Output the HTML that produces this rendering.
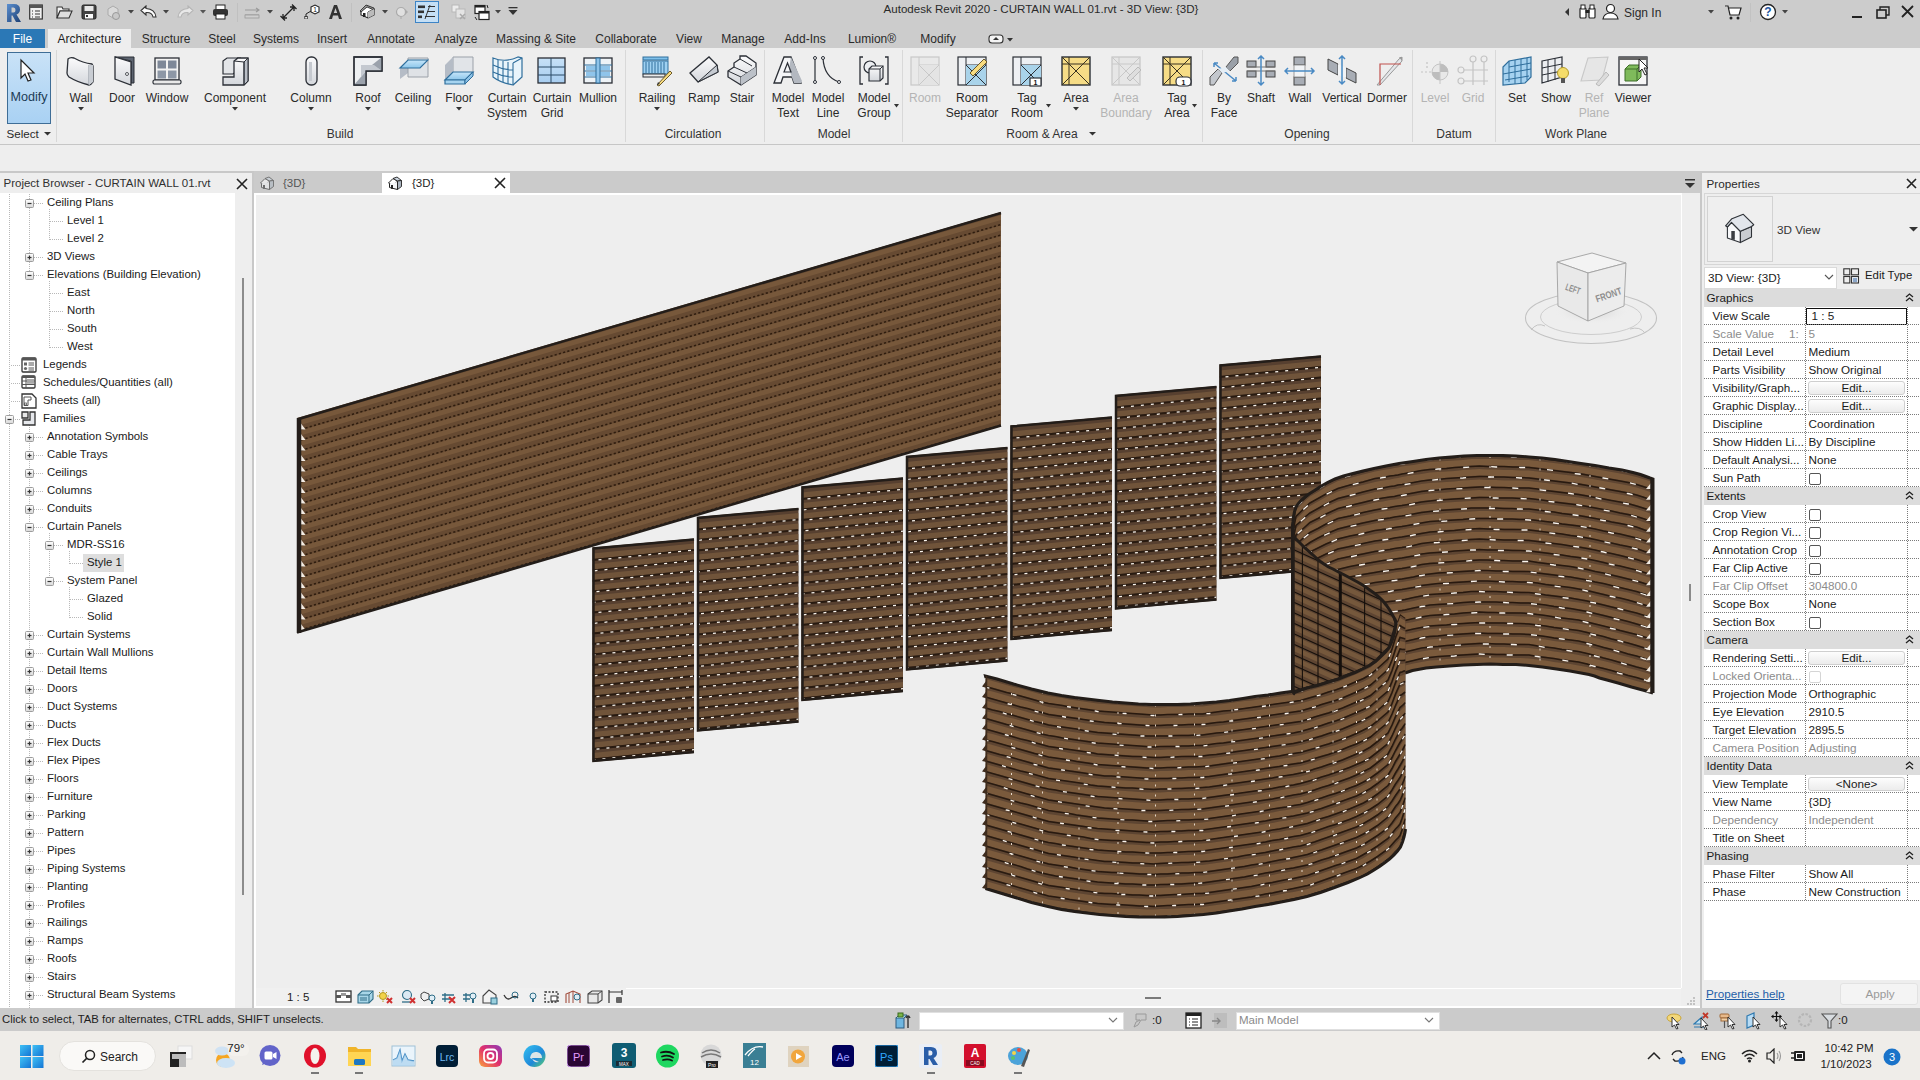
<!DOCTYPE html>
<html><head><meta charset="utf-8"><style>
*{margin:0;padding:0;box-sizing:border-box}
html,body{width:1920px;height:1080px;overflow:hidden;background:#eeeeee;font-family:"Liberation Sans",sans-serif;font-size:12px;color:#1e1e1e}
.a{position:absolute;display:block}
.t{position:absolute;white-space:nowrap}
</style></head><body>
<div class="a" style="left:0px;top:0px;width:1920px;height:28px;background:#cccccc;"></div>
<svg class="a" style="left:4px;top:2px;" width="18" height="20" viewBox="0 0 18 20"><defs><linearGradient id="rg" x1="0" y1="0" x2="1" y2="1"><stop offset="0" stop-color="#5b8fd0"/><stop offset="1" stop-color="#1d3f73"/></linearGradient></defs><path d="M3,2 L10,2 Q16,2 16,7.5 Q16,11 12.5,12.5 L17,20 L12,20 L8.5,13.5 L7.5,13.5 L7.5,20 L3,20 Z M7.5,5.5 L7.5,10.5 L9.5,10.5 Q11.5,10.5 11.5,8 Q11.5,5.5 9.5,5.5Z" fill="url(#rg)"/></svg>
<svg class="a" style="left:29px;top:4px;" width="14" height="16" viewBox="0 0 14 16"><rect x="0.7" y="1" width="12.6" height="14" fill="#f0f0f0" stroke="#333" stroke-width="1.2"/><rect x="0.7" y="1" width="12.6" height="3" fill="#555"/><path d="M3,7 L4,7 M6,7 L11,7 M3,10 L4,10 M6,10 L11,10 M3,13 L4,13 M6,13 L11,13" stroke="#333" stroke-width="1.2"/></svg>
<svg class="a" style="left:56px;top:5px;" width="17" height="14" viewBox="0 0 17 14"><path d="M1,2 L6,2 L7,4 L13,4 L13,6 L4,6 L1,13Z" fill="#f4f4f4" stroke="#333" stroke-width="1.1"/><path d="M1,13 L4,6 L16,6 L13,13Z" fill="#dedede" stroke="#333" stroke-width="1.1"/></svg>
<svg class="a" style="left:81px;top:4px;" width="16" height="16" viewBox="0 0 16 16"><rect x="1" y="1" width="14" height="14" rx="1.5" fill="#444" stroke="#222"/><rect x="3.5" y="2" width="9" height="5" fill="#e8e8e8"/><rect x="4" y="10" width="8" height="4.5" fill="#fafafa"/><rect x="5" y="11" width="2" height="2" fill="#333"/></svg>
<svg class="a" style="left:105px;top:4px;" width="16" height="16" viewBox="0 0 16 16"><path d="M3,5 L8,2 L13,5 L13,11 L8,14 L3,11Z" fill="#dadada" stroke="#aaa"/><circle cx="11" cy="12" r="3.5" fill="#c8c8c8" stroke="#999"/></svg>
<svg class="a" style="left:127.5px;top:10px;" width="6" height="4" viewBox="0 0 6 4"><path d="M0,0 L6,0 L3.0,3.5Z" fill="#444"/></svg>
<svg class="a" style="left:140px;top:5px;" width="17" height="13" viewBox="0 0 17 13"><path d="M6,1 L1,5.5 L6,10 L6,7.5 Q12,7 13,12 L16,12 Q15,4 6,3.5Z" fill="#fbfbfb" stroke="#333" stroke-width="1.1"/></svg>
<svg class="a" style="left:163.0px;top:10px;" width="6" height="4" viewBox="0 0 6 4"><path d="M0,0 L6,0 L3.0,3.5Z" fill="#444"/></svg>
<svg class="a" style="left:177px;top:5px;" width="17" height="13" viewBox="0 0 17 13"><path d="M11,1 L16,5.5 L11,10 L11,7.5 Q5,7 4,12 L1,12 Q2,4 11,3.5Z" fill="#e8e8e8" stroke="#b5b5b5" stroke-width="1.1"/></svg>
<svg class="a" style="left:199.5px;top:10px;" width="6" height="4" viewBox="0 0 6 4"><path d="M0,0 L6,0 L3.0,3.5Z" fill="#555"/></svg>
<svg class="a" style="left:212px;top:4px;" width="17" height="16" viewBox="0 0 17 16"><rect x="4" y="1" width="9" height="5" fill="#fff" stroke="#222"/><rect x="1" y="5" width="15" height="7" rx="2" fill="#333"/><rect x="4" y="10" width="9" height="5" fill="#fff" stroke="#222"/></svg>
<div class="a" style="left:237px;top:3px;width:1px;height:19px;background:#c0c0c0;"></div>
<svg class="a" style="left:244px;top:7px;" width="16" height="12" viewBox="0 0 16 12"><path d="M1,3 L15,3 M12,1 L15,3 L12,5 M1,8 L15,8" stroke="#9a9a9a" stroke-width="1.2" fill="none"/><rect x="1" y="8" width="14" height="3" fill="#cfcfcf" stroke="#9a9a9a" stroke-width="0.8"/></svg>
<svg class="a" style="left:266.5px;top:10px;" width="6" height="4" viewBox="0 0 6 4"><path d="M0,0 L6,0 L3.0,3.5Z" fill="#444"/></svg>
<svg class="a" style="left:280px;top:4px;" width="17" height="17" viewBox="0 0 17 17"><path d="M3,14 L14,3 M3,14 L3,10 M3,14 L7,14 M14,3 L10,3 M14,3 L14,7 M0.5,12 L5,16.5 M12,0.5 L16.5,5" stroke="#222" stroke-width="1.3" fill="none"/></svg>
<svg class="a" style="left:304px;top:4px;" width="16" height="15" viewBox="0 0 16 15"><path d="M7,3 L11,1 L15,3 L15,8 L11,10 L7,8Z" fill="#fff" stroke="#222" stroke-width="1.1"/><text x="11" y="8.3" font-size="6.5" text-anchor="middle" font-family="Liberation Sans" fill="#111">1</text><path d="M7,7 L2,10 L2,13" stroke="#222" fill="none"/><rect x="0.8" y="12.5" width="2.5" height="2.5" fill="#fff" stroke="#222" stroke-width="0.8"/></svg>
<svg class="a" style="left:328px;top:4px;" width="15" height="16" viewBox="0 0 15 16"><path d="M1,15 L6,1 L9,1 L14,15 L11,15 L10,11.5 L5,11.5 L4,15Z M5.8,9 L9.2,9 L7.5,4Z" fill="#333"/></svg>
<div class="a" style="left:351px;top:3px;width:1px;height:19px;background:#c0c0c0;"></div>
<svg class="a" style="left:359px;top:4px;" width="16" height="15" viewBox="0 0 16 15"><path d="M2,7 L8,2 L15,5 L15,11 L9,14 L2,11Z" fill="#fff" stroke="#222" stroke-width="1.1"/><path d="M1,7 L7,1 L15,4 L15,6 L8,3 L2,8Z" fill="#999" stroke="#222" stroke-width="0.8"/><rect x="4" y="9" width="2.5" height="4" fill="#222"/><path d="M9,14 L9,8 L15,5" stroke="#222" fill="none"/><path d="M9,8 L15,5 L15,11 L9,14Z" fill="#bbb"/></svg>
<svg class="a" style="left:382.0px;top:10px;" width="6" height="4" viewBox="0 0 6 4"><path d="M0,0 L6,0 L3.0,3.5Z" fill="#444"/></svg>
<svg class="a" style="left:395px;top:5px;" width="14" height="14" viewBox="0 0 14 14"><circle cx="6" cy="7" r="4.5" fill="#e0e0e0" stroke="#aaa" stroke-width="1.2"/><path d="M10,4 L13,7 L10,10Z" fill="#aaa"/><path d="M6,11.5 L6,14" stroke="#aaa"/></svg>
<div class="a" style="left:415px;top:1px;width:24px;height:22px;background:#c5dff5;border:1px solid #3d84c6"></div>
<svg class="a" style="left:417px;top:4px;" width="20" height="16" viewBox="0 0 20 16"><rect x="1" y="1.5" width="7" height="2.6" fill="#333"/><rect x="1" y="6.5" width="6" height="2.6" fill="#333"/><rect x="1" y="11.5" width="4" height="2.6" fill="#333"/><path d="M8,15 L13,1 M11,2.5 L18,2.5 M10,7.5 L18,7.5 M8,12.5 L18,12.5" stroke="#333" stroke-width="1"/></svg>
<svg class="a" style="left:451px;top:4px;" width="16" height="16" viewBox="0 0 16 16"><rect x="1" y="1" width="7" height="7" fill="#ececec" stroke="#b8b8b8"/><rect x="5" y="5" width="9" height="9" fill="#e4e4e4" stroke="#b8b8b8"/><path d="M9,10 L14,15 M14,10 L9,15" stroke="#aaa" stroke-width="1.5"/></svg>
<svg class="a" style="left:474px;top:4px;" width="17" height="17" viewBox="0 0 17 17"><rect x="1" y="1.5" width="10" height="8" fill="#fff" stroke="#222" stroke-width="1.2"/><rect x="1" y="1.5" width="10" height="2" fill="#222"/><rect x="5" y="7.5" width="10" height="8" fill="#fff" stroke="#222" stroke-width="1.2"/><rect x="5" y="7.5" width="10" height="2" fill="#222"/><path d="M13,1 L14,4 M1,13 L3,16" stroke="#222"/></svg>
<svg class="a" style="left:495.0px;top:10px;" width="6" height="4" viewBox="0 0 6 4"><path d="M0,0 L6,0 L3.0,3.5Z" fill="#444"/></svg>
<svg class="a" style="left:508px;top:6px;" width="10" height="10" viewBox="0 0 10 10"><rect x="0.5" y="1" width="9" height="1.3" fill="#333"/><path d="M0.5,4 L9.5,4 L5,9Z" fill="#333"/></svg>
<div class="t" style="left:841.0px;width:400px;text-align:center;top:4.2px;font-size:11.55px;line-height:11.55px;color:#2a2a2a;">Autodesk Revit 2020 - CURTAIN WALL 01.rvt - 3D View: {3D}</div>
<svg class="a" style="left:1564px;top:7px;" width="6" height="10" viewBox="0 0 6 10"><path d="M5,1 L1,5 L5,9Z" fill="#333"/></svg>
<svg class="a" style="left:1579px;top:4px;" width="17" height="15" viewBox="0 0 17 15"><rect x="1" y="4" width="6" height="10" rx="1" fill="#fff" stroke="#222" stroke-width="1.2"/><rect x="10" y="4" width="6" height="10" rx="1" fill="#fff" stroke="#222" stroke-width="1.2"/><rect x="2" y="1" width="4" height="4" fill="#fff" stroke="#222"/><rect x="11" y="1" width="4" height="4" fill="#fff" stroke="#222"/><rect x="6.5" y="6" width="4" height="3" fill="#222"/></svg>
<svg class="a" style="left:1602px;top:3px;" width="17" height="17" viewBox="0 0 17 17"><circle cx="8.5" cy="5.5" r="4" fill="#fff" stroke="#222" stroke-width="1.2"/><path d="M1,16 Q2,10 8.5,10 Q15,10 16,16Z" fill="#fff" stroke="#222" stroke-width="1.2"/></svg>
<div class="t" style="left:1624.0px;top:6.8px;font-size:12.00px;line-height:12.00px;color:#2a2a2a;">Sign In</div>
<svg class="a" style="left:1708px;top:10px;" width="6" height="4" viewBox="0 0 6 4"><path d="M0,0 L6,0 L3,3.5Z" fill="#444"/></svg>
<svg class="a" style="left:1724px;top:4px;" width="18" height="16" viewBox="0 0 18 16"><path d="M1,2 L4,2 L6,11 L15,11 L17,4 L5,4" fill="#fff" stroke="#222" stroke-width="1.2"/><circle cx="7" cy="14" r="1.5" fill="#222"/><circle cx="14" cy="14" r="1.5" fill="#222"/></svg>
<div class="a" style="left:1750px;top:3px;width:1px;height:19px;background:#c2c2c2;"></div>
<svg class="a" style="left:1759px;top:3px;" width="18" height="18" viewBox="0 0 18 18"><circle cx="9" cy="9" r="7.5" fill="#fff" stroke="#222" stroke-width="1.3"/><text x="9" y="13.3" font-size="12" font-weight="bold" font-family="Liberation Sans" text-anchor="middle" fill="#1e56a0">?</text></svg>
<svg class="a" style="left:1782px;top:10px;" width="6" height="4" viewBox="0 0 6 4"><path d="M0,0 L6,0 L3,3.5Z" fill="#444"/></svg>
<div class="a" style="left:1852px;top:16px;width:10px;height:2px;background:#222;"></div>
<svg class="a" style="left:1876px;top:6px;" width="14" height="13" viewBox="0 0 14 13"><rect x="1" y="4" width="9" height="8" fill="none" stroke="#222" stroke-width="1.6"/><path d="M4,4 L4,1 L13,1 L13,9 L10,9" fill="none" stroke="#222" stroke-width="1.4"/></svg>
<svg class="a" style="left:1901px;top:5px;" width="13" height="13" viewBox="0 0 13 13"><path d="M1,1 L12,12 M12,1 L1,12" stroke="#222" stroke-width="1.8"/></svg>
<div class="a" style="left:0px;top:28px;width:1920px;height:20px;background:#cccccc;"></div>
<div class="a" style="left:0px;top:29px;width:45px;height:20px;background:#2b78b6;"></div>
<div class="t" style="left:-177.5px;width:400px;text-align:center;top:32.8px;font-size:12.00px;line-height:12.00px;color:#ffffff;">File</div>
<div class="a" style="left:48px;top:29px;width:83px;height:20px;background:#eeeeee;"></div>
<div class="t" style="left:-110.5px;width:400px;text-align:center;top:32.8px;font-size:12.00px;line-height:12.00px;color:#1e1e1e;">Architecture</div>
<div class="t" style="left:-34.0px;width:400px;text-align:center;top:32.8px;font-size:12.00px;line-height:12.00px;color:#2a2a2a;">Structure</div>
<div class="t" style="left:22.0px;width:400px;text-align:center;top:32.8px;font-size:12.00px;line-height:12.00px;color:#2a2a2a;">Steel</div>
<div class="t" style="left:76.0px;width:400px;text-align:center;top:32.8px;font-size:12.00px;line-height:12.00px;color:#2a2a2a;">Systems</div>
<div class="t" style="left:132.0px;width:400px;text-align:center;top:32.8px;font-size:12.00px;line-height:12.00px;color:#2a2a2a;">Insert</div>
<div class="t" style="left:191.0px;width:400px;text-align:center;top:32.8px;font-size:12.00px;line-height:12.00px;color:#2a2a2a;">Annotate</div>
<div class="t" style="left:256.0px;width:400px;text-align:center;top:32.8px;font-size:12.00px;line-height:12.00px;color:#2a2a2a;">Analyze</div>
<div class="t" style="left:336.0px;width:400px;text-align:center;top:32.8px;font-size:12.00px;line-height:12.00px;color:#2a2a2a;">Massing &amp; Site</div>
<div class="t" style="left:426.0px;width:400px;text-align:center;top:32.8px;font-size:12.00px;line-height:12.00px;color:#2a2a2a;">Collaborate</div>
<div class="t" style="left:489.0px;width:400px;text-align:center;top:32.8px;font-size:12.00px;line-height:12.00px;color:#2a2a2a;">View</div>
<div class="t" style="left:543.0px;width:400px;text-align:center;top:32.8px;font-size:12.00px;line-height:12.00px;color:#2a2a2a;">Manage</div>
<div class="t" style="left:605.0px;width:400px;text-align:center;top:32.8px;font-size:12.00px;line-height:12.00px;color:#2a2a2a;">Add-Ins</div>
<div class="t" style="left:672.0px;width:400px;text-align:center;top:32.8px;font-size:12.00px;line-height:12.00px;color:#2a2a2a;">Lumion®</div>
<div class="t" style="left:738.0px;width:400px;text-align:center;top:32.8px;font-size:12.00px;line-height:12.00px;color:#2a2a2a;">Modify</div>
<svg class="a" style="left:988px;top:34px;" width="16" height="10" viewBox="0 0 16 10"><rect x="1" y="1" width="14" height="8" rx="3" fill="#f4f4f4" stroke="#333" stroke-width="1.1"/><path d="M5,6 L8,3 L11,6Z" fill="#333"/></svg>
<svg class="a" style="left:1007px;top:38px;" width="6" height="4" viewBox="0 0 6 4"><path d="M0,0 L6,0 L3,3.5Z" fill="#333"/></svg>
<div class="a" style="left:0px;top:48px;width:1920px;height:96px;background:#eeeeee;"></div>
<div class="a" style="left:0px;top:144px;width:1920px;height:1px;background:#c6c6c6;"></div>
<svg class="a" style="left:0px;top:0px;" width="1" height="1" viewBox="0 0 1 1"><defs><linearGradient id="gw" x1="0" y1="0" x2="0" y2="1"><stop offset="0" stop-color="#fbfbfc"/><stop offset="1" stop-color="#d4d7dc"/></linearGradient><linearGradient id="gb" x1="0" y1="0" x2="0" y2="1"><stop offset="0" stop-color="#c7e6fa"/><stop offset="1" stop-color="#8cc6ea"/></linearGradient><linearGradient id="gm" x1="0" y1="0" x2="0" y2="1"><stop offset="0" stop-color="#c7e1f7"/><stop offset="1" stop-color="#a7cdf0"/></linearGradient></defs></svg>
<div class="a" style="left:7px;top:52px;width:44px;height:72px;background:linear-gradient(#c9e2f7,#a9d1f3);border:1px solid #3e6d96"></div>
<svg class="a" style="left:17px;top:58px;" width="20" height="26" viewBox="0 0 20 26"><path d="M4,2 L4,20 L8,16 L11,23 L14,22 L11,15 L17,15 Z" fill="#fff" stroke="#222" stroke-width="1.2"/></svg>
<div class="t" style="left:-171.0px;width:400px;text-align:center;top:91.3px;font-size:12.60px;line-height:12.60px;color:#1d3b56;">Modify</div>
<div class="t" style="left:6.5px;top:128.2px;font-size:11.60px;line-height:11.60px;color:#2a2a2a;">Select</div>
<svg class="a" style="left:43.5px;top:132px;" width="7" height="4" viewBox="0 0 7 4"><path d="M0,0 L7,0 L3.5,3.5Z" fill="#333"/></svg>
<svg class="a" style="left:65px;top:55px;" width="32" height="32" viewBox="0 0 32 32"><path d="M3,4 Q5,2 9,3 Q18,8 27,9 L28,11 L28,27 Q26,30 24,30 Q12,27 4,22 Q2,20 2,18 Z" fill="url(#gw)" stroke="#2b2f36" stroke-width="1.3"/><path d="M24,10 L24,30" stroke="#9aa0a8" stroke-width="1.2"/><path d="M24,10 L28,10 L28,27 L24,30Z" fill="#c9cdd3"/></svg>
<div class="t" style="left:-119.0px;width:400px;text-align:center;top:91.8px;font-size:12.00px;line-height:12.00px;color:#2a2a2a;">Wall</div>
<svg class="a" style="left:78.0px;top:107px;" width="6" height="4" viewBox="0 0 6 4"><path d="M0,0 L6,0 L3.0,3.5Z" fill="#333"/></svg>
<svg class="a" style="left:106px;top:55px;" width="32" height="32" viewBox="0 0 32 32"><path d="M9,2 L28,2 L28,28 L25,28 L25,6 Z" fill="#5d6470" stroke="#2b2f36" stroke-width="1"/><path d="M9,2 L25,7 L25,30 L9,24 Z" fill="url(#gw)" stroke="#2b2f36" stroke-width="1.3"/><circle cx="21" cy="19" r="1.5" fill="#fff" stroke="#2b2f36" stroke-width="0.8"/></svg>
<div class="t" style="left:-78.0px;width:400px;text-align:center;top:91.8px;font-size:12.00px;line-height:12.00px;color:#2a2a2a;">Door</div>
<svg class="a" style="left:151px;top:55px;" width="32" height="32" viewBox="0 0 32 32"><rect x="4" y="3" width="24" height="22" fill="#f2f2f2" stroke="#2b2f36" stroke-width="1.3"/><rect x="6.5" y="5.5" width="8.5" height="8" fill="#7e8898"/><rect x="17" y="5.5" width="8.5" height="8" fill="#7e8898"/><rect x="6.5" y="15.5" width="8.5" height="8" fill="#8d97a6"/><rect x="17" y="15.5" width="8.5" height="8" fill="#8d97a6"/><rect x="2" y="25" width="28" height="4" rx="1.5" fill="#e9e9e9" stroke="#2b2f36" stroke-width="1.2"/></svg>
<div class="t" style="left:-33.0px;width:400px;text-align:center;top:91.8px;font-size:12.00px;line-height:12.00px;color:#2a2a2a;">Window</div>
<svg class="a" style="left:219px;top:55px;" width="32" height="32" viewBox="0 0 32 32"><path d="M4,6 L8,3 L18,3 L18,16 L14,19 L4,19 Z" fill="#e3e5e8" stroke="#2b2f36" stroke-width="1.2"/><path d="M14,19 L18,16 L18,3 L22,3 L22,6 L18,9" fill="none" stroke="#2b2f36" stroke-width="1"/><path d="M4,22 L15,22 L15,6 L19,3 L29,3 L29,26 L25,30 L4,30 Z" fill="url(#gw)" stroke="#2b2f36" stroke-width="1.3"/><path d="M25,7 L29,3 L29,26 L25,30Z" fill="#b9bec6" stroke="#2b2f36" stroke-width="1"/><path d="M15,6 L25,7 L25,30" fill="none" stroke="#2b2f36" stroke-width="1"/></svg>
<div class="t" style="left:35.0px;width:400px;text-align:center;top:91.8px;font-size:12.00px;line-height:12.00px;color:#2a2a2a;">Component</div>
<svg class="a" style="left:232.0px;top:107px;" width="6" height="4" viewBox="0 0 6 4"><path d="M0,0 L6,0 L3.0,3.5Z" fill="#333"/></svg>
<svg class="a" style="left:295px;top:55px;" width="32" height="32" viewBox="0 0 32 32"><rect x="11" y="2" width="11" height="28" rx="5" fill="url(#gw)" stroke="#2b2f36" stroke-width="1.3"/><rect x="14" y="7" width="3" height="19" fill="#c5c9cf"/></svg>
<div class="t" style="left:111.0px;width:400px;text-align:center;top:91.8px;font-size:12.00px;line-height:12.00px;color:#2a2a2a;">Column</div>
<svg class="a" style="left:308.0px;top:107px;" width="6" height="4" viewBox="0 0 6 4"><path d="M0,0 L6,0 L3.0,3.5Z" fill="#333"/></svg>
<svg class="a" style="left:352px;top:55px;" width="32" height="32" viewBox="0 0 32 32"><path d="M2,2 L30,2 L30,16 L14,16 L14,30 L2,30 Z" fill="#eef0f2" stroke="#2b2f36" stroke-width="1.3"/><path d="M2,30 L14,16 L14,30Z" fill="#9ba2ac"/><path d="M30,2 L30,16 L20,10Z" fill="#9ba2ac"/><path d="M14,16 L30,16 L22,10 L9,10 L9,22Z" fill="#c4c9d0"/><path d="M2,2 L30,2 L30,16 L14,16 L14,30 L2,30 Z" fill="none" stroke="#2b2f36" stroke-width="1.3"/></svg>
<div class="t" style="left:168.0px;width:400px;text-align:center;top:91.8px;font-size:12.00px;line-height:12.00px;color:#2a2a2a;">Roof</div>
<svg class="a" style="left:365.0px;top:107px;" width="6" height="4" viewBox="0 0 6 4"><path d="M0,0 L6,0 L3.0,3.5Z" fill="#333"/></svg>
<svg class="a" style="left:397px;top:55px;" width="32" height="32" viewBox="0 0 32 32"><path d="M3,24 L3,13 L11,6 L11,18 Z" fill="#b5bcc6"/><path d="M11,3 L31,3 L31,22 L11,22 Z" fill="#dfe2e6" stroke="#9ba1a9" stroke-width="1"/><path d="M3,13 L11,5 L31,5 L23,13 Z" fill="url(#gb)" stroke="#2f6e9c" stroke-width="1.2"/></svg>
<div class="t" style="left:213.0px;width:400px;text-align:center;top:91.8px;font-size:12.00px;line-height:12.00px;color:#2a2a2a;">Ceiling</div>
<svg class="a" style="left:443px;top:55px;" width="32" height="32" viewBox="0 0 32 32"><path d="M10,2 L30,2 L30,20 L10,20 Z" fill="#e1e4e8" stroke="#9ba1a9" stroke-width="1"/><path d="M2,10 L10,2 L10,20 L2,28Z" fill="#b5bcc6"/><path d="M2,25 L10,17 L30,17 L22,25 Z" fill="url(#gb)" stroke="#2f6e9c" stroke-width="1.2"/><path d="M2,25 L22,25 L22,29 L2,29Z" fill="#a6d4f0" stroke="#2f6e9c" stroke-width="1.2"/><path d="M22,25 L30,17 L30,21 L22,29Z" fill="#8cc2e6" stroke="#2f6e9c" stroke-width="1"/></svg>
<div class="t" style="left:259.0px;width:400px;text-align:center;top:91.8px;font-size:12.00px;line-height:12.00px;color:#2a2a2a;">Floor</div>
<svg class="a" style="left:456.0px;top:107px;" width="6" height="4" viewBox="0 0 6 4"><path d="M0,0 L6,0 L3.0,3.5Z" fill="#333"/></svg>
<svg class="a" style="left:491px;top:55px;" width="32" height="32" viewBox="0 0 32 32"><path d="M2,3 Q14,8 27,2 L31,3 L31,22 L22,30 Q10,28 2,22 Z" fill="#e8f4fb" stroke="#2f6e9c" stroke-width="1.2"/><path d="M22,8 L22,30 M31,3 L22,8 M2,10 Q12,15 22,15 M2,17 Q12,22 22,22 M7,5 L7,25 M12,6 L12,27 M17,7 L17,29" stroke="#2f6e9c" stroke-width="1.1" fill="none"/></svg>
<div class="t" style="left:307.0px;width:400px;text-align:center;top:91.8px;font-size:12.00px;line-height:12.00px;color:#2a2a2a;">Curtain</div>
<div class="t" style="left:307.0px;width:400px;text-align:center;top:106.8px;font-size:12.00px;line-height:12.00px;color:#2a2a2a;">System</div>
<svg class="a" style="left:536px;top:55px;" width="32" height="32" viewBox="0 0 32 32"><rect x="2" y="3" width="27" height="25" fill="url(#gm)" stroke="#2b2f36" stroke-width="1.3"/><path d="M15,3 L15,28 M2,12 L29,12 M2,20 L29,20" stroke="#2b4b66" stroke-width="1"/></svg>
<div class="t" style="left:352.0px;width:400px;text-align:center;top:91.8px;font-size:12.00px;line-height:12.00px;color:#2a2a2a;">Curtain</div>
<div class="t" style="left:352.0px;width:400px;text-align:center;top:106.8px;font-size:12.00px;line-height:12.00px;color:#2a2a2a;">Grid</div>
<svg class="a" style="left:582px;top:55px;" width="32" height="32" viewBox="0 0 32 32"><rect x="2" y="3" width="28" height="25" fill="#eef3f7" stroke="#2b2f36" stroke-width="1.3"/><path d="M2,10 L30,10 M2,16 L30,16 M2,22 L30,22" stroke="#2f6e9c" stroke-width="1.1"/><rect x="4" y="11" width="24" height="4" fill="#8fc4ea"/><rect x="4" y="17" width="24" height="4" fill="#8fc4ea"/><rect x="14" y="3" width="4" height="25" fill="#8fc4ea" stroke="#2f6e9c" stroke-width="1"/></svg>
<div class="t" style="left:398.0px;width:400px;text-align:center;top:91.8px;font-size:12.00px;line-height:12.00px;color:#2a2a2a;">Mullion</div>
<svg class="a" style="left:641px;top:55px;" width="32" height="32" viewBox="0 0 32 32"><rect x="2" y="2" width="25" height="3" fill="#7fc0ea" stroke="#2f6e9c" stroke-width="1"/><rect x="2" y="6" width="25" height="13" fill="#9fd1f2" stroke="#2f6e9c" stroke-width="1"/><path d="M5,7 L5,18 M8,7 L8,18 M11,7 L11,18 M14,7 L14,18 M17,7 L17,18 M20,7 L20,18 M23,7 L23,18" stroke="#2f6e9c" stroke-width="1"/><rect x="2" y="19" width="22" height="3" fill="#eaeaea" stroke="#2b2f36" stroke-width="1"/><path d="M16,30 L29,16 L31,18 L18,31 Z" fill="#f7db80" stroke="#6b5a2a" stroke-width="1"/><path d="M16,30 L17,27 L19,29Z" fill="#333"/></svg>
<div class="t" style="left:457.0px;width:400px;text-align:center;top:91.8px;font-size:12.00px;line-height:12.00px;color:#2a2a2a;">Railing</div>
<svg class="a" style="left:654.0px;top:107px;" width="6" height="4" viewBox="0 0 6 4"><path d="M0,0 L6,0 L3.0,3.5Z" fill="#333"/></svg>
<svg class="a" style="left:688px;top:55px;" width="32" height="32" viewBox="0 0 32 32"><path d="M2,18 L21,2 L29,10 L30,17 L10,27 Z" fill="url(#gw)" stroke="#2b2f36" stroke-width="1.3"/><path d="M10,27 L30,17 L29,10 Z" fill="#c5cad1" stroke="#2b2f36" stroke-width="1"/></svg>
<div class="t" style="left:504.0px;width:400px;text-align:center;top:91.8px;font-size:12.00px;line-height:12.00px;color:#2a2a2a;">Ramp</div>
<svg class="a" style="left:726px;top:55px;" width="32" height="32" viewBox="0 0 32 32"><path d="M2,16 L8,12 L8,8 L14,4 L14,1 L20,1 L30,8 L30,20 L15,30 L2,22 Z" fill="url(#gw)" stroke="#2b2f36" stroke-width="1.3"/><path d="M2,16 L15,22 L15,30 M8,12 L21,18 M14,4 L26,11 M15,22 L30,12" stroke="#2b2f36" stroke-width="1" fill="none"/><path d="M15,22 L30,12 L30,20 L15,30Z" fill="#bcc1c8"/></svg>
<div class="t" style="left:542.0px;width:400px;text-align:center;top:91.8px;font-size:12.00px;line-height:12.00px;color:#2a2a2a;">Stair</div>
<svg class="a" style="left:772px;top:55px;" width="32" height="32" viewBox="0 0 32 32"><path d="M2,28 L12,2 L19,2 L29,28 L22,28 L20,22 L11,22 L9,28 Z" fill="#f4f5f7" stroke="#2b2f36" stroke-width="1.3"/><path d="M19,2 L30,26 L29,28 L22,28 L17,14Z" fill="#b3b8c0"/><path d="M12,17 L15.5,8 L19,17Z" fill="none" stroke="#2b2f36" stroke-width="1.2"/></svg>
<div class="t" style="left:588.0px;width:400px;text-align:center;top:91.8px;font-size:12.00px;line-height:12.00px;color:#2a2a2a;">Model</div>
<div class="t" style="left:588.0px;width:400px;text-align:center;top:106.8px;font-size:12.00px;line-height:12.00px;color:#2a2a2a;">Text</div>
<svg class="a" style="left:812px;top:55px;" width="32" height="32" viewBox="0 0 32 32"><path d="M3,3 L3,27" stroke="#2b2f36" stroke-width="1.2"/><circle cx="3" cy="3" r="1.5" fill="#fff" stroke="#2b2f36"/><circle cx="3" cy="27" r="1.5" fill="#fff" stroke="#2b2f36"/><path d="M11,3 Q12,22 27,27" fill="none" stroke="#2b2f36" stroke-width="1.2"/><circle cx="11" cy="3" r="1.5" fill="#fff" stroke="#2b2f36"/><circle cx="27" cy="27" r="1.5" fill="#fff" stroke="#2b2f36"/></svg>
<div class="t" style="left:628.0px;width:400px;text-align:center;top:91.8px;font-size:12.00px;line-height:12.00px;color:#2a2a2a;">Model</div>
<div class="t" style="left:628.0px;width:400px;text-align:center;top:106.8px;font-size:12.00px;line-height:12.00px;color:#2a2a2a;">Line</div>
<svg class="a" style="left:858px;top:55px;" width="32" height="32" viewBox="0 0 32 32"><path d="M5,2 L2,2 L2,29 L5,29 M27,2 L30,2 L30,29 L27,29" fill="none" stroke="#2b2f36" stroke-width="1.3"/><circle cx="12" cy="12" r="6" fill="#eceef1" stroke="#2b2f36" stroke-width="1.2"/><path d="M11,14 L14,11 L25,11 L25,23 L22,26 L11,26Z" fill="url(#gw)" stroke="#2b2f36" stroke-width="1.2"/><path d="M22,14 L25,11 M11,14 L22,14 L22,26" fill="none" stroke="#2b2f36" stroke-width="1"/></svg>
<div class="t" style="left:674.0px;width:400px;text-align:center;top:91.8px;font-size:12.00px;line-height:12.00px;color:#2a2a2a;">Model</div>
<div class="t" style="left:674.0px;width:400px;text-align:center;top:106.8px;font-size:12.00px;line-height:12.00px;color:#2a2a2a;">Group</div>
<svg class="a" style="left:909px;top:55px;" width="32" height="32" viewBox="0 0 32 32"><rect x="2" y="2" width="28" height="28" fill="#e9e9e9" stroke="#c8c8c8" stroke-width="1.2"/><path d="M10,2 L10,30 M10,10 L30,10" stroke="#c8c8c8" stroke-width="1"/><rect x="10" y="10" width="20" height="20" fill="#e4e4e4"/><path d="M10,10 L30,30 M30,10 L10,30" stroke="#c8c8c8" stroke-width="1"/></svg>
<div class="t" style="left:725.0px;width:400px;text-align:center;top:91.8px;font-size:12.00px;line-height:12.00px;color:#b4b4b4;">Room</div>
<svg class="a" style="left:956px;top:55px;" width="32" height="32" viewBox="0 0 32 32"><rect x="2" y="2" width="28" height="28" fill="#eef0f3" stroke="#2b2f36" stroke-width="1.2"/><path d="M10,2 L10,30 M10,10 L30,10" stroke="#2b2f36" stroke-width="1"/><rect x="10" y="10" width="20" height="20" fill="#a9d3ea"/><path d="M10,10 L30,30 M30,10 L10,30" stroke="#2b2f36" stroke-width="1"/><path d="M14,18 L28,4 L31,7 L17,21Z" fill="#f7db80" stroke="#6b5a2a" stroke-width="1"/></svg>
<div class="t" style="left:772.0px;width:400px;text-align:center;top:91.8px;font-size:12.00px;line-height:12.00px;color:#2a2a2a;">Room</div>
<div class="t" style="left:772.0px;width:400px;text-align:center;top:106.8px;font-size:12.00px;line-height:12.00px;color:#2a2a2a;">Separator</div>
<svg class="a" style="left:1011px;top:55px;" width="32" height="32" viewBox="0 0 32 32"><rect x="2" y="2" width="28" height="28" fill="#eef0f3" stroke="#2b2f36" stroke-width="1.2"/><path d="M10,2 L10,30 M10,10 L30,10" stroke="#2b2f36" stroke-width="1"/><rect x="10" y="10" width="20" height="20" fill="#a9d3ea"/><path d="M10,10 L30,30 M30,10 L10,30" stroke="#2b2f36" stroke-width="1"/><rect x="19" y="23" width="11" height="8" fill="#fff" stroke="#2b2f36" stroke-width="1.2"/><text x="24.5" y="30" font-size="7" font-family="Liberation Sans" text-anchor="middle" font-weight="bold" fill="#111">1</text></svg>
<div class="t" style="left:827.0px;width:400px;text-align:center;top:91.8px;font-size:12.00px;line-height:12.00px;color:#2a2a2a;">Tag</div>
<div class="t" style="left:827.0px;width:400px;text-align:center;top:106.8px;font-size:12.00px;line-height:12.00px;color:#2a2a2a;">Room</div>
<svg class="a" style="left:1060px;top:55px;" width="32" height="32" viewBox="0 0 32 32"><rect x="2" y="2" width="28" height="28" fill="#f6dc86" stroke="#2b2f36" stroke-width="1.4"/><path d="M2,2 L30,30 M30,2 L2,30 M9,2 L9,30 M2,9 L30,9" stroke="#3a3320" stroke-width="1"/></svg>
<div class="t" style="left:876.0px;width:400px;text-align:center;top:91.8px;font-size:12.00px;line-height:12.00px;color:#2a2a2a;">Area</div>
<svg class="a" style="left:1073.0px;top:107px;" width="6" height="4" viewBox="0 0 6 4"><path d="M0,0 L6,0 L3.0,3.5Z" fill="#333"/></svg>
<svg class="a" style="left:1110px;top:55px;" width="32" height="32" viewBox="0 0 32 32"><rect x="2" y="2" width="28" height="28" fill="#e6e6e6" stroke="#c5c5c5" stroke-width="1.2"/><path d="M2,2 L30,30 M30,2 L2,30 M9,2 L9,30 M2,9 L30,9" stroke="#c8c8c8" stroke-width="1"/><path d="M17,23 L28,12 L31,15 L20,26Z" fill="#dedede" stroke="#bbb"/></svg>
<div class="t" style="left:926.0px;width:400px;text-align:center;top:91.8px;font-size:12.00px;line-height:12.00px;color:#b4b4b4;">Area</div>
<div class="t" style="left:926.0px;width:400px;text-align:center;top:106.8px;font-size:12.00px;line-height:12.00px;color:#b4b4b4;">Boundary</div>
<svg class="a" style="left:1161px;top:55px;" width="32" height="32" viewBox="0 0 32 32"><rect x="2" y="2" width="28" height="28" fill="#f6dc86" stroke="#2b2f36" stroke-width="1.4"/><path d="M2,2 L30,30 M30,2 L2,30 M9,2 L9,30 M2,9 L30,9" stroke="#3a3320" stroke-width="1"/><rect x="15" y="22" width="15" height="9" rx="4" fill="#fff" stroke="#2b2f36" stroke-width="1.2"/><text x="22.5" y="29.5" font-size="7" font-family="Liberation Sans" text-anchor="middle" font-weight="bold" fill="#111">1</text></svg>
<div class="t" style="left:977.0px;width:400px;text-align:center;top:91.8px;font-size:12.00px;line-height:12.00px;color:#2a2a2a;">Tag</div>
<div class="t" style="left:977.0px;width:400px;text-align:center;top:106.8px;font-size:12.00px;line-height:12.00px;color:#2a2a2a;">Area</div>
<svg class="a" style="left:1208px;top:55px;" width="32" height="32" viewBox="0 0 32 32"><path d="M2,22 L10,14 L14,18 L6,30 L2,30Z" fill="#c3c7cd" stroke="#555" stroke-width="1"/><path d="M18,12 L26,2 L30,2 L30,8 L22,16Z" fill="#9aa0a8" stroke="#555" stroke-width="1"/><path d="M6,8 L28,26 M6,8 L6,12 M6,8 L10,8 M28,26 L24,26 M28,26 L28,22" stroke="#4a8ac4" stroke-width="1.5" fill="none"/><path d="M10,14 L18,12 L22,16 L14,18Z" fill="#e5eef6"/></svg>
<div class="t" style="left:1024.0px;width:400px;text-align:center;top:91.8px;font-size:12.00px;line-height:12.00px;color:#2a2a2a;">By</div>
<div class="t" style="left:1024.0px;width:400px;text-align:center;top:106.8px;font-size:12.00px;line-height:12.00px;color:#2a2a2a;">Face</div>
<svg class="a" style="left:1245px;top:55px;" width="32" height="32" viewBox="0 0 32 32"><rect x="2" y="6" width="9" height="6" fill="#a8adb5" stroke="#444"/><rect x="21" y="6" width="9" height="6" fill="#a8adb5" stroke="#444"/><rect x="2" y="16" width="9" height="6" fill="#a8adb5" stroke="#444"/><rect x="21" y="16" width="9" height="6" fill="#a8adb5" stroke="#444"/><path d="M2,12 L30,12 M2,16 L30,16" stroke="#777" stroke-width="1"/><path d="M16,1 L16,30 M13,4 L16,1 L19,4 M13,27 L16,30 L19,27" stroke="#4a8ac4" stroke-width="1.5" fill="none"/></svg>
<div class="t" style="left:1061.0px;width:400px;text-align:center;top:91.8px;font-size:12.00px;line-height:12.00px;color:#2a2a2a;">Shaft</div>
<svg class="a" style="left:1284px;top:55px;" width="32" height="32" viewBox="0 0 32 32"><rect x="10" y="2" width="11" height="8" fill="#a8adb5" stroke="#444"/><rect x="10" y="22" width="11" height="8" fill="#a8adb5" stroke="#444"/><rect x="10" y="10" width="11" height="12" fill="#f2f4f6" stroke="#888" stroke-width="0.8"/><path d="M1,16 L30,16 M4,13 L1,16 L4,19 M27,13 L30,16 L27,19" stroke="#4a8ac4" stroke-width="1.5" fill="none"/></svg>
<div class="t" style="left:1100.0px;width:400px;text-align:center;top:91.8px;font-size:12.00px;line-height:12.00px;color:#2a2a2a;">Wall</div>
<svg class="a" style="left:1326px;top:55px;" width="32" height="32" viewBox="0 0 32 32"><path d="M2,4 L12,9 L12,20 L2,15Z" fill="#a8adb5" stroke="#444"/><path d="M20,13 L30,18 L30,28 L20,23Z" fill="#a8adb5" stroke="#444"/><path d="M12,9 L20,13 L20,23 L12,20Z" fill="#f2f4f6"/><path d="M16,1 L16,29 M13,4 L16,1 L19,4 M13,26 L16,29 L19,26" stroke="#4a8ac4" stroke-width="1.5" fill="none"/></svg>
<div class="t" style="left:1142.0px;width:400px;text-align:center;top:91.8px;font-size:12.00px;line-height:12.00px;color:#2a2a2a;">Vertical</div>
<svg class="a" style="left:1371px;top:55px;" width="32" height="32" viewBox="0 0 32 32"><path d="M6,30 L28,4 L31,2 L31,6 L9,30Z" fill="#e4e6e9" stroke="#999" stroke-width="1"/><path d="M9,30 L9,9 L30,9" stroke="#c0504d" stroke-width="1.2" fill="none"/><path d="M28,2 L31,2 L31,6Z" fill="#999"/></svg>
<div class="t" style="left:1187.0px;width:400px;text-align:center;top:91.8px;font-size:12.00px;line-height:12.00px;color:#2a2a2a;">Dormer</div>
<svg class="a" style="left:1419px;top:55px;" width="32" height="32" viewBox="0 0 32 32"><path d="M2,17 L12,17 M8,7 L8,14" stroke="#c4c4c4" stroke-width="1.2" stroke-dasharray="2,2"/><circle cx="21" cy="17" r="8" fill="#e8e8e8" stroke="#c4c4c4"/><path d="M21,9 L21,17 L29,17 A8,8 0 0 0 21,9Z M21,17 L13,17 A8,8 0 0 0 21,25Z" fill="#bdbdbd"/><path d="M21,6 L21,29" stroke="#c4c4c4"/></svg>
<div class="t" style="left:1235.0px;width:400px;text-align:center;top:91.8px;font-size:12.00px;line-height:12.00px;color:#b4b4b4;">Level</div>
<svg class="a" style="left:1457px;top:55px;" width="32" height="32" viewBox="0 0 32 32"><circle cx="16" cy="4" r="3" fill="#eee" stroke="#c4c4c4" stroke-width="1.2"/><circle cx="27" cy="4" r="3" fill="#eee" stroke="#c4c4c4" stroke-width="1.2"/><circle cx="4" cy="15" r="3" fill="#eee" stroke="#c4c4c4" stroke-width="1.2"/><circle cx="4" cy="26" r="3" fill="#eee" stroke="#c4c4c4" stroke-width="1.2"/><path d="M16,7 L16,30 M27,7 L27,30 M7,15 L31,15 M7,26 L31,26" stroke="#c4c4c4" stroke-width="1.2"/></svg>
<div class="t" style="left:1273.0px;width:400px;text-align:center;top:91.8px;font-size:12.00px;line-height:12.00px;color:#b4b4b4;">Grid</div>
<svg class="a" style="left:1501px;top:55px;" width="32" height="32" viewBox="0 0 32 32"><path d="M2,12 L8,6 L30,2 L30,22 L24,28 L2,30Z" fill="#a6d2f0" stroke="#2f6e9c" stroke-width="1.2"/><path d="M8,6 L8,27 M14,5 L14,29 M20,4 L20,29 M26,3 L26,25 M2,19 L30,14 M4,25 L28,21 M8,12 L30,8" stroke="#2f6e9c" stroke-width="1" fill="none"/></svg>
<div class="t" style="left:1317.0px;width:400px;text-align:center;top:91.8px;font-size:12.00px;line-height:12.00px;color:#2a2a2a;">Set</div>
<svg class="a" style="left:1540px;top:55px;" width="32" height="32" viewBox="0 0 32 32"><path d="M2,6 L22,2 L22,22 L2,28Z" fill="#eceef1" stroke="#2b2f36" stroke-width="1.2"/><path d="M8,5 L8,27 M15,3.5 L15,25 M2,13 L22,9 M2,20 L22,16" stroke="#2b2f36" stroke-width="1"/><circle cx="23" cy="18" r="5.5" fill="#f5dc6a" stroke="#b29a2a" stroke-width="1"/><rect x="21" y="23" width="4" height="5" fill="#555"/></svg>
<div class="t" style="left:1356.0px;width:400px;text-align:center;top:91.8px;font-size:12.00px;line-height:12.00px;color:#2a2a2a;">Show</div>
<svg class="a" style="left:1578px;top:55px;" width="32" height="32" viewBox="0 0 32 32"><path d="M3,26 L10,3 L30,2 L24,25Z" fill="#e6e6e6" stroke="#c8c8c8" stroke-width="1.1"/><path d="M18,29 L28,17 L31,20 L21,31Z" fill="#dcdcdc" stroke="#bbb"/></svg>
<div class="t" style="left:1394.0px;width:400px;text-align:center;top:91.8px;font-size:12.00px;line-height:12.00px;color:#b4b4b4;">Ref</div>
<div class="t" style="left:1394.0px;width:400px;text-align:center;top:106.8px;font-size:12.00px;line-height:12.00px;color:#b4b4b4;">Plane</div>
<svg class="a" style="left:1617px;top:55px;" width="32" height="32" viewBox="0 0 32 32"><rect x="2" y="2" width="28" height="28" fill="#f6f6f6" stroke="#2b2f36" stroke-width="1.3"/><rect x="2" y="2" width="28" height="3" fill="#666"/><path d="M8,14 L12,10 L24,10 L24,22 L20,26 L8,26Z" fill="#7fba5b" stroke="#3f6f2b" stroke-width="1"/><path d="M8,14 L20,14 L20,26 M20,14 L24,10" stroke="#3f6f2b" fill="none"/><path d="M22,4 L22,17 L25,14 L28,20 L30,19 L27,13 L31,13 Z" fill="#fff" stroke="#222" stroke-width="1"/></svg>
<div class="t" style="left:1433.0px;width:400px;text-align:center;top:91.8px;font-size:12.00px;line-height:12.00px;color:#2a2a2a;">Viewer</div>
<svg class="a" style="left:893.5px;top:104px;" width="5" height="4" viewBox="0 0 5 4"><path d="M0,0 L5,0 L2.5,3.5Z" fill="#333"/></svg>
<svg class="a" style="left:1045.5px;top:104px;" width="5" height="4" viewBox="0 0 5 4"><path d="M0,0 L5,0 L2.5,3.5Z" fill="#333"/></svg>
<svg class="a" style="left:1191.5px;top:104px;" width="5" height="4" viewBox="0 0 5 4"><path d="M0,0 L5,0 L2.5,3.5Z" fill="#333"/></svg>
<div class="t" style="left:140.0px;width:400px;text-align:center;top:127.8px;font-size:12.00px;line-height:12.00px;color:#333;">Build</div>
<div class="t" style="left:493.0px;width:400px;text-align:center;top:127.8px;font-size:12.00px;line-height:12.00px;color:#333;">Circulation</div>
<div class="t" style="left:634.0px;width:400px;text-align:center;top:127.8px;font-size:12.00px;line-height:12.00px;color:#333;">Model</div>
<div class="t" style="left:842.0px;width:400px;text-align:center;top:127.8px;font-size:12.00px;line-height:12.00px;color:#333;">Room &amp; Area</div>
<div class="t" style="left:1107.0px;width:400px;text-align:center;top:127.8px;font-size:12.00px;line-height:12.00px;color:#333;">Opening</div>
<div class="t" style="left:1254.0px;width:400px;text-align:center;top:127.8px;font-size:12.00px;line-height:12.00px;color:#333;">Datum</div>
<div class="t" style="left:1376.0px;width:400px;text-align:center;top:127.8px;font-size:12.00px;line-height:12.00px;color:#333;">Work Plane</div>
<svg class="a" style="left:1088.5px;top:132px;" width="7" height="4" viewBox="0 0 7 4"><path d="M0,0 L7,0 L3.5,3.5Z" fill="#333"/></svg>
<div class="a" style="left:56px;top:50px;width:1px;height:92px;background:#d8d8d8;"></div>
<div class="a" style="left:625px;top:50px;width:1px;height:92px;background:#d8d8d8;"></div>
<div class="a" style="left:764px;top:50px;width:1px;height:92px;background:#d8d8d8;"></div>
<div class="a" style="left:902px;top:50px;width:1px;height:92px;background:#d8d8d8;"></div>
<div class="a" style="left:1202px;top:50px;width:1px;height:92px;background:#d8d8d8;"></div>
<div class="a" style="left:1412px;top:50px;width:1px;height:92px;background:#d8d8d8;"></div>
<div class="a" style="left:1495px;top:50px;width:1px;height:92px;background:#d8d8d8;"></div>
<div class="a" style="left:0px;top:145px;width:1920px;height:26px;background:#eeeeee;"></div>
<div class="a" style="left:0px;top:171px;width:252px;height:2px;background:#c8c8c8;"></div>
<div class="a" style="left:0px;top:173px;width:252px;height:20px;background:#eeeeee;"></div>
<div class="t" style="left:3.5px;top:178.3px;font-size:11.50px;line-height:11.50px;color:#303030;">Project Browser - CURTAIN WALL 01.rvt</div>
<svg class="a" style="left:236px;top:177.5px;" width="12" height="12" viewBox="0 0 12 12"><path d="M1,1 L11,11 M11,1 L1,11" stroke="#222" stroke-width="1.6" fill="none"/></svg>
<div class="a" style="left:252px;top:171px;width:1448px;height:22px;background:#cbcbcb;"></div>
<div class="a" style="left:382px;top:173px;width:128px;height:20px;background:#ffffff;"></div>
<svg class="a" style="left:259px;top:176px;" width="16" height="15" viewBox="0 0 16 15"><g opacity="0.55"><path d="M1.5,7 L6,2.5 L10.5,5 L6,9.5Z" fill="#fff" stroke="#222" stroke-width="1"/><path d="M6,2.5 L10,1 L14.5,4.5 L10.5,5Z" fill="#c9d3de" stroke="#222" stroke-width="0.9"/><path d="M10.5,5 L14.5,4.5 L14.5,10.5 L10.5,13.5Z" fill="#aab4bf" stroke="#222" stroke-width="0.9"/><path d="M2.5,7.5 L2.5,11.5 L10.5,13.5 L10.5,6" fill="#f4f6f8" stroke="#222" stroke-width="1"/><rect x="4" y="9" width="2" height="3.8" fill="#222"/></g></svg>
<div class="t" style="left:283.0px;top:178.3px;font-size:11.50px;line-height:11.50px;color:#555555;">{3D}</div>
<svg class="a" style="left:387px;top:176px;" width="16" height="15" viewBox="0 0 16 15"><g opacity="1"><path d="M1.5,7 L6,2.5 L10.5,5 L6,9.5Z" fill="#fff" stroke="#222" stroke-width="1"/><path d="M6,2.5 L10,1 L14.5,4.5 L10.5,5Z" fill="#c9d3de" stroke="#222" stroke-width="0.9"/><path d="M10.5,5 L14.5,4.5 L14.5,10.5 L10.5,13.5Z" fill="#aab4bf" stroke="#222" stroke-width="0.9"/><path d="M2.5,7.5 L2.5,11.5 L10.5,13.5 L10.5,6" fill="#f4f6f8" stroke="#222" stroke-width="1"/><rect x="4" y="9" width="2" height="3.8" fill="#222"/></g></svg>
<div class="t" style="left:412.0px;top:178.3px;font-size:11.50px;line-height:11.50px;color:#1e1e1e;">{3D}</div>
<svg class="a" style="left:494px;top:177px;" width="12" height="12" viewBox="0 0 12 12"><path d="M1,1 L11,11 M11,1 L1,11" stroke="#222" stroke-width="1.6" fill="none"/></svg>
<svg class="a" style="left:1684px;top:177px;" width="12" height="12" viewBox="0 0 12 12"><rect x="1" y="2" width="10" height="1.5" fill="#333"/><path d="M1,6 L11,6 L6,11Z" fill="#333"/></svg>
<div class="a" style="left:0px;top:193px;width:235px;height:815px;background:#ffffff;"></div>
<div class="a" style="left:235px;top:193px;width:17px;height:815px;background:#eeeeee;"></div>
<div class="a" style="left:242px;top:278px;width:2px;height:617px;background:#8c8c8c;"></div>
<svg class="a" style="left:0px;top:0px;" width="1" height="1" viewBox="0 0 1 1"><defs><linearGradient id="bx" x1="0" y1="0" x2="0" y2="1"><stop offset="0" stop-color="#ffffff"/><stop offset="1" stop-color="#d8d8d8"/></linearGradient></defs></svg>
<div class="a" style="left:9px;top:194px;width:1px;height:814px;background:repeating-linear-gradient(180deg,#b8b8b8 0 1px,transparent 1px 2px)"></div>
<div class="a" style="left:29px;top:194px;width:1px;height:82px;background:repeating-linear-gradient(180deg,#b8b8b8 0 1px,transparent 1px 2px)"></div>
<div class="a" style="left:49px;top:209px;width:1px;height:31px;background:repeating-linear-gradient(180deg,#b8b8b8 0 1px,transparent 1px 2px)"></div>
<div class="a" style="left:49px;top:281px;width:1px;height:67px;background:repeating-linear-gradient(180deg,#b8b8b8 0 1px,transparent 1px 2px)"></div>
<div class="a" style="left:29px;top:425px;width:1px;height:583px;background:repeating-linear-gradient(180deg,#b8b8b8 0 1px,transparent 1px 2px)"></div>
<div class="a" style="left:49px;top:533px;width:1px;height:49px;background:repeating-linear-gradient(180deg,#b8b8b8 0 1px,transparent 1px 2px)"></div>
<div class="a" style="left:69px;top:551px;width:1px;height:13px;background:repeating-linear-gradient(180deg,#b8b8b8 0 1px,transparent 1px 2px)"></div>
<div class="a" style="left:69px;top:587px;width:1px;height:31px;background:repeating-linear-gradient(180deg,#b8b8b8 0 1px,transparent 1px 2px)"></div>
<div class="a" style="left:34px;top:203px;width:10px;height:1px;background:repeating-linear-gradient(90deg,#b8b8b8 0 1px,transparent 1px 2px)"></div>
<div class="t" style="left:47.0px;top:196.5px;font-size:11.40px;line-height:11.40px;color:#1a1a1a;">Ceiling Plans</div>
<svg class="a" style="left:25.0px;top:199.0px;" width="9" height="9" viewBox="0 0 9 9"><rect x="0.5" y="0.5" width="8" height="8" rx="1" fill="url(#bx)" stroke="#9c9c9c" stroke-width="1"/><path d="M2.5,4.5 L6.5,4.5" stroke="#333" stroke-width="1.2"/></svg>
<div class="a" style="left:50px;top:221px;width:14px;height:1px;background:repeating-linear-gradient(90deg,#b8b8b8 0 1px,transparent 1px 2px)"></div>
<div class="t" style="left:67.0px;top:214.5px;font-size:11.40px;line-height:11.40px;color:#1a1a1a;">Level 1</div>
<div class="a" style="left:50px;top:239px;width:14px;height:1px;background:repeating-linear-gradient(90deg,#b8b8b8 0 1px,transparent 1px 2px)"></div>
<div class="t" style="left:67.0px;top:232.5px;font-size:11.40px;line-height:11.40px;color:#1a1a1a;">Level 2</div>
<div class="a" style="left:34px;top:257px;width:10px;height:1px;background:repeating-linear-gradient(90deg,#b8b8b8 0 1px,transparent 1px 2px)"></div>
<div class="t" style="left:47.0px;top:250.5px;font-size:11.40px;line-height:11.40px;color:#1a1a1a;">3D Views</div>
<svg class="a" style="left:25.0px;top:253.0px;" width="9" height="9" viewBox="0 0 9 9"><rect x="0.5" y="0.5" width="8" height="8" rx="1" fill="url(#bx)" stroke="#9c9c9c" stroke-width="1"/><path d="M2.5,4.5 L6.5,4.5" stroke="#333" stroke-width="1.2"/><path d="M4.5,2.5 L4.5,6.5" stroke="#333" stroke-width="1.2"/></svg>
<div class="a" style="left:34px;top:275px;width:10px;height:1px;background:repeating-linear-gradient(90deg,#b8b8b8 0 1px,transparent 1px 2px)"></div>
<div class="t" style="left:47.0px;top:268.5px;font-size:11.40px;line-height:11.40px;color:#1a1a1a;">Elevations (Building Elevation)</div>
<svg class="a" style="left:25.0px;top:271.0px;" width="9" height="9" viewBox="0 0 9 9"><rect x="0.5" y="0.5" width="8" height="8" rx="1" fill="url(#bx)" stroke="#9c9c9c" stroke-width="1"/><path d="M2.5,4.5 L6.5,4.5" stroke="#333" stroke-width="1.2"/></svg>
<div class="a" style="left:50px;top:293px;width:14px;height:1px;background:repeating-linear-gradient(90deg,#b8b8b8 0 1px,transparent 1px 2px)"></div>
<div class="t" style="left:67.0px;top:286.5px;font-size:11.40px;line-height:11.40px;color:#1a1a1a;">East</div>
<div class="a" style="left:50px;top:311px;width:14px;height:1px;background:repeating-linear-gradient(90deg,#b8b8b8 0 1px,transparent 1px 2px)"></div>
<div class="t" style="left:67.0px;top:304.5px;font-size:11.40px;line-height:11.40px;color:#1a1a1a;">North</div>
<div class="a" style="left:50px;top:329px;width:14px;height:1px;background:repeating-linear-gradient(90deg,#b8b8b8 0 1px,transparent 1px 2px)"></div>
<div class="t" style="left:67.0px;top:322.5px;font-size:11.40px;line-height:11.40px;color:#1a1a1a;">South</div>
<div class="a" style="left:50px;top:347px;width:14px;height:1px;background:repeating-linear-gradient(90deg,#b8b8b8 0 1px,transparent 1px 2px)"></div>
<div class="t" style="left:67.0px;top:340.5px;font-size:11.40px;line-height:11.40px;color:#1a1a1a;">West</div>
<div class="a" style="left:11px;top:365px;width:9px;height:1px;background:repeating-linear-gradient(90deg,#b8b8b8 0 1px,transparent 1px 2px)"></div>
<svg class="a" style="left:21px;top:357px;" width="16" height="16" viewBox="0 0 16 16"><rect x="1" y="1" width="14" height="14" rx="1" fill="#fff" stroke="#333" stroke-width="1.3"/><rect x="1" y="1" width="14" height="2.5" fill="#555"/><rect x="3" y="5.5" width="3" height="3" fill="#666"/><circle cx="4.5" cy="11.5" r="1.6" fill="#666"/><path d="M7.5,6 L13,6 M7.5,8 L13,8 M7.5,11 L13,11 M7.5,13 L13,13" stroke="#555" stroke-width="1"/></svg>
<div class="t" style="left:43.0px;top:358.5px;font-size:11.40px;line-height:11.40px;color:#1a1a1a;">Legends</div>
<div class="a" style="left:11px;top:383px;width:9px;height:1px;background:repeating-linear-gradient(90deg,#b8b8b8 0 1px,transparent 1px 2px)"></div>
<svg class="a" style="left:21px;top:375px;" width="16" height="14" viewBox="0 0 16 14"><rect x="1" y="1" width="13" height="12" rx="1" fill="#fff" stroke="#333" stroke-width="1.3"/><rect x="1" y="1" width="13" height="2" fill="#555"/><path d="M1,6 L14,6 M1,9.5 L14,9.5 M5,3 L5,13" stroke="#555" stroke-width="1"/><rect x="6" y="4" width="7" height="1.8" fill="#aaa"/><rect x="6" y="7" width="7" height="1.8" fill="#aaa"/></svg>
<div class="t" style="left:43.0px;top:376.5px;font-size:11.40px;line-height:11.40px;color:#1a1a1a;">Schedules/Quantities (all)</div>
<div class="a" style="left:11px;top:401px;width:9px;height:1px;background:repeating-linear-gradient(90deg,#b8b8b8 0 1px,transparent 1px 2px)"></div>
<svg class="a" style="left:21px;top:393px;" width="16" height="16" viewBox="0 0 16 16"><path d="M1,1 L11,1 L15,5 L15,15 L1,15Z" fill="#fff" stroke="#333" stroke-width="1.3"/><path d="M3,12.5 L3,4 L10,4 L10,7 L7,7 L7,12.5Z" fill="none" stroke="#555" stroke-width="1"/><rect x="3.5" y="10" width="2" height="2" fill="none" stroke="#555" stroke-width="0.8"/></svg>
<div class="t" style="left:43.0px;top:394.5px;font-size:11.40px;line-height:11.40px;color:#1a1a1a;">Sheets (all)</div>
<div class="a" style="left:11px;top:419px;width:9px;height:1px;background:repeating-linear-gradient(90deg,#b8b8b8 0 1px,transparent 1px 2px)"></div>
<svg class="a" style="left:21px;top:411px;" width="16" height="16" viewBox="0 0 16 16"><path d="M1,1 L7,1 L7,7 L1,7Z" fill="#e8e8e8" stroke="#333" stroke-width="1.3"/><path d="M9,1 L14,1 L14,14 L2,14 L2,9 L9,9Z" fill="#e6e8ec" stroke="#333" stroke-width="1.3"/></svg>
<div class="t" style="left:43.0px;top:412.5px;font-size:11.40px;line-height:11.40px;color:#1a1a1a;">Families</div>
<svg class="a" style="left:5.0px;top:415.0px;" width="9" height="9" viewBox="0 0 9 9"><rect x="0.5" y="0.5" width="8" height="8" rx="1" fill="url(#bx)" stroke="#9c9c9c" stroke-width="1"/><path d="M2.5,4.5 L6.5,4.5" stroke="#333" stroke-width="1.2"/></svg>
<div class="a" style="left:34px;top:437px;width:10px;height:1px;background:repeating-linear-gradient(90deg,#b8b8b8 0 1px,transparent 1px 2px)"></div>
<div class="t" style="left:47.0px;top:430.5px;font-size:11.40px;line-height:11.40px;color:#1a1a1a;">Annotation Symbols</div>
<svg class="a" style="left:25.0px;top:433.0px;" width="9" height="9" viewBox="0 0 9 9"><rect x="0.5" y="0.5" width="8" height="8" rx="1" fill="url(#bx)" stroke="#9c9c9c" stroke-width="1"/><path d="M2.5,4.5 L6.5,4.5" stroke="#333" stroke-width="1.2"/><path d="M4.5,2.5 L4.5,6.5" stroke="#333" stroke-width="1.2"/></svg>
<div class="a" style="left:34px;top:455px;width:10px;height:1px;background:repeating-linear-gradient(90deg,#b8b8b8 0 1px,transparent 1px 2px)"></div>
<div class="t" style="left:47.0px;top:448.5px;font-size:11.40px;line-height:11.40px;color:#1a1a1a;">Cable Trays</div>
<svg class="a" style="left:25.0px;top:451.0px;" width="9" height="9" viewBox="0 0 9 9"><rect x="0.5" y="0.5" width="8" height="8" rx="1" fill="url(#bx)" stroke="#9c9c9c" stroke-width="1"/><path d="M2.5,4.5 L6.5,4.5" stroke="#333" stroke-width="1.2"/><path d="M4.5,2.5 L4.5,6.5" stroke="#333" stroke-width="1.2"/></svg>
<div class="a" style="left:34px;top:473px;width:10px;height:1px;background:repeating-linear-gradient(90deg,#b8b8b8 0 1px,transparent 1px 2px)"></div>
<div class="t" style="left:47.0px;top:466.5px;font-size:11.40px;line-height:11.40px;color:#1a1a1a;">Ceilings</div>
<svg class="a" style="left:25.0px;top:469.0px;" width="9" height="9" viewBox="0 0 9 9"><rect x="0.5" y="0.5" width="8" height="8" rx="1" fill="url(#bx)" stroke="#9c9c9c" stroke-width="1"/><path d="M2.5,4.5 L6.5,4.5" stroke="#333" stroke-width="1.2"/><path d="M4.5,2.5 L4.5,6.5" stroke="#333" stroke-width="1.2"/></svg>
<div class="a" style="left:34px;top:491px;width:10px;height:1px;background:repeating-linear-gradient(90deg,#b8b8b8 0 1px,transparent 1px 2px)"></div>
<div class="t" style="left:47.0px;top:484.5px;font-size:11.40px;line-height:11.40px;color:#1a1a1a;">Columns</div>
<svg class="a" style="left:25.0px;top:487.0px;" width="9" height="9" viewBox="0 0 9 9"><rect x="0.5" y="0.5" width="8" height="8" rx="1" fill="url(#bx)" stroke="#9c9c9c" stroke-width="1"/><path d="M2.5,4.5 L6.5,4.5" stroke="#333" stroke-width="1.2"/><path d="M4.5,2.5 L4.5,6.5" stroke="#333" stroke-width="1.2"/></svg>
<div class="a" style="left:34px;top:509px;width:10px;height:1px;background:repeating-linear-gradient(90deg,#b8b8b8 0 1px,transparent 1px 2px)"></div>
<div class="t" style="left:47.0px;top:502.5px;font-size:11.40px;line-height:11.40px;color:#1a1a1a;">Conduits</div>
<svg class="a" style="left:25.0px;top:505.0px;" width="9" height="9" viewBox="0 0 9 9"><rect x="0.5" y="0.5" width="8" height="8" rx="1" fill="url(#bx)" stroke="#9c9c9c" stroke-width="1"/><path d="M2.5,4.5 L6.5,4.5" stroke="#333" stroke-width="1.2"/><path d="M4.5,2.5 L4.5,6.5" stroke="#333" stroke-width="1.2"/></svg>
<div class="a" style="left:34px;top:527px;width:10px;height:1px;background:repeating-linear-gradient(90deg,#b8b8b8 0 1px,transparent 1px 2px)"></div>
<div class="t" style="left:47.0px;top:520.5px;font-size:11.40px;line-height:11.40px;color:#1a1a1a;">Curtain Panels</div>
<svg class="a" style="left:25.0px;top:523.0px;" width="9" height="9" viewBox="0 0 9 9"><rect x="0.5" y="0.5" width="8" height="8" rx="1" fill="url(#bx)" stroke="#9c9c9c" stroke-width="1"/><path d="M2.5,4.5 L6.5,4.5" stroke="#333" stroke-width="1.2"/></svg>
<div class="a" style="left:54px;top:545px;width:10px;height:1px;background:repeating-linear-gradient(90deg,#b8b8b8 0 1px,transparent 1px 2px)"></div>
<div class="t" style="left:67.0px;top:538.5px;font-size:11.40px;line-height:11.40px;color:#1a1a1a;">MDR-SS16</div>
<svg class="a" style="left:45.0px;top:541.0px;" width="9" height="9" viewBox="0 0 9 9"><rect x="0.5" y="0.5" width="8" height="8" rx="1" fill="url(#bx)" stroke="#9c9c9c" stroke-width="1"/><path d="M2.5,4.5 L6.5,4.5" stroke="#333" stroke-width="1.2"/></svg>
<div class="a" style="left:70px;top:563px;width:14px;height:1px;background:repeating-linear-gradient(90deg,#b8b8b8 0 1px,transparent 1px 2px)"></div>
<div class="a" style="left:83px;top:554px;width:41px;height:18px;background:#dedede;"></div>
<div class="t" style="left:87.0px;top:556.5px;font-size:11.40px;line-height:11.40px;color:#1a1a1a;">Style 1</div>
<div class="a" style="left:54px;top:581px;width:10px;height:1px;background:repeating-linear-gradient(90deg,#b8b8b8 0 1px,transparent 1px 2px)"></div>
<div class="t" style="left:67.0px;top:574.5px;font-size:11.40px;line-height:11.40px;color:#1a1a1a;">System Panel</div>
<svg class="a" style="left:45.0px;top:577.0px;" width="9" height="9" viewBox="0 0 9 9"><rect x="0.5" y="0.5" width="8" height="8" rx="1" fill="url(#bx)" stroke="#9c9c9c" stroke-width="1"/><path d="M2.5,4.5 L6.5,4.5" stroke="#333" stroke-width="1.2"/></svg>
<div class="a" style="left:70px;top:599px;width:14px;height:1px;background:repeating-linear-gradient(90deg,#b8b8b8 0 1px,transparent 1px 2px)"></div>
<div class="t" style="left:87.0px;top:592.5px;font-size:11.40px;line-height:11.40px;color:#1a1a1a;">Glazed</div>
<div class="a" style="left:70px;top:617px;width:14px;height:1px;background:repeating-linear-gradient(90deg,#b8b8b8 0 1px,transparent 1px 2px)"></div>
<div class="t" style="left:87.0px;top:610.5px;font-size:11.40px;line-height:11.40px;color:#1a1a1a;">Solid</div>
<div class="a" style="left:34px;top:635px;width:10px;height:1px;background:repeating-linear-gradient(90deg,#b8b8b8 0 1px,transparent 1px 2px)"></div>
<div class="t" style="left:47.0px;top:628.5px;font-size:11.40px;line-height:11.40px;color:#1a1a1a;">Curtain Systems</div>
<svg class="a" style="left:25.0px;top:631.0px;" width="9" height="9" viewBox="0 0 9 9"><rect x="0.5" y="0.5" width="8" height="8" rx="1" fill="url(#bx)" stroke="#9c9c9c" stroke-width="1"/><path d="M2.5,4.5 L6.5,4.5" stroke="#333" stroke-width="1.2"/><path d="M4.5,2.5 L4.5,6.5" stroke="#333" stroke-width="1.2"/></svg>
<div class="a" style="left:34px;top:653px;width:10px;height:1px;background:repeating-linear-gradient(90deg,#b8b8b8 0 1px,transparent 1px 2px)"></div>
<div class="t" style="left:47.0px;top:646.5px;font-size:11.40px;line-height:11.40px;color:#1a1a1a;">Curtain Wall Mullions</div>
<svg class="a" style="left:25.0px;top:649.0px;" width="9" height="9" viewBox="0 0 9 9"><rect x="0.5" y="0.5" width="8" height="8" rx="1" fill="url(#bx)" stroke="#9c9c9c" stroke-width="1"/><path d="M2.5,4.5 L6.5,4.5" stroke="#333" stroke-width="1.2"/><path d="M4.5,2.5 L4.5,6.5" stroke="#333" stroke-width="1.2"/></svg>
<div class="a" style="left:34px;top:671px;width:10px;height:1px;background:repeating-linear-gradient(90deg,#b8b8b8 0 1px,transparent 1px 2px)"></div>
<div class="t" style="left:47.0px;top:664.5px;font-size:11.40px;line-height:11.40px;color:#1a1a1a;">Detail Items</div>
<svg class="a" style="left:25.0px;top:667.0px;" width="9" height="9" viewBox="0 0 9 9"><rect x="0.5" y="0.5" width="8" height="8" rx="1" fill="url(#bx)" stroke="#9c9c9c" stroke-width="1"/><path d="M2.5,4.5 L6.5,4.5" stroke="#333" stroke-width="1.2"/><path d="M4.5,2.5 L4.5,6.5" stroke="#333" stroke-width="1.2"/></svg>
<div class="a" style="left:34px;top:689px;width:10px;height:1px;background:repeating-linear-gradient(90deg,#b8b8b8 0 1px,transparent 1px 2px)"></div>
<div class="t" style="left:47.0px;top:682.5px;font-size:11.40px;line-height:11.40px;color:#1a1a1a;">Doors</div>
<svg class="a" style="left:25.0px;top:685.0px;" width="9" height="9" viewBox="0 0 9 9"><rect x="0.5" y="0.5" width="8" height="8" rx="1" fill="url(#bx)" stroke="#9c9c9c" stroke-width="1"/><path d="M2.5,4.5 L6.5,4.5" stroke="#333" stroke-width="1.2"/><path d="M4.5,2.5 L4.5,6.5" stroke="#333" stroke-width="1.2"/></svg>
<div class="a" style="left:34px;top:707px;width:10px;height:1px;background:repeating-linear-gradient(90deg,#b8b8b8 0 1px,transparent 1px 2px)"></div>
<div class="t" style="left:47.0px;top:700.5px;font-size:11.40px;line-height:11.40px;color:#1a1a1a;">Duct Systems</div>
<svg class="a" style="left:25.0px;top:703.0px;" width="9" height="9" viewBox="0 0 9 9"><rect x="0.5" y="0.5" width="8" height="8" rx="1" fill="url(#bx)" stroke="#9c9c9c" stroke-width="1"/><path d="M2.5,4.5 L6.5,4.5" stroke="#333" stroke-width="1.2"/><path d="M4.5,2.5 L4.5,6.5" stroke="#333" stroke-width="1.2"/></svg>
<div class="a" style="left:34px;top:725px;width:10px;height:1px;background:repeating-linear-gradient(90deg,#b8b8b8 0 1px,transparent 1px 2px)"></div>
<div class="t" style="left:47.0px;top:718.5px;font-size:11.40px;line-height:11.40px;color:#1a1a1a;">Ducts</div>
<svg class="a" style="left:25.0px;top:721.0px;" width="9" height="9" viewBox="0 0 9 9"><rect x="0.5" y="0.5" width="8" height="8" rx="1" fill="url(#bx)" stroke="#9c9c9c" stroke-width="1"/><path d="M2.5,4.5 L6.5,4.5" stroke="#333" stroke-width="1.2"/><path d="M4.5,2.5 L4.5,6.5" stroke="#333" stroke-width="1.2"/></svg>
<div class="a" style="left:34px;top:743px;width:10px;height:1px;background:repeating-linear-gradient(90deg,#b8b8b8 0 1px,transparent 1px 2px)"></div>
<div class="t" style="left:47.0px;top:736.5px;font-size:11.40px;line-height:11.40px;color:#1a1a1a;">Flex Ducts</div>
<svg class="a" style="left:25.0px;top:739.0px;" width="9" height="9" viewBox="0 0 9 9"><rect x="0.5" y="0.5" width="8" height="8" rx="1" fill="url(#bx)" stroke="#9c9c9c" stroke-width="1"/><path d="M2.5,4.5 L6.5,4.5" stroke="#333" stroke-width="1.2"/><path d="M4.5,2.5 L4.5,6.5" stroke="#333" stroke-width="1.2"/></svg>
<div class="a" style="left:34px;top:761px;width:10px;height:1px;background:repeating-linear-gradient(90deg,#b8b8b8 0 1px,transparent 1px 2px)"></div>
<div class="t" style="left:47.0px;top:754.5px;font-size:11.40px;line-height:11.40px;color:#1a1a1a;">Flex Pipes</div>
<svg class="a" style="left:25.0px;top:757.0px;" width="9" height="9" viewBox="0 0 9 9"><rect x="0.5" y="0.5" width="8" height="8" rx="1" fill="url(#bx)" stroke="#9c9c9c" stroke-width="1"/><path d="M2.5,4.5 L6.5,4.5" stroke="#333" stroke-width="1.2"/><path d="M4.5,2.5 L4.5,6.5" stroke="#333" stroke-width="1.2"/></svg>
<div class="a" style="left:34px;top:779px;width:10px;height:1px;background:repeating-linear-gradient(90deg,#b8b8b8 0 1px,transparent 1px 2px)"></div>
<div class="t" style="left:47.0px;top:772.5px;font-size:11.40px;line-height:11.40px;color:#1a1a1a;">Floors</div>
<svg class="a" style="left:25.0px;top:775.0px;" width="9" height="9" viewBox="0 0 9 9"><rect x="0.5" y="0.5" width="8" height="8" rx="1" fill="url(#bx)" stroke="#9c9c9c" stroke-width="1"/><path d="M2.5,4.5 L6.5,4.5" stroke="#333" stroke-width="1.2"/><path d="M4.5,2.5 L4.5,6.5" stroke="#333" stroke-width="1.2"/></svg>
<div class="a" style="left:34px;top:797px;width:10px;height:1px;background:repeating-linear-gradient(90deg,#b8b8b8 0 1px,transparent 1px 2px)"></div>
<div class="t" style="left:47.0px;top:790.5px;font-size:11.40px;line-height:11.40px;color:#1a1a1a;">Furniture</div>
<svg class="a" style="left:25.0px;top:793.0px;" width="9" height="9" viewBox="0 0 9 9"><rect x="0.5" y="0.5" width="8" height="8" rx="1" fill="url(#bx)" stroke="#9c9c9c" stroke-width="1"/><path d="M2.5,4.5 L6.5,4.5" stroke="#333" stroke-width="1.2"/><path d="M4.5,2.5 L4.5,6.5" stroke="#333" stroke-width="1.2"/></svg>
<div class="a" style="left:34px;top:815px;width:10px;height:1px;background:repeating-linear-gradient(90deg,#b8b8b8 0 1px,transparent 1px 2px)"></div>
<div class="t" style="left:47.0px;top:808.5px;font-size:11.40px;line-height:11.40px;color:#1a1a1a;">Parking</div>
<svg class="a" style="left:25.0px;top:811.0px;" width="9" height="9" viewBox="0 0 9 9"><rect x="0.5" y="0.5" width="8" height="8" rx="1" fill="url(#bx)" stroke="#9c9c9c" stroke-width="1"/><path d="M2.5,4.5 L6.5,4.5" stroke="#333" stroke-width="1.2"/><path d="M4.5,2.5 L4.5,6.5" stroke="#333" stroke-width="1.2"/></svg>
<div class="a" style="left:34px;top:833px;width:10px;height:1px;background:repeating-linear-gradient(90deg,#b8b8b8 0 1px,transparent 1px 2px)"></div>
<div class="t" style="left:47.0px;top:826.5px;font-size:11.40px;line-height:11.40px;color:#1a1a1a;">Pattern</div>
<svg class="a" style="left:25.0px;top:829.0px;" width="9" height="9" viewBox="0 0 9 9"><rect x="0.5" y="0.5" width="8" height="8" rx="1" fill="url(#bx)" stroke="#9c9c9c" stroke-width="1"/><path d="M2.5,4.5 L6.5,4.5" stroke="#333" stroke-width="1.2"/><path d="M4.5,2.5 L4.5,6.5" stroke="#333" stroke-width="1.2"/></svg>
<div class="a" style="left:34px;top:851px;width:10px;height:1px;background:repeating-linear-gradient(90deg,#b8b8b8 0 1px,transparent 1px 2px)"></div>
<div class="t" style="left:47.0px;top:844.5px;font-size:11.40px;line-height:11.40px;color:#1a1a1a;">Pipes</div>
<svg class="a" style="left:25.0px;top:847.0px;" width="9" height="9" viewBox="0 0 9 9"><rect x="0.5" y="0.5" width="8" height="8" rx="1" fill="url(#bx)" stroke="#9c9c9c" stroke-width="1"/><path d="M2.5,4.5 L6.5,4.5" stroke="#333" stroke-width="1.2"/><path d="M4.5,2.5 L4.5,6.5" stroke="#333" stroke-width="1.2"/></svg>
<div class="a" style="left:34px;top:869px;width:10px;height:1px;background:repeating-linear-gradient(90deg,#b8b8b8 0 1px,transparent 1px 2px)"></div>
<div class="t" style="left:47.0px;top:862.5px;font-size:11.40px;line-height:11.40px;color:#1a1a1a;">Piping Systems</div>
<svg class="a" style="left:25.0px;top:865.0px;" width="9" height="9" viewBox="0 0 9 9"><rect x="0.5" y="0.5" width="8" height="8" rx="1" fill="url(#bx)" stroke="#9c9c9c" stroke-width="1"/><path d="M2.5,4.5 L6.5,4.5" stroke="#333" stroke-width="1.2"/><path d="M4.5,2.5 L4.5,6.5" stroke="#333" stroke-width="1.2"/></svg>
<div class="a" style="left:34px;top:887px;width:10px;height:1px;background:repeating-linear-gradient(90deg,#b8b8b8 0 1px,transparent 1px 2px)"></div>
<div class="t" style="left:47.0px;top:880.5px;font-size:11.40px;line-height:11.40px;color:#1a1a1a;">Planting</div>
<svg class="a" style="left:25.0px;top:883.0px;" width="9" height="9" viewBox="0 0 9 9"><rect x="0.5" y="0.5" width="8" height="8" rx="1" fill="url(#bx)" stroke="#9c9c9c" stroke-width="1"/><path d="M2.5,4.5 L6.5,4.5" stroke="#333" stroke-width="1.2"/><path d="M4.5,2.5 L4.5,6.5" stroke="#333" stroke-width="1.2"/></svg>
<div class="a" style="left:34px;top:905px;width:10px;height:1px;background:repeating-linear-gradient(90deg,#b8b8b8 0 1px,transparent 1px 2px)"></div>
<div class="t" style="left:47.0px;top:898.5px;font-size:11.40px;line-height:11.40px;color:#1a1a1a;">Profiles</div>
<svg class="a" style="left:25.0px;top:901.0px;" width="9" height="9" viewBox="0 0 9 9"><rect x="0.5" y="0.5" width="8" height="8" rx="1" fill="url(#bx)" stroke="#9c9c9c" stroke-width="1"/><path d="M2.5,4.5 L6.5,4.5" stroke="#333" stroke-width="1.2"/><path d="M4.5,2.5 L4.5,6.5" stroke="#333" stroke-width="1.2"/></svg>
<div class="a" style="left:34px;top:923px;width:10px;height:1px;background:repeating-linear-gradient(90deg,#b8b8b8 0 1px,transparent 1px 2px)"></div>
<div class="t" style="left:47.0px;top:916.5px;font-size:11.40px;line-height:11.40px;color:#1a1a1a;">Railings</div>
<svg class="a" style="left:25.0px;top:919.0px;" width="9" height="9" viewBox="0 0 9 9"><rect x="0.5" y="0.5" width="8" height="8" rx="1" fill="url(#bx)" stroke="#9c9c9c" stroke-width="1"/><path d="M2.5,4.5 L6.5,4.5" stroke="#333" stroke-width="1.2"/><path d="M4.5,2.5 L4.5,6.5" stroke="#333" stroke-width="1.2"/></svg>
<div class="a" style="left:34px;top:941px;width:10px;height:1px;background:repeating-linear-gradient(90deg,#b8b8b8 0 1px,transparent 1px 2px)"></div>
<div class="t" style="left:47.0px;top:934.5px;font-size:11.40px;line-height:11.40px;color:#1a1a1a;">Ramps</div>
<svg class="a" style="left:25.0px;top:937.0px;" width="9" height="9" viewBox="0 0 9 9"><rect x="0.5" y="0.5" width="8" height="8" rx="1" fill="url(#bx)" stroke="#9c9c9c" stroke-width="1"/><path d="M2.5,4.5 L6.5,4.5" stroke="#333" stroke-width="1.2"/><path d="M4.5,2.5 L4.5,6.5" stroke="#333" stroke-width="1.2"/></svg>
<div class="a" style="left:34px;top:959px;width:10px;height:1px;background:repeating-linear-gradient(90deg,#b8b8b8 0 1px,transparent 1px 2px)"></div>
<div class="t" style="left:47.0px;top:952.5px;font-size:11.40px;line-height:11.40px;color:#1a1a1a;">Roofs</div>
<svg class="a" style="left:25.0px;top:955.0px;" width="9" height="9" viewBox="0 0 9 9"><rect x="0.5" y="0.5" width="8" height="8" rx="1" fill="url(#bx)" stroke="#9c9c9c" stroke-width="1"/><path d="M2.5,4.5 L6.5,4.5" stroke="#333" stroke-width="1.2"/><path d="M4.5,2.5 L4.5,6.5" stroke="#333" stroke-width="1.2"/></svg>
<div class="a" style="left:34px;top:977px;width:10px;height:1px;background:repeating-linear-gradient(90deg,#b8b8b8 0 1px,transparent 1px 2px)"></div>
<div class="t" style="left:47.0px;top:970.5px;font-size:11.40px;line-height:11.40px;color:#1a1a1a;">Stairs</div>
<svg class="a" style="left:25.0px;top:973.0px;" width="9" height="9" viewBox="0 0 9 9"><rect x="0.5" y="0.5" width="8" height="8" rx="1" fill="url(#bx)" stroke="#9c9c9c" stroke-width="1"/><path d="M2.5,4.5 L6.5,4.5" stroke="#333" stroke-width="1.2"/><path d="M4.5,2.5 L4.5,6.5" stroke="#333" stroke-width="1.2"/></svg>
<div class="a" style="left:34px;top:995px;width:10px;height:1px;background:repeating-linear-gradient(90deg,#b8b8b8 0 1px,transparent 1px 2px)"></div>
<div class="t" style="left:47.0px;top:988.5px;font-size:11.40px;line-height:11.40px;color:#1a1a1a;">Structural Beam Systems</div>
<svg class="a" style="left:25.0px;top:991.0px;" width="9" height="9" viewBox="0 0 9 9"><rect x="0.5" y="0.5" width="8" height="8" rx="1" fill="url(#bx)" stroke="#9c9c9c" stroke-width="1"/><path d="M2.5,4.5 L6.5,4.5" stroke="#333" stroke-width="1.2"/><path d="M4.5,2.5 L4.5,6.5" stroke="#333" stroke-width="1.2"/></svg>
<div class="a" style="left:252px;top:193px;width:1448px;height:815px;background:#eeeeee;"></div>
<div class="a" style="left:252px;top:171px;width:2px;height:837px;background:#c8c8c8;"></div>
<div class="a" style="left:254px;top:193px;width:2px;height:815px;background:#ffffff;"></div>
<div class="a" style="left:254px;top:193px;width:1446px;height:2px;background:#ffffff;"></div>
<svg class="a" style="left:0px;top:0px;left:0;top:0;pointer-events:none" width="1920" height="1080" viewBox="0 0 1920 1080"><polygon points="297,418 1001,212 1001,426 297,632" fill="#664a32"/>
<clipPath id="c297_418"><polygon points="297,418 1001,212 1001,426 297,632"/></clipPath><g clip-path="url(#c297_418)">
<path d="M297,421 L1001,215 L1001,220 L297,426Z M297,431.5 L1001,225.5 L1001,230.5 L297,436.5Z M297,442 L1001,236 L1001,241 L297,447Z M297,452.5 L1001,246.5 L1001,251.5 L297,457.5Z M297,463 L1001,257 L1001,262 L297,468Z M297,473.5 L1001,267.5 L1001,272.5 L297,478.5Z M297,484 L1001,278 L1001,283 L297,489Z M297,495 L1001,289 L1001,293.5 L297,499.5Z M297,505.5 L1001,299.5 L1001,304 L297,510Z M297,516 L1001,310 L1001,314.5 L297,520.5Z M297,526.5 L1001,320.5 L1001,325.5 L297,531.5Z M297,537 L1001,331 L1001,336 L297,542Z M297,547.5 L1001,341.5 L1001,346.5 L297,552.5Z M297,558 L1001,352 L1001,357 L297,563Z M297,568.5 L1001,362.5 L1001,367.5 L297,573.5Z M297,579 L1001,373 L1001,378 L297,584Z M297,590 L1001,384 L1001,388.5 L297,594.5Z M297,600.5 L1001,394.5 L1001,399 L297,605Z M297,611 L1001,405 L1001,409.5 L297,615.5Z M297,621.5 L1001,415.5 L1001,420 L297,626Z M297,632 L1001,426 L1001,431 L297,637Z M297,642.5 L1001,436.5 L1001,441.5 L297,647.5Z" fill="#77583b"/>
<path d="M297,430.5 L1001,224.5 M297,441 L1001,235 M297,451.5 L1001,245.5 M297,462 L1001,256 M297,472.5 L1001,266.5 M297,483 L1001,277 M297,494 L1001,288 M297,504.5 L1001,298.5 M297,515 L1001,309 M297,525.5 L1001,319.5 M297,536 L1001,330 M297,546.5 L1001,340.5 M297,557 L1001,351 M297,567.5 L1001,361.5 M297,578 L1001,372 M297,589 L1001,383 M297,599.5 L1001,393.5 M297,610 L1001,404 M297,620.5 L1001,414.5 M297,631 L1001,425 M297,641.5 L1001,435.5 M297,652 L1001,446" stroke="#2e1c0e" stroke-width="1.5" stroke-dasharray="2.2,2.2" fill="none"/>
<path d="M301,423.5 L305.5,429.5 L301,429.5Z M301,434 L305.5,440 L301,440Z M301,444.5 L305.5,450.5 L301,450.5Z M301,455 L305.5,461 L301,461Z M301,465.5 L305.5,471.5 L301,471.5Z M301,476 L305.5,482 L301,482Z M301,487 L305.5,493 L301,493Z M301,497.5 L305.5,503.5 L301,503.5Z M301,508 L305.5,514 L301,514Z M301,518.5 L305.5,524.5 L301,524.5Z M301,529 L305.5,535 L301,535Z M301,539.5 L305.5,545.5 L301,545.5Z M301,550 L305.5,556 L301,556Z M301,560.5 L305.5,566.5 L301,566.5Z M301,571 L305.5,577 L301,577Z M301,582 L305.5,588 L301,588Z M301,592.5 L305.5,598.5 L301,598.5Z M301,603 L305.5,609 L301,609Z M301,613.5 L305.5,619.5 L301,619.5Z M301,624 L305.5,630 L301,630Z M301,634.5 L305.5,640.5 L301,640.5Z M301,645 L305.5,651 L301,651Z" fill="#f4ede4"/>
</g>
<polyline points="1001,213 298.5,419 298.5,632 1001,425.5" fill="none" stroke="#231d19" stroke-width="2.5" stroke-linejoin="miter"/>
<line x1="299" y1="418" x2="299" y2="633" stroke="#231d19" stroke-width="4.5"/>
<polygon points="592.5,547.5 694,538.5 694,753 592.5,762" fill="#574030"/>
<clipPath id="c592_547"><polygon points="592.5,547.5 694,538.5 694,753 592.5,762"/></clipPath><g clip-path="url(#c592_547)">
<path d="M592.5,553.5 L694,543.5 L694,549 L592.5,559Z M592.5,564 L694,554 L694,559.5 L592.5,569.5Z M592.5,574.5 L694,564.5 L694,570 L592.5,580Z M592.5,585 L694,575 L694,580.5 L592.5,590.5Z M592.5,595.5 L694,585.5 L694,591 L592.5,601Z M592.5,606 L694,596 L694,601.5 L592.5,611.5Z M592.5,616.5 L694,606.5 L694,612 L592.5,622Z M592.5,627 L694,617 L694,622.5 L592.5,632.5Z M592.5,637.5 L694,627.5 L694,633 L592.5,643Z M592.5,648 L694,638 L694,643.5 L592.5,653.5Z M592.5,658.5 L694,648.5 L694,654 L592.5,664Z M592.5,669 L694,659 L694,664.5 L592.5,674.5Z M592.5,679.5 L694,669.5 L694,675 L592.5,685Z M592.5,690 L694,680 L694,685.5 L592.5,695.5Z M592.5,700.5 L694,690.5 L694,696 L592.5,706Z M592.5,711 L694,701 L694,706.5 L592.5,716.5Z M592.5,721.5 L694,711.5 L694,717 L592.5,727Z M592.5,732 L694,722 L694,727.5 L592.5,737.5Z M592.5,742.5 L694,732.5 L694,738 L592.5,748Z M592.5,753 L694,743 L694,748.5 L592.5,758.5Z M592.5,763.5 L694,753.5 L694,759 L592.5,769Z M592.5,774 L694,764 L694,769.5 L592.5,779.5Z" fill="#70543a"/>
<path d="M592.5,560 L694,550 M592.5,570.5 L694,560.5 M592.5,581 L694,571 M592.5,591.5 L694,581.5 M592.5,602 L694,592 M592.5,612.5 L694,602.5 M592.5,623 L694,613 M592.5,633.5 L694,623.5 M592.5,644 L694,634 M592.5,654.5 L694,644.5 M592.5,665 L694,655 M592.5,675.5 L694,665.5 M592.5,686 L694,676 M592.5,696.5 L694,686.5 M592.5,707 L694,697 M592.5,717.5 L694,707.5 M592.5,728 L694,718 M592.5,738.5 L694,728.5 M592.5,749 L694,739 M592.5,759.5 L694,749.5 M592.5,770 L694,760 M592.5,780.5 L694,770.5" stroke="#281a10" stroke-width="1.9" fill="none"/>
<g stroke="#fbf6ef" stroke-width="1.25" stroke-dasharray="3,7"><line x1="594.5" y1="560.3" x2="694.0" y2="550.1" stroke-dashoffset="6"/><line x1="594.5" y1="570.8" x2="694.0" y2="560.6" stroke-dashoffset="0"/><line x1="594.5" y1="581.3" x2="694.0" y2="571.1" stroke-dashoffset="4"/><line x1="594.5" y1="591.8" x2="694.0" y2="581.6" stroke-dashoffset="8"/><line x1="594.5" y1="602.3" x2="694.0" y2="592.1" stroke-dashoffset="2"/><line x1="594.5" y1="612.8" x2="694.0" y2="602.6" stroke-dashoffset="6"/><line x1="594.5" y1="623.3" x2="694.0" y2="613.1" stroke-dashoffset="0"/><line x1="594.5" y1="633.8" x2="694.0" y2="623.6" stroke-dashoffset="4"/><line x1="594.5" y1="644.3" x2="694.0" y2="634.1" stroke-dashoffset="8"/><line x1="594.5" y1="654.8" x2="694.0" y2="644.6" stroke-dashoffset="2"/><line x1="594.5" y1="665.3" x2="694.0" y2="655.1" stroke-dashoffset="6"/><line x1="594.5" y1="675.8" x2="694.0" y2="665.6" stroke-dashoffset="0"/><line x1="594.5" y1="686.3" x2="694.0" y2="676.1" stroke-dashoffset="4"/><line x1="594.5" y1="696.8" x2="694.0" y2="686.6" stroke-dashoffset="8"/><line x1="594.5" y1="707.3" x2="694.0" y2="697.1" stroke-dashoffset="2"/><line x1="594.5" y1="717.8" x2="694.0" y2="707.6" stroke-dashoffset="6"/><line x1="594.5" y1="728.3" x2="694.0" y2="718.1" stroke-dashoffset="0"/><line x1="594.5" y1="738.8" x2="694.0" y2="728.6" stroke-dashoffset="4"/><line x1="594.5" y1="749.3" x2="694.0" y2="739.1" stroke-dashoffset="8"/><line x1="594.5" y1="759.8" x2="694.0" y2="749.6" stroke-dashoffset="2"/><line x1="594.5" y1="770.3" x2="694.0" y2="760.1" stroke-dashoffset="6"/><line x1="594.5" y1="780.8" x2="694.0" y2="770.6" stroke-dashoffset="0"/></g>
</g>
<polyline points="694,539.5 593.5,548.5 593.5,761 694,752" fill="none" stroke="#231d19" stroke-width="2.5"/>
<polygon points="697,517 798.5,508 798.5,722.5 697,731.5" fill="#574030"/>
<clipPath id="c697_517"><polygon points="697,517 798.5,508 798.5,722.5 697,731.5"/></clipPath><g clip-path="url(#c697_517)">
<path d="M697,523 L798.5,513 L798.5,518.5 L697,528.5Z M697,533.5 L798.5,523.5 L798.5,529 L697,539Z M697,544 L798.5,534 L798.5,539.5 L697,549.5Z M697,554.5 L798.5,544.5 L798.5,550 L697,560Z M697,565 L798.5,555 L798.5,560.5 L697,570.5Z M697,575.5 L798.5,565.5 L798.5,571 L697,581Z M697,586 L798.5,576 L798.5,581.5 L697,591.5Z M697,596.5 L798.5,586.5 L798.5,592 L697,602Z M697,607 L798.5,597 L798.5,602.5 L697,612.5Z M697,617.5 L798.5,607.5 L798.5,613 L697,623Z M697,628 L798.5,618 L798.5,623.5 L697,633.5Z M697,638.5 L798.5,628.5 L798.5,634 L697,644Z M697,649 L798.5,639 L798.5,644.5 L697,654.5Z M697,659.5 L798.5,649.5 L798.5,655 L697,665Z M697,670 L798.5,660 L798.5,665.5 L697,675.5Z M697,680.5 L798.5,670.5 L798.5,676 L697,686Z M697,691 L798.5,681 L798.5,686.5 L697,696.5Z M697,701.5 L798.5,691.5 L798.5,697 L697,707Z M697,712 L798.5,702 L798.5,707.5 L697,717.5Z M697,722.5 L798.5,712.5 L798.5,718 L697,728Z M697,733 L798.5,723 L798.5,728.5 L697,738.5Z M697,743.5 L798.5,733.5 L798.5,739 L697,749Z" fill="#70543a"/>
<path d="M697,529.5 L798.5,519.5 M697,540 L798.5,530 M697,550.5 L798.5,540.5 M697,561 L798.5,551 M697,571.5 L798.5,561.5 M697,582 L798.5,572 M697,592.5 L798.5,582.5 M697,603 L798.5,593 M697,613.5 L798.5,603.5 M697,624 L798.5,614 M697,634.5 L798.5,624.5 M697,645 L798.5,635 M697,655.5 L798.5,645.5 M697,666 L798.5,656 M697,676.5 L798.5,666.5 M697,687 L798.5,677 M697,697.5 L798.5,687.5 M697,708 L798.5,698 M697,718.5 L798.5,708.5 M697,729 L798.5,719 M697,739.5 L798.5,729.5 M697,750 L798.5,740" stroke="#281a10" stroke-width="1.9" fill="none"/>
<g stroke="#fbf6ef" stroke-width="1.25" stroke-dasharray="3,7"><line x1="699.0" y1="529.8" x2="798.5" y2="519.6" stroke-dashoffset="6"/><line x1="699.0" y1="540.3" x2="798.5" y2="530.1" stroke-dashoffset="0"/><line x1="699.0" y1="550.8" x2="798.5" y2="540.6" stroke-dashoffset="4"/><line x1="699.0" y1="561.3" x2="798.5" y2="551.1" stroke-dashoffset="8"/><line x1="699.0" y1="571.8" x2="798.5" y2="561.6" stroke-dashoffset="2"/><line x1="699.0" y1="582.3" x2="798.5" y2="572.1" stroke-dashoffset="6"/><line x1="699.0" y1="592.8" x2="798.5" y2="582.6" stroke-dashoffset="0"/><line x1="699.0" y1="603.3" x2="798.5" y2="593.1" stroke-dashoffset="4"/><line x1="699.0" y1="613.8" x2="798.5" y2="603.6" stroke-dashoffset="8"/><line x1="699.0" y1="624.3" x2="798.5" y2="614.1" stroke-dashoffset="2"/><line x1="699.0" y1="634.8" x2="798.5" y2="624.6" stroke-dashoffset="6"/><line x1="699.0" y1="645.3" x2="798.5" y2="635.1" stroke-dashoffset="0"/><line x1="699.0" y1="655.8" x2="798.5" y2="645.6" stroke-dashoffset="4"/><line x1="699.0" y1="666.3" x2="798.5" y2="656.1" stroke-dashoffset="8"/><line x1="699.0" y1="676.8" x2="798.5" y2="666.6" stroke-dashoffset="2"/><line x1="699.0" y1="687.3" x2="798.5" y2="677.1" stroke-dashoffset="6"/><line x1="699.0" y1="697.8" x2="798.5" y2="687.6" stroke-dashoffset="0"/><line x1="699.0" y1="708.3" x2="798.5" y2="698.1" stroke-dashoffset="4"/><line x1="699.0" y1="718.8" x2="798.5" y2="708.6" stroke-dashoffset="8"/><line x1="699.0" y1="729.3" x2="798.5" y2="719.1" stroke-dashoffset="2"/><line x1="699.0" y1="739.8" x2="798.5" y2="729.6" stroke-dashoffset="6"/><line x1="699.0" y1="750.3" x2="798.5" y2="740.1" stroke-dashoffset="0"/></g>
</g>
<polyline points="798.5,509 698,518 698,730.5 798.5,721.5" fill="none" stroke="#231d19" stroke-width="2.5"/>
<polygon points="801.5,486.5 903,477.5 903,692 801.5,701" fill="#574030"/>
<clipPath id="c801_486"><polygon points="801.5,486.5 903,477.5 903,692 801.5,701"/></clipPath><g clip-path="url(#c801_486)">
<path d="M801.5,492.5 L903,482.5 L903,488 L801.5,498Z M801.5,503 L903,493 L903,498.5 L801.5,508.5Z M801.5,513.5 L903,503.5 L903,509 L801.5,519Z M801.5,524 L903,514 L903,519.5 L801.5,529.5Z M801.5,534.5 L903,524.5 L903,530 L801.5,540Z M801.5,545 L903,535 L903,540.5 L801.5,550.5Z M801.5,555.5 L903,545.5 L903,551 L801.5,561Z M801.5,566 L903,556 L903,561.5 L801.5,571.5Z M801.5,576.5 L903,566.5 L903,572 L801.5,582Z M801.5,587 L903,577 L903,582.5 L801.5,592.5Z M801.5,597.5 L903,587.5 L903,593 L801.5,603Z M801.5,608 L903,598 L903,603.5 L801.5,613.5Z M801.5,618.5 L903,608.5 L903,614 L801.5,624Z M801.5,629 L903,619 L903,624.5 L801.5,634.5Z M801.5,639.5 L903,629.5 L903,635 L801.5,645Z M801.5,650 L903,640 L903,645.5 L801.5,655.5Z M801.5,660.5 L903,650.5 L903,656 L801.5,666Z M801.5,671 L903,661 L903,666.5 L801.5,676.5Z M801.5,681.5 L903,671.5 L903,677 L801.5,687Z M801.5,692 L903,682 L903,687.5 L801.5,697.5Z M801.5,702.5 L903,692.5 L903,698 L801.5,708Z M801.5,713 L903,703 L903,708.5 L801.5,718.5Z" fill="#70543a"/>
<path d="M801.5,499 L903,489 M801.5,509.5 L903,499.5 M801.5,520 L903,510 M801.5,530.5 L903,520.5 M801.5,541 L903,531 M801.5,551.5 L903,541.5 M801.5,562 L903,552 M801.5,572.5 L903,562.5 M801.5,583 L903,573 M801.5,593.5 L903,583.5 M801.5,604 L903,594 M801.5,614.5 L903,604.5 M801.5,625 L903,615 M801.5,635.5 L903,625.5 M801.5,646 L903,636 M801.5,656.5 L903,646.5 M801.5,667 L903,657 M801.5,677.5 L903,667.5 M801.5,688 L903,678 M801.5,698.5 L903,688.5 M801.5,709 L903,699 M801.5,719.5 L903,709.5" stroke="#281a10" stroke-width="1.9" fill="none"/>
<g stroke="#fbf6ef" stroke-width="1.25" stroke-dasharray="3,7"><line x1="803.5" y1="499.3" x2="903.0" y2="489.2" stroke-dashoffset="6"/><line x1="803.5" y1="509.8" x2="903.0" y2="499.7" stroke-dashoffset="0"/><line x1="803.5" y1="520.3" x2="903.0" y2="510.2" stroke-dashoffset="4"/><line x1="803.5" y1="530.8" x2="903.0" y2="520.6" stroke-dashoffset="8"/><line x1="803.5" y1="541.3" x2="903.0" y2="531.1" stroke-dashoffset="2"/><line x1="803.5" y1="551.8" x2="903.0" y2="541.6" stroke-dashoffset="6"/><line x1="803.5" y1="562.3" x2="903.0" y2="552.1" stroke-dashoffset="0"/><line x1="803.5" y1="572.8" x2="903.0" y2="562.6" stroke-dashoffset="4"/><line x1="803.5" y1="583.3" x2="903.0" y2="573.1" stroke-dashoffset="8"/><line x1="803.5" y1="593.8" x2="903.0" y2="583.6" stroke-dashoffset="2"/><line x1="803.5" y1="604.3" x2="903.0" y2="594.1" stroke-dashoffset="6"/><line x1="803.5" y1="614.8" x2="903.0" y2="604.6" stroke-dashoffset="0"/><line x1="803.5" y1="625.3" x2="903.0" y2="615.1" stroke-dashoffset="4"/><line x1="803.5" y1="635.8" x2="903.0" y2="625.6" stroke-dashoffset="8"/><line x1="803.5" y1="646.3" x2="903.0" y2="636.1" stroke-dashoffset="2"/><line x1="803.5" y1="656.8" x2="903.0" y2="646.6" stroke-dashoffset="6"/><line x1="803.5" y1="667.3" x2="903.0" y2="657.1" stroke-dashoffset="0"/><line x1="803.5" y1="677.8" x2="903.0" y2="667.6" stroke-dashoffset="4"/><line x1="803.5" y1="688.3" x2="903.0" y2="678.1" stroke-dashoffset="8"/><line x1="803.5" y1="698.8" x2="903.0" y2="688.6" stroke-dashoffset="2"/><line x1="803.5" y1="709.3" x2="903.0" y2="699.1" stroke-dashoffset="6"/><line x1="803.5" y1="719.8" x2="903.0" y2="709.6" stroke-dashoffset="0"/></g>
</g>
<polyline points="903,478.5 802.5,487.5 802.5,700 903,691" fill="none" stroke="#231d19" stroke-width="2.5"/>
<polygon points="906,456 1007.5,447 1007.5,661.5 906,670.5" fill="#574030"/>
<clipPath id="c906_456"><polygon points="906,456 1007.5,447 1007.5,661.5 906,670.5"/></clipPath><g clip-path="url(#c906_456)">
<path d="M906,462 L1007.5,452 L1007.5,457.5 L906,467.5Z M906,472.5 L1007.5,462.5 L1007.5,468 L906,478Z M906,483 L1007.5,473 L1007.5,478.5 L906,488.5Z M906,493.5 L1007.5,483.5 L1007.5,489 L906,499Z M906,504 L1007.5,494 L1007.5,499.5 L906,509.5Z M906,514.5 L1007.5,504.5 L1007.5,510 L906,520Z M906,525 L1007.5,515 L1007.5,520.5 L906,530.5Z M906,535.5 L1007.5,525.5 L1007.5,531 L906,541Z M906,546 L1007.5,536 L1007.5,541.5 L906,551.5Z M906,556.5 L1007.5,546.5 L1007.5,552 L906,562Z M906,567 L1007.5,557 L1007.5,562.5 L906,572.5Z M906,577.5 L1007.5,567.5 L1007.5,573 L906,583Z M906,588 L1007.5,578 L1007.5,583.5 L906,593.5Z M906,598.5 L1007.5,588.5 L1007.5,594 L906,604Z M906,609 L1007.5,599 L1007.5,604.5 L906,614.5Z M906,619.5 L1007.5,609.5 L1007.5,615 L906,625Z M906,630 L1007.5,620 L1007.5,625.5 L906,635.5Z M906,640.5 L1007.5,630.5 L1007.5,636 L906,646Z M906,651 L1007.5,641 L1007.5,646.5 L906,656.5Z M906,661.5 L1007.5,651.5 L1007.5,657 L906,667Z M906,672 L1007.5,662 L1007.5,667.5 L906,677.5Z M906,682.5 L1007.5,672.5 L1007.5,678 L906,688Z" fill="#70543a"/>
<path d="M906,468.5 L1007.5,458.5 M906,479 L1007.5,469 M906,489.5 L1007.5,479.5 M906,500 L1007.5,490 M906,510.5 L1007.5,500.5 M906,521 L1007.5,511 M906,531.5 L1007.5,521.5 M906,542 L1007.5,532 M906,552.5 L1007.5,542.5 M906,563 L1007.5,553 M906,573.5 L1007.5,563.5 M906,584 L1007.5,574 M906,594.5 L1007.5,584.5 M906,605 L1007.5,595 M906,615.5 L1007.5,605.5 M906,626 L1007.5,616 M906,636.5 L1007.5,626.5 M906,647 L1007.5,637 M906,657.5 L1007.5,647.5 M906,668 L1007.5,658 M906,678.5 L1007.5,668.5 M906,689 L1007.5,679" stroke="#281a10" stroke-width="1.9" fill="none"/>
<g stroke="#fbf6ef" stroke-width="1.25" stroke-dasharray="3,7"><line x1="908.0" y1="468.8" x2="1007.5" y2="458.7" stroke-dashoffset="6"/><line x1="908.0" y1="479.3" x2="1007.5" y2="469.2" stroke-dashoffset="0"/><line x1="908.0" y1="489.8" x2="1007.5" y2="479.7" stroke-dashoffset="4"/><line x1="908.0" y1="500.3" x2="1007.5" y2="490.2" stroke-dashoffset="8"/><line x1="908.0" y1="510.8" x2="1007.5" y2="500.7" stroke-dashoffset="2"/><line x1="908.0" y1="521.3" x2="1007.5" y2="511.2" stroke-dashoffset="6"/><line x1="908.0" y1="531.8" x2="1007.5" y2="521.6" stroke-dashoffset="0"/><line x1="908.0" y1="542.3" x2="1007.5" y2="532.1" stroke-dashoffset="4"/><line x1="908.0" y1="552.8" x2="1007.5" y2="542.6" stroke-dashoffset="8"/><line x1="908.0" y1="563.3" x2="1007.5" y2="553.1" stroke-dashoffset="2"/><line x1="908.0" y1="573.8" x2="1007.5" y2="563.6" stroke-dashoffset="6"/><line x1="908.0" y1="584.3" x2="1007.5" y2="574.1" stroke-dashoffset="0"/><line x1="908.0" y1="594.8" x2="1007.5" y2="584.6" stroke-dashoffset="4"/><line x1="908.0" y1="605.3" x2="1007.5" y2="595.1" stroke-dashoffset="8"/><line x1="908.0" y1="615.8" x2="1007.5" y2="605.6" stroke-dashoffset="2"/><line x1="908.0" y1="626.3" x2="1007.5" y2="616.1" stroke-dashoffset="6"/><line x1="908.0" y1="636.8" x2="1007.5" y2="626.6" stroke-dashoffset="0"/><line x1="908.0" y1="647.3" x2="1007.5" y2="637.1" stroke-dashoffset="4"/><line x1="908.0" y1="657.8" x2="1007.5" y2="647.6" stroke-dashoffset="8"/><line x1="908.0" y1="668.3" x2="1007.5" y2="658.1" stroke-dashoffset="2"/><line x1="908.0" y1="678.8" x2="1007.5" y2="668.6" stroke-dashoffset="6"/><line x1="908.0" y1="689.3" x2="1007.5" y2="679.1" stroke-dashoffset="0"/></g>
</g>
<polyline points="1007.5,448 907,457 907,669.5 1007.5,660.5" fill="none" stroke="#231d19" stroke-width="2.5"/>
<polygon points="1010.5,425.5 1112,416.5 1112,631 1010.5,640" fill="#574030"/>
<clipPath id="c1010_425"><polygon points="1010.5,425.5 1112,416.5 1112,631 1010.5,640"/></clipPath><g clip-path="url(#c1010_425)">
<path d="M1010.5,431.5 L1112,421.5 L1112,427 L1010.5,437Z M1010.5,442 L1112,432 L1112,437.5 L1010.5,447.5Z M1010.5,452.5 L1112,442.5 L1112,448 L1010.5,458Z M1010.5,463 L1112,453 L1112,458.5 L1010.5,468.5Z M1010.5,473.5 L1112,463.5 L1112,469 L1010.5,479Z M1010.5,484 L1112,474 L1112,479.5 L1010.5,489.5Z M1010.5,494.5 L1112,484.5 L1112,490 L1010.5,500Z M1010.5,505 L1112,495 L1112,500.5 L1010.5,510.5Z M1010.5,515.5 L1112,505.5 L1112,511 L1010.5,521Z M1010.5,526 L1112,516 L1112,521.5 L1010.5,531.5Z M1010.5,536.5 L1112,526.5 L1112,532 L1010.5,542Z M1010.5,547 L1112,537 L1112,542.5 L1010.5,552.5Z M1010.5,557.5 L1112,547.5 L1112,553 L1010.5,563Z M1010.5,568 L1112,558 L1112,563.5 L1010.5,573.5Z M1010.5,578.5 L1112,568.5 L1112,574 L1010.5,584Z M1010.5,589 L1112,579 L1112,584.5 L1010.5,594.5Z M1010.5,599.5 L1112,589.5 L1112,595 L1010.5,605Z M1010.5,610 L1112,600 L1112,605.5 L1010.5,615.5Z M1010.5,620.5 L1112,610.5 L1112,616 L1010.5,626Z M1010.5,631 L1112,621 L1112,626.5 L1010.5,636.5Z M1010.5,641.5 L1112,631.5 L1112,637 L1010.5,647Z M1010.5,652 L1112,642 L1112,647.5 L1010.5,657.5Z" fill="#70543a"/>
<path d="M1010.5,438 L1112,428 M1010.5,448.5 L1112,438.5 M1010.5,459 L1112,449 M1010.5,469.5 L1112,459.5 M1010.5,480 L1112,470 M1010.5,490.5 L1112,480.5 M1010.5,501 L1112,491 M1010.5,511.5 L1112,501.5 M1010.5,522 L1112,512 M1010.5,532.5 L1112,522.5 M1010.5,543 L1112,533 M1010.5,553.5 L1112,543.5 M1010.5,564 L1112,554 M1010.5,574.5 L1112,564.5 M1010.5,585 L1112,575 M1010.5,595.5 L1112,585.5 M1010.5,606 L1112,596 M1010.5,616.5 L1112,606.5 M1010.5,627 L1112,617 M1010.5,637.5 L1112,627.5 M1010.5,648 L1112,638 M1010.5,658.5 L1112,648.5" stroke="#281a10" stroke-width="1.9" fill="none"/>
<g stroke="#fbf6ef" stroke-width="1.25" stroke-dasharray="3,7"><line x1="1012.5" y1="438.3" x2="1112.0" y2="428.2" stroke-dashoffset="6"/><line x1="1012.5" y1="448.8" x2="1112.0" y2="438.7" stroke-dashoffset="0"/><line x1="1012.5" y1="459.3" x2="1112.0" y2="449.2" stroke-dashoffset="4"/><line x1="1012.5" y1="469.8" x2="1112.0" y2="459.7" stroke-dashoffset="8"/><line x1="1012.5" y1="480.3" x2="1112.0" y2="470.2" stroke-dashoffset="2"/><line x1="1012.5" y1="490.8" x2="1112.0" y2="480.7" stroke-dashoffset="6"/><line x1="1012.5" y1="501.3" x2="1112.0" y2="491.2" stroke-dashoffset="0"/><line x1="1012.5" y1="511.8" x2="1112.0" y2="501.7" stroke-dashoffset="4"/><line x1="1012.5" y1="522.3" x2="1112.0" y2="512.1" stroke-dashoffset="8"/><line x1="1012.5" y1="532.8" x2="1112.0" y2="522.6" stroke-dashoffset="2"/><line x1="1012.5" y1="543.3" x2="1112.0" y2="533.1" stroke-dashoffset="6"/><line x1="1012.5" y1="553.8" x2="1112.0" y2="543.6" stroke-dashoffset="0"/><line x1="1012.5" y1="564.3" x2="1112.0" y2="554.1" stroke-dashoffset="4"/><line x1="1012.5" y1="574.8" x2="1112.0" y2="564.6" stroke-dashoffset="8"/><line x1="1012.5" y1="585.3" x2="1112.0" y2="575.1" stroke-dashoffset="2"/><line x1="1012.5" y1="595.8" x2="1112.0" y2="585.6" stroke-dashoffset="6"/><line x1="1012.5" y1="606.3" x2="1112.0" y2="596.1" stroke-dashoffset="0"/><line x1="1012.5" y1="616.8" x2="1112.0" y2="606.6" stroke-dashoffset="4"/><line x1="1012.5" y1="627.3" x2="1112.0" y2="617.1" stroke-dashoffset="8"/><line x1="1012.5" y1="637.8" x2="1112.0" y2="627.6" stroke-dashoffset="2"/><line x1="1012.5" y1="648.3" x2="1112.0" y2="638.1" stroke-dashoffset="6"/><line x1="1012.5" y1="658.8" x2="1112.0" y2="648.6" stroke-dashoffset="0"/></g>
</g>
<polyline points="1112,417.5 1011.5,426.5 1011.5,639 1112,630" fill="none" stroke="#231d19" stroke-width="2.5"/>
<polygon points="1115,395 1216.5,386 1216.5,600.5 1115,609.5" fill="#574030"/>
<clipPath id="c1115_395"><polygon points="1115,395 1216.5,386 1216.5,600.5 1115,609.5"/></clipPath><g clip-path="url(#c1115_395)">
<path d="M1115,401 L1216.5,391 L1216.5,396.5 L1115,406.5Z M1115,411.5 L1216.5,401.5 L1216.5,407 L1115,417Z M1115,422 L1216.5,412 L1216.5,417.5 L1115,427.5Z M1115,432.5 L1216.5,422.5 L1216.5,428 L1115,438Z M1115,443 L1216.5,433 L1216.5,438.5 L1115,448.5Z M1115,453.5 L1216.5,443.5 L1216.5,449 L1115,459Z M1115,464 L1216.5,454 L1216.5,459.5 L1115,469.5Z M1115,474.5 L1216.5,464.5 L1216.5,470 L1115,480Z M1115,485 L1216.5,475 L1216.5,480.5 L1115,490.5Z M1115,495.5 L1216.5,485.5 L1216.5,491 L1115,501Z M1115,506 L1216.5,496 L1216.5,501.5 L1115,511.5Z M1115,516.5 L1216.5,506.5 L1216.5,512 L1115,522Z M1115,527 L1216.5,517 L1216.5,522.5 L1115,532.5Z M1115,537.5 L1216.5,527.5 L1216.5,533 L1115,543Z M1115,548 L1216.5,538 L1216.5,543.5 L1115,553.5Z M1115,558.5 L1216.5,548.5 L1216.5,554 L1115,564Z M1115,569 L1216.5,559 L1216.5,564.5 L1115,574.5Z M1115,579.5 L1216.5,569.5 L1216.5,575 L1115,585Z M1115,590 L1216.5,580 L1216.5,585.5 L1115,595.5Z M1115,600.5 L1216.5,590.5 L1216.5,596 L1115,606Z M1115,611 L1216.5,601 L1216.5,606.5 L1115,616.5Z M1115,621.5 L1216.5,611.5 L1216.5,617 L1115,627Z" fill="#70543a"/>
<path d="M1115,407.5 L1216.5,397.5 M1115,418 L1216.5,408 M1115,428.5 L1216.5,418.5 M1115,439 L1216.5,429 M1115,449.5 L1216.5,439.5 M1115,460 L1216.5,450 M1115,470.5 L1216.5,460.5 M1115,481 L1216.5,471 M1115,491.5 L1216.5,481.5 M1115,502 L1216.5,492 M1115,512.5 L1216.5,502.5 M1115,523 L1216.5,513 M1115,533.5 L1216.5,523.5 M1115,544 L1216.5,534 M1115,554.5 L1216.5,544.5 M1115,565 L1216.5,555 M1115,575.5 L1216.5,565.5 M1115,586 L1216.5,576 M1115,596.5 L1216.5,586.5 M1115,607 L1216.5,597 M1115,617.5 L1216.5,607.5 M1115,628 L1216.5,618" stroke="#281a10" stroke-width="1.9" fill="none"/>
<g stroke="#fbf6ef" stroke-width="1.25" stroke-dasharray="3,7"><line x1="1117.0" y1="407.8" x2="1216.5" y2="397.7" stroke-dashoffset="6"/><line x1="1117.0" y1="418.3" x2="1216.5" y2="408.2" stroke-dashoffset="0"/><line x1="1117.0" y1="428.8" x2="1216.5" y2="418.7" stroke-dashoffset="4"/><line x1="1117.0" y1="439.3" x2="1216.5" y2="429.2" stroke-dashoffset="8"/><line x1="1117.0" y1="449.8" x2="1216.5" y2="439.7" stroke-dashoffset="2"/><line x1="1117.0" y1="460.3" x2="1216.5" y2="450.2" stroke-dashoffset="6"/><line x1="1117.0" y1="470.8" x2="1216.5" y2="460.7" stroke-dashoffset="0"/><line x1="1117.0" y1="481.3" x2="1216.5" y2="471.2" stroke-dashoffset="4"/><line x1="1117.0" y1="491.8" x2="1216.5" y2="481.7" stroke-dashoffset="8"/><line x1="1117.0" y1="502.3" x2="1216.5" y2="492.2" stroke-dashoffset="2"/><line x1="1117.0" y1="512.8" x2="1216.5" y2="502.7" stroke-dashoffset="6"/><line x1="1117.0" y1="523.3" x2="1216.5" y2="513.1" stroke-dashoffset="0"/><line x1="1117.0" y1="533.8" x2="1216.5" y2="523.6" stroke-dashoffset="4"/><line x1="1117.0" y1="544.3" x2="1216.5" y2="534.1" stroke-dashoffset="8"/><line x1="1117.0" y1="554.8" x2="1216.5" y2="544.6" stroke-dashoffset="2"/><line x1="1117.0" y1="565.3" x2="1216.5" y2="555.1" stroke-dashoffset="6"/><line x1="1117.0" y1="575.8" x2="1216.5" y2="565.6" stroke-dashoffset="0"/><line x1="1117.0" y1="586.3" x2="1216.5" y2="576.1" stroke-dashoffset="4"/><line x1="1117.0" y1="596.8" x2="1216.5" y2="586.6" stroke-dashoffset="8"/><line x1="1117.0" y1="607.3" x2="1216.5" y2="597.1" stroke-dashoffset="2"/><line x1="1117.0" y1="617.8" x2="1216.5" y2="607.6" stroke-dashoffset="6"/><line x1="1117.0" y1="628.3" x2="1216.5" y2="618.1" stroke-dashoffset="0"/></g>
</g>
<polyline points="1216.5,387 1116,396 1116,608.5 1216.5,599.5" fill="none" stroke="#231d19" stroke-width="2.5"/>
<polygon points="1219.5,364.5 1321,355.5 1321,570 1219.5,579" fill="#574030"/>
<clipPath id="c1219_364"><polygon points="1219.5,364.5 1321,355.5 1321,570 1219.5,579"/></clipPath><g clip-path="url(#c1219_364)">
<path d="M1219.5,370.5 L1321,360.5 L1321,366 L1219.5,376Z M1219.5,381 L1321,371 L1321,376.5 L1219.5,386.5Z M1219.5,391.5 L1321,381.5 L1321,387 L1219.5,397Z M1219.5,402 L1321,392 L1321,397.5 L1219.5,407.5Z M1219.5,412.5 L1321,402.5 L1321,408 L1219.5,418Z M1219.5,423 L1321,413 L1321,418.5 L1219.5,428.5Z M1219.5,433.5 L1321,423.5 L1321,429 L1219.5,439Z M1219.5,444 L1321,434 L1321,439.5 L1219.5,449.5Z M1219.5,454.5 L1321,444.5 L1321,450 L1219.5,460Z M1219.5,465 L1321,455 L1321,460.5 L1219.5,470.5Z M1219.5,475.5 L1321,465.5 L1321,471 L1219.5,481Z M1219.5,486 L1321,476 L1321,481.5 L1219.5,491.5Z M1219.5,496.5 L1321,486.5 L1321,492 L1219.5,502Z M1219.5,507 L1321,497 L1321,502.5 L1219.5,512.5Z M1219.5,517.5 L1321,507.5 L1321,513 L1219.5,523Z M1219.5,528 L1321,518 L1321,523.5 L1219.5,533.5Z M1219.5,538.5 L1321,528.5 L1321,534 L1219.5,544Z M1219.5,549 L1321,539 L1321,544.5 L1219.5,554.5Z M1219.5,559.5 L1321,549.5 L1321,555 L1219.5,565Z M1219.5,570 L1321,560 L1321,565.5 L1219.5,575.5Z M1219.5,580.5 L1321,570.5 L1321,576 L1219.5,586Z M1219.5,591 L1321,581 L1321,586.5 L1219.5,596.5Z" fill="#70543a"/>
<path d="M1219.5,377 L1321,367 M1219.5,387.5 L1321,377.5 M1219.5,398 L1321,388 M1219.5,408.5 L1321,398.5 M1219.5,419 L1321,409 M1219.5,429.5 L1321,419.5 M1219.5,440 L1321,430 M1219.5,450.5 L1321,440.5 M1219.5,461 L1321,451 M1219.5,471.5 L1321,461.5 M1219.5,482 L1321,472 M1219.5,492.5 L1321,482.5 M1219.5,503 L1321,493 M1219.5,513.5 L1321,503.5 M1219.5,524 L1321,514 M1219.5,534.5 L1321,524.5 M1219.5,545 L1321,535 M1219.5,555.5 L1321,545.5 M1219.5,566 L1321,556 M1219.5,576.5 L1321,566.5 M1219.5,587 L1321,577 M1219.5,597.5 L1321,587.5" stroke="#281a10" stroke-width="1.9" fill="none"/>
<g stroke="#fbf6ef" stroke-width="1.25" stroke-dasharray="3,7"><line x1="1221.5" y1="377.3" x2="1321.0" y2="367.2" stroke-dashoffset="6"/><line x1="1221.5" y1="387.8" x2="1321.0" y2="377.7" stroke-dashoffset="0"/><line x1="1221.5" y1="398.3" x2="1321.0" y2="388.2" stroke-dashoffset="4"/><line x1="1221.5" y1="408.8" x2="1321.0" y2="398.7" stroke-dashoffset="8"/><line x1="1221.5" y1="419.3" x2="1321.0" y2="409.2" stroke-dashoffset="2"/><line x1="1221.5" y1="429.8" x2="1321.0" y2="419.7" stroke-dashoffset="6"/><line x1="1221.5" y1="440.3" x2="1321.0" y2="430.2" stroke-dashoffset="0"/><line x1="1221.5" y1="450.8" x2="1321.0" y2="440.7" stroke-dashoffset="4"/><line x1="1221.5" y1="461.3" x2="1321.0" y2="451.2" stroke-dashoffset="8"/><line x1="1221.5" y1="471.8" x2="1321.0" y2="461.7" stroke-dashoffset="2"/><line x1="1221.5" y1="482.3" x2="1321.0" y2="472.2" stroke-dashoffset="6"/><line x1="1221.5" y1="492.8" x2="1321.0" y2="482.7" stroke-dashoffset="0"/><line x1="1221.5" y1="503.3" x2="1321.0" y2="493.2" stroke-dashoffset="4"/><line x1="1221.5" y1="513.8" x2="1321.0" y2="503.7" stroke-dashoffset="8"/><line x1="1221.5" y1="524.3" x2="1321.0" y2="514.1" stroke-dashoffset="2"/><line x1="1221.5" y1="534.8" x2="1321.0" y2="524.6" stroke-dashoffset="6"/><line x1="1221.5" y1="545.3" x2="1321.0" y2="535.1" stroke-dashoffset="0"/><line x1="1221.5" y1="555.8" x2="1321.0" y2="545.6" stroke-dashoffset="4"/><line x1="1221.5" y1="566.3" x2="1321.0" y2="556.1" stroke-dashoffset="8"/><line x1="1221.5" y1="576.8" x2="1321.0" y2="566.6" stroke-dashoffset="2"/><line x1="1221.5" y1="587.3" x2="1321.0" y2="577.1" stroke-dashoffset="6"/><line x1="1221.5" y1="597.8" x2="1321.0" y2="587.6" stroke-dashoffset="0"/></g>
</g>
<polyline points="1321,356.5 1220.5,365.5 1220.5,578 1321,569" fill="none" stroke="#231d19" stroke-width="2.5"/>
<polygon points="1292.5,525 1296,507 1300,503 1305,498 1310,493.5 1318,489 1326,484 1338,478 1350,475 1363,471.5 1375,468.5 1383,467 1390,465.5 1394.5,465 1398,464.5 1402,463.5 1405,463 1413.5,461.5 1421.5,460 1430,459 1438,458.5 1446.5,458 1454.5,457.5 1463,456.5 1471,456 1479.5,455.5 1487.5,456 1496,456 1504,456.5 1512.5,456.5 1520.5,456.5 1529,457 1537.5,458 1545.5,459 1554,460 1562,461 1570.5,462 1578.5,463 1587,464.5 1595,466 1603.5,467 1611.5,468.5 1620,470 1628,471.5 1636.5,473.5 1644.5,476.5 1653,479 1653,693 1644.5,690.5 1636.5,688.5 1628,686 1620,683.5 1611.5,681.5 1603.5,679 1595,677 1587,674.5 1578.5,672.5 1570.5,671.5 1562,670.5 1554,669 1545.5,668 1537.5,667 1529,665.5 1520.5,665.5 1512.5,665 1504,665 1496,665 1487.5,664.5 1479.5,664.5 1471,664.5 1463,665.5 1454.5,666 1446.5,666.5 1438,667 1430,667.5 1421.5,669 1413.5,671 1405,673 1402,673.5 1398,674 1394.5,674 1390,674.5 1383,675.5 1375,676 1363,677.5 1350,679 1338,680.5 1326,684 1318,686.5 1310,689 1305,690.5 1300,692 1296,693 1292.5,694" fill="#5e4532"/>
<clipPath id="cw1292_525"><polygon points="1292.5,525 1296,507 1300,503 1305,498 1310,493.5 1318,489 1326,484 1338,478 1350,475 1363,471.5 1375,468.5 1383,467 1390,465.5 1394.5,465 1398,464.5 1402,463.5 1405,463 1413.5,461.5 1421.5,460 1430,459 1438,458.5 1446.5,458 1454.5,457.5 1463,456.5 1471,456 1479.5,455.5 1487.5,456 1496,456 1504,456.5 1512.5,456.5 1520.5,456.5 1529,457 1537.5,458 1545.5,459 1554,460 1562,461 1570.5,462 1578.5,463 1587,464.5 1595,466 1603.5,467 1611.5,468.5 1620,470 1628,471.5 1636.5,473.5 1644.5,476.5 1653,479 1653,693 1644.5,690.5 1636.5,688.5 1628,686 1620,683.5 1611.5,681.5 1603.5,679 1595,677 1587,674.5 1578.5,672.5 1570.5,671.5 1562,670.5 1554,669 1545.5,668 1537.5,667 1529,665.5 1520.5,665.5 1512.5,665 1504,665 1496,665 1487.5,664.5 1479.5,664.5 1471,664.5 1463,665.5 1454.5,666 1446.5,666.5 1438,667 1430,667.5 1421.5,669 1413.5,671 1405,673 1402,673.5 1398,674 1394.5,674 1390,674.5 1383,675.5 1375,676 1363,677.5 1350,679 1338,680.5 1326,684 1318,686.5 1310,689 1305,690.5 1300,692 1296,693 1292.5,694"/></clipPath><g clip-path="url(#cw1292_525)">
<path d="M1292.5,519 L1296,500.5 L1300,496.5 L1305,491.5 L1310,486.5 L1318,482 L1326,477 L1338,471 L1350,468 L1363,464 L1375,461 L1383,459.5 L1390,458.5 L1394.5,457.5 L1398,457 L1402,456.5 L1405,455.5 L1413.5,454.5 L1421.5,453 L1430,452 L1438,451 L1446.5,450.5 L1454.5,450 L1463,449.5 L1471,448.5 L1479.5,448.5 L1487.5,448.5 L1496,449 L1504,449 L1512.5,449 L1520.5,449.5 L1529,449.5 L1537.5,450.5 L1545.5,451.5 L1554,452.5 L1562,453.5 L1570.5,454.5 L1578.5,455.5 L1587,457 L1595,458.5 L1603.5,460 L1611.5,461 L1620,462.5 L1628,464 L1636.5,466 L1644.5,469 L1653,471.5 L1653,478 L1644.5,475.5 L1636.5,472.5 L1628,471 L1620,469.5 L1611.5,468 L1603.5,466.5 L1595,465 L1587,463.5 L1578.5,462 L1570.5,461 L1562,460 L1554,459 L1545.5,458 L1537.5,457 L1529,456 L1520.5,456 L1512.5,455.5 L1504,455.5 L1496,455.5 L1487.5,455 L1479.5,455 L1471,455 L1463,456 L1454.5,456.5 L1446.5,457 L1438,457.5 L1430,458.5 L1421.5,459.5 L1413.5,461 L1405,462.5 L1402,463 L1398,463.5 L1394.5,464 L1390,465 L1383,466 L1375,467.5 L1363,470.5 L1350,474 L1338,477.5 L1326,483.5 L1318,488 L1310,492.5 L1305,497 L1300,502 L1296,506 L1292.5,524Z M1292.5,527.5 L1296,510 L1300,506 L1305,501 L1310,496.5 L1318,492 L1326,487 L1338,481 L1350,478 L1363,474.5 L1375,471.5 L1383,470 L1390,469 L1394.5,468 L1398,467.5 L1402,466.5 L1405,466 L1413.5,465 L1421.5,463.5 L1430,462 L1438,461.5 L1446.5,461 L1454.5,460.5 L1463,460 L1471,459 L1479.5,459 L1487.5,459 L1496,459 L1504,459.5 L1512.5,459.5 L1520.5,460 L1529,460 L1537.5,461 L1545.5,462 L1554,463 L1562,464 L1570.5,465 L1578.5,466 L1587,467.5 L1595,469 L1603.5,470.5 L1611.5,472 L1620,473.5 L1628,475 L1636.5,477 L1644.5,479.5 L1653,482 L1653,489 L1644.5,486 L1636.5,483.5 L1628,481.5 L1620,480 L1611.5,478.5 L1603.5,477 L1595,475.5 L1587,474 L1578.5,472.5 L1570.5,471.5 L1562,470.5 L1554,469.5 L1545.5,468.5 L1537.5,467.5 L1529,466.5 L1520.5,466.5 L1512.5,466 L1504,466 L1496,465.5 L1487.5,465.5 L1479.5,465.5 L1471,465.5 L1463,466.5 L1454.5,467 L1446.5,467.5 L1438,468 L1430,468.5 L1421.5,470 L1413.5,471.5 L1405,473 L1402,473.5 L1398,474 L1394.5,474.5 L1390,475.5 L1383,476.5 L1375,478 L1363,481 L1350,484.5 L1338,487.5 L1326,493.5 L1318,498 L1310,502.5 L1305,507 L1300,511.5 L1296,515.5 L1292.5,532.5Z M1292.5,536 L1296,519 L1300,515.5 L1305,510.5 L1310,506 L1318,501.5 L1326,497 L1338,491.5 L1350,488 L1363,485 L1375,482 L1383,480.5 L1390,479.5 L1394.5,478.5 L1398,478 L1402,477 L1405,476.5 L1413.5,475 L1421.5,474 L1430,472.5 L1438,472 L1446.5,471.5 L1454.5,471 L1463,470 L1471,469.5 L1479.5,469 L1487.5,469.5 L1496,469.5 L1504,470 L1512.5,470 L1520.5,470.5 L1529,470.5 L1537.5,471.5 L1545.5,472.5 L1554,473.5 L1562,474.5 L1570.5,475.5 L1578.5,476.5 L1587,478 L1595,479.5 L1603.5,481 L1611.5,482.5 L1620,484 L1628,485.5 L1636.5,487.5 L1644.5,490 L1653,493 L1653,499.5 L1644.5,497 L1636.5,494 L1628,492 L1620,490.5 L1611.5,489 L1603.5,487.5 L1595,486 L1587,484.5 L1578.5,483 L1570.5,482 L1562,481 L1554,480 L1545.5,479 L1537.5,478 L1529,477 L1520.5,477 L1512.5,476.5 L1504,476.5 L1496,476 L1487.5,476 L1479.5,475.5 L1471,476 L1463,476.5 L1454.5,477.5 L1446.5,478 L1438,478.5 L1430,479 L1421.5,480.5 L1413.5,482 L1405,483.5 L1402,484 L1398,484.5 L1394.5,485 L1390,486 L1383,487 L1375,488.5 L1363,491.5 L1350,494.5 L1338,497.5 L1326,503.5 L1318,508 L1310,512 L1305,516.5 L1300,521 L1296,525 L1292.5,541Z M1292.5,544.5 L1296,528.5 L1300,524.5 L1305,520 L1310,516 L1318,511.5 L1326,507 L1338,501.5 L1350,498.5 L1363,495 L1375,492 L1383,491 L1390,489.5 L1394.5,489 L1398,488.5 L1402,487.5 L1405,487 L1413.5,485.5 L1421.5,484 L1430,483 L1438,482.5 L1446.5,482 L1454.5,481.5 L1463,480.5 L1471,480 L1479.5,479.5 L1487.5,480 L1496,480 L1504,480.5 L1512.5,480.5 L1520.5,480.5 L1529,481 L1537.5,482 L1545.5,483 L1554,484 L1562,485 L1570.5,486 L1578.5,487 L1587,488.5 L1595,490 L1603.5,491.5 L1611.5,493 L1620,494.5 L1628,496 L1636.5,498 L1644.5,501 L1653,503.5 L1653,510.5 L1644.5,507.5 L1636.5,505 L1628,503 L1620,501.5 L1611.5,500 L1603.5,498 L1595,496.5 L1587,495 L1578.5,493.5 L1570.5,492.5 L1562,491.5 L1554,490.5 L1545.5,489.5 L1537.5,488.5 L1529,487.5 L1520.5,487 L1512.5,487 L1504,487 L1496,486.5 L1487.5,486.5 L1479.5,486 L1471,486.5 L1463,487 L1454.5,488 L1446.5,488.5 L1438,489 L1430,489.5 L1421.5,490.5 L1413.5,492 L1405,494 L1402,494.5 L1398,495 L1394.5,495.5 L1390,496 L1383,497.5 L1375,498.5 L1363,501.5 L1350,505 L1338,508 L1326,513.5 L1318,517.5 L1310,522 L1305,526 L1300,530.5 L1296,534 L1292.5,549.5Z M1292.5,553 L1296,537.5 L1300,534 L1305,529.5 L1310,525.5 L1318,521.5 L1326,517 L1338,511.5 L1350,508.5 L1363,505.5 L1375,502.5 L1383,501.5 L1390,500 L1394.5,499.5 L1398,499 L1402,498 L1405,497.5 L1413.5,496 L1421.5,494.5 L1430,493.5 L1438,493 L1446.5,492.5 L1454.5,491.5 L1463,491 L1471,490.5 L1479.5,490 L1487.5,490.5 L1496,490.5 L1504,490.5 L1512.5,491 L1520.5,491 L1529,491.5 L1537.5,492.5 L1545.5,493.5 L1554,494.5 L1562,495.5 L1570.5,496.5 L1578.5,497.5 L1587,499 L1595,500.5 L1603.5,502 L1611.5,504 L1620,505.5 L1628,507 L1636.5,509 L1644.5,511.5 L1653,514.5 L1653,521 L1644.5,518.5 L1636.5,515.5 L1628,513.5 L1620,512 L1611.5,510.5 L1603.5,509 L1595,507 L1587,505.5 L1578.5,504 L1570.5,503 L1562,502 L1554,501 L1545.5,500 L1537.5,499 L1529,498 L1520.5,497.5 L1512.5,497.5 L1504,497 L1496,497 L1487.5,497 L1479.5,496.5 L1471,497 L1463,497.5 L1454.5,498 L1446.5,499 L1438,499.5 L1430,500 L1421.5,501 L1413.5,502.5 L1405,504.5 L1402,504.5 L1398,505.5 L1394.5,506 L1390,506.5 L1383,508 L1375,509 L1363,512 L1350,515 L1338,518 L1326,523.5 L1318,527.5 L1310,531.5 L1305,535.5 L1300,540 L1296,543.5 L1292.5,558Z M1292.5,561.5 L1296,547 L1300,543.5 L1305,539.5 L1310,535.5 L1318,531.5 L1326,527 L1338,521.5 L1350,519 L1363,516 L1375,513 L1383,511.5 L1390,510.5 L1394.5,510 L1398,509.5 L1402,508.5 L1405,508 L1413.5,506.5 L1421.5,505 L1430,504 L1438,503.5 L1446.5,502.5 L1454.5,502 L1463,501.5 L1471,501 L1479.5,500.5 L1487.5,500.5 L1496,501 L1504,501 L1512.5,501.5 L1520.5,501.5 L1529,502 L1537.5,503 L1545.5,504 L1554,505 L1562,506 L1570.5,507 L1578.5,508 L1587,509.5 L1595,511 L1603.5,513 L1611.5,514.5 L1620,516 L1628,517.5 L1636.5,519.5 L1644.5,522.5 L1653,525 L1653,531.5 L1644.5,529 L1636.5,526.5 L1628,524.5 L1620,522.5 L1611.5,521 L1603.5,519.5 L1595,517.5 L1587,516 L1578.5,514.5 L1570.5,513.5 L1562,512.5 L1554,511.5 L1545.5,510.5 L1537.5,509.5 L1529,508.5 L1520.5,508 L1512.5,508 L1504,507.5 L1496,507.5 L1487.5,507 L1479.5,507 L1471,507.5 L1463,508 L1454.5,508.5 L1446.5,509 L1438,510 L1430,510.5 L1421.5,511.5 L1413.5,513 L1405,515 L1402,515 L1398,516 L1394.5,516.5 L1390,517 L1383,518 L1375,519.5 L1363,522 L1350,525 L1338,528 L1326,533.5 L1318,537.5 L1310,541.5 L1305,545.5 L1300,549.5 L1296,552.5 L1292.5,566.5Z M1292.5,570 L1296,556.5 L1300,553 L1305,549 L1310,545 L1318,541 L1326,537 L1338,532 L1350,529 L1363,526 L1375,523.5 L1383,522 L1390,521 L1394.5,520.5 L1398,520 L1402,519 L1405,518.5 L1413.5,517 L1421.5,515.5 L1430,514.5 L1438,514 L1446.5,513 L1454.5,512.5 L1463,512 L1471,511.5 L1479.5,511 L1487.5,511 L1496,511.5 L1504,511.5 L1512.5,512 L1520.5,512 L1529,512 L1537.5,513.5 L1545.5,514.5 L1554,515.5 L1562,516.5 L1570.5,517.5 L1578.5,518.5 L1587,520 L1595,521.5 L1603.5,523.5 L1611.5,525 L1620,526.5 L1628,528.5 L1636.5,530.5 L1644.5,533 L1653,535.5 L1653,542.5 L1644.5,540 L1636.5,537 L1628,535 L1620,533.5 L1611.5,531.5 L1603.5,530 L1595,528.5 L1587,526.5 L1578.5,525 L1570.5,524 L1562,523 L1554,522 L1545.5,521 L1537.5,520 L1529,518.5 L1520.5,518.5 L1512.5,518.5 L1504,518 L1496,518 L1487.5,517.5 L1479.5,517.5 L1471,518 L1463,518.5 L1454.5,519 L1446.5,519.5 L1438,520.5 L1430,521 L1421.5,522 L1413.5,523.5 L1405,525.5 L1402,525.5 L1398,526.5 L1394.5,527 L1390,527.5 L1383,528.5 L1375,530 L1363,532.5 L1350,535.5 L1338,538 L1326,543.5 L1318,547.5 L1310,551.5 L1305,555 L1300,559 L1296,562 L1292.5,575Z M1292.5,578 L1296,565.5 L1300,562.5 L1305,558.5 L1310,555 L1318,551 L1326,547 L1338,542 L1350,539 L1363,536.5 L1375,534 L1383,532.5 L1390,531.5 L1394.5,531 L1398,530.5 L1402,529.5 L1405,529 L1413.5,527.5 L1421.5,526 L1430,525 L1438,524 L1446.5,523.5 L1454.5,523 L1463,522.5 L1471,522 L1479.5,521.5 L1487.5,521.5 L1496,522 L1504,522 L1512.5,522 L1520.5,522.5 L1529,522.5 L1537.5,523.5 L1545.5,525 L1554,526 L1562,527 L1570.5,528 L1578.5,529 L1587,530.5 L1595,532 L1603.5,534 L1611.5,535.5 L1620,537.5 L1628,539 L1636.5,541 L1644.5,544 L1653,546.5 L1653,553 L1644.5,550.5 L1636.5,548 L1628,546 L1620,544 L1611.5,542.5 L1603.5,540.5 L1595,539 L1587,537 L1578.5,535.5 L1570.5,534.5 L1562,533.5 L1554,532.5 L1545.5,531.5 L1537.5,530 L1529,529 L1520.5,529 L1512.5,528.5 L1504,528.5 L1496,528.5 L1487.5,528 L1479.5,528 L1471,528.5 L1463,529 L1454.5,529.5 L1446.5,530 L1438,530.5 L1430,531.5 L1421.5,532.5 L1413.5,534 L1405,535.5 L1402,536 L1398,537 L1394.5,537.5 L1390,538 L1383,539 L1375,540.5 L1363,543 L1350,545.5 L1338,548 L1326,553.5 L1318,557 L1310,561 L1305,564.5 L1300,568.5 L1296,571.5 L1292.5,583.5Z M1292.5,586.5 L1296,575 L1300,572 L1305,568 L1310,565 L1318,561 L1326,557 L1338,552 L1350,549.5 L1363,546.5 L1375,544 L1383,543 L1390,542 L1394.5,541 L1398,541 L1402,540 L1405,539.5 L1413.5,538 L1421.5,536.5 L1430,535.5 L1438,534.5 L1446.5,534 L1454.5,533.5 L1463,533 L1471,532 L1479.5,532 L1487.5,532 L1496,532 L1504,532.5 L1512.5,532.5 L1520.5,533 L1529,533 L1537.5,534 L1545.5,535 L1554,536.5 L1562,537.5 L1570.5,538.5 L1578.5,539.5 L1587,541 L1595,543 L1603.5,544.5 L1611.5,546.5 L1620,548 L1628,550 L1636.5,552 L1644.5,554.5 L1653,557 L1653,564 L1644.5,561 L1636.5,558.5 L1628,556.5 L1620,554.5 L1611.5,553 L1603.5,551 L1595,549.5 L1587,547.5 L1578.5,546 L1570.5,545 L1562,544 L1554,543 L1545.5,541.5 L1537.5,540.5 L1529,539.5 L1520.5,539.5 L1512.5,539 L1504,539 L1496,539 L1487.5,538.5 L1479.5,538.5 L1471,538.5 L1463,539.5 L1454.5,540 L1446.5,540.5 L1438,541 L1430,542 L1421.5,543 L1413.5,544.5 L1405,546 L1402,546.5 L1398,547.5 L1394.5,548 L1390,548.5 L1383,549.5 L1375,550.5 L1363,553 L1350,555.5 L1338,558.5 L1326,563.5 L1318,567 L1310,571 L1305,574 L1300,577.5 L1296,580.5 L1292.5,592Z M1292.5,595 L1296,584 L1300,581.5 L1305,578 L1310,574.5 L1318,571 L1326,567 L1338,562 L1350,559.5 L1363,557 L1375,554.5 L1383,553.5 L1390,552.5 L1394.5,551.5 L1398,551 L1402,550.5 L1405,550 L1413.5,548.5 L1421.5,547 L1430,545.5 L1438,545 L1446.5,544.5 L1454.5,544 L1463,543.5 L1471,542.5 L1479.5,542.5 L1487.5,542.5 L1496,542.5 L1504,543 L1512.5,543 L1520.5,543.5 L1529,543.5 L1537.5,544.5 L1545.5,545.5 L1554,547 L1562,548 L1570.5,549 L1578.5,550 L1587,551.5 L1595,553.5 L1603.5,555 L1611.5,557 L1620,558.5 L1628,560.5 L1636.5,562.5 L1644.5,565 L1653,568 L1653,574.5 L1644.5,572 L1636.5,569.5 L1628,567.5 L1620,565.5 L1611.5,563.5 L1603.5,561.5 L1595,560 L1587,558 L1578.5,556.5 L1570.5,555.5 L1562,554.5 L1554,553.5 L1545.5,552 L1537.5,551 L1529,550 L1520.5,550 L1512.5,549.5 L1504,549.5 L1496,549 L1487.5,549 L1479.5,549 L1471,549 L1463,550 L1454.5,550.5 L1446.5,551 L1438,551.5 L1430,552 L1421.5,553.5 L1413.5,555 L1405,556.5 L1402,557 L1398,558 L1394.5,558 L1390,559 L1383,560 L1375,561 L1363,563.5 L1350,566 L1338,568.5 L1326,573.5 L1318,577 L1310,580.5 L1305,584 L1300,587 L1296,590 L1292.5,600Z M1292.5,603.5 L1296,593.5 L1300,591 L1305,587.5 L1310,584.5 L1318,580.5 L1326,577 L1338,572.5 L1350,570 L1363,567.5 L1375,565 L1383,564 L1390,563 L1394.5,562 L1398,561.5 L1402,561 L1405,560.5 L1413.5,559 L1421.5,557.5 L1430,556 L1438,555.5 L1446.5,555 L1454.5,554.5 L1463,553.5 L1471,553 L1479.5,552.5 L1487.5,553 L1496,553 L1504,553.5 L1512.5,553.5 L1520.5,553.5 L1529,554 L1537.5,555 L1545.5,556 L1554,557 L1562,558.5 L1570.5,559.5 L1578.5,560.5 L1587,562 L1595,564 L1603.5,565.5 L1611.5,567.5 L1620,569.5 L1628,571.5 L1636.5,573.5 L1644.5,576 L1653,578.5 L1653,585 L1644.5,582.5 L1636.5,580 L1628,578 L1620,576 L1611.5,574 L1603.5,572.5 L1595,570.5 L1587,568.5 L1578.5,567 L1570.5,566 L1562,565 L1554,563.5 L1545.5,562.5 L1537.5,561.5 L1529,560.5 L1520.5,560 L1512.5,560 L1504,560 L1496,559.5 L1487.5,559.5 L1479.5,559 L1471,559.5 L1463,560 L1454.5,561 L1446.5,561.5 L1438,562 L1430,562.5 L1421.5,564 L1413.5,565.5 L1405,567 L1402,567.5 L1398,568 L1394.5,568.5 L1390,569.5 L1383,570.5 L1375,571.5 L1363,573.5 L1350,576 L1338,578.5 L1326,583.5 L1318,587 L1310,590.5 L1305,593.5 L1300,596.5 L1296,599 L1292.5,608.5Z M1292.5,612 L1296,603 L1300,600 L1305,597 L1310,594 L1318,590.5 L1326,587 L1338,582.5 L1350,580 L1363,577.5 L1375,575.5 L1383,574.5 L1390,573.5 L1394.5,572.5 L1398,572 L1402,571.5 L1405,571 L1413.5,569.5 L1421.5,568 L1430,566.5 L1438,566 L1446.5,565.5 L1454.5,564.5 L1463,564 L1471,563.5 L1479.5,563 L1487.5,563.5 L1496,563.5 L1504,564 L1512.5,564 L1520.5,564 L1529,564.5 L1537.5,565.5 L1545.5,566.5 L1554,567.5 L1562,569 L1570.5,570 L1578.5,571 L1587,572.5 L1595,574.5 L1603.5,576.5 L1611.5,578 L1620,580 L1628,582 L1636.5,584 L1644.5,586.5 L1653,589 L1653,596 L1644.5,593.5 L1636.5,591 L1628,588.5 L1620,587 L1611.5,585 L1603.5,583 L1595,581 L1587,579 L1578.5,577.5 L1570.5,576.5 L1562,575.5 L1554,574 L1545.5,573 L1537.5,572 L1529,571 L1520.5,570.5 L1512.5,570.5 L1504,570.5 L1496,570 L1487.5,570 L1479.5,569.5 L1471,570 L1463,570.5 L1454.5,571 L1446.5,572 L1438,572.5 L1430,573 L1421.5,574.5 L1413.5,576 L1405,577.5 L1402,578 L1398,578.5 L1394.5,579 L1390,580 L1383,581 L1375,582 L1363,584 L1350,586.5 L1338,588.5 L1326,593.5 L1318,596.5 L1310,600 L1305,603 L1300,606 L1296,608.5 L1292.5,617Z M1292.5,620.5 L1296,612 L1300,609.5 L1305,606.5 L1310,604 L1318,600.5 L1326,597 L1338,592.5 L1350,590 L1363,588 L1375,586 L1383,584.5 L1390,583.5 L1394.5,583 L1398,582.5 L1402,582 L1405,581.5 L1413.5,580 L1421.5,578 L1430,577 L1438,576.5 L1446.5,576 L1454.5,575 L1463,574.5 L1471,574 L1479.5,573.5 L1487.5,574 L1496,574 L1504,574 L1512.5,574.5 L1520.5,574.5 L1529,575 L1537.5,576 L1545.5,577 L1554,578 L1562,579 L1570.5,580.5 L1578.5,581.5 L1587,583 L1595,585 L1603.5,587 L1611.5,589 L1620,591 L1628,592.5 L1636.5,595 L1644.5,597.5 L1653,600 L1653,606.5 L1644.5,604 L1636.5,601.5 L1628,599.5 L1620,597.5 L1611.5,595.5 L1603.5,593.5 L1595,591.5 L1587,589.5 L1578.5,588 L1570.5,587 L1562,586 L1554,584.5 L1545.5,583.5 L1537.5,582.5 L1529,581.5 L1520.5,581 L1512.5,581 L1504,580.5 L1496,580.5 L1487.5,580.5 L1479.5,580 L1471,580.5 L1463,581 L1454.5,581.5 L1446.5,582.5 L1438,583 L1430,583.5 L1421.5,584.5 L1413.5,586.5 L1405,588 L1402,588.5 L1398,589 L1394.5,589.5 L1390,590 L1383,591 L1375,592.5 L1363,594.5 L1350,596.5 L1338,599 L1326,603.5 L1318,606.5 L1310,610 L1305,612.5 L1300,615.5 L1296,618 L1292.5,625.5Z M1292.5,629 L1296,621.5 L1300,619 L1305,616.5 L1310,613.5 L1318,610.5 L1326,607 L1338,602.5 L1350,600.5 L1363,598 L1375,596 L1383,595 L1390,594 L1394.5,593.5 L1398,593 L1402,592.5 L1405,592 L1413.5,590.5 L1421.5,588.5 L1430,587.5 L1438,587 L1446.5,586 L1454.5,585.5 L1463,585 L1471,584.5 L1479.5,584 L1487.5,584 L1496,584.5 L1504,584.5 L1512.5,585 L1520.5,585 L1529,585.5 L1537.5,586.5 L1545.5,587.5 L1554,588.5 L1562,589.5 L1570.5,591 L1578.5,592 L1587,593.5 L1595,595.5 L1603.5,597.5 L1611.5,599.5 L1620,601.5 L1628,603.5 L1636.5,605.5 L1644.5,608 L1653,610.5 L1653,617.5 L1644.5,615 L1636.5,612.5 L1628,610 L1620,608 L1611.5,606 L1603.5,604 L1595,602 L1587,600 L1578.5,598.5 L1570.5,597.5 L1562,596 L1554,595 L1545.5,594 L1537.5,593 L1529,592 L1520.5,591.5 L1512.5,591.5 L1504,591 L1496,591 L1487.5,590.5 L1479.5,590.5 L1471,591 L1463,591.5 L1454.5,592 L1446.5,592.5 L1438,593.5 L1430,594 L1421.5,595 L1413.5,597 L1405,598.5 L1402,599 L1398,599.5 L1394.5,600 L1390,600.5 L1383,601.5 L1375,602.5 L1363,604.5 L1350,606.5 L1338,609 L1326,613.5 L1318,616.5 L1310,619.5 L1305,622 L1300,625 L1296,627 L1292.5,634Z M1292.5,637.5 L1296,630.5 L1300,628.5 L1305,626 L1310,623.5 L1318,620.5 L1326,617 L1338,613 L1350,610.5 L1363,608.5 L1375,606.5 L1383,605.5 L1390,604.5 L1394.5,604 L1398,603.5 L1402,603 L1405,602.5 L1413.5,601 L1421.5,599 L1430,598 L1438,597 L1446.5,596.5 L1454.5,596 L1463,595.5 L1471,595 L1479.5,594.5 L1487.5,594.5 L1496,595 L1504,595 L1512.5,595.5 L1520.5,595.5 L1529,595.5 L1537.5,597 L1545.5,598 L1554,599 L1562,600 L1570.5,601.5 L1578.5,602.5 L1587,604 L1595,606 L1603.5,608 L1611.5,610 L1620,612 L1628,614 L1636.5,616.5 L1644.5,619 L1653,621.5 L1653,628 L1644.5,625.5 L1636.5,623 L1628,621 L1620,619 L1611.5,616.5 L1603.5,614.5 L1595,612.5 L1587,610.5 L1578.5,609 L1570.5,608 L1562,606.5 L1554,605.5 L1545.5,604.5 L1537.5,603.5 L1529,602 L1520.5,602 L1512.5,602 L1504,601.5 L1496,601.5 L1487.5,601 L1479.5,601 L1471,601.5 L1463,602 L1454.5,602.5 L1446.5,603 L1438,603.5 L1430,604.5 L1421.5,605.5 L1413.5,607.5 L1405,609 L1402,609.5 L1398,610 L1394.5,610.5 L1390,611 L1383,612 L1375,613 L1363,615 L1350,617 L1338,619 L1326,623.5 L1318,626.5 L1310,629.5 L1305,632 L1300,634.5 L1296,636.5 L1292.5,642.5Z M1292.5,646 L1296,640 L1300,638 L1305,635.5 L1310,633 L1318,630 L1326,627 L1338,623 L1350,621 L1363,619 L1375,617 L1383,616 L1390,615 L1394.5,614.5 L1398,614 L1402,613.5 L1405,613 L1413.5,611.5 L1421.5,609.5 L1430,608.5 L1438,607.5 L1446.5,607 L1454.5,606.5 L1463,606 L1471,605 L1479.5,605 L1487.5,605 L1496,605.5 L1504,605.5 L1512.5,605.5 L1520.5,606 L1529,606 L1537.5,607.5 L1545.5,608.5 L1554,609.5 L1562,610.5 L1570.5,612 L1578.5,613 L1587,614.5 L1595,616.5 L1603.5,618.5 L1611.5,620.5 L1620,623 L1628,625 L1636.5,627 L1644.5,629.5 L1653,632 L1653,638.5 L1644.5,636.5 L1636.5,634 L1628,631.5 L1620,629.5 L1611.5,627.5 L1603.5,625.5 L1595,623 L1587,621 L1578.5,619.5 L1570.5,618.5 L1562,617 L1554,616 L1545.5,615 L1537.5,614 L1529,612.5 L1520.5,612.5 L1512.5,612 L1504,612 L1496,612 L1487.5,611.5 L1479.5,611.5 L1471,612 L1463,612.5 L1454.5,613 L1446.5,613.5 L1438,614 L1430,615 L1421.5,616 L1413.5,618 L1405,619.5 L1402,620 L1398,620.5 L1394.5,621 L1390,621.5 L1383,622.5 L1375,623.5 L1363,625 L1350,627 L1338,629 L1326,633.5 L1318,636.5 L1310,639 L1305,641.5 L1300,644 L1296,645.5 L1292.5,651Z M1292.5,654.5 L1296,649.5 L1300,647.5 L1305,645 L1310,643 L1318,640 L1326,637 L1338,633 L1350,631 L1363,629 L1375,627.5 L1383,626.5 L1390,625.5 L1394.5,625 L1398,624.5 L1402,624 L1405,623.5 L1413.5,622 L1421.5,620 L1430,618.5 L1438,618 L1446.5,617.5 L1454.5,617 L1463,616.5 L1471,615.5 L1479.5,615.5 L1487.5,615.5 L1496,615.5 L1504,616 L1512.5,616 L1520.5,616.5 L1529,616.5 L1537.5,617.5 L1545.5,619 L1554,620 L1562,621 L1570.5,622.5 L1578.5,623.5 L1587,625 L1595,627 L1603.5,629.5 L1611.5,631.5 L1620,633.5 L1628,635.5 L1636.5,638 L1644.5,640.5 L1653,642.5 L1653,649.5 L1644.5,647 L1636.5,644.5 L1628,642.5 L1620,640 L1611.5,638 L1603.5,636 L1595,634 L1587,631.5 L1578.5,630 L1570.5,629 L1562,627.5 L1554,626.5 L1545.5,625.5 L1537.5,624 L1529,623 L1520.5,623 L1512.5,622.5 L1504,622.5 L1496,622 L1487.5,622 L1479.5,622 L1471,622 L1463,623 L1454.5,623.5 L1446.5,624 L1438,624.5 L1430,625 L1421.5,626.5 L1413.5,628.5 L1405,630 L1402,630.5 L1398,631 L1394.5,631.5 L1390,632 L1383,633 L1375,634 L1363,635.5 L1350,637.5 L1338,639.5 L1326,643.5 L1318,646 L1310,649 L1305,651 L1300,653.5 L1296,655 L1292.5,659.5Z M1292.5,662.5 L1296,658.5 L1300,657 L1305,655 L1310,652.5 L1318,650 L1326,647 L1338,643 L1350,641 L1363,639.5 L1375,638 L1383,637 L1390,636 L1394.5,635.5 L1398,635 L1402,634.5 L1405,634 L1413.5,632.5 L1421.5,630.5 L1430,629 L1438,628.5 L1446.5,628 L1454.5,627.5 L1463,626.5 L1471,626 L1479.5,626 L1487.5,626 L1496,626 L1504,626.5 L1512.5,626.5 L1520.5,627 L1529,627 L1537.5,628 L1545.5,629.5 L1554,630.5 L1562,631.5 L1570.5,632.5 L1578.5,634 L1587,635.5 L1595,638 L1603.5,640 L1611.5,642 L1620,644 L1628,646.5 L1636.5,648.5 L1644.5,651 L1653,653.5 L1653,660 L1644.5,657.5 L1636.5,655.5 L1628,653 L1620,651 L1611.5,648.5 L1603.5,646.5 L1595,644.5 L1587,642 L1578.5,640.5 L1570.5,639.5 L1562,638 L1554,637 L1545.5,636 L1537.5,634.5 L1529,633.5 L1520.5,633.5 L1512.5,633 L1504,633 L1496,632.5 L1487.5,632.5 L1479.5,632.5 L1471,632.5 L1463,633 L1454.5,634 L1446.5,634.5 L1438,635 L1430,635.5 L1421.5,637 L1413.5,639 L1405,640.5 L1402,641 L1398,641.5 L1394.5,642 L1390,642.5 L1383,643.5 L1375,644 L1363,646 L1350,647.5 L1338,649.5 L1326,653.5 L1318,656 L1310,658.5 L1305,660.5 L1300,662.5 L1296,664.5 L1292.5,668Z M1292.5,671 L1296,668 L1300,666.5 L1305,664.5 L1310,662.5 L1318,660 L1326,657 L1338,653.5 L1350,651.5 L1363,649.5 L1375,648 L1383,647 L1390,646.5 L1394.5,646 L1398,645.5 L1402,645 L1405,644.5 L1413.5,643 L1421.5,641 L1430,639.5 L1438,639 L1446.5,638.5 L1454.5,638 L1463,637 L1471,636.5 L1479.5,636 L1487.5,636.5 L1496,636.5 L1504,637 L1512.5,637 L1520.5,637 L1529,637.5 L1537.5,638.5 L1545.5,639.5 L1554,641 L1562,642 L1570.5,643 L1578.5,644.5 L1587,646 L1595,648.5 L1603.5,650.5 L1611.5,652.5 L1620,655 L1628,657 L1636.5,659.5 L1644.5,661.5 L1653,664 L1653,671 L1644.5,668.5 L1636.5,666 L1628,663.5 L1620,661.5 L1611.5,659.5 L1603.5,657 L1595,655 L1587,653 L1578.5,651 L1570.5,649.5 L1562,648.5 L1554,647.5 L1545.5,646.5 L1537.5,645 L1529,644 L1520.5,643.5 L1512.5,643.5 L1504,643.5 L1496,643 L1487.5,643 L1479.5,642.5 L1471,643 L1463,643.5 L1454.5,644.5 L1446.5,645 L1438,645.5 L1430,646 L1421.5,647.5 L1413.5,649.5 L1405,651 L1402,651.5 L1398,652 L1394.5,652.5 L1390,653 L1383,653.5 L1375,654.5 L1363,656 L1350,657.5 L1338,659.5 L1326,663.5 L1318,666 L1310,668.5 L1305,670.5 L1300,672 L1296,673.5 L1292.5,676.5Z M1292.5,679.5 L1296,677 L1300,676 L1305,674 L1310,672 L1318,669.5 L1326,667 L1338,663.5 L1350,661.5 L1363,660 L1375,658.5 L1383,657.5 L1390,657 L1394.5,656.5 L1398,656 L1402,655.5 L1405,655 L1413.5,653 L1421.5,651.5 L1430,650 L1438,649.5 L1446.5,649 L1454.5,648 L1463,647.5 L1471,647 L1479.5,646.5 L1487.5,647 L1496,647 L1504,647 L1512.5,647.5 L1520.5,647.5 L1529,648 L1537.5,649 L1545.5,650 L1554,651.5 L1562,652.5 L1570.5,653.5 L1578.5,655 L1587,656.5 L1595,659 L1603.5,661 L1611.5,663 L1620,665.5 L1628,668 L1636.5,670 L1644.5,672.5 L1653,675 L1653,681.5 L1644.5,679 L1636.5,677 L1628,674.5 L1620,672 L1611.5,670 L1603.5,667.5 L1595,665.5 L1587,663.5 L1578.5,661.5 L1570.5,660 L1562,659 L1554,658 L1545.5,656.5 L1537.5,655.5 L1529,654.5 L1520.5,654 L1512.5,654 L1504,653.5 L1496,653.5 L1487.5,653.5 L1479.5,653 L1471,653.5 L1463,654 L1454.5,654.5 L1446.5,655.5 L1438,656 L1430,656.5 L1421.5,658 L1413.5,660 L1405,661.5 L1402,662 L1398,662.5 L1394.5,663 L1390,663.5 L1383,664 L1375,665 L1363,666.5 L1350,668 L1338,669.5 L1326,673.5 L1318,676 L1310,678.5 L1305,680 L1300,681.5 L1296,683 L1292.5,685Z M1292.5,688 L1296,686.5 L1300,685 L1305,683.5 L1310,682 L1318,679.5 L1326,677 L1338,673.5 L1350,672 L1363,670.5 L1375,669 L1383,668 L1390,667.5 L1394.5,667 L1398,666.5 L1402,666 L1405,665.5 L1413.5,663.5 L1421.5,662 L1430,660.5 L1438,660 L1446.5,659 L1454.5,658.5 L1463,658 L1471,657.5 L1479.5,657 L1487.5,657.5 L1496,657.5 L1504,657.5 L1512.5,658 L1520.5,658 L1529,658.5 L1537.5,659.5 L1545.5,660.5 L1554,662 L1562,663 L1570.5,664 L1578.5,665.5 L1587,667 L1595,669.5 L1603.5,671.5 L1611.5,674 L1620,676 L1628,678.5 L1636.5,681 L1644.5,683 L1653,685.5 L1653,692 L1644.5,690 L1636.5,687.5 L1628,685 L1620,683 L1611.5,680.5 L1603.5,678 L1595,676 L1587,674 L1578.5,672 L1570.5,670.5 L1562,669.5 L1554,668.5 L1545.5,667 L1537.5,666 L1529,665 L1520.5,664.5 L1512.5,664.5 L1504,664 L1496,664 L1487.5,664 L1479.5,663.5 L1471,664 L1463,664.5 L1454.5,665 L1446.5,665.5 L1438,666.5 L1430,667 L1421.5,668.5 L1413.5,670 L1405,672 L1402,672.5 L1398,673 L1394.5,673.5 L1390,674 L1383,674.5 L1375,675.5 L1363,676.5 L1350,678 L1338,680 L1326,683.5 L1318,685.5 L1310,688 L1305,689.5 L1300,691 L1296,692 L1292.5,693Z M1292.5,696.5 L1296,696 L1300,694.5 L1305,693 L1310,692 L1318,689.5 L1326,687 L1338,683.5 L1350,682 L1363,680.5 L1375,679.5 L1383,678.5 L1390,677.5 L1394.5,677 L1398,677 L1402,676.5 L1405,676 L1413.5,674 L1421.5,672 L1430,671 L1438,670.5 L1446.5,669.5 L1454.5,669 L1463,668.5 L1471,668 L1479.5,667.5 L1487.5,667.5 L1496,668 L1504,668 L1512.5,668.5 L1520.5,668.5 L1529,668.5 L1537.5,670 L1545.5,671 L1554,672.5 L1562,673.5 L1570.5,674.5 L1578.5,676 L1587,677.5 L1595,680 L1603.5,682 L1611.5,684.5 L1620,687 L1628,689 L1636.5,691.5 L1644.5,694 L1653,696 L1653,703 L1644.5,700.5 L1636.5,698.5 L1628,696 L1620,693.5 L1611.5,691 L1603.5,689 L1595,686.5 L1587,684.5 L1578.5,682.5 L1570.5,681 L1562,680 L1554,679 L1545.5,677.5 L1537.5,676.5 L1529,675 L1520.5,675 L1512.5,675 L1504,674.5 L1496,674.5 L1487.5,674 L1479.5,674 L1471,674.5 L1463,675 L1454.5,675.5 L1446.5,676 L1438,677 L1430,677.5 L1421.5,678.5 L1413.5,680.5 L1405,682.5 L1402,683 L1398,683.5 L1394.5,684 L1390,684.5 L1383,685 L1375,686 L1363,687 L1350,688.5 L1338,690 L1326,693.5 L1318,695.5 L1310,698 L1305,699 L1300,700.5 L1296,701.5 L1292.5,701.5Z" fill="#7a5a3c"/>
<path d="M1292.5,525 L1296,507 L1300,503 L1305,498 L1310,493.5 L1318,489 L1326,484 L1338,478 L1350,475 L1363,471.5 L1375,468.5 L1383,467 L1390,465.5 L1394.5,465 L1398,464.5 L1402,463.5 L1405,463 L1413.5,461.5 L1421.5,460 L1430,459 L1438,458.5 L1446.5,458 L1454.5,457.5 L1463,456.5 L1471,456 L1479.5,455.5 L1487.5,456 L1496,456 L1504,456.5 L1512.5,456.5 L1520.5,456.5 L1529,457 L1537.5,458 L1545.5,459 L1554,460 L1562,461 L1570.5,462 L1578.5,463 L1587,464.5 L1595,466 L1603.5,467 L1611.5,468.5 L1620,470 L1628,471.5 L1636.5,473.5 L1644.5,476.5 L1653,479 M1292.5,533.5 L1296,516.5 L1300,512.5 L1305,507.5 L1310,503 L1318,498.5 L1326,494 L1338,488.5 L1350,485 L1363,482 L1375,478.5 L1383,477.5 L1390,476 L1394.5,475.5 L1398,475 L1402,474 L1405,473.5 L1413.5,472 L1421.5,470.5 L1430,469.5 L1438,469 L1446.5,468.5 L1454.5,467.5 L1463,467 L1471,466.5 L1479.5,466 L1487.5,466.5 L1496,466.5 L1504,466.5 L1512.5,467 L1520.5,467 L1529,467.5 L1537.5,468.5 L1545.5,469.5 L1554,470.5 L1562,471.5 L1570.5,472.5 L1578.5,473.5 L1587,475 L1595,476.5 L1603.5,478 L1611.5,479.5 L1620,481 L1628,482.5 L1636.5,484.5 L1644.5,487 L1653,489.5 M1292.5,542 L1296,525.5 L1300,522 L1305,517 L1310,513 L1318,508.5 L1326,504 L1338,498.5 L1350,495.5 L1363,492 L1375,489 L1383,488 L1390,486.5 L1394.5,486 L1398,485 L1402,484.5 L1405,484 L1413.5,482.5 L1421.5,481 L1430,480 L1438,479.5 L1446.5,478.5 L1454.5,478 L1463,477.5 L1471,477 L1479.5,476.5 L1487.5,476.5 L1496,477 L1504,477 L1512.5,477.5 L1520.5,477.5 L1529,478 L1537.5,479 L1545.5,480 L1554,481 L1562,482 L1570.5,483 L1578.5,484 L1587,485.5 L1595,487 L1603.5,488.5 L1611.5,490 L1620,491.5 L1628,493 L1636.5,495 L1644.5,497.5 L1653,500.5 M1292.5,550.5 L1296,535 L1300,531.5 L1305,527 L1310,522.5 L1318,518.5 L1326,514 L1338,508.5 L1350,505.5 L1363,502.5 L1375,499.5 L1383,498 L1390,497 L1394.5,496.5 L1398,495.5 L1402,495 L1405,494.5 L1413.5,493 L1421.5,491.5 L1430,490.5 L1438,490 L1446.5,489 L1454.5,488.5 L1463,488 L1471,487.5 L1479.5,487 L1487.5,487 L1496,487.5 L1504,487.5 L1512.5,488 L1520.5,488 L1529,488 L1537.5,489 L1545.5,490.5 L1554,491.5 L1562,492.5 L1570.5,493.5 L1578.5,494.5 L1587,496 L1595,497.5 L1603.5,499 L1611.5,500.5 L1620,502 L1628,503.5 L1636.5,506 L1644.5,508.5 L1653,511 M1292.5,559 L1296,544 L1300,541 L1305,536.5 L1310,532.5 L1318,528.5 L1326,524 L1338,518.5 L1350,516 L1363,512.5 L1375,510 L1383,508.5 L1390,507.5 L1394.5,506.5 L1398,506 L1402,505.5 L1405,505 L1413.5,503.5 L1421.5,502 L1430,501 L1438,500 L1446.5,499.5 L1454.5,499 L1463,498.5 L1471,498 L1479.5,497.5 L1487.5,497.5 L1496,498 L1504,498 L1512.5,498 L1520.5,498.5 L1529,498.5 L1537.5,499.5 L1545.5,500.5 L1554,502 L1562,503 L1570.5,504 L1578.5,505 L1587,506.5 L1595,508 L1603.5,509.5 L1611.5,511 L1620,513 L1628,514.5 L1636.5,516.5 L1644.5,519 L1653,522 M1292.5,567 L1296,553.5 L1300,550 L1305,546 L1310,542.5 L1318,538 L1326,534 L1338,529 L1350,526 L1363,523 L1375,520.5 L1383,519 L1390,518 L1394.5,517 L1398,516.5 L1402,516 L1405,515.5 L1413.5,514 L1421.5,512.5 L1430,511.5 L1438,510.5 L1446.5,510 L1454.5,509.5 L1463,509 L1471,508 L1479.5,508 L1487.5,508 L1496,508 L1504,508.5 L1512.5,508.5 L1520.5,509 L1529,509 L1537.5,510 L1545.5,511 L1554,512 L1562,513.5 L1570.5,514.5 L1578.5,515.5 L1587,517 L1595,518.5 L1603.5,520 L1611.5,522 L1620,523.5 L1628,525 L1636.5,527 L1644.5,530 L1653,532.5 M1292.5,575.5 L1296,563 L1300,559.5 L1305,555.5 L1310,552 L1318,548 L1326,544 L1338,539 L1350,536 L1363,533.5 L1375,530.5 L1383,529.5 L1390,528.5 L1394.5,527.5 L1398,527 L1402,526.5 L1405,526 L1413.5,524.5 L1421.5,523 L1430,521.5 L1438,521 L1446.5,520.5 L1454.5,520 L1463,519.5 L1471,518.5 L1479.5,518.5 L1487.5,518.5 L1496,518.5 L1504,519 L1512.5,519 L1520.5,519.5 L1529,519.5 L1537.5,520.5 L1545.5,521.5 L1554,522.5 L1562,524 L1570.5,525 L1578.5,526 L1587,527.5 L1595,529 L1603.5,531 L1611.5,532.5 L1620,534 L1628,536 L1636.5,538 L1644.5,540.5 L1653,543 M1292.5,584 L1296,572 L1300,569 L1305,565.5 L1310,562 L1318,558 L1326,554 L1338,549 L1350,546.5 L1363,543.5 L1375,541 L1383,540 L1390,539 L1394.5,538 L1398,537.5 L1402,537 L1405,536.5 L1413.5,535 L1421.5,533.5 L1430,532 L1438,531.5 L1446.5,531 L1454.5,530.5 L1463,529.5 L1471,529 L1479.5,528.5 L1487.5,529 L1496,529 L1504,529.5 L1512.5,529.5 L1520.5,529.5 L1529,530 L1537.5,531 L1545.5,532 L1554,533 L1562,534 L1570.5,535.5 L1578.5,536.5 L1587,538 L1595,539.5 L1603.5,541.5 L1611.5,543 L1620,545 L1628,546.5 L1636.5,548.5 L1644.5,551.5 L1653,554 M1292.5,592.5 L1296,581.5 L1300,578.5 L1305,575 L1310,571.5 L1318,568 L1326,564 L1338,559 L1350,556.5 L1363,554 L1375,551.5 L1383,550.5 L1390,549.5 L1394.5,548.5 L1398,548 L1402,547.5 L1405,547 L1413.5,545.5 L1421.5,543.5 L1430,542.5 L1438,542 L1446.5,541.5 L1454.5,540.5 L1463,540 L1471,539.5 L1479.5,539 L1487.5,539.5 L1496,539.5 L1504,540 L1512.5,540 L1520.5,540 L1529,540.5 L1537.5,541.5 L1545.5,542.5 L1554,543.5 L1562,544.5 L1570.5,546 L1578.5,547 L1587,548.5 L1595,550 L1603.5,552 L1611.5,553.5 L1620,555.5 L1628,557.5 L1636.5,559.5 L1644.5,562 L1653,564.5 M1292.5,601 L1296,590.5 L1300,588 L1305,584.5 L1310,581.5 L1318,578 L1326,574 L1338,569.5 L1350,566.5 L1363,564 L1375,562 L1383,560.5 L1390,559.5 L1394.5,559 L1398,558.5 L1402,558 L1405,557.5 L1413.5,556 L1421.5,554 L1430,553 L1438,552.5 L1446.5,552 L1454.5,551 L1463,550.5 L1471,550 L1479.5,549.5 L1487.5,550 L1496,550 L1504,550 L1512.5,550.5 L1520.5,550.5 L1529,551 L1537.5,552 L1545.5,553 L1554,554 L1562,555 L1570.5,556.5 L1578.5,557.5 L1587,559 L1595,560.5 L1603.5,562.5 L1611.5,564.5 L1620,566 L1628,568 L1636.5,570 L1644.5,572.5 L1653,575.5 M1292.5,609.5 L1296,600 L1300,597.5 L1305,594 L1310,591 L1318,587.5 L1326,584 L1338,579.5 L1350,577 L1363,574.5 L1375,572.5 L1383,571 L1390,570 L1394.5,569.5 L1398,569 L1402,568.5 L1405,568 L1413.5,566.5 L1421.5,564.5 L1430,563.5 L1438,563 L1446.5,562 L1454.5,561.5 L1463,561 L1471,560.5 L1479.5,560 L1487.5,560 L1496,560.5 L1504,560.5 L1512.5,561 L1520.5,561 L1529,561 L1537.5,562.5 L1545.5,563.5 L1554,564.5 L1562,565.5 L1570.5,566.5 L1578.5,568 L1587,569.5 L1595,571.5 L1603.5,573 L1611.5,575 L1620,577 L1628,579 L1636.5,581 L1644.5,583.5 L1653,586 M1292.5,618 L1296,609.5 L1300,607 L1305,604 L1310,601 L1318,597.5 L1326,594 L1338,589.5 L1350,587 L1363,585 L1375,582.5 L1383,581.5 L1390,580.5 L1394.5,580 L1398,579.5 L1402,579 L1405,578.5 L1413.5,577 L1421.5,575 L1430,574 L1438,573 L1446.5,572.5 L1454.5,572 L1463,571.5 L1471,571 L1479.5,570.5 L1487.5,570.5 L1496,571 L1504,571 L1512.5,571.5 L1520.5,571.5 L1529,571.5 L1537.5,573 L1545.5,574 L1554,575 L1562,576 L1570.5,577 L1578.5,578.5 L1587,580 L1595,582 L1603.5,583.5 L1611.5,585.5 L1620,587.5 L1628,589.5 L1636.5,591.5 L1644.5,594 L1653,596.5 M1292.5,626.5 L1296,618.5 L1300,616.5 L1305,613.5 L1310,610.5 L1318,607.5 L1326,604 L1338,599.5 L1350,597.5 L1363,595 L1375,593 L1383,592 L1390,591 L1394.5,590.5 L1398,590 L1402,589.5 L1405,589 L1413.5,587.5 L1421.5,585.5 L1430,584.5 L1438,583.5 L1446.5,583 L1454.5,582.5 L1463,582 L1471,581.5 L1479.5,581 L1487.5,581 L1496,581.5 L1504,581.5 L1512.5,581.5 L1520.5,582 L1529,582 L1537.5,583 L1545.5,584.5 L1554,585.5 L1562,586.5 L1570.5,587.5 L1578.5,589 L1587,590.5 L1595,592.5 L1603.5,594.5 L1611.5,596.5 L1620,598 L1628,600 L1636.5,602.5 L1644.5,605 L1653,607.5 M1292.5,635 L1296,628 L1300,625.5 L1305,623 L1310,620.5 L1318,617.5 L1326,614 L1338,610 L1350,607.5 L1363,605.5 L1375,603.5 L1383,602.5 L1390,601.5 L1394.5,601 L1398,600.5 L1402,600 L1405,599.5 L1413.5,597.5 L1421.5,596 L1430,594.5 L1438,594 L1446.5,593.5 L1454.5,593 L1463,592.5 L1471,591.5 L1479.5,591.5 L1487.5,591.5 L1496,591.5 L1504,592 L1512.5,592 L1520.5,592.5 L1529,592.5 L1537.5,593.5 L1545.5,595 L1554,596 L1562,597 L1570.5,598 L1578.5,599.5 L1587,601 L1595,603 L1603.5,605 L1611.5,607 L1620,609 L1628,611 L1636.5,613 L1644.5,615.5 L1653,618 M1292.5,643.5 L1296,637 L1300,635 L1305,632.5 L1310,630 L1318,627 L1326,624 L1338,620 L1350,617.5 L1363,615.5 L1375,614 L1383,613 L1390,612 L1394.5,611.5 L1398,611 L1402,610.5 L1405,610 L1413.5,608 L1421.5,606.5 L1430,605 L1438,604.5 L1446.5,604 L1454.5,603.5 L1463,602.5 L1471,602 L1479.5,602 L1487.5,602 L1496,602 L1504,602.5 L1512.5,602.5 L1520.5,603 L1529,603 L1537.5,604 L1545.5,605 L1554,606.5 L1562,607.5 L1570.5,608.5 L1578.5,610 L1587,611.5 L1595,613.5 L1603.5,615.5 L1611.5,617.5 L1620,619.5 L1628,621.5 L1636.5,624 L1644.5,626.5 L1653,629 M1292.5,652 L1296,646.5 L1300,644.5 L1305,642.5 L1310,640 L1318,637 L1326,634 L1338,630 L1350,628 L1363,626 L1375,624.5 L1383,623.5 L1390,622.5 L1394.5,622 L1398,621.5 L1402,621 L1405,620.5 L1413.5,618.5 L1421.5,617 L1430,615.5 L1438,615 L1446.5,614.5 L1454.5,614 L1463,613 L1471,612.5 L1479.5,612 L1487.5,612.5 L1496,612.5 L1504,613 L1512.5,613 L1520.5,613 L1529,613.5 L1537.5,614.5 L1545.5,615.5 L1554,617 L1562,618 L1570.5,619 L1578.5,620 L1587,622 L1595,624 L1603.5,626 L1611.5,628 L1620,630.5 L1628,632.5 L1636.5,634.5 L1644.5,637 L1653,639.5 M1292.5,660 L1296,656 L1300,654 L1305,652 L1310,650 L1318,647 L1326,644 L1338,640 L1350,638 L1363,636.5 L1375,634.5 L1383,633.5 L1390,633 L1394.5,632.5 L1398,632 L1402,631.5 L1405,631 L1413.5,629 L1421.5,627.5 L1430,626 L1438,625.5 L1446.5,625 L1454.5,624 L1463,623.5 L1471,623 L1479.5,622.5 L1487.5,623 L1496,623 L1504,623 L1512.5,623.5 L1520.5,623.5 L1529,624 L1537.5,625 L1545.5,626 L1554,627.5 L1562,628.5 L1570.5,629.5 L1578.5,630.5 L1587,632.5 L1595,634.5 L1603.5,636.5 L1611.5,639 L1620,641 L1628,643 L1636.5,645.5 L1644.5,648 L1653,650 M1292.5,668.5 L1296,665 L1300,663.5 L1305,661.5 L1310,659.5 L1318,657 L1326,654 L1338,650 L1350,648.5 L1363,646.5 L1375,645 L1383,644 L1390,643.5 L1394.5,642.5 L1398,642.5 L1402,642 L1405,641.5 L1413.5,639.5 L1421.5,637.5 L1430,636.5 L1438,636 L1446.5,635 L1454.5,634.5 L1463,634 L1471,633.5 L1479.5,633 L1487.5,633.5 L1496,633.5 L1504,633.5 L1512.5,634 L1520.5,634 L1529,634.5 L1537.5,635.5 L1545.5,636.5 L1554,638 L1562,639 L1570.5,640 L1578.5,641 L1587,643 L1595,645 L1603.5,647.5 L1611.5,649.5 L1620,651.5 L1628,654 L1636.5,656 L1644.5,658.5 L1653,661 M1292.5,677 L1296,674.5 L1300,673 L1305,671 L1310,669.5 L1318,666.5 L1326,664 L1338,660.5 L1350,658.5 L1363,657 L1375,655.5 L1383,654.5 L1390,653.5 L1394.5,653 L1398,653 L1402,652.5 L1405,652 L1413.5,650 L1421.5,648 L1430,647 L1438,646.5 L1446.5,645.5 L1454.5,645 L1463,644.5 L1471,644 L1479.5,643.5 L1487.5,643.5 L1496,644 L1504,644 L1512.5,644.5 L1520.5,644.5 L1529,644.5 L1537.5,646 L1545.5,647 L1554,648 L1562,649.5 L1570.5,650.5 L1578.5,651.5 L1587,653.5 L1595,655.5 L1603.5,658 L1611.5,660 L1620,662.5 L1628,664.5 L1636.5,667 L1644.5,669 L1653,671.5 M1292.5,685.5 L1296,683.5 L1300,682.5 L1305,680.5 L1310,679 L1318,676.5 L1326,674 L1338,670.5 L1350,668.5 L1363,667 L1375,666 L1383,665 L1390,664 L1394.5,663.5 L1398,663.5 L1402,663 L1405,662.5 L1413.5,660.5 L1421.5,658.5 L1430,657.5 L1438,656.5 L1446.5,656 L1454.5,655.5 L1463,655 L1471,654.5 L1479.5,654 L1487.5,654 L1496,654.5 L1504,654.5 L1512.5,655 L1520.5,655 L1529,655 L1537.5,656.5 L1545.5,657.5 L1554,658.5 L1562,660 L1570.5,661 L1578.5,662 L1587,664 L1595,666.5 L1603.5,668.5 L1611.5,670.5 L1620,673 L1628,675.5 L1636.5,677.5 L1644.5,680 L1653,682.5 M1292.5,694 L1296,693 L1300,692 L1305,690.5 L1310,689 L1318,686.5 L1326,684 L1338,680.5 L1350,679 L1363,677.5 L1375,676 L1383,675.5 L1390,674.5 L1394.5,674 L1398,674 L1402,673.5 L1405,673 L1413.5,671 L1421.5,669 L1430,667.5 L1438,667 L1446.5,666.5 L1454.5,666 L1463,665.5 L1471,664.5 L1479.5,664.5 L1487.5,664.5 L1496,665 L1504,665 L1512.5,665 L1520.5,665.5 L1529,665.5 L1537.5,667 L1545.5,668 L1554,669 L1562,670.5 L1570.5,671.5 L1578.5,672.5 L1587,674.5 L1595,677 L1603.5,679 L1611.5,681.5 L1620,683.5 L1628,686 L1636.5,688.5 L1644.5,690.5 L1653,693 M1292.5,702.5 L1296,702.5 L1300,701.5 L1305,700 L1310,698.5 L1318,696.5 L1326,694 L1338,690.5 L1350,689 L1363,688 L1375,686.5 L1383,686 L1390,685 L1394.5,684.5 L1398,684 L1402,684 L1405,683.5 L1413.5,681.5 L1421.5,679.5 L1430,678 L1438,677.5 L1446.5,677 L1454.5,676.5 L1463,676 L1471,675 L1479.5,675 L1487.5,675 L1496,675 L1504,675.5 L1512.5,675.5 L1520.5,676 L1529,676 L1537.5,677 L1545.5,678.5 L1554,679.5 L1562,681 L1570.5,682 L1578.5,683 L1587,685 L1595,687.5 L1603.5,689.5 L1611.5,692 L1620,694.5 L1628,696.5 L1636.5,699 L1644.5,701.5 L1653,703.5" fill="none" stroke="#281a10" stroke-width="1.6"/>
<g fill="none" stroke="#fbf6ef" stroke-width="1.3" stroke-dasharray="6,22" opacity="1.0"><path d="M1292.5,525.5 L1296,507.5 L1300,503.5 L1305,498.5 L1310,493.5 L1318,489 L1326,484.5 L1338,478.5 L1350,475.5 L1363,472 L1375,468.5 L1383,467 L1390,466 L1394.5,465 L1398,464.5 L1402,464 L1405,463.5 L1413.5,462 L1421.5,460.5 L1430,459.5 L1438,459 L1446.5,458 L1454.5,457.5 L1463,457 L1471,456.5 L1479.5,456 L1487.5,456 L1496,456.5 L1504,456.5 L1512.5,457 L1520.5,457 L1529,457 L1537.5,458 L1545.5,459 L1554,460.5 L1562,461.5 L1570.5,462.5 L1578.5,463.5 L1587,464.5 L1595,466 L1603.5,467.5 L1611.5,469 L1620,470.5 L1628,472 L1636.5,474 L1644.5,476.5 L1653,479.5" stroke-dashoffset="7"/><path d="M1292.5,534 L1296,516.5 L1300,512.5 L1305,508 L1310,503.5 L1318,499 L1326,494.5 L1338,488.5 L1350,485.5 L1363,482 L1375,479 L1383,477.5 L1390,476.5 L1394.5,475.5 L1398,475 L1402,474.5 L1405,474 L1413.5,472.5 L1421.5,471 L1430,470 L1438,469 L1446.5,468.5 L1454.5,468 L1463,467.5 L1471,467 L1479.5,466.5 L1487.5,466.5 L1496,467 L1504,467 L1512.5,467 L1520.5,467.5 L1529,467.5 L1537.5,468.5 L1545.5,469.5 L1554,470.5 L1562,471.5 L1570.5,473 L1578.5,474 L1587,475 L1595,476.5 L1603.5,478 L1611.5,479.5 L1620,481 L1628,482.5 L1636.5,484.5 L1644.5,487.5 L1653,490" stroke-dashoffset="0"/><path d="M1292.5,542 L1296,526 L1300,522 L1305,517.5 L1310,513.5 L1318,509 L1326,504.5 L1338,498.5 L1350,495.5 L1363,492.5 L1375,489.5 L1383,488 L1390,487 L1394.5,486 L1398,485.5 L1402,485 L1405,484.5 L1413.5,483 L1421.5,481.5 L1430,480.5 L1438,479.5 L1446.5,479 L1454.5,478.5 L1463,478 L1471,477 L1479.5,477 L1487.5,477 L1496,477 L1504,477.5 L1512.5,477.5 L1520.5,478 L1529,478 L1537.5,479 L1545.5,480 L1554,481 L1562,482 L1570.5,483 L1578.5,484.5 L1587,485.5 L1595,487 L1603.5,488.5 L1611.5,490 L1620,492 L1628,493.5 L1636.5,495.5 L1644.5,498 L1653,500.5" stroke-dashoffset="5"/><path d="M1292.5,550.5 L1296,535 L1300,531.5 L1305,527 L1310,523 L1318,519 L1326,514.5 L1338,509 L1350,506 L1363,502.5 L1375,500 L1383,498.5 L1390,497.5 L1394.5,496.5 L1398,496 L1402,495.5 L1405,495 L1413.5,493.5 L1421.5,492 L1430,490.5 L1438,490 L1446.5,489.5 L1454.5,489 L1463,488.5 L1471,487.5 L1479.5,487.5 L1487.5,487.5 L1496,487.5 L1504,488 L1512.5,488 L1520.5,488.5 L1529,488.5 L1537.5,489.5 L1545.5,490.5 L1554,491.5 L1562,492.5 L1570.5,493.5 L1578.5,495 L1587,496 L1595,497.5 L1603.5,499.5 L1611.5,501 L1620,502.5 L1628,504 L1636.5,506 L1644.5,508.5 L1653,511.5" stroke-dashoffset="10"/><path d="M1292.5,559 L1296,544.5 L1300,541 L1305,537 L1310,533 L1318,528.5 L1326,524.5 L1338,519 L1350,516 L1363,513 L1375,510 L1383,509 L1390,508 L1394.5,507 L1398,506.5 L1402,506 L1405,505.5 L1413.5,504 L1421.5,502.5 L1430,501 L1438,500.5 L1446.5,500 L1454.5,499.5 L1463,498.5 L1471,498 L1479.5,497.5 L1487.5,498 L1496,498 L1504,498.5 L1512.5,498.5 L1520.5,498.5 L1529,499 L1537.5,500 L1545.5,501 L1554,502 L1562,503 L1570.5,504 L1578.5,505 L1587,506.5 L1595,508.5 L1603.5,510 L1611.5,511.5 L1620,513 L1628,514.5 L1636.5,517 L1644.5,519.5 L1653,522" stroke-dashoffset="3"/><path d="M1292.5,567.5 L1296,554 L1300,550.5 L1305,546.5 L1310,542.5 L1318,538.5 L1326,534.5 L1338,529 L1350,526.5 L1363,523.5 L1375,520.5 L1383,519.5 L1390,518 L1394.5,517.5 L1398,517 L1402,516.5 L1405,516 L1413.5,514.5 L1421.5,512.5 L1430,511.5 L1438,511 L1446.5,510.5 L1454.5,509.5 L1463,509 L1471,508.5 L1479.5,508 L1487.5,508.5 L1496,508.5 L1504,509 L1512.5,509 L1520.5,509 L1529,509.5 L1537.5,510.5 L1545.5,511.5 L1554,512.5 L1562,513.5 L1570.5,514.5 L1578.5,515.5 L1587,517 L1595,519 L1603.5,520.5 L1611.5,522 L1620,524 L1628,525.5 L1636.5,527.5 L1644.5,530 L1653,533" stroke-dashoffset="8"/><path d="M1292.5,576 L1296,563 L1300,560 L1305,556 L1310,552.5 L1318,548.5 L1326,544.5 L1338,539 L1350,536.5 L1363,533.5 L1375,531 L1383,530 L1390,528.5 L1394.5,528 L1398,527.5 L1402,527 L1405,526.5 L1413.5,524.5 L1421.5,523 L1430,522 L1438,521.5 L1446.5,521 L1454.5,520 L1463,519.5 L1471,519 L1479.5,518.5 L1487.5,519 L1496,519 L1504,519 L1512.5,519.5 L1520.5,519.5 L1529,520 L1537.5,521 L1545.5,522 L1554,523 L1562,524 L1570.5,525 L1578.5,526 L1587,527.5 L1595,529.5 L1603.5,531 L1611.5,533 L1620,534.5 L1628,536 L1636.5,538.5 L1644.5,541 L1653,543.5" stroke-dashoffset="1"/><path d="M1292.5,584.5 L1296,572.5 L1300,569.5 L1305,565.5 L1310,562 L1318,558.5 L1326,554.5 L1338,549.5 L1350,546.5 L1363,544 L1375,541.5 L1383,540 L1390,539 L1394.5,538.5 L1398,538 L1402,537.5 L1405,537 L1413.5,535 L1421.5,533.5 L1430,532.5 L1438,532 L1446.5,531 L1454.5,530.5 L1463,530 L1471,529.5 L1479.5,529 L1487.5,529 L1496,529.5 L1504,529.5 L1512.5,530 L1520.5,530 L1529,530 L1537.5,531.5 L1545.5,532.5 L1554,533.5 L1562,534.5 L1570.5,535.5 L1578.5,536.5 L1587,538 L1595,540 L1603.5,541.5 L1611.5,543.5 L1620,545 L1628,547 L1636.5,549 L1644.5,551.5 L1653,554" stroke-dashoffset="6"/><path d="M1292.5,593 L1296,581.5 L1300,579 L1305,575 L1310,572 L1318,568 L1326,564.5 L1338,559.5 L1350,557 L1363,554 L1375,552 L1383,550.5 L1390,549.5 L1394.5,549 L1398,548.5 L1402,548 L1405,547.5 L1413.5,545.5 L1421.5,544 L1430,543 L1438,542.5 L1446.5,541.5 L1454.5,541 L1463,540.5 L1471,540 L1479.5,539.5 L1487.5,539.5 L1496,540 L1504,540 L1512.5,540.5 L1520.5,540.5 L1529,540.5 L1537.5,542 L1545.5,543 L1554,544 L1562,545 L1570.5,546 L1578.5,547 L1587,548.5 L1595,550.5 L1603.5,552 L1611.5,554 L1620,556 L1628,557.5 L1636.5,560 L1644.5,562.5 L1653,565" stroke-dashoffset="11"/><path d="M1292.5,601.5 L1296,591 L1300,588.5 L1305,585 L1310,581.5 L1318,578 L1326,574.5 L1338,569.5 L1350,567 L1363,564.5 L1375,562 L1383,561 L1390,560 L1394.5,559.5 L1398,559 L1402,558.5 L1405,558 L1413.5,556 L1421.5,554.5 L1430,553.5 L1438,552.5 L1446.5,552 L1454.5,551.5 L1463,551 L1471,550 L1479.5,550 L1487.5,550 L1496,550.5 L1504,550.5 L1512.5,550.5 L1520.5,551 L1529,551 L1537.5,552 L1545.5,553.5 L1554,554.5 L1562,555.5 L1570.5,556.5 L1578.5,557.5 L1587,559 L1595,561 L1603.5,563 L1611.5,564.5 L1620,566.5 L1628,568.5 L1636.5,570.5 L1644.5,573 L1653,575.5" stroke-dashoffset="4"/><path d="M1292.5,610 L1296,600.5 L1300,597.5 L1305,594.5 L1310,591.5 L1318,588 L1326,584.5 L1338,579.5 L1350,577 L1363,575 L1375,572.5 L1383,571.5 L1390,570.5 L1394.5,570 L1398,569.5 L1402,569 L1405,568.5 L1413.5,566.5 L1421.5,565 L1430,563.5 L1438,563 L1446.5,562.5 L1454.5,562 L1463,561.5 L1471,560.5 L1479.5,560.5 L1487.5,560.5 L1496,560.5 L1504,561 L1512.5,561 L1520.5,561.5 L1529,561.5 L1537.5,562.5 L1545.5,563.5 L1554,565 L1562,566 L1570.5,567 L1578.5,568 L1587,570 L1595,571.5 L1603.5,573.5 L1611.5,575.5 L1620,577 L1628,579 L1636.5,581 L1644.5,584 L1653,586.5" stroke-dashoffset="9"/><path d="M1292.5,618 L1296,609.5 L1300,607 L1305,604 L1310,601 L1318,598 L1326,594.5 L1338,590 L1350,587.5 L1363,585 L1375,583 L1383,582 L1390,581 L1394.5,580.5 L1398,580 L1402,579 L1405,579 L1413.5,577 L1421.5,575.5 L1430,574 L1438,573.5 L1446.5,573 L1454.5,572.5 L1463,571.5 L1471,571 L1479.5,570.5 L1487.5,571 L1496,571 L1504,571.5 L1512.5,571.5 L1520.5,572 L1529,572 L1537.5,573 L1545.5,574 L1554,575.5 L1562,576.5 L1570.5,577.5 L1578.5,578.5 L1587,580.5 L1595,582 L1603.5,584 L1611.5,586 L1620,588 L1628,590 L1636.5,592 L1644.5,594.5 L1653,597" stroke-dashoffset="2"/><path d="M1292.5,626.5 L1296,619 L1300,616.5 L1305,613.5 L1310,611 L1318,607.5 L1326,604.5 L1338,600 L1350,597.5 L1363,595.5 L1375,593.5 L1383,592.5 L1390,591.5 L1394.5,590.5 L1398,590.5 L1402,589.5 L1405,589.5 L1413.5,587.5 L1421.5,586 L1430,584.5 L1438,584 L1446.5,583.5 L1454.5,583 L1463,582 L1471,581.5 L1479.5,581 L1487.5,581.5 L1496,581.5 L1504,582 L1512.5,582 L1520.5,582 L1529,582.5 L1537.5,583.5 L1545.5,584.5 L1554,586 L1562,587 L1570.5,588 L1578.5,589 L1587,591 L1595,592.5 L1603.5,594.5 L1611.5,596.5 L1620,598.5 L1628,600.5 L1636.5,602.5 L1644.5,605 L1653,607.5" stroke-dashoffset="7"/><path d="M1292.5,635 L1296,628 L1300,626 L1305,623.5 L1310,621 L1318,617.5 L1326,614.5 L1338,610 L1350,608 L1363,605.5 L1375,604 L1383,602.5 L1390,602 L1394.5,601 L1398,600.5 L1402,600 L1405,600 L1413.5,598 L1421.5,596.5 L1430,595 L1438,594.5 L1446.5,594 L1454.5,593 L1463,592.5 L1471,592 L1479.5,591.5 L1487.5,592 L1496,592 L1504,592 L1512.5,592.5 L1520.5,592.5 L1529,593 L1537.5,594 L1545.5,595 L1554,596 L1562,597.5 L1570.5,598.5 L1578.5,599.5 L1587,601.5 L1595,603 L1603.5,605 L1611.5,607 L1620,609 L1628,611 L1636.5,613.5 L1644.5,616 L1653,618.5" stroke-dashoffset="0"/><path d="M1292.5,643.5 L1296,637.5 L1300,635.5 L1305,633 L1310,630.5 L1318,627.5 L1326,624.5 L1338,620 L1350,618 L1363,616 L1375,614 L1383,613 L1390,612 L1394.5,611.5 L1398,611 L1402,610.5 L1405,610.5 L1413.5,608.5 L1421.5,606.5 L1430,605.5 L1438,605 L1446.5,604 L1454.5,603.5 L1463,603 L1471,602.5 L1479.5,602 L1487.5,602.5 L1496,602.5 L1504,602.5 L1512.5,603 L1520.5,603 L1529,603.5 L1537.5,604.5 L1545.5,605.5 L1554,606.5 L1562,608 L1570.5,609 L1578.5,610 L1587,612 L1595,614 L1603.5,616 L1611.5,618 L1620,620 L1628,622 L1636.5,624 L1644.5,626.5 L1653,629" stroke-dashoffset="5"/><path d="M1292.5,652 L1296,647 L1300,645 L1305,642.5 L1310,640.5 L1318,637.5 L1326,634.5 L1338,630.5 L1350,628 L1363,626.5 L1375,624.5 L1383,623.5 L1390,622.5 L1394.5,622 L1398,621.5 L1402,621 L1405,621 L1413.5,619 L1421.5,617 L1430,616 L1438,615.5 L1446.5,614.5 L1454.5,614 L1463,613.5 L1471,613 L1479.5,612.5 L1487.5,612.5 L1496,613 L1504,613 L1512.5,613.5 L1520.5,613.5 L1529,613.5 L1537.5,615 L1545.5,616 L1554,617 L1562,618.5 L1570.5,619.5 L1578.5,620.5 L1587,622.5 L1595,624.5 L1603.5,626.5 L1611.5,628.5 L1620,630.5 L1628,632.5 L1636.5,635 L1644.5,637.5 L1653,640" stroke-dashoffset="10"/><path d="M1292.5,660.5 L1296,656 L1300,654.5 L1305,652 L1310,650 L1318,647.5 L1326,644.5 L1338,640.5 L1350,638.5 L1363,636.5 L1375,635 L1383,634 L1390,633 L1394.5,632.5 L1398,632 L1402,631.5 L1405,631.5 L1413.5,629.5 L1421.5,627.5 L1430,626.5 L1438,625.5 L1446.5,625 L1454.5,624.5 L1463,624 L1471,623.5 L1479.5,623 L1487.5,623 L1496,623.5 L1504,623.5 L1512.5,623.5 L1520.5,624 L1529,624 L1537.5,625.5 L1545.5,626.5 L1554,627.5 L1562,628.5 L1570.5,630 L1578.5,631 L1587,633 L1595,635 L1603.5,637 L1611.5,639 L1620,641 L1628,643.5 L1636.5,645.5 L1644.5,648 L1653,650.5" stroke-dashoffset="3"/><path d="M1292.5,669 L1296,665.5 L1300,664 L1305,662 L1310,660 L1318,657 L1326,654.5 L1338,650.5 L1350,648.5 L1363,647 L1375,645.5 L1383,644.5 L1390,643.5 L1394.5,643 L1398,642.5 L1402,642 L1405,642 L1413.5,640 L1421.5,638 L1430,636.5 L1438,636 L1446.5,635.5 L1454.5,635 L1463,634.5 L1471,633.5 L1479.5,633.5 L1487.5,633.5 L1496,634 L1504,634 L1512.5,634 L1520.5,634.5 L1529,634.5 L1537.5,635.5 L1545.5,637 L1554,638 L1562,639 L1570.5,640.5 L1578.5,641.5 L1587,643.5 L1595,645.5 L1603.5,647.5 L1611.5,649.5 L1620,652 L1628,654 L1636.5,656.5 L1644.5,659 L1653,661" stroke-dashoffset="8"/><path d="M1292.5,677.5 L1296,674.5 L1300,673 L1305,671.5 L1310,669.5 L1318,667 L1326,664.5 L1338,660.5 L1350,659 L1363,657 L1375,655.5 L1383,655 L1390,654 L1394.5,653.5 L1398,653 L1402,652.5 L1405,652.5 L1413.5,650.5 L1421.5,648.5 L1430,647 L1438,646.5 L1446.5,646 L1454.5,645.5 L1463,645 L1471,644 L1479.5,644 L1487.5,644 L1496,644 L1504,644.5 L1512.5,644.5 L1520.5,645 L1529,645 L1537.5,646 L1545.5,647.5 L1554,648.5 L1562,649.5 L1570.5,651 L1578.5,652 L1587,654 L1595,656 L1603.5,658 L1611.5,660.5 L1620,662.5 L1628,665 L1636.5,667 L1644.5,669.5 L1653,672" stroke-dashoffset="1"/><path d="M1292.5,686 L1296,684 L1300,682.5 L1305,681 L1310,679.5 L1318,677 L1326,674.5 L1338,671 L1350,669 L1363,667.5 L1375,666 L1383,665 L1390,664.5 L1394.5,664 L1398,663.5 L1402,663 L1405,663 L1413.5,661 L1421.5,659 L1430,657.5 L1438,657 L1446.5,656.5 L1454.5,656 L1463,655 L1471,654.5 L1479.5,654 L1487.5,654.5 L1496,654.5 L1504,655 L1512.5,655 L1520.5,655.5 L1529,655.5 L1537.5,656.5 L1545.5,658 L1554,659 L1562,660 L1570.5,661.5 L1578.5,662.5 L1587,664.5 L1595,666.5 L1603.5,668.5 L1611.5,671 L1620,673.5 L1628,675.5 L1636.5,678 L1644.5,680 L1653,682.5" stroke-dashoffset="6"/><path d="M1292.5,694.5 L1296,693.5 L1300,692 L1305,690.5 L1310,689 L1318,687 L1326,684.5 L1338,681 L1350,679 L1363,678 L1375,676.5 L1383,675.5 L1390,675 L1394.5,674.5 L1398,674 L1402,673.5 L1405,673.5 L1413.5,671.5 L1421.5,669.5 L1430,668 L1438,667.5 L1446.5,667 L1454.5,666 L1463,665.5 L1471,665 L1479.5,664.5 L1487.5,665 L1496,665 L1504,665.5 L1512.5,665.5 L1520.5,665.5 L1529,666 L1537.5,667 L1545.5,668.5 L1554,669.5 L1562,670.5 L1570.5,672 L1578.5,673 L1587,675 L1595,677 L1603.5,679.5 L1611.5,681.5 L1620,684 L1628,686.5 L1636.5,688.5 L1644.5,691 L1653,693.5" stroke-dashoffset="11"/><path d="M1292.5,703 L1296,702.5 L1300,701.5 L1305,700.5 L1310,699 L1318,696.5 L1326,694.5 L1338,691 L1350,689.5 L1363,688 L1375,687 L1383,686 L1390,685.5 L1394.5,685 L1398,684.5 L1402,684 L1405,684 L1413.5,682 L1421.5,680 L1430,678.5 L1438,678 L1446.5,677.5 L1454.5,676.5 L1463,676 L1471,675.5 L1479.5,675 L1487.5,675.5 L1496,675.5 L1504,675.5 L1512.5,676 L1520.5,676 L1529,676.5 L1537.5,677.5 L1545.5,678.5 L1554,680 L1562,681 L1570.5,682.5 L1578.5,683.5 L1587,685.5 L1595,687.5 L1603.5,690 L1611.5,692.5 L1620,694.5 L1628,697 L1636.5,699.5 L1644.5,701.5 L1653,704" stroke-dashoffset="4"/></g>
<path d="M1440,458.5 L1440,667 M1490,456 L1490,664.5 M1540,458.5 L1540,667 M1590,465 L1590,675.5" stroke="#f0e6da" stroke-width="1" stroke-dasharray="2,8" opacity="0.9"/>
</g>
<polyline points="1292.5,694 1292.5,525 1293,521.5 1293.5,517 1294.5,511.5 1296,507 1298.5,503.5 1301,500.5 1304.5,497.5 1309,494 1314.5,490.5 1320.5,486.5 1327.5,482.5 1335,479 1343.5,476 1353,473.5 1363,471 1374,468.5 1386,466 1399,463.5 1413,461.5 1426,459.5 1439,458 1451.5,457 1464,456 1477,455.5 1490,455.5 1503,455.5 1516,456 1529,457 1542,458 1555,459.5 1568,461.5 1581,463.5 1595,465.5 1609,468 1622,470 1633,472.5 1640.5,474.5 1646,476.5 1650,478 1653,479 1653,693" fill="none" stroke="#231d19" stroke-width="3"/>
<polyline points="1405,673 1408,672 1412.5,670.5 1418,669.5 1426,668 1436.5,667 1449.5,666 1463.5,665 1477,664.5 1490,664 1503,664.5 1516,664.5 1529,665.5 1542.5,667 1556.5,669 1570,671 1581,673 1589,674.5 1594.5,676 1599.5,678 1607,680 1618,683 1631.5,687 1644.5,690.5 1653,693" fill="none" stroke="#231d19" stroke-width="3"/>
<polygon points="1294,537 1298.5,541.5 1305,548 1312.5,554.5 1319,560.5 1324,564 1328.5,567 1333,569 1338.5,572 1344.5,575 1351,578.5 1357.5,582 1363.5,585.5 1369,589.5 1374,593 1379,597 1383,601 1386.5,605.5 1390,610.5 1392.5,615 1394.5,618.5 1395.5,621.5 1396,623.5 1396,625 1395.5,626.5 1389,648 1385.5,651 1381,655.5 1375.5,661 1369.5,665.5 1362.5,669 1355,672.5 1347,675.5 1338.5,679 1328.5,682 1317.5,685.5 1307,688 1299.5,690.5 1295.5,692 1294,693 1293.5,694 1293,694.5" fill="#5e4532"/>
<clipPath id="gclip"><polygon points="1294,537 1298.5,541.5 1305,548 1312.5,554.5 1319,560.5 1324,564 1328.5,567 1333,569 1338.5,572 1344.5,575 1351,578.5 1357.5,582 1363.5,585.5 1369,589.5 1374,593 1379,597 1383,601 1386.5,605.5 1390,610.5 1392.5,615 1394.5,618.5 1395.5,621.5 1396,623.5 1396,625 1395.5,626.5 1389,648 1385.5,651 1381,655.5 1375.5,661 1369.5,665.5 1362.5,669 1355,672.5 1347,675.5 1338.5,679 1328.5,682 1317.5,685.5 1307,688 1299.5,690.5 1295.5,692 1294,693 1293.5,694 1293,694.5"/></clipPath>
<g clip-path="url(#gclip)">
<path d="M1290,466 L1400,516 L1400,521 L1290,471Z" fill="#7a5c3e" opacity="0.8"/>
<line x1="1290" y1="464.0" x2="1400" y2="514.0" stroke="#16100c" stroke-width="1.1"/>
<path d="M1290,476.5 L1400,526.5 L1400,531.5 L1290,481.5Z" fill="#7a5c3e" opacity="0.8"/>
<line x1="1290" y1="474.5" x2="1400" y2="524.5" stroke="#16100c" stroke-width="1.1"/>
<path d="M1290,487 L1400,537 L1400,542 L1290,492Z" fill="#7a5c3e" opacity="0.8"/>
<line x1="1290" y1="485.0" x2="1400" y2="535.0" stroke="#16100c" stroke-width="1.1"/>
<path d="M1290,497.5 L1400,547.5 L1400,552.5 L1290,502.5Z" fill="#7a5c3e" opacity="0.8"/>
<line x1="1290" y1="495.5" x2="1400" y2="545.5" stroke="#16100c" stroke-width="1.1"/>
<path d="M1290,508 L1400,558 L1400,563 L1290,513Z" fill="#7a5c3e" opacity="0.8"/>
<line x1="1290" y1="506.0" x2="1400" y2="556.0" stroke="#16100c" stroke-width="1.1"/>
<path d="M1290,518.5 L1400,568.5 L1400,573.5 L1290,523.5Z" fill="#7a5c3e" opacity="0.8"/>
<line x1="1290" y1="516.5" x2="1400" y2="566.5" stroke="#16100c" stroke-width="1.1"/>
<path d="M1290,529 L1400,579 L1400,584 L1290,534Z" fill="#7a5c3e" opacity="0.8"/>
<line x1="1290" y1="527.0" x2="1400" y2="577.0" stroke="#16100c" stroke-width="1.1"/>
<path d="M1290,539.5 L1400,589.5 L1400,594.5 L1290,544.5Z" fill="#7a5c3e" opacity="0.8"/>
<line x1="1290" y1="537.5" x2="1400" y2="587.5" stroke="#16100c" stroke-width="1.1"/>
<path d="M1290,550 L1400,600 L1400,605 L1290,555Z" fill="#7a5c3e" opacity="0.8"/>
<line x1="1290" y1="548.0" x2="1400" y2="598.0" stroke="#16100c" stroke-width="1.1"/>
<path d="M1290,560.5 L1400,610.5 L1400,615.5 L1290,565.5Z" fill="#7a5c3e" opacity="0.8"/>
<line x1="1290" y1="558.5" x2="1400" y2="608.5" stroke="#16100c" stroke-width="1.1"/>
<path d="M1290,571 L1400,621 L1400,626 L1290,576Z" fill="#7a5c3e" opacity="0.8"/>
<line x1="1290" y1="569.0" x2="1400" y2="619.0" stroke="#16100c" stroke-width="1.1"/>
<path d="M1290,581.5 L1400,631.5 L1400,636.5 L1290,586.5Z" fill="#7a5c3e" opacity="0.8"/>
<line x1="1290" y1="579.5" x2="1400" y2="629.5" stroke="#16100c" stroke-width="1.1"/>
<path d="M1290,592 L1400,642 L1400,647 L1290,597Z" fill="#7a5c3e" opacity="0.8"/>
<line x1="1290" y1="590.0" x2="1400" y2="640.0" stroke="#16100c" stroke-width="1.1"/>
<path d="M1290,602.5 L1400,652.5 L1400,657.5 L1290,607.5Z" fill="#7a5c3e" opacity="0.8"/>
<line x1="1290" y1="600.5" x2="1400" y2="650.5" stroke="#16100c" stroke-width="1.1"/>
<path d="M1290,613 L1400,663 L1400,668 L1290,618Z" fill="#7a5c3e" opacity="0.8"/>
<line x1="1290" y1="611.0" x2="1400" y2="661.0" stroke="#16100c" stroke-width="1.1"/>
<path d="M1290,623.5 L1400,673.5 L1400,678.5 L1290,628.5Z" fill="#7a5c3e" opacity="0.8"/>
<line x1="1290" y1="621.5" x2="1400" y2="671.5" stroke="#16100c" stroke-width="1.1"/>
<path d="M1290,634 L1400,684 L1400,689 L1290,639Z" fill="#7a5c3e" opacity="0.8"/>
<line x1="1290" y1="632.0" x2="1400" y2="682.0" stroke="#16100c" stroke-width="1.1"/>
<path d="M1290,644.5 L1400,694.5 L1400,699.5 L1290,649.5Z" fill="#7a5c3e" opacity="0.8"/>
<line x1="1290" y1="642.5" x2="1400" y2="692.5" stroke="#16100c" stroke-width="1.1"/>
<path d="M1290,655 L1400,705 L1400,710 L1290,660Z" fill="#7a5c3e" opacity="0.8"/>
<line x1="1290" y1="653.0" x2="1400" y2="703.0" stroke="#16100c" stroke-width="1.1"/>
<path d="M1290,665.5 L1400,715.5 L1400,720.5 L1290,670.5Z" fill="#7a5c3e" opacity="0.8"/>
<line x1="1290" y1="663.5" x2="1400" y2="713.5" stroke="#16100c" stroke-width="1.1"/>
<path d="M1290,676 L1400,726 L1400,731 L1290,681Z" fill="#7a5c3e" opacity="0.8"/>
<line x1="1290" y1="674.0" x2="1400" y2="724.0" stroke="#16100c" stroke-width="1.1"/>
<path d="M1290,686.5 L1400,736.5 L1400,741.5 L1290,691.5Z" fill="#7a5c3e" opacity="0.8"/>
<line x1="1290" y1="684.5" x2="1400" y2="734.5" stroke="#16100c" stroke-width="1.1"/>
<path d="M1290,697 L1400,747 L1400,752 L1290,702Z" fill="#7a5c3e" opacity="0.8"/>
<line x1="1290" y1="695.0" x2="1400" y2="745.0" stroke="#16100c" stroke-width="1.1"/>
<path d="M1290,707.5 L1400,757.5 L1400,762.5 L1290,712.5Z" fill="#7a5c3e" opacity="0.8"/>
<line x1="1290" y1="705.5" x2="1400" y2="755.5" stroke="#16100c" stroke-width="1.1"/>
<path d="M1290,718 L1400,768 L1400,773 L1290,723Z" fill="#7a5c3e" opacity="0.8"/>
<line x1="1290" y1="716.0" x2="1400" y2="766.0" stroke="#16100c" stroke-width="1.1"/>
<path d="M1290,728.5 L1400,778.5 L1400,783.5 L1290,733.5Z" fill="#7a5c3e" opacity="0.8"/>
<line x1="1290" y1="726.5" x2="1400" y2="776.5" stroke="#16100c" stroke-width="1.1"/>
<path d="M1290,739 L1400,789 L1400,794 L1290,744Z" fill="#7a5c3e" opacity="0.8"/>
<line x1="1290" y1="737.0" x2="1400" y2="787.0" stroke="#16100c" stroke-width="1.1"/>
<path d="M1290,749.5 L1400,799.5 L1400,804.5 L1290,754.5Z" fill="#7a5c3e" opacity="0.8"/>
<line x1="1290" y1="747.5" x2="1400" y2="797.5" stroke="#16100c" stroke-width="1.1"/>
<line x1="1302.4" y1="520" x2="1302.4" y2="700" stroke="#16100c" stroke-width="1.1"/>
<line x1="1318.0" y1="520" x2="1318.0" y2="700" stroke="#16100c" stroke-width="1.1"/>
<line x1="1364.6" y1="520" x2="1364.6" y2="700" stroke="#16100c" stroke-width="1.1"/>
<line x1="1381.0" y1="520" x2="1381.0" y2="700" stroke="#16100c" stroke-width="1.1"/>
</g>
<line x1="1340.3" y1="572" x2="1340.3" y2="679" stroke="#140f0c" stroke-width="3"/>
<polyline points="1294,537 1298.5,541.5 1305,548 1312.5,554.5 1319,560.5 1324,564 1328.5,567 1333,569 1338.5,572 1344.5,575 1351,578.5 1357.5,582 1363.5,585.5 1369,589.5 1374,593 1379,597 1383,601 1386.5,605.5 1390,610.5 1392.5,615 1394.5,618.5 1395.5,621.5 1396,623.5 1396,625 1395.5,626.5 1389,648 1385.5,651 1381,655.5 1375.5,661 1369.5,665.5 1362.5,669 1355,672.5 1347,675.5 1338.5,679 1328.5,682 1317.5,685.5 1307,688 1299.5,690.5 1295.5,692 1294,693 1293.5,694 1293,694.5" fill="none" stroke="#231d19" stroke-width="3"/>
<line x1="1293.5" y1="525" x2="1293.5" y2="694" stroke="#231d19" stroke-width="2.5"/>
<polygon points="985.5,676 992.5,678 999.5,680 1006.5,681.5 1013.5,683.5 1020.5,685.5 1027.5,687.5 1034.5,689 1041.5,691 1048.5,693 1055.5,694 1062.5,695 1069.5,696 1076.5,697 1083.5,698 1090.5,699 1097.5,700.5 1104.5,701 1111.5,701.5 1118.5,702 1125.5,702.5 1132.5,703 1139.5,703.5 1146.5,704 1153.5,704.5 1160.5,704 1167.5,704 1174.5,704 1181.5,703.5 1188.5,703.5 1195.5,703.5 1202.5,703 1209.5,702.5 1216.5,701.5 1223.5,700.5 1230.5,700 1237.5,699 1244.5,698 1251.5,697 1258.5,696 1265.5,695.5 1272.5,694.5 1279.5,693.5 1286.5,692.5 1293.5,691.5 1300.5,690 1307.5,688 1314.5,686 1321.5,684 1328.5,682 1335.5,680 1342.5,677 1349.5,674 1356.5,671 1363.5,668 1370.5,664.5 1377.5,658 1388,648.5 1392,638 1395.5,626.5 1398,620 1400,614 1402,615.5 1404,617 1405.5,618 1405.5,829 1404,834 1402,841 1400,847.5 1398,849.5 1395.5,851.5 1392,855.5 1388,859.5 1377.5,867 1370.5,871.5 1363.5,875.5 1356.5,879 1349.5,881.5 1342.5,884 1335.5,886.5 1328.5,889 1321.5,891.5 1314.5,893.5 1307.5,896 1300.5,897.5 1293.5,899 1286.5,900.5 1279.5,902 1272.5,903 1265.5,904.5 1258.5,906 1251.5,907.5 1244.5,908.5 1237.5,909.5 1230.5,910.5 1223.5,911.5 1216.5,912.5 1209.5,913.5 1202.5,914.5 1195.5,915 1188.5,915 1181.5,915.5 1174.5,916 1167.5,916 1160.5,916.5 1153.5,917 1146.5,917 1139.5,916.5 1132.5,916 1125.5,915.5 1118.5,915.5 1111.5,915 1104.5,914.5 1097.5,914 1090.5,913 1083.5,912 1076.5,911 1069.5,910 1062.5,909 1055.5,908 1048.5,907 1041.5,905 1034.5,903 1027.5,901 1020.5,898.5 1013.5,896.5 1006.5,894.5 999.5,892.5 992.5,890.5 985.5,888.5" fill="#5e4532"/>
<clipPath id="cw985_676"><polygon points="985.5,676 992.5,678 999.5,680 1006.5,681.5 1013.5,683.5 1020.5,685.5 1027.5,687.5 1034.5,689 1041.5,691 1048.5,693 1055.5,694 1062.5,695 1069.5,696 1076.5,697 1083.5,698 1090.5,699 1097.5,700.5 1104.5,701 1111.5,701.5 1118.5,702 1125.5,702.5 1132.5,703 1139.5,703.5 1146.5,704 1153.5,704.5 1160.5,704 1167.5,704 1174.5,704 1181.5,703.5 1188.5,703.5 1195.5,703.5 1202.5,703 1209.5,702.5 1216.5,701.5 1223.5,700.5 1230.5,700 1237.5,699 1244.5,698 1251.5,697 1258.5,696 1265.5,695.5 1272.5,694.5 1279.5,693.5 1286.5,692.5 1293.5,691.5 1300.5,690 1307.5,688 1314.5,686 1321.5,684 1328.5,682 1335.5,680 1342.5,677 1349.5,674 1356.5,671 1363.5,668 1370.5,664.5 1377.5,658 1388,648.5 1392,638 1395.5,626.5 1398,620 1400,614 1402,615.5 1404,617 1405.5,618 1405.5,829 1404,834 1402,841 1400,847.5 1398,849.5 1395.5,851.5 1392,855.5 1388,859.5 1377.5,867 1370.5,871.5 1363.5,875.5 1356.5,879 1349.5,881.5 1342.5,884 1335.5,886.5 1328.5,889 1321.5,891.5 1314.5,893.5 1307.5,896 1300.5,897.5 1293.5,899 1286.5,900.5 1279.5,902 1272.5,903 1265.5,904.5 1258.5,906 1251.5,907.5 1244.5,908.5 1237.5,909.5 1230.5,910.5 1223.5,911.5 1216.5,912.5 1209.5,913.5 1202.5,914.5 1195.5,915 1188.5,915 1181.5,915.5 1174.5,916 1167.5,916 1160.5,916.5 1153.5,917 1146.5,917 1139.5,916.5 1132.5,916 1125.5,915.5 1118.5,915.5 1111.5,915 1104.5,914.5 1097.5,914 1090.5,913 1083.5,912 1076.5,911 1069.5,910 1062.5,909 1055.5,908 1048.5,907 1041.5,905 1034.5,903 1027.5,901 1020.5,898.5 1013.5,896.5 1006.5,894.5 999.5,892.5 992.5,890.5 985.5,888.5"/></clipPath><g clip-path="url(#cw985_676)">
<path d="M985.5,668.5 L992.5,670.5 L999.5,672.5 L1006.5,674 L1013.5,676 L1020.5,678 L1027.5,680 L1034.5,682 L1041.5,683.5 L1048.5,685.5 L1055.5,686.5 L1062.5,687.5 L1069.5,688.5 L1076.5,689.5 L1083.5,690.5 L1090.5,692 L1097.5,693 L1104.5,693.5 L1111.5,694 L1118.5,694.5 L1125.5,695 L1132.5,695.5 L1139.5,696 L1146.5,696.5 L1153.5,697 L1160.5,697 L1167.5,696.5 L1174.5,696.5 L1181.5,696.5 L1188.5,696 L1195.5,696 L1202.5,696 L1209.5,695 L1216.5,694 L1223.5,693.5 L1230.5,692.5 L1237.5,691.5 L1244.5,690.5 L1251.5,690 L1258.5,689 L1265.5,688 L1272.5,687 L1279.5,686 L1286.5,685 L1293.5,684 L1300.5,683 L1307.5,681 L1314.5,678.5 L1321.5,676.5 L1328.5,674.5 L1335.5,672.5 L1342.5,670 L1349.5,667 L1356.5,663.5 L1363.5,660.5 L1370.5,657 L1377.5,651 L1388,641 L1392,630.5 L1395.5,618.5 L1398,611.5 L1400,606 L1402,607.5 L1404,609.5 L1405.5,610.5 L1405.5,617 L1404,616 L1402,614.5 L1400,613 L1398,619 L1395.5,625.5 L1392,637 L1388,648 L1377.5,657.5 L1370.5,663.5 L1363.5,667 L1356.5,670 L1349.5,673 L1342.5,676.5 L1335.5,679 L1328.5,681 L1321.5,683 L1314.5,685 L1307.5,687.5 L1300.5,689.5 L1293.5,690.5 L1286.5,691.5 L1279.5,692.5 L1272.5,693.5 L1265.5,694.5 L1258.5,695.5 L1251.5,696.5 L1244.5,697 L1237.5,698 L1230.5,699 L1223.5,700 L1216.5,700.5 L1209.5,701.5 L1202.5,702.5 L1195.5,702.5 L1188.5,702.5 L1181.5,703 L1174.5,703 L1167.5,703 L1160.5,703.5 L1153.5,703.5 L1146.5,703 L1139.5,702.5 L1132.5,702 L1125.5,701.5 L1118.5,701 L1111.5,700.5 L1104.5,700 L1097.5,699.5 L1090.5,698.5 L1083.5,697.5 L1076.5,696.5 L1069.5,695.5 L1062.5,694 L1055.5,693 L1048.5,692 L1041.5,690.5 L1034.5,688.5 L1027.5,686.5 L1020.5,684.5 L1013.5,683 L1006.5,681 L999.5,679 L992.5,677 L985.5,675Z M985.5,679 L992.5,681 L999.5,683 L1006.5,685 L1013.5,687 L1020.5,688.5 L1027.5,690.5 L1034.5,692.5 L1041.5,694.5 L1048.5,696 L1055.5,697 L1062.5,698 L1069.5,699.5 L1076.5,700.5 L1083.5,701.5 L1090.5,702.5 L1097.5,703.5 L1104.5,704 L1111.5,704.5 L1118.5,705 L1125.5,705.5 L1132.5,706 L1139.5,706.5 L1146.5,707 L1153.5,707.5 L1160.5,707.5 L1167.5,707 L1174.5,707 L1181.5,707 L1188.5,706.5 L1195.5,706.5 L1202.5,706.5 L1209.5,705.5 L1216.5,704.5 L1223.5,704 L1230.5,703 L1237.5,702 L1244.5,701 L1251.5,700.5 L1258.5,699.5 L1265.5,698.5 L1272.5,697.5 L1279.5,696.5 L1286.5,695.5 L1293.5,694.5 L1300.5,693.5 L1307.5,691 L1314.5,689 L1321.5,687 L1328.5,685 L1335.5,683 L1342.5,680 L1349.5,677 L1356.5,674 L1363.5,671 L1370.5,667.5 L1377.5,661 L1388,652 L1392,641.5 L1395.5,630 L1398,623 L1400,617.5 L1402,619 L1404,620 L1405.5,621 L1405.5,628 L1404,627 L1402,626 L1400,625 L1398,630.5 L1395.5,637 L1392,648 L1388,658.5 L1377.5,668 L1370.5,674 L1363.5,677.5 L1356.5,680.5 L1349.5,683.5 L1342.5,686.5 L1335.5,689.5 L1328.5,691.5 L1321.5,693.5 L1314.5,695.5 L1307.5,697.5 L1300.5,700 L1293.5,701 L1286.5,702 L1279.5,703 L1272.5,704 L1265.5,705 L1258.5,706 L1251.5,707 L1244.5,708 L1237.5,708.5 L1230.5,709.5 L1223.5,710.5 L1216.5,711.5 L1209.5,712 L1202.5,713 L1195.5,713 L1188.5,713.5 L1181.5,713.5 L1174.5,713.5 L1167.5,714 L1160.5,714 L1153.5,714 L1146.5,714 L1139.5,713.5 L1132.5,713 L1125.5,712.5 L1118.5,712 L1111.5,711.5 L1104.5,711 L1097.5,710 L1090.5,709 L1083.5,708 L1076.5,707 L1069.5,706 L1062.5,705 L1055.5,704 L1048.5,703 L1041.5,701 L1034.5,699 L1027.5,697 L1020.5,695.5 L1013.5,693.5 L1006.5,691.5 L999.5,689.5 L992.5,687.5 L985.5,686Z M985.5,690 L992.5,691.5 L999.5,693.5 L1006.5,695.5 L1013.5,697.5 L1020.5,699.5 L1027.5,701 L1034.5,703 L1041.5,705 L1048.5,707 L1055.5,708 L1062.5,709 L1069.5,710 L1076.5,711 L1083.5,712 L1090.5,713 L1097.5,714 L1104.5,715 L1111.5,715.5 L1118.5,716 L1125.5,716.5 L1132.5,717 L1139.5,717.5 L1146.5,718 L1153.5,718 L1160.5,718 L1167.5,718 L1174.5,717.5 L1181.5,717.5 L1188.5,717.5 L1195.5,717 L1202.5,717 L1209.5,716 L1216.5,715.5 L1223.5,714.5 L1230.5,713.5 L1237.5,712.5 L1244.5,711.5 L1251.5,711 L1258.5,710 L1265.5,709 L1272.5,708 L1279.5,707 L1286.5,706 L1293.5,705 L1300.5,703.5 L1307.5,701.5 L1314.5,699.5 L1321.5,697.5 L1328.5,695.5 L1335.5,693 L1342.5,690.5 L1349.5,687.5 L1356.5,684.5 L1363.5,681.5 L1370.5,678 L1377.5,671.5 L1388,662.5 L1392,652 L1395.5,641 L1398,634.5 L1400,629 L1402,630 L1404,631 L1405.5,631.5 L1405.5,638.5 L1404,638 L1402,637.5 L1400,636.5 L1398,642 L1395.5,648 L1392,659 L1388,669 L1377.5,678 L1370.5,684.5 L1363.5,688 L1356.5,691 L1349.5,694 L1342.5,697 L1335.5,699.5 L1328.5,701.5 L1321.5,704 L1314.5,706 L1307.5,708 L1300.5,710 L1293.5,711.5 L1286.5,712.5 L1279.5,713.5 L1272.5,714.5 L1265.5,715.5 L1258.5,716.5 L1251.5,717.5 L1244.5,718.5 L1237.5,719 L1230.5,720 L1223.5,721 L1216.5,722 L1209.5,722.5 L1202.5,723.5 L1195.5,723.5 L1188.5,724 L1181.5,724 L1174.5,724.5 L1167.5,724.5 L1160.5,724.5 L1153.5,725 L1146.5,724.5 L1139.5,724 L1132.5,723.5 L1125.5,723 L1118.5,722.5 L1111.5,722 L1104.5,721.5 L1097.5,721 L1090.5,720 L1083.5,719 L1076.5,717.5 L1069.5,716.5 L1062.5,715.5 L1055.5,714.5 L1048.5,713.5 L1041.5,711.5 L1034.5,710 L1027.5,708 L1020.5,706 L1013.5,704 L1006.5,702 L999.5,700.5 L992.5,698.5 L985.5,696.5Z M985.5,700.5 L992.5,702.5 L999.5,704.5 L1006.5,706 L1013.5,708 L1020.5,710 L1027.5,712 L1034.5,714 L1041.5,715.5 L1048.5,717.5 L1055.5,718.5 L1062.5,719.5 L1069.5,720.5 L1076.5,721.5 L1083.5,723 L1090.5,724 L1097.5,725 L1104.5,725.5 L1111.5,726 L1118.5,726.5 L1125.5,727 L1132.5,727.5 L1139.5,728 L1146.5,728.5 L1153.5,729 L1160.5,728.5 L1167.5,728.5 L1174.5,728 L1181.5,728 L1188.5,728 L1195.5,727.5 L1202.5,727.5 L1209.5,726.5 L1216.5,726 L1223.5,725 L1230.5,724 L1237.5,723 L1244.5,722 L1251.5,721.5 L1258.5,720.5 L1265.5,719.5 L1272.5,718.5 L1279.5,717.5 L1286.5,716 L1293.5,715 L1300.5,714 L1307.5,712 L1314.5,710 L1321.5,708 L1328.5,705.5 L1335.5,703.5 L1342.5,701 L1349.5,698 L1356.5,695 L1363.5,692 L1370.5,688 L1377.5,682 L1388,673 L1392,663 L1395.5,652.5 L1398,646 L1400,641 L1402,641.5 L1404,642 L1405.5,642.5 L1405.5,649 L1404,648.5 L1402,648.5 L1400,648 L1398,653.5 L1395.5,659.5 L1392,670 L1388,679.5 L1377.5,688.5 L1370.5,694.5 L1363.5,698 L1356.5,701.5 L1349.5,704.5 L1342.5,707.5 L1335.5,710 L1328.5,712 L1321.5,714 L1314.5,716.5 L1307.5,718.5 L1300.5,720.5 L1293.5,721.5 L1286.5,722.5 L1279.5,724 L1272.5,725 L1265.5,726 L1258.5,727 L1251.5,728 L1244.5,729 L1237.5,729.5 L1230.5,730.5 L1223.5,731.5 L1216.5,732.5 L1209.5,733.5 L1202.5,734 L1195.5,734.5 L1188.5,734.5 L1181.5,734.5 L1174.5,735 L1167.5,735 L1160.5,735 L1153.5,735.5 L1146.5,735 L1139.5,734.5 L1132.5,734 L1125.5,733.5 L1118.5,733 L1111.5,732.5 L1104.5,732 L1097.5,731.5 L1090.5,730.5 L1083.5,729.5 L1076.5,728.5 L1069.5,727.5 L1062.5,726.5 L1055.5,725.5 L1048.5,724 L1041.5,722.5 L1034.5,720.5 L1027.5,718.5 L1020.5,716.5 L1013.5,714.5 L1006.5,713 L999.5,711 L992.5,709 L985.5,707Z M985.5,711 L992.5,713 L999.5,715 L1006.5,717 L1013.5,718.5 L1020.5,720.5 L1027.5,722.5 L1034.5,724.5 L1041.5,726.5 L1048.5,728 L1055.5,729.5 L1062.5,730.5 L1069.5,731.5 L1076.5,732.5 L1083.5,733.5 L1090.5,734.5 L1097.5,735.5 L1104.5,736 L1111.5,736.5 L1118.5,737 L1125.5,737.5 L1132.5,738 L1139.5,738.5 L1146.5,739 L1153.5,739.5 L1160.5,739 L1167.5,739 L1174.5,739 L1181.5,738.5 L1188.5,738.5 L1195.5,738.5 L1202.5,738 L1209.5,737.5 L1216.5,736.5 L1223.5,735.5 L1230.5,734.5 L1237.5,733.5 L1244.5,732.5 L1251.5,732 L1258.5,731 L1265.5,730 L1272.5,729 L1279.5,727.5 L1286.5,726.5 L1293.5,725.5 L1300.5,724.5 L1307.5,722.5 L1314.5,720.5 L1321.5,718 L1328.5,716 L1335.5,714 L1342.5,711 L1349.5,708.5 L1356.5,705.5 L1363.5,702 L1370.5,698.5 L1377.5,692.5 L1388,683.5 L1392,674 L1395.5,663.5 L1398,657.5 L1400,652.5 L1402,652.5 L1404,653 L1405.5,653 L1405.5,659.5 L1404,659.5 L1402,660 L1400,660 L1398,665 L1395.5,670.5 L1392,680.5 L1388,690 L1377.5,699 L1370.5,705 L1363.5,708.5 L1356.5,712 L1349.5,714.5 L1342.5,717.5 L1335.5,720.5 L1328.5,722.5 L1321.5,724.5 L1314.5,727 L1307.5,729 L1300.5,731 L1293.5,732 L1286.5,733 L1279.5,734 L1272.5,735.5 L1265.5,736.5 L1258.5,737.5 L1251.5,738.5 L1244.5,739.5 L1237.5,740 L1230.5,741 L1223.5,742 L1216.5,743 L1209.5,744 L1202.5,744.5 L1195.5,745 L1188.5,745 L1181.5,745.5 L1174.5,745.5 L1167.5,745.5 L1160.5,746 L1153.5,746 L1146.5,746 L1139.5,745.5 L1132.5,745 L1125.5,744.5 L1118.5,744 L1111.5,743.5 L1104.5,743 L1097.5,742.5 L1090.5,741 L1083.5,740 L1076.5,739 L1069.5,738 L1062.5,737 L1055.5,736 L1048.5,735 L1041.5,733 L1034.5,731 L1027.5,729 L1020.5,727.5 L1013.5,725.5 L1006.5,723.5 L999.5,721.5 L992.5,719.5 L985.5,717.5Z M985.5,721.5 L992.5,723.5 L999.5,725.5 L1006.5,727.5 L1013.5,729.5 L1020.5,731.5 L1027.5,733 L1034.5,735 L1041.5,737 L1048.5,739 L1055.5,740 L1062.5,741 L1069.5,742 L1076.5,743 L1083.5,744 L1090.5,745 L1097.5,746.5 L1104.5,747 L1111.5,747.5 L1118.5,748 L1125.5,748.5 L1132.5,749 L1139.5,749.5 L1146.5,750 L1153.5,750 L1160.5,750 L1167.5,749.5 L1174.5,749.5 L1181.5,749.5 L1188.5,749 L1195.5,749 L1202.5,748.5 L1209.5,748 L1216.5,747 L1223.5,746 L1230.5,745 L1237.5,744 L1244.5,743.5 L1251.5,742.5 L1258.5,741.5 L1265.5,740.5 L1272.5,739 L1279.5,738 L1286.5,737 L1293.5,736 L1300.5,735 L1307.5,733 L1314.5,730.5 L1321.5,728.5 L1328.5,726.5 L1335.5,724 L1342.5,721.5 L1349.5,718.5 L1356.5,715.5 L1363.5,712.5 L1370.5,709 L1377.5,703 L1388,694 L1392,685 L1395.5,675 L1398,669 L1400,664 L1402,664 L1404,663.5 L1405.5,663.5 L1405.5,670 L1404,670.5 L1402,671 L1400,671.5 L1398,676.5 L1395.5,682 L1392,691.5 L1388,700.5 L1377.5,709.5 L1370.5,715.5 L1363.5,719 L1356.5,722 L1349.5,725 L1342.5,728 L1335.5,730.5 L1328.5,733 L1321.5,735 L1314.5,737 L1307.5,739.5 L1300.5,741 L1293.5,742.5 L1286.5,743.5 L1279.5,744.5 L1272.5,745.5 L1265.5,747 L1258.5,748 L1251.5,749 L1244.5,750 L1237.5,750.5 L1230.5,751.5 L1223.5,752.5 L1216.5,753.5 L1209.5,754.5 L1202.5,755 L1195.5,755.5 L1188.5,755.5 L1181.5,756 L1174.5,756 L1167.5,756.5 L1160.5,756.5 L1153.5,756.5 L1146.5,756.5 L1139.5,756 L1132.5,755.5 L1125.5,755 L1118.5,754.5 L1111.5,754 L1104.5,753.5 L1097.5,753 L1090.5,752 L1083.5,751 L1076.5,750 L1069.5,749 L1062.5,747.5 L1055.5,746.5 L1048.5,745.5 L1041.5,744 L1034.5,742 L1027.5,740 L1020.5,738 L1013.5,736 L1006.5,734 L999.5,732 L992.5,730.5 L985.5,728.5Z M985.5,732.5 L992.5,734 L999.5,736 L1006.5,738 L1013.5,740 L1020.5,742 L1027.5,744 L1034.5,746 L1041.5,748 L1048.5,749.5 L1055.5,750.5 L1062.5,751.5 L1069.5,753 L1076.5,754 L1083.5,755 L1090.5,756 L1097.5,757 L1104.5,757.5 L1111.5,758 L1118.5,758.5 L1125.5,759 L1132.5,759.5 L1139.5,760 L1146.5,760.5 L1153.5,760.5 L1160.5,760.5 L1167.5,760.5 L1174.5,760 L1181.5,760 L1188.5,759.5 L1195.5,759.5 L1202.5,759 L1209.5,758.5 L1216.5,757.5 L1223.5,756.5 L1230.5,755.5 L1237.5,754.5 L1244.5,754 L1251.5,753 L1258.5,752 L1265.5,750.5 L1272.5,749.5 L1279.5,748.5 L1286.5,747.5 L1293.5,746.5 L1300.5,745 L1307.5,743 L1314.5,741 L1321.5,739 L1328.5,736.5 L1335.5,734.5 L1342.5,732 L1349.5,729 L1356.5,726 L1363.5,723 L1370.5,719 L1377.5,713.5 L1388,704.5 L1392,695.5 L1395.5,686 L1398,680.5 L1400,676 L1402,675.5 L1404,674.5 L1405.5,674 L1405.5,680.5 L1404,681.5 L1402,682.5 L1400,683 L1398,688 L1395.5,693 L1392,702.5 L1388,711 L1377.5,720 L1370.5,725.5 L1363.5,729.5 L1356.5,732.5 L1349.5,735.5 L1342.5,738.5 L1335.5,741 L1328.5,743 L1321.5,745.5 L1314.5,747.5 L1307.5,749.5 L1300.5,751.5 L1293.5,753 L1286.5,754 L1279.5,755 L1272.5,756 L1265.5,757.5 L1258.5,758.5 L1251.5,759.5 L1244.5,760.5 L1237.5,761.5 L1230.5,762 L1223.5,763 L1216.5,764 L1209.5,765 L1202.5,766 L1195.5,766 L1188.5,766 L1181.5,766.5 L1174.5,766.5 L1167.5,767 L1160.5,767 L1153.5,767.5 L1146.5,767 L1139.5,766.5 L1132.5,766 L1125.5,765.5 L1118.5,765 L1111.5,765 L1104.5,764.5 L1097.5,763.5 L1090.5,762.5 L1083.5,761.5 L1076.5,760.5 L1069.5,759.5 L1062.5,758.5 L1055.5,757.5 L1048.5,756.5 L1041.5,754.5 L1034.5,752.5 L1027.5,750.5 L1020.5,748.5 L1013.5,746.5 L1006.5,745 L999.5,743 L992.5,741 L985.5,739Z M985.5,743 L992.5,745 L999.5,747 L1006.5,749 L1013.5,750.5 L1020.5,752.5 L1027.5,754.5 L1034.5,756.5 L1041.5,758.5 L1048.5,760.5 L1055.5,761.5 L1062.5,762.5 L1069.5,763.5 L1076.5,764.5 L1083.5,765.5 L1090.5,766.5 L1097.5,767.5 L1104.5,768.5 L1111.5,769 L1118.5,769 L1125.5,769.5 L1132.5,770 L1139.5,770.5 L1146.5,771 L1153.5,771.5 L1160.5,771 L1167.5,771 L1174.5,770.5 L1181.5,770.5 L1188.5,770 L1195.5,770 L1202.5,770 L1209.5,769 L1216.5,768 L1223.5,767 L1230.5,766 L1237.5,765 L1244.5,764.5 L1251.5,763.5 L1258.5,762.5 L1265.5,761 L1272.5,760 L1279.5,759 L1286.5,758 L1293.5,757 L1300.5,755.5 L1307.5,753.5 L1314.5,751.5 L1321.5,749 L1328.5,747 L1335.5,745 L1342.5,742.5 L1349.5,739.5 L1356.5,736.5 L1363.5,733.5 L1370.5,729.5 L1377.5,724 L1388,715 L1392,706.5 L1395.5,697.5 L1398,692 L1400,687.5 L1402,686.5 L1404,685.5 L1405.5,684.5 L1405.5,691 L1404,692 L1402,693.5 L1400,695 L1398,699.5 L1395.5,704.5 L1392,713.5 L1388,721.5 L1377.5,730.5 L1370.5,736 L1363.5,740 L1356.5,743 L1349.5,746 L1342.5,748.5 L1335.5,751.5 L1328.5,753.5 L1321.5,755.5 L1314.5,758 L1307.5,760 L1300.5,762 L1293.5,763 L1286.5,764.5 L1279.5,765.5 L1272.5,766.5 L1265.5,767.5 L1258.5,769 L1251.5,770 L1244.5,771 L1237.5,772 L1230.5,772.5 L1223.5,773.5 L1216.5,774.5 L1209.5,775.5 L1202.5,776.5 L1195.5,776.5 L1188.5,777 L1181.5,777 L1174.5,777.5 L1167.5,777.5 L1160.5,777.5 L1153.5,778 L1146.5,777.5 L1139.5,777 L1132.5,777 L1125.5,776.5 L1118.5,776 L1111.5,775.5 L1104.5,775 L1097.5,774.5 L1090.5,773.5 L1083.5,772 L1076.5,771 L1069.5,770 L1062.5,769 L1055.5,768 L1048.5,767 L1041.5,765 L1034.5,763 L1027.5,761 L1020.5,759.5 L1013.5,757.5 L1006.5,755.5 L999.5,753.5 L992.5,751.5 L985.5,749.5Z M985.5,753.5 L992.5,755.5 L999.5,757.5 L1006.5,759.5 L1013.5,761.5 L1020.5,763.5 L1027.5,765 L1034.5,767 L1041.5,769 L1048.5,771 L1055.5,772 L1062.5,773 L1069.5,774 L1076.5,775 L1083.5,776.5 L1090.5,777.5 L1097.5,778.5 L1104.5,779 L1111.5,779.5 L1118.5,780 L1125.5,780.5 L1132.5,781 L1139.5,781 L1146.5,781.5 L1153.5,782 L1160.5,781.5 L1167.5,781.5 L1174.5,781.5 L1181.5,781 L1188.5,781 L1195.5,780.5 L1202.5,780.5 L1209.5,779.5 L1216.5,778.5 L1223.5,777.5 L1230.5,776.5 L1237.5,775.5 L1244.5,775 L1251.5,774 L1258.5,773 L1265.5,771.5 L1272.5,770.5 L1279.5,769.5 L1286.5,768.5 L1293.5,767 L1300.5,766 L1307.5,764 L1314.5,762 L1321.5,759.5 L1328.5,757.5 L1335.5,755 L1342.5,752.5 L1349.5,750 L1356.5,747 L1363.5,743.5 L1370.5,740 L1377.5,734.5 L1388,725.5 L1392,717.5 L1395.5,708.5 L1398,703.5 L1400,699 L1402,698 L1404,696 L1405.5,695 L1405.5,701.5 L1404,703 L1402,705 L1400,706.5 L1398,711 L1395.5,715.5 L1392,724 L1388,732 L1377.5,741 L1370.5,746.5 L1363.5,750 L1356.5,753.5 L1349.5,756 L1342.5,759 L1335.5,761.5 L1328.5,764 L1321.5,766 L1314.5,768.5 L1307.5,770.5 L1300.5,772.5 L1293.5,773.5 L1286.5,775 L1279.5,776 L1272.5,777 L1265.5,778 L1258.5,779.5 L1251.5,780.5 L1244.5,781.5 L1237.5,782.5 L1230.5,783 L1223.5,784 L1216.5,785 L1209.5,786 L1202.5,787 L1195.5,787 L1188.5,787.5 L1181.5,787.5 L1174.5,788 L1167.5,788 L1160.5,788.5 L1153.5,788.5 L1146.5,788.5 L1139.5,788 L1132.5,787.5 L1125.5,787 L1118.5,786.5 L1111.5,786 L1104.5,785.5 L1097.5,785 L1090.5,784 L1083.5,783 L1076.5,782 L1069.5,781 L1062.5,780 L1055.5,778.5 L1048.5,777.5 L1041.5,776 L1034.5,774 L1027.5,772 L1020.5,770 L1013.5,768 L1006.5,766 L999.5,764 L992.5,762 L985.5,760Z M985.5,764 L992.5,766 L999.5,768 L1006.5,770 L1013.5,772 L1020.5,774 L1027.5,776 L1034.5,778 L1041.5,780 L1048.5,781.5 L1055.5,782.5 L1062.5,784 L1069.5,785 L1076.5,786 L1083.5,787 L1090.5,788 L1097.5,789 L1104.5,789.5 L1111.5,790 L1118.5,790.5 L1125.5,791 L1132.5,791.5 L1139.5,792 L1146.5,792.5 L1153.5,792.5 L1160.5,792.5 L1167.5,792 L1174.5,792 L1181.5,791.5 L1188.5,791.5 L1195.5,791 L1202.5,791 L1209.5,790 L1216.5,789 L1223.5,788 L1230.5,787 L1237.5,786.5 L1244.5,785.5 L1251.5,784.5 L1258.5,783.5 L1265.5,782 L1272.5,781 L1279.5,780 L1286.5,778.5 L1293.5,777.5 L1300.5,776.5 L1307.5,774.5 L1314.5,772 L1321.5,770 L1328.5,767.5 L1335.5,765.5 L1342.5,763 L1349.5,760 L1356.5,757.5 L1363.5,754 L1370.5,750 L1377.5,745 L1388,736 L1392,728 L1395.5,720 L1398,715 L1400,711 L1402,709 L1404,707 L1405.5,705.5 L1405.5,712 L1404,714 L1402,716.5 L1400,718 L1398,722.5 L1395.5,727 L1392,735 L1388,742.5 L1377.5,751.5 L1370.5,756.5 L1363.5,760.5 L1356.5,764 L1349.5,766.5 L1342.5,769.5 L1335.5,772 L1328.5,774 L1321.5,776.5 L1314.5,778.5 L1307.5,781 L1300.5,782.5 L1293.5,784 L1286.5,785 L1279.5,786.5 L1272.5,787.5 L1265.5,788.5 L1258.5,790 L1251.5,791 L1244.5,792 L1237.5,793 L1230.5,794 L1223.5,794.5 L1216.5,795.5 L1209.5,796.5 L1202.5,797.5 L1195.5,798 L1188.5,798 L1181.5,798 L1174.5,798.5 L1167.5,798.5 L1160.5,799 L1153.5,799 L1146.5,799 L1139.5,798.5 L1132.5,798 L1125.5,797.5 L1118.5,797 L1111.5,797 L1104.5,796.5 L1097.5,795.5 L1090.5,794.5 L1083.5,793.5 L1076.5,792.5 L1069.5,791.5 L1062.5,790.5 L1055.5,789.5 L1048.5,788.5 L1041.5,786.5 L1034.5,784.5 L1027.5,782.5 L1020.5,780.5 L1013.5,778.5 L1006.5,776.5 L999.5,774.5 L992.5,773 L985.5,771Z M985.5,775 L992.5,777 L999.5,778.5 L1006.5,780.5 L1013.5,782.5 L1020.5,784.5 L1027.5,786.5 L1034.5,788.5 L1041.5,790.5 L1048.5,792.5 L1055.5,793.5 L1062.5,794.5 L1069.5,795.5 L1076.5,796.5 L1083.5,797.5 L1090.5,798.5 L1097.5,800 L1104.5,800.5 L1111.5,801 L1118.5,801 L1125.5,801.5 L1132.5,802 L1139.5,802.5 L1146.5,803 L1153.5,803 L1160.5,803 L1167.5,802.5 L1174.5,802.5 L1181.5,802 L1188.5,802 L1195.5,801.5 L1202.5,801.5 L1209.5,800.5 L1216.5,799.5 L1223.5,798.5 L1230.5,797.5 L1237.5,797 L1244.5,796 L1251.5,795 L1258.5,794 L1265.5,792.5 L1272.5,791.5 L1279.5,790.5 L1286.5,789 L1293.5,788 L1300.5,786.5 L1307.5,785 L1314.5,782.5 L1321.5,780.5 L1328.5,778 L1335.5,776 L1342.5,773.5 L1349.5,770.5 L1356.5,767.5 L1363.5,764.5 L1370.5,760.5 L1377.5,755.5 L1388,746.5 L1392,739 L1395.5,731 L1398,726.5 L1400,722.5 L1402,720.5 L1404,718 L1405.5,716 L1405.5,722.5 L1404,724.5 L1402,727.5 L1400,730 L1398,734 L1395.5,738 L1392,746 L1388,753 L1377.5,762 L1370.5,767 L1363.5,771 L1356.5,774 L1349.5,777 L1342.5,779.5 L1335.5,782.5 L1328.5,784.5 L1321.5,787 L1314.5,789 L1307.5,791.5 L1300.5,793 L1293.5,794.5 L1286.5,795.5 L1279.5,797 L1272.5,798 L1265.5,799 L1258.5,800.5 L1251.5,801.5 L1244.5,802.5 L1237.5,803.5 L1230.5,804.5 L1223.5,805.5 L1216.5,806 L1209.5,807 L1202.5,808 L1195.5,808.5 L1188.5,808.5 L1181.5,809 L1174.5,809 L1167.5,809.5 L1160.5,809.5 L1153.5,810 L1146.5,809.5 L1139.5,809 L1132.5,808.5 L1125.5,808.5 L1118.5,808 L1111.5,807.5 L1104.5,807 L1097.5,806.5 L1090.5,805.5 L1083.5,804.5 L1076.5,803.5 L1069.5,802 L1062.5,801 L1055.5,800 L1048.5,799 L1041.5,797 L1034.5,795 L1027.5,793.5 L1020.5,791.5 L1013.5,789.5 L1006.5,787.5 L999.5,785.5 L992.5,783.5 L985.5,781.5Z M985.5,785.5 L992.5,787.5 L999.5,789.5 L1006.5,791.5 L1013.5,793.5 L1020.5,795.5 L1027.5,797.5 L1034.5,799 L1041.5,801 L1048.5,803 L1055.5,804 L1062.5,805 L1069.5,806 L1076.5,807.5 L1083.5,808.5 L1090.5,809.5 L1097.5,810.5 L1104.5,811 L1111.5,811.5 L1118.5,812 L1125.5,812.5 L1132.5,812.5 L1139.5,813 L1146.5,813.5 L1153.5,814 L1160.5,813.5 L1167.5,813.5 L1174.5,813 L1181.5,813 L1188.5,812.5 L1195.5,812.5 L1202.5,812 L1209.5,811 L1216.5,810 L1223.5,809 L1230.5,808.5 L1237.5,807.5 L1244.5,806.5 L1251.5,805.5 L1258.5,804.5 L1265.5,803 L1272.5,802 L1279.5,800.5 L1286.5,799.5 L1293.5,798.5 L1300.5,797 L1307.5,795 L1314.5,793 L1321.5,790.5 L1328.5,788.5 L1335.5,786 L1342.5,783.5 L1349.5,781 L1356.5,778 L1363.5,775 L1370.5,771 L1377.5,765.5 L1388,757 L1392,750 L1395.5,742.5 L1398,738 L1400,734 L1402,731.5 L1404,729 L1405.5,726.5 L1405.5,733 L1404,735.5 L1402,739 L1400,741.5 L1398,745.5 L1395.5,749.5 L1392,757 L1388,763.5 L1377.5,772 L1370.5,777.5 L1363.5,781.5 L1356.5,784.5 L1349.5,787.5 L1342.5,790 L1335.5,792.5 L1328.5,795 L1321.5,797 L1314.5,799.5 L1307.5,801.5 L1300.5,803.5 L1293.5,805 L1286.5,806 L1279.5,807 L1272.5,808.5 L1265.5,809.5 L1258.5,811 L1251.5,812 L1244.5,813 L1237.5,814 L1230.5,815 L1223.5,816 L1216.5,817 L1209.5,818 L1202.5,818.5 L1195.5,819 L1188.5,819 L1181.5,819.5 L1174.5,819.5 L1167.5,820 L1160.5,820 L1153.5,820.5 L1146.5,820 L1139.5,820 L1132.5,819.5 L1125.5,819 L1118.5,818.5 L1111.5,818 L1104.5,817.5 L1097.5,817 L1090.5,816 L1083.5,815 L1076.5,814 L1069.5,813 L1062.5,812 L1055.5,811 L1048.5,810 L1041.5,808 L1034.5,806 L1027.5,804 L1020.5,802 L1013.5,800 L1006.5,798 L999.5,796 L992.5,794 L985.5,792Z M985.5,796 L992.5,798 L999.5,800 L1006.5,802 L1013.5,804 L1020.5,806 L1027.5,808 L1034.5,810 L1041.5,812 L1048.5,814 L1055.5,815 L1062.5,816 L1069.5,817 L1076.5,818 L1083.5,819 L1090.5,820 L1097.5,821 L1104.5,821.5 L1111.5,822 L1118.5,822.5 L1125.5,823 L1132.5,823.5 L1139.5,824 L1146.5,824 L1153.5,824.5 L1160.5,824 L1167.5,824 L1174.5,823.5 L1181.5,823.5 L1188.5,823 L1195.5,823 L1202.5,822.5 L1209.5,821.5 L1216.5,820.5 L1223.5,820 L1230.5,819 L1237.5,818 L1244.5,817 L1251.5,816 L1258.5,815 L1265.5,813.5 L1272.5,812.5 L1279.5,811 L1286.5,810 L1293.5,808.5 L1300.5,807.5 L1307.5,805.5 L1314.5,803.5 L1321.5,801 L1328.5,799 L1335.5,796.5 L1342.5,794 L1349.5,791.5 L1356.5,788.5 L1363.5,785 L1370.5,781.5 L1377.5,776 L1388,767.5 L1392,761 L1395.5,753.5 L1398,749.5 L1400,746 L1402,743 L1404,739.5 L1405.5,737 L1405.5,744 L1404,746.5 L1402,750 L1400,753 L1398,756.5 L1395.5,761 L1392,767.5 L1388,774.5 L1377.5,782.5 L1370.5,787.5 L1363.5,791.5 L1356.5,795 L1349.5,797.5 L1342.5,800.5 L1335.5,803 L1328.5,805 L1321.5,807.5 L1314.5,810 L1307.5,812 L1300.5,814 L1293.5,815 L1286.5,816.5 L1279.5,817.5 L1272.5,819 L1265.5,820 L1258.5,821.5 L1251.5,822.5 L1244.5,823.5 L1237.5,824.5 L1230.5,825.5 L1223.5,826.5 L1216.5,827.5 L1209.5,828.5 L1202.5,829 L1195.5,829.5 L1188.5,829.5 L1181.5,830 L1174.5,830.5 L1167.5,830.5 L1160.5,831 L1153.5,831 L1146.5,831 L1139.5,830.5 L1132.5,830 L1125.5,829.5 L1118.5,829 L1111.5,829 L1104.5,828.5 L1097.5,828 L1090.5,827 L1083.5,825.5 L1076.5,824.5 L1069.5,823.5 L1062.5,822.5 L1055.5,821.5 L1048.5,820.5 L1041.5,818.5 L1034.5,816.5 L1027.5,814.5 L1020.5,812.5 L1013.5,810.5 L1006.5,808.5 L999.5,806.5 L992.5,804.5 L985.5,802.5Z M985.5,806.5 L992.5,808.5 L999.5,810.5 L1006.5,812.5 L1013.5,814.5 L1020.5,816.5 L1027.5,818.5 L1034.5,820.5 L1041.5,822.5 L1048.5,824.5 L1055.5,825.5 L1062.5,826.5 L1069.5,827.5 L1076.5,828.5 L1083.5,829.5 L1090.5,831 L1097.5,832 L1104.5,832.5 L1111.5,833 L1118.5,833 L1125.5,833.5 L1132.5,834 L1139.5,834.5 L1146.5,835 L1153.5,835 L1160.5,835 L1167.5,834.5 L1174.5,834.5 L1181.5,834 L1188.5,833.5 L1195.5,833.5 L1202.5,833 L1209.5,832.5 L1216.5,831.5 L1223.5,830.5 L1230.5,829.5 L1237.5,828.5 L1244.5,827.5 L1251.5,826.5 L1258.5,825.5 L1265.5,824 L1272.5,823 L1279.5,821.5 L1286.5,820.5 L1293.5,819 L1300.5,818 L1307.5,816 L1314.5,813.5 L1321.5,811.5 L1328.5,809 L1335.5,807 L1342.5,804.5 L1349.5,801.5 L1356.5,799 L1363.5,795.5 L1370.5,791.5 L1377.5,786.5 L1388,778 L1392,771.5 L1395.5,765 L1398,761 L1400,757.5 L1402,754.5 L1404,750.5 L1405.5,748 L1405.5,754.5 L1404,757.5 L1402,761.5 L1400,765 L1398,768 L1395.5,772 L1392,778.5 L1388,785 L1377.5,793 L1370.5,798 L1363.5,802 L1356.5,805.5 L1349.5,808 L1342.5,810.5 L1335.5,813.5 L1328.5,815.5 L1321.5,818 L1314.5,820 L1307.5,822.5 L1300.5,824 L1293.5,825.5 L1286.5,827 L1279.5,828 L1272.5,829.5 L1265.5,830.5 L1258.5,832 L1251.5,833 L1244.5,834 L1237.5,835 L1230.5,836 L1223.5,837 L1216.5,838 L1209.5,839 L1202.5,840 L1195.5,840 L1188.5,840.5 L1181.5,840.5 L1174.5,841 L1167.5,841 L1160.5,841.5 L1153.5,841.5 L1146.5,841.5 L1139.5,841 L1132.5,840.5 L1125.5,840.5 L1118.5,840 L1111.5,839.5 L1104.5,839 L1097.5,838.5 L1090.5,837.5 L1083.5,836.5 L1076.5,835.5 L1069.5,834.5 L1062.5,833.5 L1055.5,832 L1048.5,831 L1041.5,829.5 L1034.5,827.5 L1027.5,825.5 L1020.5,823.5 L1013.5,821.5 L1006.5,819.5 L999.5,817.5 L992.5,815.5 L985.5,813.5Z M985.5,817.5 L992.5,819.5 L999.5,821.5 L1006.5,823.5 L1013.5,825.5 L1020.5,827.5 L1027.5,829.5 L1034.5,831.5 L1041.5,833.5 L1048.5,835 L1055.5,836 L1062.5,837.5 L1069.5,838.5 L1076.5,839.5 L1083.5,840.5 L1090.5,841.5 L1097.5,842.5 L1104.5,843 L1111.5,843.5 L1118.5,844 L1125.5,844.5 L1132.5,844.5 L1139.5,845 L1146.5,845.5 L1153.5,845.5 L1160.5,845.5 L1167.5,845 L1174.5,845 L1181.5,844.5 L1188.5,844.5 L1195.5,844 L1202.5,843.5 L1209.5,843 L1216.5,842 L1223.5,841 L1230.5,840 L1237.5,839 L1244.5,838 L1251.5,837 L1258.5,836 L1265.5,834.5 L1272.5,833 L1279.5,832 L1286.5,830.5 L1293.5,829.5 L1300.5,828 L1307.5,826.5 L1314.5,824 L1321.5,822 L1328.5,819.5 L1335.5,817 L1342.5,814.5 L1349.5,812 L1356.5,809.5 L1363.5,806 L1370.5,802 L1377.5,797 L1388,789 L1392,782.5 L1395.5,776 L1398,772.5 L1400,769 L1402,765.5 L1404,761.5 L1405.5,758.5 L1405.5,765 L1404,768 L1402,772.5 L1400,776.5 L1398,779.5 L1395.5,783.5 L1392,789.5 L1388,795.5 L1377.5,803.5 L1370.5,808.5 L1363.5,812.5 L1356.5,816 L1349.5,818.5 L1342.5,821 L1335.5,823.5 L1328.5,826 L1321.5,828.5 L1314.5,830.5 L1307.5,833 L1300.5,834.5 L1293.5,836 L1286.5,837 L1279.5,838.5 L1272.5,839.5 L1265.5,841 L1258.5,842.5 L1251.5,843.5 L1244.5,844.5 L1237.5,845.5 L1230.5,846.5 L1223.5,847.5 L1216.5,848.5 L1209.5,849.5 L1202.5,850.5 L1195.5,850.5 L1188.5,851 L1181.5,851 L1174.5,851.5 L1167.5,852 L1160.5,852 L1153.5,852.5 L1146.5,852 L1139.5,852 L1132.5,851.5 L1125.5,851 L1118.5,850.5 L1111.5,850 L1104.5,850 L1097.5,849 L1090.5,848 L1083.5,847 L1076.5,846 L1069.5,845 L1062.5,844 L1055.5,843 L1048.5,842 L1041.5,840 L1034.5,838 L1027.5,836 L1020.5,834 L1013.5,832 L1006.5,830 L999.5,828 L992.5,826 L985.5,824Z M985.5,828 L992.5,830 L999.5,832 L1006.5,834 L1013.5,836 L1020.5,838 L1027.5,840 L1034.5,842 L1041.5,844 L1048.5,846 L1055.5,847 L1062.5,848 L1069.5,849 L1076.5,850 L1083.5,851 L1090.5,852 L1097.5,853 L1104.5,854 L1111.5,854 L1118.5,854.5 L1125.5,855 L1132.5,855.5 L1139.5,855.5 L1146.5,856 L1153.5,856.5 L1160.5,856 L1167.5,856 L1174.5,855.5 L1181.5,855 L1188.5,855 L1195.5,854.5 L1202.5,854.5 L1209.5,853.5 L1216.5,852.5 L1223.5,851.5 L1230.5,850.5 L1237.5,849.5 L1244.5,848.5 L1251.5,847.5 L1258.5,846 L1265.5,845 L1272.5,843.5 L1279.5,842.5 L1286.5,841 L1293.5,840 L1300.5,838.5 L1307.5,837 L1314.5,834.5 L1321.5,832 L1328.5,830 L1335.5,827.5 L1342.5,825 L1349.5,822.5 L1356.5,820 L1363.5,816.5 L1370.5,812.5 L1377.5,807.5 L1388,799.5 L1392,793.5 L1395.5,787.5 L1398,784 L1400,781 L1402,777 L1404,772 L1405.5,769 L1405.5,775.5 L1404,779 L1402,784 L1400,788.5 L1398,791 L1395.5,794.5 L1392,800.5 L1388,806 L1377.5,814 L1370.5,818.5 L1363.5,823 L1356.5,826 L1349.5,829 L1342.5,831.5 L1335.5,834 L1328.5,836.5 L1321.5,838.5 L1314.5,841 L1307.5,843.5 L1300.5,845 L1293.5,846.5 L1286.5,847.5 L1279.5,849 L1272.5,850 L1265.5,851.5 L1258.5,853 L1251.5,854 L1244.5,855 L1237.5,856 L1230.5,857 L1223.5,858 L1216.5,859 L1209.5,860 L1202.5,861 L1195.5,861 L1188.5,861.5 L1181.5,862 L1174.5,862 L1167.5,862.5 L1160.5,862.5 L1153.5,863 L1146.5,863 L1139.5,862.5 L1132.5,862 L1125.5,861.5 L1118.5,861.5 L1111.5,861 L1104.5,860.5 L1097.5,860 L1090.5,859 L1083.5,858 L1076.5,857 L1069.5,855.5 L1062.5,854.5 L1055.5,853.5 L1048.5,852.5 L1041.5,850.5 L1034.5,848.5 L1027.5,846.5 L1020.5,844.5 L1013.5,842.5 L1006.5,840.5 L999.5,838.5 L992.5,836.5 L985.5,834.5Z M985.5,838.5 L992.5,840.5 L999.5,842.5 L1006.5,844.5 L1013.5,846.5 L1020.5,848.5 L1027.5,850.5 L1034.5,852.5 L1041.5,854.5 L1048.5,856.5 L1055.5,857.5 L1062.5,858.5 L1069.5,859.5 L1076.5,861 L1083.5,862 L1090.5,863 L1097.5,864 L1104.5,864.5 L1111.5,865 L1118.5,865.5 L1125.5,865.5 L1132.5,866 L1139.5,866.5 L1146.5,867 L1153.5,867 L1160.5,866.5 L1167.5,866.5 L1174.5,866 L1181.5,866 L1188.5,865.5 L1195.5,865 L1202.5,865 L1209.5,864 L1216.5,863 L1223.5,862 L1230.5,861 L1237.5,860 L1244.5,859 L1251.5,858 L1258.5,856.5 L1265.5,855.5 L1272.5,854 L1279.5,853 L1286.5,851.5 L1293.5,850 L1300.5,849 L1307.5,847.5 L1314.5,845 L1321.5,842.5 L1328.5,840 L1335.5,838 L1342.5,835.5 L1349.5,832.5 L1356.5,830 L1363.5,826.5 L1370.5,822.5 L1377.5,818 L1388,810 L1392,804.5 L1395.5,799 L1398,795.5 L1400,792.5 L1402,788 L1404,783 L1405.5,779.5 L1405.5,786 L1404,790 L1402,795.5 L1400,800 L1398,802.5 L1395.5,806 L1392,811 L1388,816.5 L1377.5,824.5 L1370.5,829 L1363.5,833 L1356.5,836.5 L1349.5,839 L1342.5,842 L1335.5,844.5 L1328.5,846.5 L1321.5,849 L1314.5,851.5 L1307.5,853.5 L1300.5,855.5 L1293.5,856.5 L1286.5,858 L1279.5,859.5 L1272.5,860.5 L1265.5,862 L1258.5,863.5 L1251.5,864.5 L1244.5,865.5 L1237.5,866.5 L1230.5,867.5 L1223.5,868.5 L1216.5,869.5 L1209.5,870.5 L1202.5,871.5 L1195.5,872 L1188.5,872 L1181.5,872.5 L1174.5,872.5 L1167.5,873 L1160.5,873.5 L1153.5,873.5 L1146.5,873.5 L1139.5,873 L1132.5,872.5 L1125.5,872.5 L1118.5,872 L1111.5,871.5 L1104.5,871 L1097.5,870.5 L1090.5,869.5 L1083.5,868.5 L1076.5,867.5 L1069.5,866.5 L1062.5,865.5 L1055.5,864.5 L1048.5,863 L1041.5,861.5 L1034.5,859.5 L1027.5,857.5 L1020.5,855.5 L1013.5,853.5 L1006.5,851 L999.5,849 L992.5,847 L985.5,845Z M985.5,849 L992.5,851 L999.5,853 L1006.5,855 L1013.5,857.5 L1020.5,859.5 L1027.5,861.5 L1034.5,863.5 L1041.5,865.5 L1048.5,867 L1055.5,868.5 L1062.5,869.5 L1069.5,870.5 L1076.5,871.5 L1083.5,872.5 L1090.5,873.5 L1097.5,874.5 L1104.5,875 L1111.5,875.5 L1118.5,876 L1125.5,876.5 L1132.5,876.5 L1139.5,877 L1146.5,877.5 L1153.5,877.5 L1160.5,877.5 L1167.5,877 L1174.5,876.5 L1181.5,876.5 L1188.5,876 L1195.5,875.5 L1202.5,875.5 L1209.5,874.5 L1216.5,873.5 L1223.5,872.5 L1230.5,871.5 L1237.5,870.5 L1244.5,869.5 L1251.5,868.5 L1258.5,867 L1265.5,866 L1272.5,864.5 L1279.5,863.5 L1286.5,862 L1293.5,860.5 L1300.5,859 L1307.5,857.5 L1314.5,855.5 L1321.5,853 L1328.5,850.5 L1335.5,848 L1342.5,845.5 L1349.5,843 L1356.5,840.5 L1363.5,837 L1370.5,833 L1377.5,828.5 L1388,820.5 L1392,815 L1395.5,810 L1398,807 L1400,804 L1402,799.5 L1404,794 L1405.5,790 L1405.5,796.5 L1404,800.5 L1402,806.5 L1400,811.5 L1398,814 L1395.5,817 L1392,822 L1388,827 L1377.5,835 L1370.5,839.5 L1363.5,843.5 L1356.5,847 L1349.5,849.5 L1342.5,852 L1335.5,854.5 L1328.5,857 L1321.5,859.5 L1314.5,862 L1307.5,864 L1300.5,865.5 L1293.5,867 L1286.5,868.5 L1279.5,869.5 L1272.5,871 L1265.5,872.5 L1258.5,874 L1251.5,875 L1244.5,876 L1237.5,877 L1230.5,878 L1223.5,879 L1216.5,880 L1209.5,881 L1202.5,882 L1195.5,882.5 L1188.5,882.5 L1181.5,883 L1174.5,883.5 L1167.5,883.5 L1160.5,884 L1153.5,884 L1146.5,884 L1139.5,883.5 L1132.5,883.5 L1125.5,883 L1118.5,882.5 L1111.5,882 L1104.5,882 L1097.5,881.5 L1090.5,880.5 L1083.5,879 L1076.5,878 L1069.5,877 L1062.5,876 L1055.5,875 L1048.5,874 L1041.5,872 L1034.5,870 L1027.5,868 L1020.5,866 L1013.5,864 L1006.5,862 L999.5,860 L992.5,858 L985.5,856Z M985.5,860 L992.5,862 L999.5,864 L1006.5,866 L1013.5,868 L1020.5,870 L1027.5,872 L1034.5,874 L1041.5,876 L1048.5,878 L1055.5,879 L1062.5,880 L1069.5,881 L1076.5,882 L1083.5,883 L1090.5,884.5 L1097.5,885.5 L1104.5,886 L1111.5,886 L1118.5,886.5 L1125.5,887 L1132.5,887.5 L1139.5,887.5 L1146.5,888 L1153.5,888 L1160.5,888 L1167.5,887.5 L1174.5,887.5 L1181.5,887 L1188.5,886.5 L1195.5,886.5 L1202.5,886 L1209.5,885 L1216.5,884 L1223.5,883 L1230.5,882 L1237.5,881 L1244.5,880 L1251.5,879 L1258.5,877.5 L1265.5,876.5 L1272.5,875 L1279.5,873.5 L1286.5,872.5 L1293.5,871 L1300.5,869.5 L1307.5,868 L1314.5,865.5 L1321.5,863.5 L1328.5,861 L1335.5,858.5 L1342.5,856 L1349.5,853.5 L1356.5,851 L1363.5,847.5 L1370.5,843.5 L1377.5,839 L1388,831 L1392,826 L1395.5,821.5 L1398,818.5 L1400,816 L1402,811 L1404,804.5 L1405.5,800.5 L1405.5,807 L1404,811.5 L1402,818 L1400,823.5 L1398,825.5 L1395.5,828.5 L1392,833 L1388,837.5 L1377.5,845.5 L1370.5,850 L1363.5,854 L1356.5,857.5 L1349.5,860 L1342.5,862.5 L1335.5,865 L1328.5,867.5 L1321.5,869.5 L1314.5,872 L1307.5,874.5 L1300.5,876 L1293.5,877.5 L1286.5,879 L1279.5,880 L1272.5,881.5 L1265.5,883 L1258.5,884.5 L1251.5,885.5 L1244.5,886.5 L1237.5,887.5 L1230.5,888.5 L1223.5,889.5 L1216.5,890.5 L1209.5,891.5 L1202.5,892.5 L1195.5,893 L1188.5,893 L1181.5,893.5 L1174.5,894 L1167.5,894 L1160.5,894.5 L1153.5,895 L1146.5,894.5 L1139.5,894.5 L1132.5,894 L1125.5,893.5 L1118.5,893.5 L1111.5,893 L1104.5,892.5 L1097.5,892 L1090.5,891 L1083.5,890 L1076.5,889 L1069.5,888 L1062.5,886.5 L1055.5,885.5 L1048.5,884.5 L1041.5,882.5 L1034.5,880.5 L1027.5,878.5 L1020.5,876.5 L1013.5,874.5 L1006.5,872.5 L999.5,870.5 L992.5,868.5 L985.5,866.5Z M985.5,870.5 L992.5,872.5 L999.5,874.5 L1006.5,876.5 L1013.5,878.5 L1020.5,880.5 L1027.5,882.5 L1034.5,884.5 L1041.5,886.5 L1048.5,888.5 L1055.5,889.5 L1062.5,890.5 L1069.5,892 L1076.5,893 L1083.5,894 L1090.5,895 L1097.5,896 L1104.5,896.5 L1111.5,897 L1118.5,897.5 L1125.5,897.5 L1132.5,898 L1139.5,898.5 L1146.5,898.5 L1153.5,899 L1160.5,898.5 L1167.5,898 L1174.5,898 L1181.5,897.5 L1188.5,897 L1195.5,897 L1202.5,896.5 L1209.5,895.5 L1216.5,894.5 L1223.5,893.5 L1230.5,892.5 L1237.5,891.5 L1244.5,890.5 L1251.5,889.5 L1258.5,888 L1265.5,887 L1272.5,885.5 L1279.5,884 L1286.5,882.5 L1293.5,881.5 L1300.5,880 L1307.5,878.5 L1314.5,876 L1321.5,873.5 L1328.5,871 L1335.5,869 L1342.5,866.5 L1349.5,864 L1356.5,861.5 L1363.5,858 L1370.5,853.5 L1377.5,849.5 L1388,841.5 L1392,837 L1395.5,832.5 L1398,830 L1400,827.5 L1402,822 L1404,815.5 L1405.5,811 L1405.5,817.5 L1404,822.5 L1402,829 L1400,835 L1398,837 L1395.5,839.5 L1392,843.5 L1388,848 L1377.5,856 L1370.5,860 L1363.5,864.5 L1356.5,868 L1349.5,870.5 L1342.5,873 L1335.5,875.5 L1328.5,877.5 L1321.5,880 L1314.5,882.5 L1307.5,885 L1300.5,886.5 L1293.5,888 L1286.5,889 L1279.5,890.5 L1272.5,892 L1265.5,893.5 L1258.5,895 L1251.5,896 L1244.5,897 L1237.5,898 L1230.5,899 L1223.5,900 L1216.5,901 L1209.5,902 L1202.5,903 L1195.5,903.5 L1188.5,904 L1181.5,904 L1174.5,904.5 L1167.5,905 L1160.5,905 L1153.5,905.5 L1146.5,905.5 L1139.5,905 L1132.5,904.5 L1125.5,904.5 L1118.5,904 L1111.5,903.5 L1104.5,903 L1097.5,902.5 L1090.5,901.5 L1083.5,900.5 L1076.5,899.5 L1069.5,898.5 L1062.5,897.5 L1055.5,896.5 L1048.5,895.5 L1041.5,893.5 L1034.5,891.5 L1027.5,889.5 L1020.5,887.5 L1013.5,885 L1006.5,883 L999.5,881 L992.5,879 L985.5,877Z M985.5,881 L992.5,883 L999.5,885 L1006.5,887 L1013.5,889 L1020.5,891.5 L1027.5,893.5 L1034.5,895.5 L1041.5,897.5 L1048.5,899.5 L1055.5,900.5 L1062.5,901.5 L1069.5,902.5 L1076.5,903.5 L1083.5,904.5 L1090.5,905.5 L1097.5,906.5 L1104.5,907.5 L1111.5,907.5 L1118.5,908 L1125.5,908.5 L1132.5,908.5 L1139.5,909 L1146.5,909.5 L1153.5,909.5 L1160.5,909 L1167.5,909 L1174.5,908.5 L1181.5,908 L1188.5,908 L1195.5,907.5 L1202.5,907 L1209.5,906 L1216.5,905 L1223.5,904 L1230.5,903 L1237.5,902 L1244.5,901 L1251.5,900 L1258.5,898.5 L1265.5,897.5 L1272.5,896 L1279.5,894.5 L1286.5,893 L1293.5,892 L1300.5,890.5 L1307.5,889 L1314.5,886.5 L1321.5,884 L1328.5,881.5 L1335.5,879 L1342.5,876.5 L1349.5,874 L1356.5,872 L1363.5,868 L1370.5,864 L1377.5,859.5 L1388,852 L1392,848 L1395.5,844 L1398,841.5 L1400,839 L1402,833.5 L1404,826.5 L1405.5,821.5 L1405.5,828 L1404,833 L1402,840.5 L1400,846.5 L1398,848.5 L1395.5,851 L1392,854.5 L1388,858.5 L1377.5,866 L1370.5,870.5 L1363.5,874.5 L1356.5,878.5 L1349.5,880.5 L1342.5,883 L1335.5,885.5 L1328.5,888 L1321.5,890.5 L1314.5,893 L1307.5,895.5 L1300.5,897 L1293.5,898 L1286.5,899.5 L1279.5,901 L1272.5,902.5 L1265.5,904 L1258.5,905 L1251.5,906.5 L1244.5,907.5 L1237.5,908.5 L1230.5,909.5 L1223.5,910.5 L1216.5,911.5 L1209.5,913 L1202.5,913.5 L1195.5,914 L1188.5,914.5 L1181.5,915 L1174.5,915 L1167.5,915.5 L1160.5,916 L1153.5,916 L1146.5,916 L1139.5,915.5 L1132.5,915.5 L1125.5,915 L1118.5,914.5 L1111.5,914.5 L1104.5,914 L1097.5,913.5 L1090.5,912.5 L1083.5,911.5 L1076.5,910 L1069.5,909 L1062.5,908 L1055.5,907 L1048.5,906 L1041.5,904 L1034.5,902 L1027.5,900 L1020.5,898 L1013.5,896 L1006.5,894 L999.5,892 L992.5,889.5 L985.5,887.5Z M985.5,891.5 L992.5,893.5 L999.5,896 L1006.5,898 L1013.5,900 L1020.5,902 L1027.5,904 L1034.5,906 L1041.5,908 L1048.5,910 L1055.5,911 L1062.5,912 L1069.5,913 L1076.5,914 L1083.5,915.5 L1090.5,916.5 L1097.5,917.5 L1104.5,918 L1111.5,918.5 L1118.5,918.5 L1125.5,919 L1132.5,919.5 L1139.5,919.5 L1146.5,920 L1153.5,920 L1160.5,920 L1167.5,919.5 L1174.5,919 L1181.5,918.5 L1188.5,918.5 L1195.5,918 L1202.5,917.5 L1209.5,916.5 L1216.5,915.5 L1223.5,914.5 L1230.5,913.5 L1237.5,912.5 L1244.5,911.5 L1251.5,910.5 L1258.5,909 L1265.5,908 L1272.5,906.5 L1279.5,905 L1286.5,903.5 L1293.5,902 L1300.5,900.5 L1307.5,899.5 L1314.5,897 L1321.5,894.5 L1328.5,892 L1335.5,889.5 L1342.5,887 L1349.5,884.5 L1356.5,882 L1363.5,878.5 L1370.5,874.5 L1377.5,870 L1388,862.5 L1392,858.5 L1395.5,855 L1398,853 L1400,851 L1402,844.5 L1404,837.5 L1405.5,832 L1405.5,839 L1404,844 L1402,851.5 L1400,858.5 L1398,860 L1395.5,862 L1392,865.5 L1388,869 L1377.5,876.5 L1370.5,881 L1363.5,885 L1356.5,888.5 L1349.5,891 L1342.5,893.5 L1335.5,896 L1328.5,898.5 L1321.5,901 L1314.5,903.5 L1307.5,905.5 L1300.5,907 L1293.5,908.5 L1286.5,910 L1279.5,911.5 L1272.5,913 L1265.5,914.5 L1258.5,915.5 L1251.5,917 L1244.5,918 L1237.5,919 L1230.5,920 L1223.5,921 L1216.5,922.5 L1209.5,923.5 L1202.5,924.5 L1195.5,924.5 L1188.5,925 L1181.5,925.5 L1174.5,925.5 L1167.5,926 L1160.5,926.5 L1153.5,926.5 L1146.5,926.5 L1139.5,926.5 L1132.5,926 L1125.5,925.5 L1118.5,925.5 L1111.5,925 L1104.5,924.5 L1097.5,924 L1090.5,923 L1083.5,922 L1076.5,921 L1069.5,920 L1062.5,919 L1055.5,918 L1048.5,916.5 L1041.5,915 L1034.5,912.5 L1027.5,910.5 L1020.5,908.5 L1013.5,906.5 L1006.5,904.5 L999.5,902.5 L992.5,900.5 L985.5,898.5Z" fill="#7a5a3c"/>
<path d="M985.5,676 L992.5,678 L999.5,680 L1006.5,681.5 L1013.5,683.5 L1020.5,685.5 L1027.5,687.5 L1034.5,689 L1041.5,691 L1048.5,693 L1055.5,694 L1062.5,695 L1069.5,696 L1076.5,697 L1083.5,698 L1090.5,699 L1097.5,700.5 L1104.5,701 L1111.5,701.5 L1118.5,702 L1125.5,702.5 L1132.5,703 L1139.5,703.5 L1146.5,704 L1153.5,704.5 L1160.5,704 L1167.5,704 L1174.5,704 L1181.5,703.5 L1188.5,703.5 L1195.5,703.5 L1202.5,703 L1209.5,702.5 L1216.5,701.5 L1223.5,700.5 L1230.5,700 L1237.5,699 L1244.5,698 L1251.5,697 L1258.5,696 L1265.5,695.5 L1272.5,694.5 L1279.5,693.5 L1286.5,692.5 L1293.5,691.5 L1300.5,690 L1307.5,688 L1314.5,686 L1321.5,684 L1328.5,682 L1335.5,680 L1342.5,677 L1349.5,674 L1356.5,671 L1363.5,668 L1370.5,664.5 L1377.5,658 L1388,648.5 L1392,638 L1395.5,626.5 L1398,620 L1400,614 L1402,615.5 L1404,617 L1405.5,618 M985.5,686.5 L992.5,688.5 L999.5,690.5 L1006.5,692.5 L1013.5,694 L1020.5,696 L1027.5,698 L1034.5,700 L1041.5,702 L1048.5,703.5 L1055.5,704.5 L1062.5,705.5 L1069.5,707 L1076.5,708 L1083.5,709 L1090.5,710 L1097.5,711 L1104.5,711.5 L1111.5,712 L1118.5,712.5 L1125.5,713 L1132.5,713.5 L1139.5,714 L1146.5,714.5 L1153.5,715 L1160.5,715 L1167.5,714.5 L1174.5,714.5 L1181.5,714.5 L1188.5,714 L1195.5,714 L1202.5,714 L1209.5,713 L1216.5,712 L1223.5,711 L1230.5,710.5 L1237.5,709.5 L1244.5,708.5 L1251.5,707.5 L1258.5,706.5 L1265.5,705.5 L1272.5,704.5 L1279.5,703.5 L1286.5,702.5 L1293.5,701.5 L1300.5,700.5 L1307.5,698.5 L1314.5,696.5 L1321.5,694.5 L1328.5,692 L1335.5,690 L1342.5,687.5 L1349.5,684.5 L1356.5,681.5 L1363.5,678.5 L1370.5,674.5 L1377.5,668.5 L1388,659 L1392,649 L1395.5,637.5 L1398,631 L1400,625.5 L1402,627 L1404,628 L1405.5,628.5 M985.5,697 L992.5,699 L999.5,701 L1006.5,703 L1013.5,705 L1020.5,707 L1027.5,708.5 L1034.5,710.5 L1041.5,712.5 L1048.5,714.5 L1055.5,715.5 L1062.5,716.5 L1069.5,717.5 L1076.5,718.5 L1083.5,719.5 L1090.5,720.5 L1097.5,721.5 L1104.5,722.5 L1111.5,723 L1118.5,723.5 L1125.5,724 L1132.5,724.5 L1139.5,725 L1146.5,725.5 L1153.5,725.5 L1160.5,725.5 L1167.5,725 L1174.5,725 L1181.5,725 L1188.5,724.5 L1195.5,724.5 L1202.5,724.5 L1209.5,723.5 L1216.5,722.5 L1223.5,722 L1230.5,721 L1237.5,720 L1244.5,719 L1251.5,718 L1258.5,717 L1265.5,716 L1272.5,715 L1279.5,714 L1286.5,713 L1293.5,712 L1300.5,711 L1307.5,709 L1314.5,707 L1321.5,704.5 L1328.5,702.5 L1335.5,700.5 L1342.5,698 L1349.5,695 L1356.5,692 L1363.5,688.5 L1370.5,685 L1377.5,679 L1388,669.5 L1392,660 L1395.5,649 L1398,642.5 L1400,637.5 L1402,638 L1404,638.5 L1405.5,639 M985.5,708 L992.5,710 L999.5,711.5 L1006.5,713.5 L1013.5,715.5 L1020.5,717.5 L1027.5,719.5 L1034.5,721.5 L1041.5,723 L1048.5,725 L1055.5,726 L1062.5,727 L1069.5,728 L1076.5,729 L1083.5,730.5 L1090.5,731.5 L1097.5,732.5 L1104.5,733 L1111.5,733.5 L1118.5,734 L1125.5,734.5 L1132.5,735 L1139.5,735.5 L1146.5,736 L1153.5,736 L1160.5,736 L1167.5,736 L1174.5,735.5 L1181.5,735.5 L1188.5,735.5 L1195.5,735 L1202.5,735 L1209.5,734 L1216.5,733 L1223.5,732.5 L1230.5,731.5 L1237.5,730.5 L1244.5,729.5 L1251.5,728.5 L1258.5,727.5 L1265.5,726.5 L1272.5,725.5 L1279.5,724.5 L1286.5,723.5 L1293.5,722.5 L1300.5,721.5 L1307.5,719.5 L1314.5,717 L1321.5,715 L1328.5,713 L1335.5,710.5 L1342.5,708 L1349.5,705 L1356.5,702 L1363.5,699 L1370.5,695.5 L1377.5,689.5 L1388,680 L1392,670.5 L1395.5,660 L1398,654 L1400,649 L1402,649.5 L1404,649.5 L1405.5,649.5 M985.5,718.5 L992.5,720.5 L999.5,722.5 L1006.5,724.5 L1013.5,726 L1020.5,728 L1027.5,730 L1034.5,732 L1041.5,734 L1048.5,735.5 L1055.5,736.5 L1062.5,738 L1069.5,739 L1076.5,740 L1083.5,741 L1090.5,742 L1097.5,743 L1104.5,743.5 L1111.5,744 L1118.5,744.5 L1125.5,745 L1132.5,745.5 L1139.5,746 L1146.5,746.5 L1153.5,747 L1160.5,746.5 L1167.5,746.5 L1174.5,746.5 L1181.5,746 L1188.5,746 L1195.5,745.5 L1202.5,745.5 L1209.5,744.5 L1216.5,743.5 L1223.5,743 L1230.5,742 L1237.5,741 L1244.5,740 L1251.5,739 L1258.5,738 L1265.5,737 L1272.5,736 L1279.5,735 L1286.5,734 L1293.5,733 L1300.5,731.5 L1307.5,729.5 L1314.5,727.5 L1321.5,725.5 L1328.5,723 L1335.5,721 L1342.5,718.5 L1349.5,715.5 L1356.5,712.5 L1363.5,709.5 L1370.5,706 L1377.5,700 L1388,691 L1392,681.5 L1395.5,671.5 L1398,665.5 L1400,660.5 L1402,660.5 L1404,660.5 L1405.5,660 M985.5,729 L992.5,731 L999.5,733 L1006.5,735 L1013.5,737 L1020.5,739 L1027.5,740.5 L1034.5,742.5 L1041.5,744.5 L1048.5,746.5 L1055.5,747.5 L1062.5,748.5 L1069.5,749.5 L1076.5,750.5 L1083.5,751.5 L1090.5,752.5 L1097.5,754 L1104.5,754.5 L1111.5,755 L1118.5,755.5 L1125.5,756 L1132.5,756.5 L1139.5,756.5 L1146.5,757 L1153.5,757.5 L1160.5,757.5 L1167.5,757 L1174.5,757 L1181.5,756.5 L1188.5,756.5 L1195.5,756.5 L1202.5,756 L1209.5,755 L1216.5,754.5 L1223.5,753.5 L1230.5,752.5 L1237.5,751.5 L1244.5,750.5 L1251.5,749.5 L1258.5,748.5 L1265.5,747.5 L1272.5,746.5 L1279.5,745.5 L1286.5,744.5 L1293.5,743.5 L1300.5,742 L1307.5,740 L1314.5,738 L1321.5,736 L1328.5,733.5 L1335.5,731.5 L1342.5,729 L1349.5,726 L1356.5,723 L1363.5,720 L1370.5,716 L1377.5,710.5 L1388,701.5 L1392,692.5 L1395.5,682.5 L1398,677 L1400,672.5 L1402,672 L1404,671 L1405.5,671 M985.5,740 L992.5,741.5 L999.5,743.5 L1006.5,745.5 L1013.5,747.5 L1020.5,749.5 L1027.5,751.5 L1034.5,753.5 L1041.5,755 L1048.5,757 L1055.5,758 L1062.5,759 L1069.5,760 L1076.5,761.5 L1083.5,762.5 L1090.5,763.5 L1097.5,764.5 L1104.5,765 L1111.5,765.5 L1118.5,766 L1125.5,766.5 L1132.5,767 L1139.5,767.5 L1146.5,768 L1153.5,768 L1160.5,768 L1167.5,767.5 L1174.5,767.5 L1181.5,767.5 L1188.5,767 L1195.5,767 L1202.5,766.5 L1209.5,766 L1216.5,765 L1223.5,764 L1230.5,763 L1237.5,762 L1244.5,761 L1251.5,760 L1258.5,759 L1265.5,758 L1272.5,757 L1279.5,756 L1286.5,754.5 L1293.5,753.5 L1300.5,752.5 L1307.5,750.5 L1314.5,748.5 L1321.5,746 L1328.5,744 L1335.5,741.5 L1342.5,739 L1349.5,736.5 L1356.5,733.5 L1363.5,730 L1370.5,726.5 L1377.5,721 L1388,712 L1392,703.5 L1395.5,694 L1398,688.5 L1400,684 L1402,683 L1404,682 L1405.5,681.5 M985.5,750.5 L992.5,752.5 L999.5,754.5 L1006.5,756 L1013.5,758 L1020.5,760 L1027.5,762 L1034.5,764 L1041.5,766 L1048.5,768 L1055.5,769 L1062.5,770 L1069.5,771 L1076.5,772 L1083.5,773 L1090.5,774 L1097.5,775 L1104.5,776 L1111.5,776 L1118.5,776.5 L1125.5,777 L1132.5,777.5 L1139.5,778 L1146.5,778.5 L1153.5,778.5 L1160.5,778.5 L1167.5,778.5 L1174.5,778 L1181.5,778 L1188.5,777.5 L1195.5,777.5 L1202.5,777 L1209.5,776.5 L1216.5,775.5 L1223.5,774.5 L1230.5,773.5 L1237.5,772.5 L1244.5,771.5 L1251.5,770.5 L1258.5,769.5 L1265.5,768.5 L1272.5,767.5 L1279.5,766.5 L1286.5,765 L1293.5,764 L1300.5,763 L1307.5,761 L1314.5,758.5 L1321.5,756.5 L1328.5,754.5 L1335.5,752 L1342.5,749.5 L1349.5,746.5 L1356.5,744 L1363.5,740.5 L1370.5,737 L1377.5,731 L1388,722.5 L1392,714 L1395.5,705.5 L1398,700 L1400,695.5 L1402,694.5 L1404,693 L1405.5,692 M985.5,761 L992.5,763 L999.5,765 L1006.5,767 L1013.5,769 L1020.5,771 L1027.5,772.5 L1034.5,774.5 L1041.5,776.5 L1048.5,778.5 L1055.5,779.5 L1062.5,780.5 L1069.5,781.5 L1076.5,782.5 L1083.5,783.5 L1090.5,785 L1097.5,786 L1104.5,786.5 L1111.5,787 L1118.5,787.5 L1125.5,788 L1132.5,788 L1139.5,788.5 L1146.5,789 L1153.5,789.5 L1160.5,789 L1167.5,789 L1174.5,788.5 L1181.5,788.5 L1188.5,788 L1195.5,788 L1202.5,787.5 L1209.5,787 L1216.5,786 L1223.5,785 L1230.5,784 L1237.5,783 L1244.5,782 L1251.5,781 L1258.5,780 L1265.5,779 L1272.5,778 L1279.5,776.5 L1286.5,775.5 L1293.5,774.5 L1300.5,773 L1307.5,771.5 L1314.5,769 L1321.5,767 L1328.5,764.5 L1335.5,762.5 L1342.5,760 L1349.5,757 L1356.5,754 L1363.5,751 L1370.5,747 L1377.5,741.5 L1388,733 L1392,725 L1395.5,716.5 L1398,711.5 L1400,707.5 L1402,706 L1404,704 L1405.5,702.5 M985.5,771.5 L992.5,773.5 L999.5,775.5 L1006.5,777.5 L1013.5,779.5 L1020.5,781.5 L1027.5,783.5 L1034.5,785.5 L1041.5,787.5 L1048.5,789 L1055.5,790 L1062.5,791.5 L1069.5,792.5 L1076.5,793.5 L1083.5,794.5 L1090.5,795.5 L1097.5,796.5 L1104.5,797 L1111.5,797.5 L1118.5,798 L1125.5,798.5 L1132.5,799 L1139.5,799.5 L1146.5,800 L1153.5,800 L1160.5,800 L1167.5,799.5 L1174.5,799.5 L1181.5,799 L1188.5,799 L1195.5,798.5 L1202.5,798.5 L1209.5,797.5 L1216.5,796.5 L1223.5,795.5 L1230.5,794.5 L1237.5,793.5 L1244.5,792.5 L1251.5,791.5 L1258.5,790.5 L1265.5,789.5 L1272.5,788.5 L1279.5,787 L1286.5,786 L1293.5,785 L1300.5,783.5 L1307.5,781.5 L1314.5,779.5 L1321.5,777 L1328.5,775 L1335.5,772.5 L1342.5,770 L1349.5,767.5 L1356.5,764.5 L1363.5,761.5 L1370.5,757.5 L1377.5,752 L1388,743.5 L1392,736 L1395.5,728 L1398,723 L1400,719 L1402,717 L1404,714.5 L1405.5,713 M985.5,782 L992.5,784 L999.5,786 L1006.5,788 L1013.5,790 L1020.5,792 L1027.5,794 L1034.5,796 L1041.5,798 L1048.5,800 L1055.5,801 L1062.5,802 L1069.5,803 L1076.5,804 L1083.5,805 L1090.5,806 L1097.5,807 L1104.5,808 L1111.5,808.5 L1118.5,808.5 L1125.5,809 L1132.5,809.5 L1139.5,810 L1146.5,810.5 L1153.5,810.5 L1160.5,810.5 L1167.5,810 L1174.5,810 L1181.5,809.5 L1188.5,809.5 L1195.5,809 L1202.5,809 L1209.5,808 L1216.5,807 L1223.5,806 L1230.5,805 L1237.5,804 L1244.5,803 L1251.5,802 L1258.5,801 L1265.5,800 L1272.5,799 L1279.5,797.5 L1286.5,796.5 L1293.5,795 L1300.5,794 L1307.5,792 L1314.5,790 L1321.5,787.5 L1328.5,785.5 L1335.5,783 L1342.5,780.5 L1349.5,778 L1356.5,775 L1363.5,771.5 L1370.5,768 L1377.5,762.5 L1388,754 L1392,746.5 L1395.5,739 L1398,734.5 L1400,730.5 L1402,728.5 L1404,725.5 L1405.5,723.5 M985.5,793 L992.5,795 L999.5,797 L1006.5,799 L1013.5,801 L1020.5,803 L1027.5,804.5 L1034.5,806.5 L1041.5,808.5 L1048.5,810.5 L1055.5,811.5 L1062.5,812.5 L1069.5,813.5 L1076.5,815 L1083.5,816 L1090.5,817 L1097.5,818 L1104.5,818.5 L1111.5,819 L1118.5,819.5 L1125.5,820 L1132.5,820 L1139.5,820.5 L1146.5,821 L1153.5,821.5 L1160.5,821 L1167.5,820.5 L1174.5,820.5 L1181.5,820 L1188.5,820 L1195.5,819.5 L1202.5,819.5 L1209.5,818.5 L1216.5,817.5 L1223.5,816.5 L1230.5,815.5 L1237.5,814.5 L1244.5,813.5 L1251.5,812.5 L1258.5,811.5 L1265.5,810.5 L1272.5,809 L1279.5,808 L1286.5,807 L1293.5,805.5 L1300.5,804.5 L1307.5,802.5 L1314.5,800 L1321.5,798 L1328.5,795.5 L1335.5,793.5 L1342.5,791 L1349.5,788 L1356.5,785.5 L1363.5,782 L1370.5,778 L1377.5,773 L1388,764.5 L1392,757.5 L1395.5,750.5 L1398,746 L1400,742.5 L1402,739.5 L1404,736.5 L1405.5,734 M985.5,803.5 L992.5,805.5 L999.5,807.5 L1006.5,809.5 L1013.5,811.5 L1020.5,813.5 L1027.5,815.5 L1034.5,817.5 L1041.5,819.5 L1048.5,821.5 L1055.5,822.5 L1062.5,823.5 L1069.5,824.5 L1076.5,825.5 L1083.5,826.5 L1090.5,827.5 L1097.5,828.5 L1104.5,829 L1111.5,829.5 L1118.5,830 L1125.5,830.5 L1132.5,831 L1139.5,831.5 L1146.5,831.5 L1153.5,832 L1160.5,831.5 L1167.5,831.5 L1174.5,831 L1181.5,831 L1188.5,830.5 L1195.5,830.5 L1202.5,830 L1209.5,829 L1216.5,828 L1223.5,827 L1230.5,826 L1237.5,825 L1244.5,824 L1251.5,823 L1258.5,822 L1265.5,821 L1272.5,819.5 L1279.5,818.5 L1286.5,817 L1293.5,816 L1300.5,814.5 L1307.5,813 L1314.5,810.5 L1321.5,808.5 L1328.5,806 L1335.5,803.5 L1342.5,801 L1349.5,798.5 L1356.5,796 L1363.5,792.5 L1370.5,788.5 L1377.5,783.5 L1388,775 L1392,768.5 L1395.5,761.5 L1398,757.5 L1400,754 L1402,751 L1404,747 L1405.5,744.5 M985.5,814 L992.5,816 L999.5,818 L1006.5,820 L1013.5,822 L1020.5,824 L1027.5,826 L1034.5,828 L1041.5,830 L1048.5,832 L1055.5,833 L1062.5,834 L1069.5,835 L1076.5,836 L1083.5,837 L1090.5,838.5 L1097.5,839.5 L1104.5,840 L1111.5,840.5 L1118.5,840.5 L1125.5,841 L1132.5,841.5 L1139.5,842 L1146.5,842.5 L1153.5,842.5 L1160.5,842 L1167.5,842 L1174.5,841.5 L1181.5,841.5 L1188.5,841 L1195.5,841 L1202.5,840.5 L1209.5,839.5 L1216.5,838.5 L1223.5,837.5 L1230.5,836.5 L1237.5,835.5 L1244.5,834.5 L1251.5,833.5 L1258.5,832.5 L1265.5,831.5 L1272.5,830 L1279.5,829 L1286.5,827.5 L1293.5,826.5 L1300.5,825 L1307.5,823.5 L1314.5,821 L1321.5,818.5 L1328.5,816.5 L1335.5,814 L1342.5,811.5 L1349.5,809 L1356.5,806 L1363.5,803 L1370.5,799 L1377.5,794 L1388,785.5 L1392,779.5 L1395.5,773 L1398,769 L1400,765.5 L1402,762 L1404,758 L1405.5,755 M985.5,825 L992.5,827 L999.5,829 L1006.5,831 L1013.5,833 L1020.5,835 L1027.5,837 L1034.5,839 L1041.5,841 L1048.5,842.5 L1055.5,843.5 L1062.5,845 L1069.5,846 L1076.5,847 L1083.5,848 L1090.5,849 L1097.5,850 L1104.5,850.5 L1111.5,851 L1118.5,851.5 L1125.5,852 L1132.5,852 L1139.5,852.5 L1146.5,853 L1153.5,853 L1160.5,853 L1167.5,852.5 L1174.5,852.5 L1181.5,852 L1188.5,851.5 L1195.5,851.5 L1202.5,851 L1209.5,850 L1216.5,849 L1223.5,848 L1230.5,847 L1237.5,846 L1244.5,845 L1251.5,844 L1258.5,843 L1265.5,842 L1272.5,840.5 L1279.5,839.5 L1286.5,838 L1293.5,836.5 L1300.5,835.5 L1307.5,833.5 L1314.5,831.5 L1321.5,829 L1328.5,826.5 L1335.5,824.5 L1342.5,822 L1349.5,819.5 L1356.5,816.5 L1363.5,813 L1370.5,809 L1377.5,804.5 L1388,796 L1392,790 L1395.5,784 L1398,780.5 L1400,777.5 L1402,773.5 L1404,769 L1405.5,765.5 M985.5,835.5 L992.5,837.5 L999.5,839.5 L1006.5,841.5 L1013.5,843.5 L1020.5,845.5 L1027.5,847.5 L1034.5,849.5 L1041.5,851.5 L1048.5,853.5 L1055.5,854.5 L1062.5,855.5 L1069.5,856.5 L1076.5,857.5 L1083.5,858.5 L1090.5,859.5 L1097.5,860.5 L1104.5,861.5 L1111.5,861.5 L1118.5,862 L1125.5,862.5 L1132.5,863 L1139.5,863 L1146.5,863.5 L1153.5,864 L1160.5,863.5 L1167.5,863 L1174.5,863 L1181.5,862.5 L1188.5,862.5 L1195.5,862 L1202.5,861.5 L1209.5,861 L1216.5,860 L1223.5,859 L1230.5,858 L1237.5,857 L1244.5,855.5 L1251.5,854.5 L1258.5,853.5 L1265.5,852.5 L1272.5,851 L1279.5,849.5 L1286.5,848.5 L1293.5,847 L1300.5,846 L1307.5,844 L1314.5,842 L1321.5,839.5 L1328.5,837 L1335.5,834.5 L1342.5,832 L1349.5,829.5 L1356.5,827 L1363.5,823.5 L1370.5,819.5 L1377.5,815 L1388,806.5 L1392,801 L1395.5,795.5 L1398,792 L1400,789 L1402,785 L1404,780 L1405.5,776 M985.5,846 L992.5,848 L999.5,850 L1006.5,852 L1013.5,854 L1020.5,856 L1027.5,858 L1034.5,860 L1041.5,862 L1048.5,864 L1055.5,865 L1062.5,866 L1069.5,867 L1076.5,868.5 L1083.5,869.5 L1090.5,870.5 L1097.5,871.5 L1104.5,872 L1111.5,872.5 L1118.5,872.5 L1125.5,873 L1132.5,873.5 L1139.5,874 L1146.5,874 L1153.5,874.5 L1160.5,874 L1167.5,874 L1174.5,873.5 L1181.5,873 L1188.5,873 L1195.5,872.5 L1202.5,872.5 L1209.5,871.5 L1216.5,870.5 L1223.5,869.5 L1230.5,868.5 L1237.5,867.5 L1244.5,866.5 L1251.5,865 L1258.5,864 L1265.5,863 L1272.5,861.5 L1279.5,860 L1286.5,859 L1293.5,857.5 L1300.5,856 L1307.5,854.5 L1314.5,852 L1321.5,850 L1328.5,847.5 L1335.5,845 L1342.5,842.5 L1349.5,840 L1356.5,837.5 L1363.5,834 L1370.5,830 L1377.5,825.5 L1388,817 L1392,812 L1395.5,806.5 L1398,803.5 L1400,800.5 L1402,796 L1404,790.5 L1405.5,787 M985.5,856.5 L992.5,858.5 L999.5,860.5 L1006.5,862.5 L1013.5,864.5 L1020.5,866.5 L1027.5,869 L1034.5,871 L1041.5,873 L1048.5,874.5 L1055.5,876 L1062.5,877 L1069.5,878 L1076.5,879 L1083.5,880 L1090.5,881 L1097.5,882 L1104.5,882.5 L1111.5,883 L1118.5,883.5 L1125.5,884 L1132.5,884 L1139.5,884.5 L1146.5,885 L1153.5,885 L1160.5,884.5 L1167.5,884.5 L1174.5,884 L1181.5,884 L1188.5,883.5 L1195.5,883 L1202.5,883 L1209.5,882 L1216.5,881 L1223.5,880 L1230.5,879 L1237.5,878 L1244.5,877 L1251.5,875.5 L1258.5,874.5 L1265.5,873 L1272.5,872 L1279.5,870.5 L1286.5,869 L1293.5,868 L1300.5,866.5 L1307.5,865 L1314.5,862.5 L1321.5,860 L1328.5,858 L1335.5,855.5 L1342.5,853 L1349.5,850.5 L1356.5,848 L1363.5,844.5 L1370.5,840 L1377.5,835.5 L1388,828 L1392,823 L1395.5,818 L1398,815 L1400,812.5 L1402,807.5 L1404,801.5 L1405.5,797.5 M985.5,867 L992.5,869.5 L999.5,871.5 L1006.5,873.5 L1013.5,875.5 L1020.5,877.5 L1027.5,879.5 L1034.5,881.5 L1041.5,883.5 L1048.5,885.5 L1055.5,886.5 L1062.5,887.5 L1069.5,888.5 L1076.5,889.5 L1083.5,890.5 L1090.5,891.5 L1097.5,893 L1104.5,893.5 L1111.5,893.5 L1118.5,894 L1125.5,894.5 L1132.5,895 L1139.5,895 L1146.5,895.5 L1153.5,895.5 L1160.5,895.5 L1167.5,895 L1174.5,894.5 L1181.5,894.5 L1188.5,894 L1195.5,893.5 L1202.5,893.5 L1209.5,892.5 L1216.5,891.5 L1223.5,890.5 L1230.5,889.5 L1237.5,888.5 L1244.5,887.5 L1251.5,886.5 L1258.5,885 L1265.5,883.5 L1272.5,882.5 L1279.5,881 L1286.5,879.5 L1293.5,878.5 L1300.5,877 L1307.5,875.5 L1314.5,873 L1321.5,870.5 L1328.5,868 L1335.5,865.5 L1342.5,863.5 L1349.5,861 L1356.5,858.5 L1363.5,854.5 L1370.5,850.5 L1377.5,846 L1388,838.5 L1392,833.5 L1395.5,829 L1398,826.5 L1400,824 L1402,818.5 L1404,812.5 L1405.5,808 M985.5,878 L992.5,880 L999.5,882 L1006.5,884 L1013.5,886 L1020.5,888 L1027.5,890 L1034.5,892 L1041.5,894 L1048.5,896 L1055.5,897 L1062.5,898 L1069.5,899.5 L1076.5,900.5 L1083.5,901.5 L1090.5,902.5 L1097.5,903.5 L1104.5,904 L1111.5,904.5 L1118.5,904.5 L1125.5,905 L1132.5,905.5 L1139.5,906 L1146.5,906 L1153.5,906.5 L1160.5,906 L1167.5,905.5 L1174.5,905.5 L1181.5,905 L1188.5,904.5 L1195.5,904.5 L1202.5,904 L1209.5,903 L1216.5,902 L1223.5,901 L1230.5,900 L1237.5,899 L1244.5,898 L1251.5,897 L1258.5,895.5 L1265.5,894 L1272.5,893 L1279.5,891.5 L1286.5,890 L1293.5,888.5 L1300.5,887 L1307.5,885.5 L1314.5,883.5 L1321.5,881 L1328.5,878.5 L1335.5,876 L1342.5,873.5 L1349.5,871 L1356.5,868.5 L1363.5,865 L1370.5,861 L1377.5,856.5 L1388,849 L1392,844.5 L1395.5,840.5 L1398,838 L1400,835.5 L1402,830 L1404,823 L1405.5,818.5 M985.5,888.5 L992.5,890.5 L999.5,892.5 L1006.5,894.5 L1013.5,896.5 L1020.5,898.5 L1027.5,901 L1034.5,903 L1041.5,905 L1048.5,907 L1055.5,908 L1062.5,909 L1069.5,910 L1076.5,911 L1083.5,912 L1090.5,913 L1097.5,914 L1104.5,914.5 L1111.5,915 L1118.5,915.5 L1125.5,915.5 L1132.5,916 L1139.5,916.5 L1146.5,917 L1153.5,917 L1160.5,916.5 L1167.5,916 L1174.5,916 L1181.5,915.5 L1188.5,915 L1195.5,915 L1202.5,914.5 L1209.5,913.5 L1216.5,912.5 L1223.5,911.5 L1230.5,910.5 L1237.5,909.5 L1244.5,908.5 L1251.5,907.5 L1258.5,906 L1265.5,904.5 L1272.5,903 L1279.5,902 L1286.5,900.5 L1293.5,899 L1300.5,897.5 L1307.5,896 L1314.5,893.5 L1321.5,891.5 L1328.5,889 L1335.5,886.5 L1342.5,884 L1349.5,881.5 L1356.5,879 L1363.5,875.5 L1370.5,871.5 L1377.5,867 L1388,859.5 L1392,855.5 L1395.5,851.5 L1398,849.5 L1400,847.5 L1402,841 L1404,834 L1405.5,829 M985.5,899 L992.5,901 L999.5,903 L1006.5,905.5 L1013.5,907.5 L1020.5,909.5 L1027.5,911.5 L1034.5,913.5 L1041.5,915.5 L1048.5,917.5 L1055.5,918.5 L1062.5,919.5 L1069.5,920.5 L1076.5,921.5 L1083.5,923 L1090.5,924 L1097.5,925 L1104.5,925.5 L1111.5,926 L1118.5,926 L1125.5,926.5 L1132.5,926.5 L1139.5,927 L1146.5,927.5 L1153.5,927.5 L1160.5,927 L1167.5,927 L1174.5,926.5 L1181.5,926 L1188.5,926 L1195.5,925.5 L1202.5,925 L1209.5,924 L1216.5,923 L1223.5,922 L1230.5,921 L1237.5,920 L1244.5,919 L1251.5,918 L1258.5,916.5 L1265.5,915 L1272.5,913.5 L1279.5,912.5 L1286.5,911 L1293.5,909.5 L1300.5,908 L1307.5,906.5 L1314.5,904 L1321.5,901.5 L1328.5,899 L1335.5,896.5 L1342.5,894.5 L1349.5,892 L1356.5,889.5 L1363.5,886 L1370.5,881.5 L1377.5,877.5 L1388,870 L1392,866.5 L1395.5,863 L1398,861 L1400,859 L1402,852.5 L1404,845 L1405.5,839.5" fill="none" stroke="#281a10" stroke-width="1.6"/>
<g fill="none" stroke="#fbf6ef" stroke-width="1.3" stroke-dasharray="4,24" opacity="1.0"><path d="M985.5,676.5 L992.5,678 L999.5,680 L1006.5,682 L1013.5,684 L1020.5,685.5 L1027.5,687.5 L1034.5,689.5 L1041.5,691.5 L1048.5,693 L1055.5,694.5 L1062.5,695.5 L1069.5,696.5 L1076.5,697.5 L1083.5,698.5 L1090.5,699.5 L1097.5,700.5 L1104.5,701.5 L1111.5,702 L1118.5,702.5 L1125.5,703 L1132.5,703.5 L1139.5,704 L1146.5,704.5 L1153.5,704.5 L1160.5,704.5 L1167.5,704.5 L1174.5,704 L1181.5,704 L1188.5,704 L1195.5,703.5 L1202.5,703.5 L1209.5,702.5 L1216.5,702 L1223.5,701 L1230.5,700 L1237.5,699 L1244.5,698.5 L1251.5,697.5 L1258.5,696.5 L1265.5,695.5 L1272.5,694.5 L1279.5,693.5 L1286.5,692.5 L1293.5,691.5 L1300.5,690.5 L1307.5,688.5 L1314.5,686.5 L1321.5,684 L1328.5,682 L1335.5,680 L1342.5,677.5 L1349.5,674.5 L1356.5,671.5 L1363.5,668 L1370.5,664.5 L1377.5,658.5 L1388,649 L1392,638.5 L1395.5,626.5 L1398,620 L1400,614.5 L1402,616 L1404,617.5 L1405.5,618.5" stroke-dashoffset="7"/><path d="M985.5,687 L992.5,689 L999.5,690.5 L1006.5,692.5 L1013.5,694.5 L1020.5,696.5 L1027.5,698.5 L1034.5,700 L1041.5,702 L1048.5,704 L1055.5,705 L1062.5,706 L1069.5,707 L1076.5,708 L1083.5,709 L1090.5,710 L1097.5,711.5 L1104.5,712 L1111.5,712.5 L1118.5,713 L1125.5,713.5 L1132.5,714 L1139.5,714.5 L1146.5,715 L1153.5,715.5 L1160.5,715 L1167.5,715 L1174.5,715 L1181.5,714.5 L1188.5,714.5 L1195.5,714.5 L1202.5,714 L1209.5,713.5 L1216.5,712.5 L1223.5,711.5 L1230.5,710.5 L1237.5,709.5 L1244.5,709 L1251.5,708 L1258.5,707 L1265.5,706 L1272.5,705 L1279.5,704 L1286.5,703 L1293.5,702 L1300.5,701 L1307.5,699 L1314.5,696.5 L1321.5,694.5 L1328.5,692.5 L1335.5,690.5 L1342.5,687.5 L1349.5,684.5 L1356.5,681.5 L1363.5,678.5 L1370.5,675 L1377.5,669 L1388,659.5 L1392,649 L1395.5,638 L1398,631.5 L1400,626 L1402,627 L1404,628 L1405.5,629" stroke-dashoffset="0"/><path d="M985.5,697.5 L992.5,699.5 L999.5,701.5 L1006.5,703.5 L1013.5,705 L1020.5,707 L1027.5,709 L1034.5,711 L1041.5,713 L1048.5,714.5 L1055.5,715.5 L1062.5,716.5 L1069.5,718 L1076.5,719 L1083.5,720 L1090.5,721 L1097.5,722 L1104.5,722.5 L1111.5,723 L1118.5,723.5 L1125.5,724 L1132.5,724.5 L1139.5,725 L1146.5,725.5 L1153.5,726 L1160.5,725.5 L1167.5,725.5 L1174.5,725.5 L1181.5,725 L1188.5,725 L1195.5,725 L1202.5,724.5 L1209.5,724 L1216.5,723 L1223.5,722 L1230.5,721 L1237.5,720.5 L1244.5,719.5 L1251.5,718.5 L1258.5,717.5 L1265.5,716.5 L1272.5,715.5 L1279.5,714.5 L1286.5,713.5 L1293.5,712.5 L1300.5,711 L1307.5,709 L1314.5,707 L1321.5,705 L1328.5,703 L1335.5,700.5 L1342.5,698 L1349.5,695 L1356.5,692 L1363.5,689 L1370.5,685.5 L1377.5,679.5 L1388,670 L1392,660 L1395.5,649 L1398,643 L1400,637.5 L1402,638.5 L1404,639 L1405.5,639.5" stroke-dashoffset="5"/><path d="M985.5,708 L992.5,710 L999.5,712 L1006.5,714 L1013.5,716 L1020.5,717.5 L1027.5,719.5 L1034.5,721.5 L1041.5,723.5 L1048.5,725.5 L1055.5,726.5 L1062.5,727.5 L1069.5,728.5 L1076.5,729.5 L1083.5,730.5 L1090.5,731.5 L1097.5,732.5 L1104.5,733.5 L1111.5,734 L1118.5,734.5 L1125.5,735 L1132.5,735.5 L1139.5,736 L1146.5,736 L1153.5,736.5 L1160.5,736.5 L1167.5,736 L1174.5,736 L1181.5,736 L1188.5,735.5 L1195.5,735.5 L1202.5,735 L1209.5,734.5 L1216.5,733.5 L1223.5,732.5 L1230.5,731.5 L1237.5,731 L1244.5,730 L1251.5,729 L1258.5,728 L1265.5,727 L1272.5,726 L1279.5,725 L1286.5,724 L1293.5,723 L1300.5,721.5 L1307.5,719.5 L1314.5,717.5 L1321.5,715.5 L1328.5,713 L1335.5,711 L1342.5,708.5 L1349.5,705.5 L1356.5,702.5 L1363.5,699.5 L1370.5,695.5 L1377.5,689.5 L1388,680.5 L1392,671 L1395.5,660.5 L1398,654.5 L1400,649.5 L1402,649.5 L1404,650 L1405.5,650" stroke-dashoffset="10"/><path d="M985.5,719 L992.5,720.5 L999.5,722.5 L1006.5,724.5 L1013.5,726.5 L1020.5,728.5 L1027.5,730.5 L1034.5,732 L1041.5,734 L1048.5,736 L1055.5,737 L1062.5,738 L1069.5,739 L1076.5,740 L1083.5,741.5 L1090.5,742.5 L1097.5,743.5 L1104.5,744 L1111.5,744.5 L1118.5,745 L1125.5,745.5 L1132.5,746 L1139.5,746.5 L1146.5,747 L1153.5,747 L1160.5,747 L1167.5,747 L1174.5,746.5 L1181.5,746.5 L1188.5,746 L1195.5,746 L1202.5,746 L1209.5,745 L1216.5,744 L1223.5,743 L1230.5,742 L1237.5,741.5 L1244.5,740.5 L1251.5,739.5 L1258.5,738.5 L1265.5,737.5 L1272.5,736.5 L1279.5,735.5 L1286.5,734 L1293.5,733 L1300.5,732 L1307.5,730 L1314.5,728 L1321.5,725.5 L1328.5,723.5 L1335.5,721.5 L1342.5,719 L1349.5,716 L1356.5,713 L1363.5,709.5 L1370.5,706 L1377.5,700 L1388,691 L1392,682 L1395.5,672 L1398,666 L1400,661 L1402,661 L1404,660.5 L1405.5,660.5" stroke-dashoffset="3"/><path d="M985.5,729.5 L992.5,731.5 L999.5,733.5 L1006.5,735 L1013.5,737 L1020.5,739 L1027.5,741 L1034.5,743 L1041.5,745 L1048.5,746.5 L1055.5,747.5 L1062.5,749 L1069.5,750 L1076.5,751 L1083.5,752 L1090.5,753 L1097.5,754 L1104.5,754.5 L1111.5,755 L1118.5,755.5 L1125.5,756 L1132.5,756.5 L1139.5,757 L1146.5,757.5 L1153.5,758 L1160.5,757.5 L1167.5,757.5 L1174.5,757 L1181.5,757 L1188.5,757 L1195.5,756.5 L1202.5,756.5 L1209.5,755.5 L1216.5,754.5 L1223.5,753.5 L1230.5,753 L1237.5,752 L1244.5,751 L1251.5,750 L1258.5,749 L1265.5,748 L1272.5,747 L1279.5,745.5 L1286.5,744.5 L1293.5,743.5 L1300.5,742.5 L1307.5,740.5 L1314.5,738 L1321.5,736 L1328.5,734 L1335.5,731.5 L1342.5,729 L1349.5,726 L1356.5,723.5 L1363.5,720 L1370.5,716.5 L1377.5,710.5 L1388,701.5 L1392,692.5 L1395.5,683 L1398,677.5 L1400,672.5 L1402,672 L1404,671.5 L1405.5,671" stroke-dashoffset="8"/><path d="M985.5,740 L992.5,742 L999.5,744 L1006.5,746 L1013.5,748 L1020.5,749.5 L1027.5,751.5 L1034.5,753.5 L1041.5,755.5 L1048.5,757.5 L1055.5,758.5 L1062.5,759.5 L1069.5,760.5 L1076.5,761.5 L1083.5,762.5 L1090.5,763.5 L1097.5,765 L1104.5,765.5 L1111.5,766 L1118.5,766.5 L1125.5,767 L1132.5,767 L1139.5,767.5 L1146.5,768 L1153.5,768.5 L1160.5,768 L1167.5,768 L1174.5,768 L1181.5,767.5 L1188.5,767.5 L1195.5,767 L1202.5,767 L1209.5,766 L1216.5,765 L1223.5,764 L1230.5,763.5 L1237.5,762.5 L1244.5,761.5 L1251.5,760.5 L1258.5,759.5 L1265.5,758.5 L1272.5,757.5 L1279.5,756 L1286.5,755 L1293.5,754 L1300.5,752.5 L1307.5,751 L1314.5,748.5 L1321.5,746.5 L1328.5,744 L1335.5,742 L1342.5,739.5 L1349.5,736.5 L1356.5,733.5 L1363.5,730.5 L1370.5,727 L1377.5,721 L1388,712 L1392,703.5 L1395.5,694.5 L1398,689 L1400,684.5 L1402,683.5 L1404,682.5 L1405.5,681.5" stroke-dashoffset="1"/><path d="M985.5,750.5 L992.5,752.5 L999.5,754.5 L1006.5,756.5 L1013.5,758.5 L1020.5,760.5 L1027.5,762.5 L1034.5,764.5 L1041.5,766 L1048.5,768 L1055.5,769 L1062.5,770 L1069.5,771 L1076.5,772.5 L1083.5,773.5 L1090.5,774.5 L1097.5,775.5 L1104.5,776 L1111.5,776.5 L1118.5,777 L1125.5,777.5 L1132.5,778 L1139.5,778.5 L1146.5,779 L1153.5,779 L1160.5,779 L1167.5,778.5 L1174.5,778.5 L1181.5,778 L1188.5,778 L1195.5,777.5 L1202.5,777.5 L1209.5,776.5 L1216.5,775.5 L1223.5,774.5 L1230.5,774 L1237.5,773 L1244.5,772 L1251.5,771 L1258.5,770 L1265.5,769 L1272.5,767.5 L1279.5,766.5 L1286.5,765.5 L1293.5,764.5 L1300.5,763 L1307.5,761 L1314.5,759 L1321.5,757 L1328.5,754.5 L1335.5,752.5 L1342.5,750 L1349.5,747 L1356.5,744 L1363.5,741 L1370.5,737 L1377.5,731.5 L1388,722.5 L1392,714.5 L1395.5,705.5 L1398,700.5 L1400,696 L1402,695 L1404,693 L1405.5,692" stroke-dashoffset="6"/><path d="M985.5,761.5 L992.5,763.5 L999.5,765 L1006.5,767 L1013.5,769 L1020.5,771 L1027.5,773 L1034.5,775 L1041.5,777 L1048.5,779 L1055.5,780 L1062.5,781 L1069.5,782 L1076.5,783 L1083.5,784 L1090.5,785 L1097.5,786 L1104.5,787 L1111.5,787 L1118.5,787.5 L1125.5,788 L1132.5,788.5 L1139.5,789 L1146.5,789.5 L1153.5,789.5 L1160.5,789.5 L1167.5,789 L1174.5,789 L1181.5,788.5 L1188.5,788.5 L1195.5,788.5 L1202.5,788 L1209.5,787 L1216.5,786 L1223.5,785.5 L1230.5,784.5 L1237.5,783.5 L1244.5,782.5 L1251.5,781.5 L1258.5,780.5 L1265.5,779.5 L1272.5,778 L1279.5,777 L1286.5,776 L1293.5,774.5 L1300.5,773.5 L1307.5,771.5 L1314.5,769.5 L1321.5,767 L1328.5,765 L1335.5,762.5 L1342.5,760 L1349.5,757.5 L1356.5,754.5 L1363.5,751 L1370.5,747.5 L1377.5,742 L1388,733 L1392,725.5 L1395.5,717 L1398,712 L1400,707.5 L1402,706 L1404,704 L1405.5,702.5" stroke-dashoffset="11"/><path d="M985.5,772 L992.5,774 L999.5,776 L1006.5,778 L1013.5,780 L1020.5,781.5 L1027.5,783.5 L1034.5,785.5 L1041.5,787.5 L1048.5,789.5 L1055.5,790.5 L1062.5,791.5 L1069.5,792.5 L1076.5,793.5 L1083.5,794.5 L1090.5,796 L1097.5,797 L1104.5,797.5 L1111.5,798 L1118.5,798.5 L1125.5,799 L1132.5,799 L1139.5,799.5 L1146.5,800 L1153.5,800.5 L1160.5,800 L1167.5,800 L1174.5,799.5 L1181.5,799.5 L1188.5,799 L1195.5,799 L1202.5,798.5 L1209.5,797.5 L1216.5,797 L1223.5,796 L1230.5,795 L1237.5,794 L1244.5,793 L1251.5,792 L1258.5,791 L1265.5,790 L1272.5,788.5 L1279.5,787.5 L1286.5,786.5 L1293.5,785 L1300.5,784 L1307.5,782 L1314.5,780 L1321.5,777.5 L1328.5,775.5 L1335.5,773 L1342.5,770.5 L1349.5,767.5 L1356.5,765 L1363.5,761.5 L1370.5,758 L1377.5,752.5 L1388,744 L1392,736 L1395.5,728 L1398,723.5 L1400,719.5 L1402,717.5 L1404,715 L1405.5,713" stroke-dashoffset="4"/><path d="M985.5,782.5 L992.5,784.5 L999.5,786.5 L1006.5,788.5 L1013.5,790.5 L1020.5,792.5 L1027.5,794.5 L1034.5,796.5 L1041.5,798.5 L1048.5,800 L1055.5,801 L1062.5,802.5 L1069.5,803.5 L1076.5,804.5 L1083.5,805.5 L1090.5,806.5 L1097.5,807.5 L1104.5,808 L1111.5,808.5 L1118.5,809 L1125.5,809.5 L1132.5,810 L1139.5,810.5 L1146.5,810.5 L1153.5,811 L1160.5,810.5 L1167.5,810.5 L1174.5,810 L1181.5,810 L1188.5,809.5 L1195.5,809.5 L1202.5,809 L1209.5,808.5 L1216.5,807.5 L1223.5,806.5 L1230.5,805.5 L1237.5,804.5 L1244.5,803.5 L1251.5,802.5 L1258.5,801.5 L1265.5,800 L1272.5,799 L1279.5,798 L1286.5,796.5 L1293.5,795.5 L1300.5,794 L1307.5,792.5 L1314.5,790 L1321.5,788 L1328.5,785.5 L1335.5,783.5 L1342.5,781 L1349.5,778 L1356.5,775.5 L1363.5,772 L1370.5,768 L1377.5,763 L1388,754.5 L1392,747 L1395.5,739.5 L1398,735 L1400,731 L1402,728.5 L1404,726 L1405.5,724" stroke-dashoffset="9"/><path d="M985.5,793 L992.5,795 L999.5,797 L1006.5,799 L1013.5,801 L1020.5,803 L1027.5,805 L1034.5,807 L1041.5,809 L1048.5,811 L1055.5,812 L1062.5,813 L1069.5,814 L1076.5,815 L1083.5,816 L1090.5,817 L1097.5,818 L1104.5,819 L1111.5,819.5 L1118.5,819.5 L1125.5,820 L1132.5,820.5 L1139.5,821 L1146.5,821.5 L1153.5,821.5 L1160.5,821.5 L1167.5,821 L1174.5,821 L1181.5,820.5 L1188.5,820.5 L1195.5,820 L1202.5,819.5 L1209.5,819 L1216.5,818 L1223.5,817 L1230.5,816 L1237.5,815 L1244.5,814 L1251.5,813 L1258.5,812 L1265.5,810.5 L1272.5,809.5 L1279.5,808.5 L1286.5,807 L1293.5,806 L1300.5,804.5 L1307.5,803 L1314.5,800.5 L1321.5,798.5 L1328.5,796 L1335.5,793.5 L1342.5,791 L1349.5,788.5 L1356.5,785.5 L1363.5,782.5 L1370.5,778.5 L1377.5,773.5 L1388,765 L1392,758 L1395.5,750.5 L1398,746.5 L1400,742.5 L1402,740 L1404,736.5 L1405.5,734.5" stroke-dashoffset="2"/><path d="M985.5,804 L992.5,806 L999.5,808 L1006.5,810 L1013.5,811.5 L1020.5,813.5 L1027.5,815.5 L1034.5,817.5 L1041.5,819.5 L1048.5,821.5 L1055.5,822.5 L1062.5,823.5 L1069.5,824.5 L1076.5,826 L1083.5,827 L1090.5,828 L1097.5,829 L1104.5,829.5 L1111.5,830 L1118.5,830.5 L1125.5,830.5 L1132.5,831 L1139.5,831.5 L1146.5,832 L1153.5,832 L1160.5,832 L1167.5,831.5 L1174.5,831.5 L1181.5,831 L1188.5,831 L1195.5,830.5 L1202.5,830.5 L1209.5,829.5 L1216.5,828.5 L1223.5,827.5 L1230.5,826.5 L1237.5,825.5 L1244.5,824.5 L1251.5,823.5 L1258.5,822.5 L1265.5,821 L1272.5,820 L1279.5,818.5 L1286.5,817.5 L1293.5,816 L1300.5,815 L1307.5,813 L1314.5,811 L1321.5,808.5 L1328.5,806.5 L1335.5,804 L1342.5,801.5 L1349.5,799 L1356.5,796 L1363.5,793 L1370.5,789 L1377.5,784 L1388,775.5 L1392,769 L1395.5,762 L1398,758 L1400,754.5 L1402,751 L1404,747.5 L1405.5,745" stroke-dashoffset="7"/><path d="M985.5,814.5 L992.5,816.5 L999.5,818.5 L1006.5,820.5 L1013.5,822.5 L1020.5,824.5 L1027.5,826.5 L1034.5,828.5 L1041.5,830.5 L1048.5,832.5 L1055.5,833.5 L1062.5,834.5 L1069.5,835.5 L1076.5,836.5 L1083.5,837.5 L1090.5,838.5 L1097.5,839.5 L1104.5,840 L1111.5,840.5 L1118.5,841 L1125.5,841.5 L1132.5,842 L1139.5,842 L1146.5,842.5 L1153.5,843 L1160.5,842.5 L1167.5,842.5 L1174.5,842 L1181.5,841.5 L1188.5,841.5 L1195.5,841 L1202.5,841 L1209.5,840 L1216.5,839 L1223.5,838 L1230.5,837 L1237.5,836 L1244.5,835 L1251.5,834 L1258.5,833 L1265.5,831.5 L1272.5,830.5 L1279.5,829 L1286.5,828 L1293.5,826.5 L1300.5,825.5 L1307.5,823.5 L1314.5,821.5 L1321.5,819 L1328.5,816.5 L1335.5,814.5 L1342.5,812 L1349.5,809 L1356.5,806.5 L1363.5,803 L1370.5,799 L1377.5,794 L1388,786 L1392,779.5 L1395.5,773 L1398,769.5 L1400,766 L1402,762.5 L1404,758.5 L1405.5,755.5" stroke-dashoffset="0"/><path d="M985.5,825 L992.5,827 L999.5,829 L1006.5,831 L1013.5,833 L1020.5,835 L1027.5,837 L1034.5,839 L1041.5,841 L1048.5,843 L1055.5,844 L1062.5,845 L1069.5,846 L1076.5,847 L1083.5,848 L1090.5,849.5 L1097.5,850.5 L1104.5,851 L1111.5,851.5 L1118.5,851.5 L1125.5,852 L1132.5,852.5 L1139.5,853 L1146.5,853 L1153.5,853.5 L1160.5,853 L1167.5,853 L1174.5,852.5 L1181.5,852.5 L1188.5,852 L1195.5,851.5 L1202.5,851.5 L1209.5,850.5 L1216.5,849.5 L1223.5,848.5 L1230.5,847.5 L1237.5,846.5 L1244.5,845.5 L1251.5,844.5 L1258.5,843.5 L1265.5,842 L1272.5,841 L1279.5,839.5 L1286.5,838.5 L1293.5,837 L1300.5,835.5 L1307.5,834 L1314.5,831.5 L1321.5,829.5 L1328.5,827 L1335.5,824.5 L1342.5,822 L1349.5,819.5 L1356.5,817 L1363.5,813.5 L1370.5,809.5 L1377.5,804.5 L1388,796.5 L1392,790.5 L1395.5,784.5 L1398,781 L1400,777.5 L1402,774 L1404,769 L1405.5,766" stroke-dashoffset="5"/><path d="M985.5,835.5 L992.5,837.5 L999.5,839.5 L1006.5,841.5 L1013.5,843.5 L1020.5,845.5 L1027.5,847.5 L1034.5,849.5 L1041.5,851.5 L1048.5,853.5 L1055.5,854.5 L1062.5,855.5 L1069.5,857 L1076.5,858 L1083.5,859 L1090.5,860 L1097.5,861 L1104.5,861.5 L1111.5,862 L1118.5,862.5 L1125.5,862.5 L1132.5,863 L1139.5,863.5 L1146.5,864 L1153.5,864 L1160.5,864 L1167.5,863.5 L1174.5,863 L1181.5,863 L1188.5,862.5 L1195.5,862.5 L1202.5,862 L1209.5,861 L1216.5,860 L1223.5,859 L1230.5,858 L1237.5,857 L1244.5,856 L1251.5,855 L1258.5,854 L1265.5,852.5 L1272.5,851.5 L1279.5,850 L1286.5,848.5 L1293.5,847.5 L1300.5,846 L1307.5,844.5 L1314.5,842 L1321.5,839.5 L1328.5,837.5 L1335.5,835 L1342.5,832.5 L1349.5,830 L1356.5,827.5 L1363.5,824 L1370.5,820 L1377.5,815 L1388,807 L1392,801.5 L1395.5,795.5 L1398,792.5 L1400,789.5 L1402,785 L1404,780 L1405.5,776.5" stroke-dashoffset="10"/><path d="M985.5,846.5 L992.5,848.5 L999.5,850.5 L1006.5,852.5 L1013.5,854.5 L1020.5,856.5 L1027.5,858.5 L1034.5,860.5 L1041.5,862.5 L1048.5,864.5 L1055.5,865.5 L1062.5,866.5 L1069.5,867.5 L1076.5,868.5 L1083.5,869.5 L1090.5,870.5 L1097.5,871.5 L1104.5,872.5 L1111.5,872.5 L1118.5,873 L1125.5,873.5 L1132.5,874 L1139.5,874 L1146.5,874.5 L1153.5,874.5 L1160.5,874.5 L1167.5,874 L1174.5,874 L1181.5,873.5 L1188.5,873 L1195.5,873 L1202.5,872.5 L1209.5,871.5 L1216.5,870.5 L1223.5,869.5 L1230.5,868.5 L1237.5,867.5 L1244.5,866.5 L1251.5,865.5 L1258.5,864.5 L1265.5,863 L1272.5,861.5 L1279.5,860.5 L1286.5,859 L1293.5,858 L1300.5,856.5 L1307.5,855 L1314.5,852.5 L1321.5,850 L1328.5,847.5 L1335.5,845.5 L1342.5,843 L1349.5,840.5 L1356.5,837.5 L1363.5,834.5 L1370.5,830 L1377.5,825.5 L1388,817.5 L1392,812 L1395.5,807 L1398,804 L1400,801 L1402,796.5 L1404,791 L1405.5,787" stroke-dashoffset="3"/><path d="M985.5,857 L992.5,859 L999.5,861 L1006.5,863 L1013.5,865 L1020.5,867 L1027.5,869 L1034.5,871 L1041.5,873 L1048.5,875 L1055.5,876 L1062.5,877 L1069.5,878 L1076.5,879 L1083.5,880.5 L1090.5,881.5 L1097.5,882.5 L1104.5,883 L1111.5,883.5 L1118.5,883.5 L1125.5,884 L1132.5,884.5 L1139.5,885 L1146.5,885 L1153.5,885.5 L1160.5,885 L1167.5,884.5 L1174.5,884.5 L1181.5,884 L1188.5,884 L1195.5,883.5 L1202.5,883 L1209.5,882 L1216.5,881 L1223.5,880 L1230.5,879 L1237.5,878 L1244.5,877 L1251.5,876 L1258.5,875 L1265.5,873.5 L1272.5,872 L1279.5,871 L1286.5,869.5 L1293.5,868 L1300.5,867 L1307.5,865 L1314.5,863 L1321.5,860.5 L1328.5,858 L1335.5,855.5 L1342.5,853 L1349.5,850.5 L1356.5,848 L1363.5,844.5 L1370.5,840.5 L1377.5,836 L1388,828 L1392,823 L1395.5,818 L1398,815.5 L1400,812.5 L1402,807.5 L1404,802 L1405.5,797.5" stroke-dashoffset="8"/><path d="M985.5,867.5 L992.5,869.5 L999.5,871.5 L1006.5,873.5 L1013.5,875.5 L1020.5,877.5 L1027.5,879.5 L1034.5,882 L1041.5,884 L1048.5,885.5 L1055.5,887 L1062.5,888 L1069.5,889 L1076.5,890 L1083.5,891 L1090.5,892 L1097.5,893 L1104.5,893.5 L1111.5,894 L1118.5,894.5 L1125.5,894.5 L1132.5,895 L1139.5,895.5 L1146.5,896 L1153.5,896 L1160.5,895.5 L1167.5,895.5 L1174.5,895 L1181.5,894.5 L1188.5,894.5 L1195.5,894 L1202.5,893.5 L1209.5,893 L1216.5,891.5 L1223.5,890.5 L1230.5,889.5 L1237.5,888.5 L1244.5,887.5 L1251.5,886.5 L1258.5,885.5 L1265.5,884 L1272.5,882.5 L1279.5,881.5 L1286.5,880 L1293.5,878.5 L1300.5,877 L1307.5,875.5 L1314.5,873 L1321.5,871 L1328.5,868.5 L1335.5,866 L1342.5,863.5 L1349.5,861 L1356.5,858.5 L1363.5,855 L1370.5,851 L1377.5,846.5 L1388,838.5 L1392,834 L1395.5,829.5 L1398,826.5 L1400,824.5 L1402,819 L1404,812.5 L1405.5,808" stroke-dashoffset="1"/><path d="M985.5,878 L992.5,880 L999.5,882.5 L1006.5,884.5 L1013.5,886.5 L1020.5,888.5 L1027.5,890.5 L1034.5,892.5 L1041.5,894.5 L1048.5,896.5 L1055.5,897.5 L1062.5,898.5 L1069.5,899.5 L1076.5,900.5 L1083.5,901.5 L1090.5,902.5 L1097.5,904 L1104.5,904.5 L1111.5,904.5 L1118.5,905 L1125.5,905.5 L1132.5,905.5 L1139.5,906 L1146.5,906.5 L1153.5,906.5 L1160.5,906 L1167.5,906 L1174.5,905.5 L1181.5,905.5 L1188.5,905 L1195.5,904.5 L1202.5,904.5 L1209.5,903.5 L1216.5,902.5 L1223.5,901 L1230.5,900 L1237.5,899 L1244.5,898 L1251.5,897 L1258.5,896 L1265.5,894.5 L1272.5,893 L1279.5,891.5 L1286.5,890.5 L1293.5,889 L1300.5,887.5 L1307.5,886 L1314.5,883.5 L1321.5,881 L1328.5,879 L1335.5,876.5 L1342.5,874 L1349.5,871.5 L1356.5,869 L1363.5,865.5 L1370.5,861 L1377.5,857 L1388,849 L1392,845 L1395.5,840.5 L1398,838 L1400,836 L1402,830.5 L1404,823.5 L1405.5,819" stroke-dashoffset="6"/><path d="M985.5,889 L992.5,891 L999.5,893 L1006.5,895 L1013.5,897 L1020.5,899 L1027.5,901 L1034.5,903 L1041.5,905 L1048.5,907 L1055.5,908 L1062.5,909 L1069.5,910.5 L1076.5,911.5 L1083.5,912.5 L1090.5,913.5 L1097.5,914.5 L1104.5,915 L1111.5,915.5 L1118.5,915.5 L1125.5,916 L1132.5,916.5 L1139.5,916.5 L1146.5,917 L1153.5,917 L1160.5,917 L1167.5,916.5 L1174.5,916 L1181.5,916 L1188.5,915.5 L1195.5,915 L1202.5,915 L1209.5,914 L1216.5,913 L1223.5,912 L1230.5,910.5 L1237.5,909.5 L1244.5,908.5 L1251.5,907.5 L1258.5,906.5 L1265.5,905 L1272.5,903.5 L1279.5,902 L1286.5,900.5 L1293.5,899.5 L1300.5,898 L1307.5,896.5 L1314.5,894 L1321.5,891.5 L1328.5,889 L1335.5,886.5 L1342.5,884 L1349.5,882 L1356.5,879.5 L1363.5,876 L1370.5,871.5 L1377.5,867.5 L1388,859.5 L1392,855.5 L1395.5,852 L1398,849.5 L1400,847.5 L1402,841.5 L1404,834.5 L1405.5,829.5" stroke-dashoffset="11"/><path d="M985.5,899.5 L992.5,901.5 L999.5,903.5 L1006.5,905.5 L1013.5,907.5 L1020.5,909.5 L1027.5,912 L1034.5,914 L1041.5,916 L1048.5,918 L1055.5,919 L1062.5,920 L1069.5,921 L1076.5,922 L1083.5,923 L1090.5,924 L1097.5,925 L1104.5,925.5 L1111.5,926 L1118.5,926.5 L1125.5,926.5 L1132.5,927 L1139.5,927.5 L1146.5,927.5 L1153.5,928 L1160.5,927.5 L1167.5,927 L1174.5,927 L1181.5,926.5 L1188.5,926 L1195.5,926 L1202.5,925.5 L1209.5,924.5 L1216.5,923.5 L1223.5,922.5 L1230.5,921 L1237.5,920 L1244.5,919 L1251.5,918 L1258.5,917 L1265.5,915.5 L1272.5,914 L1279.5,912.5 L1286.5,911 L1293.5,909.5 L1300.5,908.5 L1307.5,907 L1314.5,904.5 L1321.5,902 L1328.5,899.5 L1335.5,897 L1342.5,894.5 L1349.5,892 L1356.5,890 L1363.5,886 L1370.5,882 L1377.5,878 L1388,870 L1392,866.5 L1395.5,863.5 L1398,861 L1400,859.5 L1402,853 L1404,845 L1405.5,840" stroke-dashoffset="4"/></g>
<path d="M1011.5,683 L1011.5,896 M1042.5,691.5 L1042.5,905 M1079,697.5 L1079,911.5 M1118,702 L1118,915.5 M1155.5,704.5 L1155.5,917 M1194.5,703.5 L1194.5,915 M1232,699.5 L1232,910 M1269.5,694.5 L1269.5,904 M1302,690 L1302,897.5 M1333,680.5 L1333,887 M1356.5,671 L1356.5,879 M1377,658.5 L1377,867.5" stroke="#f0e6da" stroke-width="1" stroke-dasharray="2,8" opacity="0.9"/>
</g>
<polyline points="986,678 985.5,676 997,679 1013.5,684 1031.5,689 1048,693 1061.5,695.5 1074.5,697.5 1087,699 1099.5,700.5 1112.5,702 1125.5,703 1138.5,704 1151.5,704.5 1164.5,704.5 1177.5,704.5 1190.5,704 1203.5,703 1216.5,702 1229.5,700.5 1243,698.5 1255,696.5 1268,695 1280.5,693 1291.5,691.5 1299.5,690.5" fill="none" stroke="#231d19" stroke-width="3"/>
<line x1="986.5" y1="676" x2="986.5" y2="888" stroke="#3e2c1e" stroke-width="1.5"/>
<polyline points="986.5,888.5 985.5,888.5 997,892 1013.5,897 1031.5,902.5 1048,906.5 1061.5,909.5 1074.5,911.5 1087,913 1099.5,914.5 1112.5,915.5 1125.5,916.5 1138.5,917 1151.5,917 1164.5,917 1177.5,916.5 1190.5,915.5 1203.5,914.5 1216.5,913 1229,911 1242,909 1255,906.5 1268,904.5 1281,902 1294,899.5 1307,896.5 1320.5,892.5 1334.5,887.5 1348,882.5 1359,878 1367.5,874 1374,870 1379.5,866.5 1385,862.5 1389.5,859 1394,855 1397.5,851 1400.5,847 1402.5,842 1404,837 1405,832.5 1405.5,829" fill="none" stroke="#231d19" stroke-width="3"/>
<polyline points="1394.5,618.5 1395,619.5 1395.5,621 1396,623.5 1395.5,626.5 1395,631 1393.5,636.5 1391.5,642.5 1389,648 1385,652.5 1380.5,657 1375.5,661.5 1369.5,665.5 1362.5,669 1355,672.5 1347,675.5 1338.5,679 1328.5,682 1317.5,685.5 1307,688 1299.5,690.5 1295.5,692 1294,693 1293.5,694 1293,694.5" fill="none" stroke="#231d19" stroke-width="3"/>
<path d="M986.5,680.5 L982,686.5 L986.5,688Z M986.5,691 L982,697 L986.5,698.5Z M986.5,702 L982,708 L986.5,709Z M986.5,712.5 L982,718.5 L986.5,719.5Z M986.5,723 L982,729 L986.5,730Z M986.5,733.5 L982,739.5 L986.5,741Z M986.5,744 L982,750 L986.5,751.5Z M986.5,755 L982,761 L986.5,762Z M986.5,765.5 L982,771.5 L986.5,772.5Z M986.5,776 L982,782 L986.5,783Z M986.5,786.5 L982,792.5 L986.5,794Z M986.5,797 L982,803 L986.5,804.5Z M986.5,808 L982,814 L986.5,815Z M986.5,818.5 L982,824.5 L986.5,825.5Z M986.5,829 L982,835 L986.5,836Z M986.5,839.5 L982,845.5 L986.5,847Z M986.5,850 L982,856 L986.5,857.5Z M986.5,861 L982,867 L986.5,868Z M986.5,871.5 L982,877.5 L986.5,878.5Z M986.5,882 L982,888 L986.5,889Z" fill="#3e2c1e"/>
<polygon points="1651.0,483.0 1646.0,489.0 1651.0,489.0" fill="#f2ebe2"/>
<polygon points="1651.0,493.7 1646.0,499.7 1651.0,499.7" fill="#f2ebe2"/>
<polygon points="1651.0,504.4 1646.0,510.4 1651.0,510.4" fill="#f2ebe2"/>
<polygon points="1651.0,515.1 1646.0,521.1 1651.0,521.1" fill="#f2ebe2"/>
<polygon points="1651.0,525.8 1646.0,531.8 1651.0,531.8" fill="#f2ebe2"/>
<polygon points="1651.0,536.5 1646.0,542.5 1651.0,542.5" fill="#f2ebe2"/>
<polygon points="1651.0,547.2 1646.0,553.2 1651.0,553.2" fill="#f2ebe2"/>
<polygon points="1651.0,557.9 1646.0,563.9 1651.0,563.9" fill="#f2ebe2"/>
<polygon points="1651.0,568.6 1646.0,574.6 1651.0,574.6" fill="#f2ebe2"/>
<polygon points="1651.0,579.3 1646.0,585.3 1651.0,585.3" fill="#f2ebe2"/>
<polygon points="1651.0,590.0 1646.0,596.0 1651.0,596.0" fill="#f2ebe2"/>
<polygon points="1651.0,600.7 1646.0,606.7 1651.0,606.7" fill="#f2ebe2"/>
<polygon points="1651.0,611.4 1646.0,617.4 1651.0,617.4" fill="#f2ebe2"/>
<polygon points="1651.0,622.1 1646.0,628.1 1651.0,628.1" fill="#f2ebe2"/>
<polygon points="1651.0,632.8 1646.0,638.8 1651.0,638.8" fill="#f2ebe2"/>
<polygon points="1651.0,643.5 1646.0,649.5 1651.0,649.5" fill="#f2ebe2"/>
<polygon points="1651.0,654.2 1646.0,660.2 1651.0,660.2" fill="#f2ebe2"/>
<polygon points="1651.0,664.9 1646.0,670.9 1651.0,670.9" fill="#f2ebe2"/>
<polygon points="1651.0,675.6 1646.0,681.6 1651.0,681.6" fill="#f2ebe2"/>
<polygon points="1651.0,686.3 1646.0,692.3 1651.0,692.3" fill="#f2ebe2"/>
<line x1="1652" y1="479" x2="1652" y2="693" stroke="#231d19" stroke-width="3.5"/><defs><radialGradient id="vcs" cx="0.5" cy="0.5" r="0.5"><stop offset="0" stop-color="#cfcfcf"/><stop offset="1" stop-color="#eeeeee" stop-opacity="0"/></radialGradient></defs>
<ellipse cx="1591" cy="318" rx="65.5" ry="25.5" fill="none" stroke="#c2c2c2" stroke-width="1.1"/>
<ellipse cx="1591" cy="317" rx="50.5" ry="17.5" fill="none" stroke="#cdcdcd" stroke-width="1"/>
<ellipse cx="1592" cy="312" rx="38" ry="12" fill="url(#vcs)"/>
<path d="M1531,330 Q1537,322 1545,326 M1630,329 Q1640,326 1645,333" fill="none" stroke="#c4c4c4" stroke-width="1"/>
<polygon points="1592,253 1557,262 1588,273 1626,263" fill="#f3f3f3" stroke="#a0a0a0" stroke-width="0.9"/>
<polygon points="1557,262 1588,273 1588,321 1558,306" fill="#e9e9e9" stroke="#a0a0a0" stroke-width="0.9"/>
<polygon points="1588,273 1626,263 1624,306 1588,321" fill="#ececec" stroke="#a0a0a0" stroke-width="0.9"/>
<text x="1565" y="292" font-family="Liberation Sans" font-weight="bold" font-size="9.5" fill="#8c8c8c" transform="rotate(20 1572 290)" textLength="15" lengthAdjust="spacingAndGlyphs">LEFT</text>
<text x="1594" y="299" font-family="Liberation Sans" font-weight="bold" font-size="10" fill="#8c8c8c" transform="rotate(-19 1606 292)" textLength="27" lengthAdjust="spacingAndGlyphs">FRONT</text></svg>
<div class="a" style="left:1681px;top:193px;width:19px;height:815px;background:#eeeeee;"></div>
<div class="a" style="left:1681px;top:193px;width:1px;height:795px;background:#ffffff;"></div>
<div class="a" style="left:1689px;top:584px;width:2px;height:17px;background:#8a8a8a;"></div>
<div class="a" style="left:256px;top:988px;width:1425px;height:18px;background:#f0f0f0;"></div>
<div class="a" style="left:254px;top:1006px;width:1446px;height:2px;background:#ffffff;"></div>
<div class="a" style="left:626px;top:988px;width:1055px;height:1px;background:#ffffff;"></div>
<div class="a" style="left:1145px;top:997px;width:16px;height:2px;background:#7a7a7a;"></div>
<div class="t" style="left:287.0px;top:992.3px;font-size:11.50px;line-height:11.50px;color:#222;">1 : 5</div>
<svg class="a" style="left:335px;top:989px;" width="17" height="16" viewBox="0 0 17 16"><rect x="1" y="2" width="15" height="11" fill="#fff" stroke="#333" stroke-width="1.3"/><rect x="1" y="6" width="5" height="3" fill="#555"/><rect x="6" y="4" width="5" height="3" fill="#999"/><rect x="11" y="6" width="5" height="3" fill="#555"/></svg>
<svg class="a" style="left:357px;top:989px;" width="17" height="16" viewBox="0 0 17 16"><path d="M1,6 L5,2 L16,2 L16,10 L12,14 L1,14Z" fill="#a8d6e8" stroke="#2f6d87" stroke-width="1.1"/><path d="M1,6 L12,6 L12,14 M12,6 L16,2" fill="none" stroke="#2f6d87"/><path d="M3,9 L10,9 M3,11 L10,11" stroke="#2f6d87"/></svg>
<svg class="a" style="left:377px;top:989px;" width="17" height="16" viewBox="0 0 17 16"><circle cx="6" cy="7" r="3.5" fill="#f2d24a" stroke="#b59a20"/><path d="M6,1 L6,2.5 M6,11.5 L6,13 M0,7 L1.5,7 M10.5,7 L12,7 M2,3 L3,4 M9,10 L10,11 M10,3 L9,4" stroke="#b59a20"/><path d="M10,9 L15,14 M15,9 L10,14" stroke="#d03030" stroke-width="2"/></svg>
<svg class="a" style="left:400px;top:989px;" width="17" height="16" viewBox="0 0 17 16"><circle cx="7" cy="6" r="4.5" fill="#dbe9f3" stroke="#2f6d87" stroke-width="1.1"/><path d="M2,13 L10,13" stroke="#2f6d87" stroke-width="1.3"/><path d="M10,9 L15,14 M15,9 L10,14" stroke="#d03030" stroke-width="2"/></svg>
<svg class="a" style="left:420px;top:989px;" width="17" height="16" viewBox="0 0 17 16"><path d="M1,5 L4,3 L9,5 L9,10 L4,12 L1,9Z" fill="#f0f0f0" stroke="#444"/><circle cx="12" cy="9" r="3" fill="#e0eef6" stroke="#2f6d87"/><rect x="11" y="12" width="2" height="3" fill="#2f6d87"/></svg>
<svg class="a" style="left:440px;top:989px;" width="17" height="16" viewBox="0 0 17 16"><path d="M2,6 L14,6 M2,10 L12,10 M5,4 L5,13" stroke="#2f6d87" stroke-width="1.3"/><path d="M9,8 L15,14 M15,8 L9,14" stroke="#d03030" stroke-width="2"/></svg>
<svg class="a" style="left:461px;top:989px;" width="17" height="16" viewBox="0 0 17 16"><path d="M2,6 L10,6 M2,10 L9,10 M5,4 L5,13" stroke="#2f6d87" stroke-width="1.3"/><circle cx="12" cy="7" r="3" fill="#e0eef6" stroke="#2f6d87"/><rect x="11" y="10" width="2" height="4" fill="#2f6d87"/></svg>
<svg class="a" style="left:482px;top:989px;" width="17" height="16" viewBox="0 0 17 16"><path d="M1,7 L7,1 L14,6 L14,14 L1,14Z" fill="#f2f2f2" stroke="#444" stroke-width="1.1"/><rect x="9" y="9" width="6" height="6" fill="#9ad0de" stroke="#2f6d87"/></svg>
<svg class="a" style="left:503px;top:989px;" width="17" height="16" viewBox="0 0 17 16"><path d="M1,6 Q4,12 8,9 Q12,6 15,9" fill="none" stroke="#333" stroke-width="1.3"/><circle cx="12" cy="6" r="3" fill="none" stroke="#2f6d87"/></svg>
<svg class="a" style="left:525px;top:989px;" width="17" height="16" viewBox="0 0 17 16"><circle cx="8" cy="7" r="3" fill="#e0eef6" stroke="#2f6d87"/><rect x="7" y="10" width="2" height="3" fill="#2f6d87"/></svg>
<svg class="a" style="left:544px;top:989px;" width="17" height="16" viewBox="0 0 17 16"><rect x="1" y="3" width="13" height="10" fill="none" stroke="#333" stroke-width="1.3" stroke-dasharray="2,1.5"/><rect x="7" y="7" width="6" height="5" fill="#fff" stroke="#333"/></svg>
<svg class="a" style="left:565px;top:989px;" width="17" height="16" viewBox="0 0 17 16"><path d="M1,14 L1,5 L8,2 L15,5 L15,14" fill="none" stroke="#a04a3a" stroke-width="1.1"/><path d="M4,4 L4,14 M8,2 L8,14" stroke="#a04a3a"/><circle cx="12" cy="8" r="3" fill="#e0eef6" stroke="#2f6d87"/></svg>
<svg class="a" style="left:587px;top:989px;" width="17" height="16" viewBox="0 0 17 16"><path d="M1,5 L5,2 L15,2 L15,11 L11,14 L1,14Z" fill="#e8e8e8" stroke="#444" stroke-width="1.1"/><path d="M1,5 L11,5 L11,14 M11,5 L15,2" fill="none" stroke="#444"/></svg>
<svg class="a" style="left:607px;top:989px;" width="17" height="16" viewBox="0 0 17 16"><path d="M2,1 L2,14 M15,1 L15,6 M2,3 L15,3" stroke="#333" stroke-width="1.2"/><rect x="9" y="8" width="6" height="6" rx="1" fill="#666"/></svg>
<div class="a" style="left:1700px;top:172px;width:220px;height:836px;background:#eeeeee;"></div>
<div class="a" style="left:1700px;top:171px;width:2px;height:837px;background:#c8c8c8;"></div>
<div class="a" style="left:1700px;top:171px;width:220px;height:2px;background:#c8c8c8;"></div>
<div class="t" style="left:1706.5px;top:178.1px;font-size:11.70px;line-height:11.70px;color:#2a2a2a;">Properties</div>
<svg class="a" style="left:1906px;top:178px;" width="11" height="11" viewBox="0 0 11 11"><path d="M1,1 L10,10 M10,1 L1,10" stroke="#222" stroke-width="1.6"/></svg>
<div class="a" style="left:1704px;top:193px;width:216px;height:72px;background:#eeeeee;border:1px solid #d6d6d6;border-right:none"></div>
<div class="a" style="left:1707px;top:196px;width:66px;height:66px;background:#efefef;border:1px solid #d2d2d2"></div>
<svg class="a" style="left:1720px;top:208px;" width="40" height="40" viewBox="0 0 40 40"><path d="M7.4,19 L11.5,14.4 L20.4,23.3 L20.4,34.6 L7.4,30Z" fill="#f7f8fa" stroke="#2f3338" stroke-width="1.1" stroke-linejoin="round"/><path d="M20.4,23.3 L31.5,18.5 L31.5,28.9 L20.4,34.6Z" fill="#c9ccd1" stroke="#2f3338" stroke-width="1.1" stroke-linejoin="round"/><path d="M5.6,17.8 L11.9,10.7 L23.3,6.3 L33.7,16.7 L31.5,18.5 L20.4,23.3 L11.5,14.4 L7.4,19Z" fill="#e2e6ec" stroke="#2f3338" stroke-width="1.2" stroke-linejoin="round"/><rect x="11.3" y="23" width="3.5" height="8.8" fill="#3a3d42"/></svg>
<div class="t" style="left:1777.0px;top:224.1px;font-size:11.70px;line-height:11.70px;color:#333;">3D View</div>
<svg class="a" style="left:1909px;top:227px;" width="9" height="5" viewBox="0 0 9 5"><path d="M0,0 L9,0 L4.5,4.5Z" fill="#333"/></svg>
<div class="a" style="left:1704px;top:267px;width:133px;height:22px;background:#fff;border:1px solid #dadada"></div>
<div class="t" style="left:1708.0px;top:271.6px;font-size:11.70px;line-height:11.70px;color:#1a1a1a;">3D View: {3D}</div>
<svg class="a" style="left:1824px;top:274px;" width="10" height="6" viewBox="0 0 10 6"><path d="M1,1 L5,5 L9,1" fill="none" stroke="#555" stroke-width="1.1"/></svg>
<svg class="a" style="left:1843px;top:268px;" width="17" height="16" viewBox="0 0 17 16"><rect x="0.8" y="0.8" width="6" height="6" fill="none" stroke="#333" stroke-width="1.1"/><rect x="8.5" y="0.8" width="7" height="6" fill="none" stroke="#333" stroke-width="1.1"/><rect x="0.8" y="8.5" width="6" height="6.5" fill="none" stroke="#333" stroke-width="1.1"/><rect x="8.5" y="8.5" width="7" height="6.5" fill="#eef2f8" stroke="#333" stroke-width="1.1"/><path d="M10,11 L14,11 M10,13 L14,13" stroke="#2a5d9c"/></svg>
<div class="t" style="left:1865.0px;top:270.3px;font-size:11.40px;line-height:11.40px;color:#1a1a1a;">Edit Type</div>
<div class="a" style="left:1704px;top:290px;width:216px;height:690px;background:#ffffff;"></div>
<div class="a" style="left:1704px;top:289px;width:216px;height:18px;background:#dcdcdc;"></div>
<div class="t" style="left:1706.5px;top:291.6px;font-size:11.70px;line-height:11.70px;color:#1a1a1a;">Graphics</div>
<svg class="a" style="left:1905px;top:292px;" width="9" height="11" viewBox="0 0 9 11"><path d="M1,5 L4.5,2 L8,5 M1,9 L4.5,6 L8,9" fill="none" stroke="#222" stroke-width="1.3"/></svg>
<div class="t" style="left:1712.5px;top:309.6px;font-size:11.70px;line-height:11.70px;color:#1a1a1a;">View Scale</div>
<div class="a" style="left:1806px;top:308px;width:101px;height:17px;border:1.5px solid #111;background:#fff"></div>
<div class="t" style="left:1811.5px;top:309.6px;font-size:11.70px;line-height:11.70px;color:#1a1a1a;">1 : 5</div>
<div class="a" style="left:1704px;top:324px;width:216px;height:1px;background:repeating-linear-gradient(90deg,#7a7a7a 0 1px,transparent 1px 2px)"></div>
<div class="t" style="left:1712.5px;top:327.6px;font-size:11.70px;line-height:11.70px;color:#8c8c8c;">Scale Value</div>
<div class="t" style="left:1789.0px;top:327.6px;font-size:11.70px;line-height:11.70px;color:#8c8c8c;">1:</div>
<div class="t" style="left:1808.5px;top:327.6px;font-size:11.70px;line-height:11.70px;color:#8c8c8c;">5</div>
<div class="a" style="left:1704px;top:342px;width:216px;height:1px;background:repeating-linear-gradient(90deg,#7a7a7a 0 1px,transparent 1px 2px)"></div>
<div class="t" style="left:1712.5px;top:345.6px;font-size:11.70px;line-height:11.70px;color:#1a1a1a;">Detail Level</div>
<div class="t" style="left:1808.5px;top:345.6px;font-size:11.70px;line-height:11.70px;color:#1a1a1a;">Medium</div>
<div class="a" style="left:1704px;top:360px;width:216px;height:1px;background:repeating-linear-gradient(90deg,#7a7a7a 0 1px,transparent 1px 2px)"></div>
<div class="t" style="left:1712.5px;top:363.6px;font-size:11.70px;line-height:11.70px;color:#1a1a1a;">Parts Visibility</div>
<div class="t" style="left:1808.5px;top:363.6px;font-size:11.70px;line-height:11.70px;color:#1a1a1a;">Show Original</div>
<div class="a" style="left:1704px;top:378px;width:216px;height:1px;background:repeating-linear-gradient(90deg,#7a7a7a 0 1px,transparent 1px 2px)"></div>
<div class="t" style="left:1712.5px;top:381.6px;font-size:11.70px;line-height:11.70px;color:#1a1a1a;">Visibility/Graph...</div>
<div class="a" style="left:1808px;top:381px;width:97px;height:14px;border:1px solid #cfcfcf;border-radius:3px;background:linear-gradient(#fdfdfd,#ececec)"></div>
<div class="t" style="left:1656.5px;width:400px;text-align:center;top:381.6px;font-size:11.70px;line-height:11.70px;color:#1a1a1a;">Edit...</div>
<div class="a" style="left:1704px;top:396px;width:216px;height:1px;background:repeating-linear-gradient(90deg,#7a7a7a 0 1px,transparent 1px 2px)"></div>
<div class="t" style="left:1712.5px;top:399.6px;font-size:11.70px;line-height:11.70px;color:#1a1a1a;">Graphic Display...</div>
<div class="a" style="left:1808px;top:399px;width:97px;height:14px;border:1px solid #cfcfcf;border-radius:3px;background:linear-gradient(#fdfdfd,#ececec)"></div>
<div class="t" style="left:1656.5px;width:400px;text-align:center;top:399.6px;font-size:11.70px;line-height:11.70px;color:#1a1a1a;">Edit...</div>
<div class="a" style="left:1704px;top:414px;width:216px;height:1px;background:repeating-linear-gradient(90deg,#7a7a7a 0 1px,transparent 1px 2px)"></div>
<div class="t" style="left:1712.5px;top:417.6px;font-size:11.70px;line-height:11.70px;color:#1a1a1a;">Discipline</div>
<div class="t" style="left:1808.5px;top:417.6px;font-size:11.70px;line-height:11.70px;color:#1a1a1a;">Coordination</div>
<div class="a" style="left:1704px;top:432px;width:216px;height:1px;background:repeating-linear-gradient(90deg,#7a7a7a 0 1px,transparent 1px 2px)"></div>
<div class="t" style="left:1712.5px;top:435.6px;font-size:11.70px;line-height:11.70px;color:#1a1a1a;">Show Hidden Li...</div>
<div class="t" style="left:1808.5px;top:435.6px;font-size:11.70px;line-height:11.70px;color:#1a1a1a;">By Discipline</div>
<div class="a" style="left:1704px;top:450px;width:216px;height:1px;background:repeating-linear-gradient(90deg,#7a7a7a 0 1px,transparent 1px 2px)"></div>
<div class="t" style="left:1712.5px;top:453.6px;font-size:11.70px;line-height:11.70px;color:#1a1a1a;">Default Analysi...</div>
<div class="t" style="left:1808.5px;top:453.6px;font-size:11.70px;line-height:11.70px;color:#1a1a1a;">None</div>
<div class="a" style="left:1704px;top:468px;width:216px;height:1px;background:repeating-linear-gradient(90deg,#7a7a7a 0 1px,transparent 1px 2px)"></div>
<div class="t" style="left:1712.5px;top:471.6px;font-size:11.70px;line-height:11.70px;color:#1a1a1a;">Sun Path</div>
<div class="a" style="left:1809px;top:473px;width:12px;height:12px;border:1px solid #555;border-radius:2px;background:#fff"></div>
<div class="a" style="left:1704px;top:486px;width:216px;height:1px;background:repeating-linear-gradient(90deg,#7a7a7a 0 1px,transparent 1px 2px)"></div>
<div class="a" style="left:1704px;top:487px;width:216px;height:18px;background:#dcdcdc;"></div>
<div class="t" style="left:1706.5px;top:489.6px;font-size:11.70px;line-height:11.70px;color:#1a1a1a;">Extents</div>
<svg class="a" style="left:1905px;top:490px;" width="9" height="11" viewBox="0 0 9 11"><path d="M1,5 L4.5,2 L8,5 M1,9 L4.5,6 L8,9" fill="none" stroke="#222" stroke-width="1.3"/></svg>
<div class="t" style="left:1712.5px;top:507.6px;font-size:11.70px;line-height:11.70px;color:#1a1a1a;">Crop View</div>
<div class="a" style="left:1809px;top:509px;width:12px;height:12px;border:1px solid #555;border-radius:2px;background:#fff"></div>
<div class="a" style="left:1704px;top:522px;width:216px;height:1px;background:repeating-linear-gradient(90deg,#7a7a7a 0 1px,transparent 1px 2px)"></div>
<div class="t" style="left:1712.5px;top:525.6px;font-size:11.70px;line-height:11.70px;color:#1a1a1a;">Crop Region Vi...</div>
<div class="a" style="left:1809px;top:527px;width:12px;height:12px;border:1px solid #555;border-radius:2px;background:#fff"></div>
<div class="a" style="left:1704px;top:540px;width:216px;height:1px;background:repeating-linear-gradient(90deg,#7a7a7a 0 1px,transparent 1px 2px)"></div>
<div class="t" style="left:1712.5px;top:543.6px;font-size:11.70px;line-height:11.70px;color:#1a1a1a;">Annotation Crop</div>
<div class="a" style="left:1809px;top:545px;width:12px;height:12px;border:1px solid #555;border-radius:2px;background:#fff"></div>
<div class="a" style="left:1704px;top:558px;width:216px;height:1px;background:repeating-linear-gradient(90deg,#7a7a7a 0 1px,transparent 1px 2px)"></div>
<div class="t" style="left:1712.5px;top:561.6px;font-size:11.70px;line-height:11.70px;color:#1a1a1a;">Far Clip Active</div>
<div class="a" style="left:1809px;top:563px;width:12px;height:12px;border:1px solid #555;border-radius:2px;background:#fff"></div>
<div class="a" style="left:1704px;top:576px;width:216px;height:1px;background:repeating-linear-gradient(90deg,#7a7a7a 0 1px,transparent 1px 2px)"></div>
<div class="t" style="left:1712.5px;top:579.6px;font-size:11.70px;line-height:11.70px;color:#8c8c8c;">Far Clip Offset</div>
<div class="t" style="left:1808.5px;top:579.6px;font-size:11.70px;line-height:11.70px;color:#8c8c8c;">304800.0</div>
<div class="a" style="left:1704px;top:594px;width:216px;height:1px;background:repeating-linear-gradient(90deg,#7a7a7a 0 1px,transparent 1px 2px)"></div>
<div class="t" style="left:1712.5px;top:597.6px;font-size:11.70px;line-height:11.70px;color:#1a1a1a;">Scope Box</div>
<div class="t" style="left:1808.5px;top:597.6px;font-size:11.70px;line-height:11.70px;color:#1a1a1a;">None</div>
<div class="a" style="left:1704px;top:612px;width:216px;height:1px;background:repeating-linear-gradient(90deg,#7a7a7a 0 1px,transparent 1px 2px)"></div>
<div class="t" style="left:1712.5px;top:615.6px;font-size:11.70px;line-height:11.70px;color:#1a1a1a;">Section Box</div>
<div class="a" style="left:1809px;top:617px;width:12px;height:12px;border:1px solid #555;border-radius:2px;background:#fff"></div>
<div class="a" style="left:1704px;top:630px;width:216px;height:1px;background:repeating-linear-gradient(90deg,#7a7a7a 0 1px,transparent 1px 2px)"></div>
<div class="a" style="left:1704px;top:631px;width:216px;height:18px;background:#dcdcdc;"></div>
<div class="t" style="left:1706.5px;top:633.6px;font-size:11.70px;line-height:11.70px;color:#1a1a1a;">Camera</div>
<svg class="a" style="left:1905px;top:634px;" width="9" height="11" viewBox="0 0 9 11"><path d="M1,5 L4.5,2 L8,5 M1,9 L4.5,6 L8,9" fill="none" stroke="#222" stroke-width="1.3"/></svg>
<div class="t" style="left:1712.5px;top:651.6px;font-size:11.70px;line-height:11.70px;color:#1a1a1a;">Rendering Setti...</div>
<div class="a" style="left:1808px;top:651px;width:97px;height:14px;border:1px solid #cfcfcf;border-radius:3px;background:linear-gradient(#fdfdfd,#ececec)"></div>
<div class="t" style="left:1656.5px;width:400px;text-align:center;top:651.6px;font-size:11.70px;line-height:11.70px;color:#1a1a1a;">Edit...</div>
<div class="a" style="left:1704px;top:666px;width:216px;height:1px;background:repeating-linear-gradient(90deg,#7a7a7a 0 1px,transparent 1px 2px)"></div>
<div class="t" style="left:1712.5px;top:669.6px;font-size:11.70px;line-height:11.70px;color:#8c8c8c;">Locked Orienta...</div>
<div class="a" style="left:1809px;top:671px;width:12px;height:12px;border:1px solid #d5d5d5;border-radius:2px;background:#fff"></div>
<div class="a" style="left:1704px;top:684px;width:216px;height:1px;background:repeating-linear-gradient(90deg,#7a7a7a 0 1px,transparent 1px 2px)"></div>
<div class="t" style="left:1712.5px;top:687.6px;font-size:11.70px;line-height:11.70px;color:#1a1a1a;">Projection Mode</div>
<div class="t" style="left:1808.5px;top:687.6px;font-size:11.70px;line-height:11.70px;color:#1a1a1a;">Orthographic</div>
<div class="a" style="left:1704px;top:702px;width:216px;height:1px;background:repeating-linear-gradient(90deg,#7a7a7a 0 1px,transparent 1px 2px)"></div>
<div class="t" style="left:1712.5px;top:705.6px;font-size:11.70px;line-height:11.70px;color:#1a1a1a;">Eye Elevation</div>
<div class="t" style="left:1808.5px;top:705.6px;font-size:11.70px;line-height:11.70px;color:#1a1a1a;">2910.5</div>
<div class="a" style="left:1704px;top:720px;width:216px;height:1px;background:repeating-linear-gradient(90deg,#7a7a7a 0 1px,transparent 1px 2px)"></div>
<div class="t" style="left:1712.5px;top:723.6px;font-size:11.70px;line-height:11.70px;color:#1a1a1a;">Target Elevation</div>
<div class="t" style="left:1808.5px;top:723.6px;font-size:11.70px;line-height:11.70px;color:#1a1a1a;">2895.5</div>
<div class="a" style="left:1704px;top:738px;width:216px;height:1px;background:repeating-linear-gradient(90deg,#7a7a7a 0 1px,transparent 1px 2px)"></div>
<div class="t" style="left:1712.5px;top:741.6px;font-size:11.70px;line-height:11.70px;color:#8c8c8c;">Camera Position</div>
<div class="t" style="left:1808.5px;top:741.6px;font-size:11.70px;line-height:11.70px;color:#8c8c8c;">Adjusting</div>
<div class="a" style="left:1704px;top:756px;width:216px;height:1px;background:repeating-linear-gradient(90deg,#7a7a7a 0 1px,transparent 1px 2px)"></div>
<div class="a" style="left:1704px;top:757px;width:216px;height:18px;background:#dcdcdc;"></div>
<div class="t" style="left:1706.5px;top:759.6px;font-size:11.70px;line-height:11.70px;color:#1a1a1a;">Identity Data</div>
<svg class="a" style="left:1905px;top:760px;" width="9" height="11" viewBox="0 0 9 11"><path d="M1,5 L4.5,2 L8,5 M1,9 L4.5,6 L8,9" fill="none" stroke="#222" stroke-width="1.3"/></svg>
<div class="t" style="left:1712.5px;top:777.6px;font-size:11.70px;line-height:11.70px;color:#1a1a1a;">View Template</div>
<div class="a" style="left:1808px;top:777px;width:97px;height:14px;border:1px solid #cfcfcf;border-radius:3px;background:linear-gradient(#fdfdfd,#ececec)"></div>
<div class="t" style="left:1656.5px;width:400px;text-align:center;top:777.6px;font-size:11.70px;line-height:11.70px;color:#1a1a1a;">&lt;None&gt;</div>
<div class="a" style="left:1704px;top:792px;width:216px;height:1px;background:repeating-linear-gradient(90deg,#7a7a7a 0 1px,transparent 1px 2px)"></div>
<div class="t" style="left:1712.5px;top:795.6px;font-size:11.70px;line-height:11.70px;color:#1a1a1a;">View Name</div>
<div class="t" style="left:1808.5px;top:795.6px;font-size:11.70px;line-height:11.70px;color:#1a1a1a;">{3D}</div>
<div class="a" style="left:1704px;top:810px;width:216px;height:1px;background:repeating-linear-gradient(90deg,#7a7a7a 0 1px,transparent 1px 2px)"></div>
<div class="t" style="left:1712.5px;top:813.6px;font-size:11.70px;line-height:11.70px;color:#8c8c8c;">Dependency</div>
<div class="t" style="left:1808.5px;top:813.6px;font-size:11.70px;line-height:11.70px;color:#8c8c8c;">Independent</div>
<div class="a" style="left:1704px;top:828px;width:216px;height:1px;background:repeating-linear-gradient(90deg,#7a7a7a 0 1px,transparent 1px 2px)"></div>
<div class="t" style="left:1712.5px;top:831.6px;font-size:11.70px;line-height:11.70px;color:#1a1a1a;">Title on Sheet</div>
<div class="a" style="left:1704px;top:846px;width:216px;height:1px;background:repeating-linear-gradient(90deg,#7a7a7a 0 1px,transparent 1px 2px)"></div>
<div class="a" style="left:1704px;top:847px;width:216px;height:18px;background:#dcdcdc;"></div>
<div class="t" style="left:1706.5px;top:849.6px;font-size:11.70px;line-height:11.70px;color:#1a1a1a;">Phasing</div>
<svg class="a" style="left:1905px;top:850px;" width="9" height="11" viewBox="0 0 9 11"><path d="M1,5 L4.5,2 L8,5 M1,9 L4.5,6 L8,9" fill="none" stroke="#222" stroke-width="1.3"/></svg>
<div class="t" style="left:1712.5px;top:867.6px;font-size:11.70px;line-height:11.70px;color:#1a1a1a;">Phase Filter</div>
<div class="t" style="left:1808.5px;top:867.6px;font-size:11.70px;line-height:11.70px;color:#1a1a1a;">Show All</div>
<div class="a" style="left:1704px;top:882px;width:216px;height:1px;background:repeating-linear-gradient(90deg,#7a7a7a 0 1px,transparent 1px 2px)"></div>
<div class="t" style="left:1712.5px;top:885.6px;font-size:11.70px;line-height:11.70px;color:#1a1a1a;">Phase</div>
<div class="t" style="left:1808.5px;top:885.6px;font-size:11.70px;line-height:11.70px;color:#1a1a1a;">New Construction</div>
<div class="a" style="left:1704px;top:900px;width:216px;height:1px;background:repeating-linear-gradient(90deg,#7a7a7a 0 1px,transparent 1px 2px)"></div>
<div class="a" style="left:1805px;top:307px;width:1px;height:18px;background:repeating-linear-gradient(180deg,#7a7a7a 0 1px,transparent 1px 2px)"></div>
<div class="a" style="left:1907px;top:307px;width:1px;height:18px;background:repeating-linear-gradient(180deg,#7a7a7a 0 1px,transparent 1px 2px)"></div>
<div class="a" style="left:1805px;top:325px;width:1px;height:18px;background:repeating-linear-gradient(180deg,#7a7a7a 0 1px,transparent 1px 2px)"></div>
<div class="a" style="left:1907px;top:325px;width:1px;height:18px;background:repeating-linear-gradient(180deg,#7a7a7a 0 1px,transparent 1px 2px)"></div>
<div class="a" style="left:1805px;top:343px;width:1px;height:18px;background:repeating-linear-gradient(180deg,#7a7a7a 0 1px,transparent 1px 2px)"></div>
<div class="a" style="left:1907px;top:343px;width:1px;height:18px;background:repeating-linear-gradient(180deg,#7a7a7a 0 1px,transparent 1px 2px)"></div>
<div class="a" style="left:1805px;top:361px;width:1px;height:18px;background:repeating-linear-gradient(180deg,#7a7a7a 0 1px,transparent 1px 2px)"></div>
<div class="a" style="left:1907px;top:361px;width:1px;height:18px;background:repeating-linear-gradient(180deg,#7a7a7a 0 1px,transparent 1px 2px)"></div>
<div class="a" style="left:1805px;top:379px;width:1px;height:18px;background:repeating-linear-gradient(180deg,#7a7a7a 0 1px,transparent 1px 2px)"></div>
<div class="a" style="left:1907px;top:379px;width:1px;height:18px;background:repeating-linear-gradient(180deg,#7a7a7a 0 1px,transparent 1px 2px)"></div>
<div class="a" style="left:1805px;top:397px;width:1px;height:18px;background:repeating-linear-gradient(180deg,#7a7a7a 0 1px,transparent 1px 2px)"></div>
<div class="a" style="left:1907px;top:397px;width:1px;height:18px;background:repeating-linear-gradient(180deg,#7a7a7a 0 1px,transparent 1px 2px)"></div>
<div class="a" style="left:1805px;top:415px;width:1px;height:18px;background:repeating-linear-gradient(180deg,#7a7a7a 0 1px,transparent 1px 2px)"></div>
<div class="a" style="left:1907px;top:415px;width:1px;height:18px;background:repeating-linear-gradient(180deg,#7a7a7a 0 1px,transparent 1px 2px)"></div>
<div class="a" style="left:1805px;top:433px;width:1px;height:18px;background:repeating-linear-gradient(180deg,#7a7a7a 0 1px,transparent 1px 2px)"></div>
<div class="a" style="left:1907px;top:433px;width:1px;height:18px;background:repeating-linear-gradient(180deg,#7a7a7a 0 1px,transparent 1px 2px)"></div>
<div class="a" style="left:1805px;top:451px;width:1px;height:18px;background:repeating-linear-gradient(180deg,#7a7a7a 0 1px,transparent 1px 2px)"></div>
<div class="a" style="left:1907px;top:451px;width:1px;height:18px;background:repeating-linear-gradient(180deg,#7a7a7a 0 1px,transparent 1px 2px)"></div>
<div class="a" style="left:1805px;top:469px;width:1px;height:18px;background:repeating-linear-gradient(180deg,#7a7a7a 0 1px,transparent 1px 2px)"></div>
<div class="a" style="left:1907px;top:469px;width:1px;height:18px;background:repeating-linear-gradient(180deg,#7a7a7a 0 1px,transparent 1px 2px)"></div>
<div class="a" style="left:1805px;top:505px;width:1px;height:18px;background:repeating-linear-gradient(180deg,#7a7a7a 0 1px,transparent 1px 2px)"></div>
<div class="a" style="left:1907px;top:505px;width:1px;height:18px;background:repeating-linear-gradient(180deg,#7a7a7a 0 1px,transparent 1px 2px)"></div>
<div class="a" style="left:1805px;top:523px;width:1px;height:18px;background:repeating-linear-gradient(180deg,#7a7a7a 0 1px,transparent 1px 2px)"></div>
<div class="a" style="left:1907px;top:523px;width:1px;height:18px;background:repeating-linear-gradient(180deg,#7a7a7a 0 1px,transparent 1px 2px)"></div>
<div class="a" style="left:1805px;top:541px;width:1px;height:18px;background:repeating-linear-gradient(180deg,#7a7a7a 0 1px,transparent 1px 2px)"></div>
<div class="a" style="left:1907px;top:541px;width:1px;height:18px;background:repeating-linear-gradient(180deg,#7a7a7a 0 1px,transparent 1px 2px)"></div>
<div class="a" style="left:1805px;top:559px;width:1px;height:18px;background:repeating-linear-gradient(180deg,#7a7a7a 0 1px,transparent 1px 2px)"></div>
<div class="a" style="left:1907px;top:559px;width:1px;height:18px;background:repeating-linear-gradient(180deg,#7a7a7a 0 1px,transparent 1px 2px)"></div>
<div class="a" style="left:1805px;top:577px;width:1px;height:18px;background:repeating-linear-gradient(180deg,#7a7a7a 0 1px,transparent 1px 2px)"></div>
<div class="a" style="left:1907px;top:577px;width:1px;height:18px;background:repeating-linear-gradient(180deg,#7a7a7a 0 1px,transparent 1px 2px)"></div>
<div class="a" style="left:1805px;top:595px;width:1px;height:18px;background:repeating-linear-gradient(180deg,#7a7a7a 0 1px,transparent 1px 2px)"></div>
<div class="a" style="left:1907px;top:595px;width:1px;height:18px;background:repeating-linear-gradient(180deg,#7a7a7a 0 1px,transparent 1px 2px)"></div>
<div class="a" style="left:1805px;top:613px;width:1px;height:18px;background:repeating-linear-gradient(180deg,#7a7a7a 0 1px,transparent 1px 2px)"></div>
<div class="a" style="left:1907px;top:613px;width:1px;height:18px;background:repeating-linear-gradient(180deg,#7a7a7a 0 1px,transparent 1px 2px)"></div>
<div class="a" style="left:1805px;top:649px;width:1px;height:18px;background:repeating-linear-gradient(180deg,#7a7a7a 0 1px,transparent 1px 2px)"></div>
<div class="a" style="left:1907px;top:649px;width:1px;height:18px;background:repeating-linear-gradient(180deg,#7a7a7a 0 1px,transparent 1px 2px)"></div>
<div class="a" style="left:1805px;top:667px;width:1px;height:18px;background:repeating-linear-gradient(180deg,#7a7a7a 0 1px,transparent 1px 2px)"></div>
<div class="a" style="left:1907px;top:667px;width:1px;height:18px;background:repeating-linear-gradient(180deg,#7a7a7a 0 1px,transparent 1px 2px)"></div>
<div class="a" style="left:1805px;top:685px;width:1px;height:18px;background:repeating-linear-gradient(180deg,#7a7a7a 0 1px,transparent 1px 2px)"></div>
<div class="a" style="left:1907px;top:685px;width:1px;height:18px;background:repeating-linear-gradient(180deg,#7a7a7a 0 1px,transparent 1px 2px)"></div>
<div class="a" style="left:1805px;top:703px;width:1px;height:18px;background:repeating-linear-gradient(180deg,#7a7a7a 0 1px,transparent 1px 2px)"></div>
<div class="a" style="left:1907px;top:703px;width:1px;height:18px;background:repeating-linear-gradient(180deg,#7a7a7a 0 1px,transparent 1px 2px)"></div>
<div class="a" style="left:1805px;top:721px;width:1px;height:18px;background:repeating-linear-gradient(180deg,#7a7a7a 0 1px,transparent 1px 2px)"></div>
<div class="a" style="left:1907px;top:721px;width:1px;height:18px;background:repeating-linear-gradient(180deg,#7a7a7a 0 1px,transparent 1px 2px)"></div>
<div class="a" style="left:1805px;top:739px;width:1px;height:18px;background:repeating-linear-gradient(180deg,#7a7a7a 0 1px,transparent 1px 2px)"></div>
<div class="a" style="left:1907px;top:739px;width:1px;height:18px;background:repeating-linear-gradient(180deg,#7a7a7a 0 1px,transparent 1px 2px)"></div>
<div class="a" style="left:1805px;top:775px;width:1px;height:18px;background:repeating-linear-gradient(180deg,#7a7a7a 0 1px,transparent 1px 2px)"></div>
<div class="a" style="left:1907px;top:775px;width:1px;height:18px;background:repeating-linear-gradient(180deg,#7a7a7a 0 1px,transparent 1px 2px)"></div>
<div class="a" style="left:1805px;top:793px;width:1px;height:18px;background:repeating-linear-gradient(180deg,#7a7a7a 0 1px,transparent 1px 2px)"></div>
<div class="a" style="left:1907px;top:793px;width:1px;height:18px;background:repeating-linear-gradient(180deg,#7a7a7a 0 1px,transparent 1px 2px)"></div>
<div class="a" style="left:1805px;top:811px;width:1px;height:18px;background:repeating-linear-gradient(180deg,#7a7a7a 0 1px,transparent 1px 2px)"></div>
<div class="a" style="left:1907px;top:811px;width:1px;height:18px;background:repeating-linear-gradient(180deg,#7a7a7a 0 1px,transparent 1px 2px)"></div>
<div class="a" style="left:1805px;top:829px;width:1px;height:18px;background:repeating-linear-gradient(180deg,#7a7a7a 0 1px,transparent 1px 2px)"></div>
<div class="a" style="left:1907px;top:829px;width:1px;height:18px;background:repeating-linear-gradient(180deg,#7a7a7a 0 1px,transparent 1px 2px)"></div>
<div class="a" style="left:1805px;top:865px;width:1px;height:18px;background:repeating-linear-gradient(180deg,#7a7a7a 0 1px,transparent 1px 2px)"></div>
<div class="a" style="left:1907px;top:865px;width:1px;height:18px;background:repeating-linear-gradient(180deg,#7a7a7a 0 1px,transparent 1px 2px)"></div>
<div class="a" style="left:1805px;top:883px;width:1px;height:18px;background:repeating-linear-gradient(180deg,#7a7a7a 0 1px,transparent 1px 2px)"></div>
<div class="a" style="left:1907px;top:883px;width:1px;height:18px;background:repeating-linear-gradient(180deg,#7a7a7a 0 1px,transparent 1px 2px)"></div>
<div class="a" style="left:1704px;top:900px;width:216px;height:1px;background:repeating-linear-gradient(90deg,#7a7a7a 0 1px,transparent 1px 2px)"></div>
<div class="a" style="left:1704px;top:980px;width:216px;height:28px;background:#eeeeee;"></div>
<div class="t" style="left:1706.0px;top:987.6px;font-size:11.70px;line-height:11.70px;color:#1f5ea8;text-decoration:underline">Properties help</div>
<div class="a" style="left:1840px;top:983px;width:78px;height:22px;border:1px solid #e2e2e2;border-radius:3px;background:#f4f4f4"></div>
<div class="t" style="left:1680.0px;width:400px;text-align:center;top:988.1px;font-size:11.70px;line-height:11.70px;color:#9a9a9a;">Apply</div>
<svg class="a" style="left:1686px;top:996px;" width="10" height="10" viewBox="0 0 10 10"><g fill="#c2c2c2"><rect x="7" y="1" width="2" height="2"/><rect x="4" y="4" width="2" height="2"/><rect x="7" y="4" width="2" height="2"/><rect x="1" y="7" width="2" height="2"/><rect x="4" y="7" width="2" height="2"/><rect x="7" y="7" width="2" height="2"/></g></svg>
<div class="a" style="left:0px;top:1008px;width:1920px;height:24px;background:#cbcbcb;"></div>
<div class="t" style="left:2.0px;top:1014.4px;font-size:11.30px;line-height:11.30px;color:#1e1e1e;">Click to select, TAB for alternates, CTRL adds, SHIFT unselects.</div>
<svg class="a" style="left:895px;top:1012px;" width="18" height="17" viewBox="0 0 18 17"><rect x="1" y="6" width="8" height="10" fill="#6fb6e0" stroke="#2f5d80"/><path d="M1,6 L4,3 L12,3 L9,6" fill="#a8d6f0" stroke="#2f5d80"/><rect x="3" y="1" width="5" height="4" fill="#7ab648" stroke="#3d6b1f"/><path d="M13,4 L13,16 M11,6 Q13,2 15,6" fill="none" stroke="#333" stroke-width="1.4"/></svg>
<div class="a" style="left:919px;top:1012px;width:205px;height:18px;background:#fff;border:1px solid #e0e0e0"></div>
<svg class="a" style="left:1108px;top:1017px;" width="10" height="7" viewBox="0 0 10 7"><path d="M1,1 L5,5 L9,1" fill="none" stroke="#777" stroke-width="1.1"/></svg>
<svg class="a" style="left:1132px;top:1012px;" width="18" height="17" viewBox="0 0 18 17"><path d="M4,2 L14,2 L14,8 L9,8 L6,13 L2,15 L4,10 L8,8 L4,8Z" fill="#c8c8c8" stroke="#9a9a9a"/></svg>
<div class="t" style="left:1152.0px;top:1015.3px;font-size:11.50px;line-height:11.50px;color:#222;">:0</div>
<svg class="a" style="left:1185px;top:1012px;" width="17" height="17" viewBox="0 0 17 17"><rect x="1" y="1" width="15" height="15" fill="#fff" stroke="#222" stroke-width="1.3"/><rect x="1" y="1" width="15" height="3" fill="#222"/><path d="M4,7 L5,7 M7,7 L13,7 M4,10 L5,10 M7,10 L13,10 M4,13 L5,13 M7,13 L13,13" stroke="#222" stroke-width="1.2"/></svg>
<svg class="a" style="left:1211px;top:1012px;" width="17" height="17" viewBox="0 0 17 17"><rect x="3" y="1" width="13" height="15" fill="#bdbdbd"/><path d="M1,9 L9,9 M6,6 L9,9 L6,12" stroke="#888" stroke-width="1.4" fill="none"/></svg>
<div class="a" style="left:1236px;top:1012px;width:204px;height:18px;background:#fff;border:1px solid #e0e0e0"></div>
<div class="t" style="left:1239.0px;top:1015.3px;font-size:11.50px;line-height:11.50px;color:#8a8a8a;">Main Model</div>
<svg class="a" style="left:1424px;top:1017px;" width="10" height="7" viewBox="0 0 10 7"><path d="M1,1 L5,5 L9,1" fill="none" stroke="#777" stroke-width="1.1"/></svg>
<svg class="a" style="left:1666px;top:1013px;" width="19" height="17" viewBox="0 0 19 17"><ellipse cx="8" cy="5" rx="7" ry="4" fill="#f3d77a" stroke="#c9a63c"/><g transform="translate(6,4)"><path d="M0,0 L0,10 L2.5,8 L4.5,12 L6,11.5 L4,7.5 L7,7.5Z" fill="#fff" stroke="#222" stroke-width="0.9"/></g></svg>
<svg class="a" style="left:1693px;top:1012px;" width="19" height="18" viewBox="0 0 19 18"><path d="M1,12 L9,5 L9,12Z M1,15 L12,15" fill="#bfe0f2" stroke="#2f7ab0" stroke-width="1.2"/><path d="M10,1 L15,6 M15,1 L10,6" stroke="#c0392b" stroke-width="1.8"/><g transform="translate(8,6)"><path d="M0,0 L0,10 L2.5,8 L4.5,12 L6,11.5 L4,7.5 L7,7.5Z" fill="#fff" stroke="#222" stroke-width="0.9"/></g></svg>
<svg class="a" style="left:1719px;top:1012px;" width="19" height="18" viewBox="0 0 19 18"><rect x="1" y="2" width="9" height="4" rx="1" fill="#e7b98a" stroke="#a06a3a"/><rect x="2" y="6" width="7" height="3" fill="#f0cfa5" stroke="#a06a3a"/><path d="M5.5,9 L5.5,16" stroke="#555" stroke-width="1.2"/><g transform="translate(9,5)"><path d="M0,0 L0,10 L2.5,8 L4.5,12 L6,11.5 L4,7.5 L7,7.5Z" fill="#fff" stroke="#222" stroke-width="0.9"/></g></svg>
<svg class="a" style="left:1745px;top:1012px;" width="19" height="18" viewBox="0 0 19 18"><path d="M2,4 L9,1 L9,13 L2,16Z" fill="#b8dcf5" stroke="#2f7ab0" stroke-width="1.2"/><g transform="translate(8,5)"><path d="M0,0 L0,10 L2.5,8 L4.5,12 L6,11.5 L4,7.5 L7,7.5Z" fill="#fff" stroke="#222" stroke-width="0.9"/></g></svg>
<svg class="a" style="left:1771px;top:1011px;" width="19" height="19" viewBox="0 0 19 19"><path d="M5.5,1 L5.5,10 M1,5.5 L10,5.5" stroke="#111" stroke-width="1.2" fill="none"/><path d="M5.5,0 L7.5,2.5 L3.5,2.5Z M5.5,11 L7.5,8.5 L3.5,8.5Z M0,5.5 L2.5,3.5 L2.5,7.5Z M11,5.5 L8.5,3.5 L8.5,7.5Z" fill="#111"/><g transform="translate(9,6)"><path d="M0,0 L0,10 L2.5,8 L4.5,12 L6,11.5 L4,7.5 L7,7.5Z" fill="#fff" stroke="#222" stroke-width="0.9"/></g></svg>
<svg class="a" style="left:1797px;top:1012px;" width="16" height="16" viewBox="0 0 16 16"><circle cx="8" cy="8" r="6" fill="none" stroke="#b5b5b5" stroke-width="2.2" stroke-dasharray="2.5,1.5"/></svg>
<svg class="a" style="left:1821px;top:1012px;" width="18" height="17" viewBox="0 0 18 17"><path d="M1,2 L16,2 L10,9 L10,16 L7,16 L7,9Z" fill="#d8dce0" stroke="#555" stroke-width="1.1"/></svg>
<div class="t" style="left:1838.0px;top:1015.3px;font-size:11.50px;line-height:11.50px;color:#222;">:0</div>
<div class="a" style="left:0px;top:1031px;width:1920px;height:49px;background:#efede9;"></div>
<svg class="a" style="left:20px;top:1045px;" width="24" height="23" viewBox="0 0 24 23"><defs><linearGradient id="wl" x1="0" y1="0" x2="1" y2="1"><stop offset="0" stop-color="#3fc1f5"/><stop offset="1" stop-color="#1474d4"/></linearGradient></defs><rect x="0" y="0" width="11" height="11" fill="url(#wl)"/><rect x="12.5" y="0" width="11" height="11" fill="url(#wl)"/><rect x="0" y="12" width="11" height="11" fill="url(#wl)"/><rect x="12.5" y="12" width="11" height="11" fill="url(#wl)"/></svg>
<div class="a" style="left:59px;top:1041px;width:97px;height:30px;background:#faf9f7;border:1px solid #e4e2de;border-radius:15px"></div>
<svg class="a" style="left:81px;top:1049px;" width="15" height="15" viewBox="0 0 15 15"><circle cx="9" cy="6" r="4.5" fill="none" stroke="#222" stroke-width="1.5"/><path d="M6,9 L1.5,13.5" stroke="#222" stroke-width="1.7"/></svg>
<div class="t" style="left:100.0px;top:1050.8px;font-size:12.00px;line-height:12.00px;color:#222;">Search</div>
<svg class="a" style="left:170px;top:1045px;" width="25" height="23" viewBox="0 0 25 23"><rect x="8" y="1" width="14" height="13" fill="#f6f6f6" stroke="#ddd"/><rect x="1" y="8" width="15" height="14" fill="#bcbcbc"/><rect x="1" y="14" width="8" height="8" fill="#222"/><path d="M1,22 L1,8 L16,8" stroke="#222" stroke-width="2" fill="none"/></svg>
<svg class="a" style="left:213px;top:1042px;" width="36" height="28" viewBox="0 0 36 28"><circle cx="10" cy="18" r="7" fill="#f5a623"/><ellipse cx="13" cy="21" rx="9" ry="5" fill="#cde3f5"/><ellipse cx="9" cy="9" rx="7" ry="4.5" fill="#cfe2f3"/><rect x="15" y="1" width="21" height="13" rx="6" fill="#f3f1ed"/></svg>
<div class="t" style="left:36.0px;width:400px;text-align:center;top:1043.3px;font-size:11.50px;line-height:11.50px;color:#222;">79°</div>
<svg class="a" style="left:258px;top:1044px;" width="24" height="24" viewBox="0 0 24 24"><circle cx="12" cy="11.5" r="10.5" fill="#6264c9"/><path d="M4,21 L6,16 L9,19Z" fill="#6264c9"/><rect x="6.5" y="7.5" width="8" height="8" rx="1.5" fill="#fff"/><path d="M15,10 L18.5,8 L18.5,15 L15,13Z" fill="#fff"/></svg>
<svg class="a" style="left:303px;top:1044px;" width="24" height="24" viewBox="0 0 24 24"><ellipse cx="12" cy="12" rx="11" ry="11.5" fill="#e0112b"/><ellipse cx="12" cy="12" rx="4.5" ry="8" fill="#f4f2ee"/></svg>
<div class="a" style="left:311px;top:1072px;width:8px;height:2px;background:#777;"></div>
<svg class="a" style="left:347px;top:1044px;" width="25" height="24" viewBox="0 0 25 24"><path d="M1,3 L9,3 L11,5 L24,5 L24,21 L1,21Z" fill="#f0b429"/><rect x="1" y="8" width="23" height="14" fill="#ffd553"/><rect x="7" y="15" width="11" height="6" rx="1.5" fill="#1f78c1"/></svg>
<div class="a" style="left:355px;top:1072px;width:8px;height:2px;background:#777;"></div>
<svg class="a" style="left:391px;top:1045px;" width="25" height="23" viewBox="0 0 25 23"><rect x="1" y="1" width="23" height="20" fill="#eaf4fb" stroke="#9fc2d8"/><path d="M2,15 L6,13 L9,5 L11,16 L14,9 L17,15 L23,16" fill="none" stroke="#3c86c0" stroke-width="1.3"/><path d="M2,21 L23,21 L23,16 L17,15 L14,9 L11,16 L9,5 L6,13 L2,15Z" fill="#a9d2ee" opacity="0.7"/></svg>
<svg class="a" style="left:436px;top:1045px;" width="22" height="22" viewBox="0 0 22 22"><rect x="0" y="0" width="22" height="22" rx="4" fill="#001e36"/><text x="11" y="15.5" font-size="10.5" font-family="Liberation Sans" text-anchor="middle" fill="#6fb9f4">Lrc</text></svg>
<svg class="a" style="left:478px;top:1044px;" width="25" height="24" viewBox="0 0 25 24"><defs><linearGradient id="ig" x1="0" y1="1" x2="1" y2="0"><stop offset="0" stop-color="#f9a33c"/><stop offset="0.5" stop-color="#e1306c"/><stop offset="1" stop-color="#8a3ab9"/></linearGradient></defs><rect x="1" y="1" width="23" height="22" rx="6" fill="url(#ig)"/><rect x="6" y="5.5" width="13" height="13" rx="4" fill="none" stroke="#fff" stroke-width="1.8"/><circle cx="12.5" cy="12" r="3" fill="none" stroke="#fff" stroke-width="1.8"/></svg>
<svg class="a" style="left:522px;top:1044px;" width="25" height="24" viewBox="0 0 25 24"><defs><linearGradient id="ed" x1="0" y1="0" x2="1" y2="1"><stop offset="0" stop-color="#35c1f1"/><stop offset="0.6" stop-color="#1e88d8"/><stop offset="1" stop-color="#5fd36a"/></linearGradient></defs><circle cx="12.5" cy="12" r="11" fill="url(#ed)"/><path d="M8,14 Q9,7 15,8 Q20,9 20,14 L10,14 Q11,19 17,18" fill="#f0ede8" opacity="0.9"/></svg>
<svg class="a" style="left:567px;top:1045px;" width="23" height="22" viewBox="0 0 23 22"><rect x="0" y="0" width="23" height="22" rx="4" fill="#2a0634" stroke="#c792e9" stroke-width="1"/><text x="11.5" y="15.5" font-size="11" font-family="Liberation Sans" text-anchor="middle" fill="#e59cff">Pr</text></svg>
<svg class="a" style="left:612px;top:1043px;" width="24" height="25" viewBox="0 0 24 25"><rect x="0" y="0" width="24" height="25" rx="3" fill="#0f5d73"/><text x="12" y="14" font-size="12" font-family="Liberation Sans" font-weight="bold" text-anchor="middle" fill="#fff">3</text><rect x="4" y="18" width="16" height="5" fill="#1b2b33"/><text x="12" y="22.5" font-size="4.5" font-family="Liberation Sans" text-anchor="middle" fill="#fff">MAX</text></svg>
<svg class="a" style="left:655px;top:1044px;" width="25" height="24" viewBox="0 0 25 24"><circle cx="12.5" cy="12" r="11.5" fill="#1ed760"/><path d="M6,8.5 Q13,6.5 19,10 M7,12.5 Q13,10.5 18,13.5 M8,16 Q13,14.5 17,16.5" fill="none" stroke="#111" stroke-width="1.8" stroke-linecap="round"/></svg>
<svg class="a" style="left:699px;top:1044px;" width="24" height="25" viewBox="0 0 24 25"><circle cx="12" cy="11" r="10.5" fill="#d8d8d8"/><path d="M3,9 Q12,3 21,9 M2,13 Q12,7 22,13" stroke="#777" stroke-width="1.5" fill="none"/><rect x="7" y="17" width="12" height="7" fill="#222"/><text x="13" y="22.5" font-size="5" font-family="Liberation Sans" text-anchor="middle" fill="#fff">Pro</text></svg>
<svg class="a" style="left:743px;top:1043px;" width="23" height="25" viewBox="0 0 23 25"><rect x="0" y="0" width="23" height="25" fill="#3a7f94"/><path d="M2,12 Q10,2 20,4 M5,13 Q10,7 12,6" stroke="#fff" stroke-width="1.3" fill="none"/><text x="11.5" y="22" font-size="8" font-family="Liberation Sans" text-anchor="middle" fill="#fff">12</text></svg>
<svg class="a" style="left:787px;top:1045px;" width="24" height="23" viewBox="0 0 24 23"><rect x="1" y="1" width="21" height="21" fill="#dfd3bf"/><circle cx="11" cy="11.5" r="7" fill="#f1a63d"/><path d="M9,8 L15,11.5 L9,15Z" fill="#fff"/></svg>
<svg class="a" style="left:832px;top:1045px;" width="22" height="22" viewBox="0 0 22 22"><rect x="0" y="0" width="22" height="22" rx="4" fill="#00005b"/><text x="11" y="15.5" font-size="11" font-family="Liberation Sans" text-anchor="middle" fill="#9999ff">Ae</text></svg>
<svg class="a" style="left:875px;top:1045px;" width="23" height="22" viewBox="0 0 23 22"><rect x="0" y="0" width="23" height="22" rx="2" fill="#001e36" stroke="#31a8ff" stroke-width="1"/><text x="11.5" y="15.5" font-size="11" font-family="Liberation Sans" text-anchor="middle" fill="#31a8ff">Ps</text></svg>
<svg class="a" style="left:919px;top:1044px;" width="23" height="24" viewBox="0 0 23 24"><rect x="0" y="0" width="23" height="24" rx="2" fill="#e9eef6"/><path d="M5,3 L12,3 Q18,3 18,9 Q18,12.5 14.5,14 L19,21 L14,21 L10.5,15 L9.5,15 L9.5,21 L5,21 Z M9.5,6.5 L9.5,11.5 L11.5,11.5 Q13.5,11.5 13.5,9 Q13.5,6.5 11.5,6.5Z" fill="#2a5ea8"/></svg>
<div class="a" style="left:927px;top:1072px;width:8px;height:2px;background:#777;"></div>
<svg class="a" style="left:963px;top:1044px;" width="24" height="24" viewBox="0 0 24 24"><rect x="1" y="0" width="22" height="24" rx="2" fill="#d3102d"/><text x="12" y="13" font-size="12" font-family="Liberation Sans" font-weight="bold" text-anchor="middle" fill="#fff">A</text><rect x="3" y="16" width="18" height="6" fill="#8a0a1e"/><text x="12" y="21" font-size="4.5" font-family="Liberation Sans" text-anchor="middle" fill="#fff">CAD</text></svg>
<svg class="a" style="left:1007px;top:1044px;" width="25" height="24" viewBox="0 0 25 24"><ellipse cx="11" cy="12" rx="10" ry="9" fill="#4ca3d9"/><circle cx="7" cy="9" r="2" fill="#f5d547"/><circle cx="12" cy="6" r="2" fill="#e94f3f"/><circle cx="6" cy="14" r="2" fill="#5bc26b"/><path d="M14,22 L21,5 L23,6 L17,23Z" fill="#555"/></svg>
<div class="a" style="left:1014px;top:1072px;width:8px;height:2px;background:#777;"></div>
<svg class="a" style="left:1647px;top:1051px;" width="14" height="9" viewBox="0 0 14 9"><path d="M1,8 L7,2 L13,8" fill="none" stroke="#222" stroke-width="1.5"/></svg>
<svg class="a" style="left:1669px;top:1048px;" width="17" height="17" viewBox="0 0 17 17"><path d="M3,7 Q5,2 11,3 L13,5 M14,9 Q12,14 6,13 L4,11" fill="none" stroke="#222" stroke-width="1.4"/><circle cx="13" cy="13" r="3.5" fill="#1f6fd1"/></svg>
<div class="t" style="left:1701.0px;top:1051.3px;font-size:11.50px;line-height:11.50px;color:#222;">ENG</div>
<svg class="a" style="left:1741px;top:1048px;" width="17" height="15" viewBox="0 0 17 15"><path d="M1,6 Q8.5,-1 16,6 M3.5,8.5 Q8.5,4 13.5,8.5 M6,11 Q8.5,9 11,11" fill="none" stroke="#222" stroke-width="1.5"/><circle cx="8.5" cy="13" r="1.5" fill="#222"/></svg>
<svg class="a" style="left:1766px;top:1048px;" width="17" height="16" viewBox="0 0 17 16"><path d="M1,5 L4,5 L8,1 L8,15 L4,11 L1,11Z" fill="none" stroke="#222" stroke-width="1.2"/><path d="M11,5 Q13,8 11,11 M13,3 Q16,8 13,13" fill="none" stroke="#999" stroke-width="1.1"/></svg>
<svg class="a" style="left:1790px;top:1048px;" width="17" height="16" viewBox="0 0 17 16"><path d="M1,5 L4,5 M1,10 L4,10" stroke="#222" stroke-width="1.5"/><rect x="4" y="3" width="11" height="10" rx="1" fill="#222"/><rect x="6" y="5" width="7" height="6" fill="#fff"/><rect x="7" y="6" width="5" height="4" fill="#222"/></svg>
<div class="t" style="left:1649.0px;width:400px;text-align:center;top:1042.8px;font-size:11.50px;line-height:11.50px;color:#222;">10:42 PM</div>
<div class="t" style="left:1646.0px;width:400px;text-align:center;top:1058.8px;font-size:11.50px;line-height:11.50px;color:#222;">1/10/2023</div>
<svg class="a" style="left:1883px;top:1048px;" width="18" height="18" viewBox="0 0 18 18"><circle cx="9" cy="9" r="8.5" fill="#1a73c9"/><text x="9" y="13" font-size="11" font-family="Liberation Sans" text-anchor="middle" fill="#fff">3</text></svg>
</body></html>
